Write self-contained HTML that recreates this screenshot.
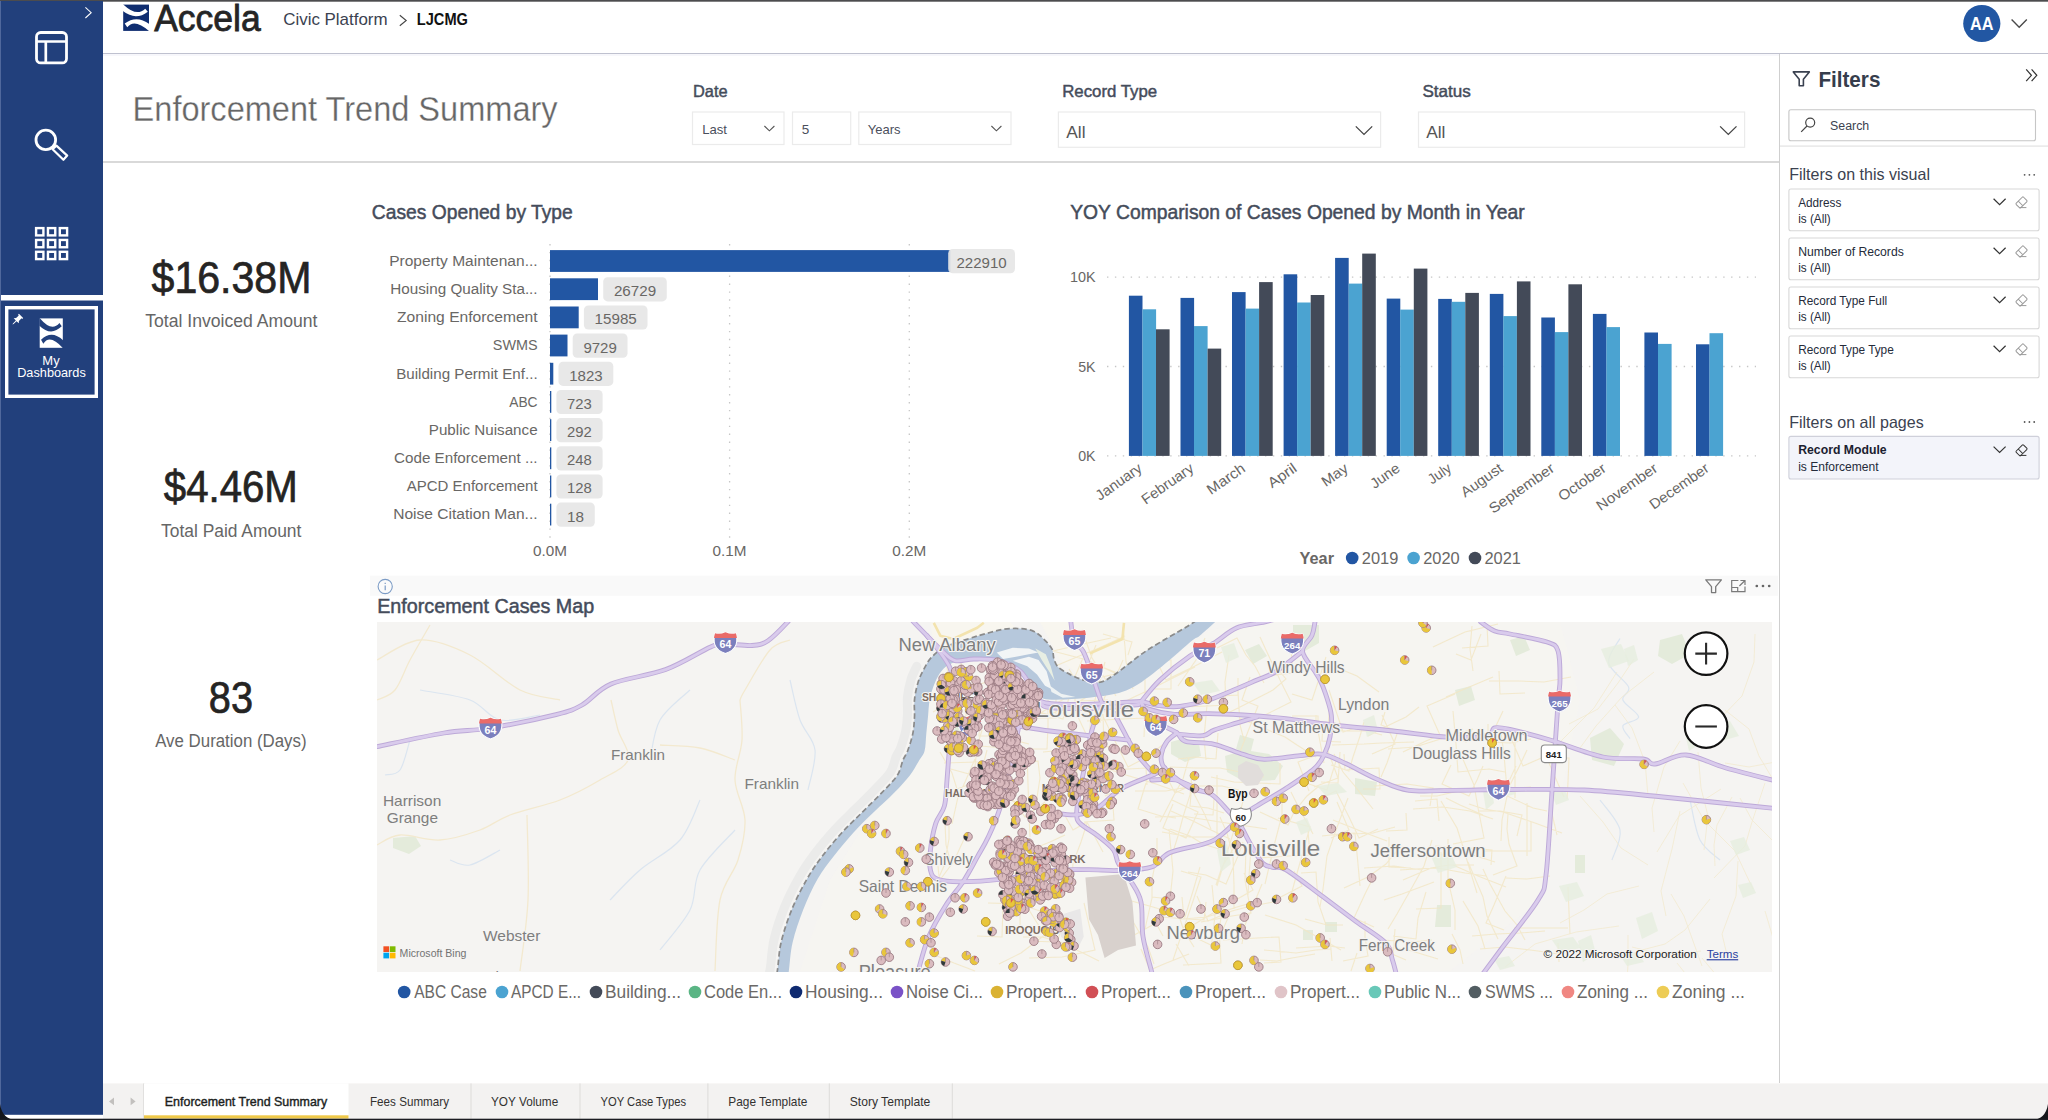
<!DOCTYPE html>
<html lang="en"><head><meta charset="utf-8"><title>Enforcement Trend Summary - Accela Civic Platform</title>
<style>
html,body{margin:0;padding:0;background:#fff;}
body{width:2048px;height:1120px;overflow:hidden;position:relative;font-family:'Liberation Sans', 'DejaVu Sans', sans-serif;}
.layer{position:absolute;left:0;top:0;width:2048px;height:1120px;margin:0;padding:0;pointer-events:none;}
svg{position:absolute;left:0;top:0;display:block;font-family:'Liberation Sans', 'DejaVu Sans', sans-serif;}
text{white-space:pre;}
</style></head>
<body>
<div class="layer page-frame">
<svg width="2048" height="1120" viewBox="0 0 2048 1120">
<g id="frame">
<rect x="0" y="0" width="2048" height="1120" fill="#fff"/>
<rect x="103" y="53" width="1945" height="1" fill="#bfc1cf"/>
<rect x="103" y="54" width="1945" height="2" fill="#f7f7fb"/>
<rect x="103" y="161" width="1676" height="2" fill="#d9d9d9"/>
<rect x="0" y="0" width="2048" height="1.7" fill="#4c4c4e"/>
</g>
</svg>
</div>
<nav class="layer app-sidebar">
<svg width="2048" height="1120" viewBox="0 0 2048 1120">
<g id="sidebar">
<rect x="0" y="1" width="103" height="1113.8" fill="#22407c"/>
<rect x="0" y="295" width="103" height="5.5" fill="#fff"/>
<path d="M85.4 7.4 L91.2 12.7 L85.4 18" fill="none" stroke="#fff" stroke-width="1.05"/>
<rect x="0" y="1" width="1" height="1110" fill="#50689c"/>
<rect x="36.5" y="32.5" width="30" height="30.4" rx="4.2" fill="none" stroke="#fff" stroke-width="2.8"/>
<path d="M36.5 41.5 H66.5 M45.8 41.5 V62.9" fill="none" stroke="#fff" stroke-width="2.7"/>
<circle cx="45.8" cy="139.9" r="9.8" fill="none" stroke="#fff" stroke-width="2.8"/>
<path d="M52.6 149.2 L56.4 145.6 L67.2 155.6 L63.4 159.8 Z" fill="none" stroke="#fff" stroke-width="2.2" stroke-linejoin="round"/>
<rect x="36.10" y="228.10" width="7.3" height="7.3" fill="none" stroke="#fff" stroke-width="2.4"/>
<rect x="47.95" y="228.10" width="7.3" height="7.3" fill="none" stroke="#fff" stroke-width="2.4"/>
<rect x="59.80" y="228.10" width="7.3" height="7.3" fill="none" stroke="#fff" stroke-width="2.4"/>
<rect x="36.10" y="239.95" width="7.3" height="7.3" fill="none" stroke="#fff" stroke-width="2.4"/>
<rect x="47.95" y="239.95" width="7.3" height="7.3" fill="none" stroke="#fff" stroke-width="2.4"/>
<rect x="59.80" y="239.95" width="7.3" height="7.3" fill="none" stroke="#fff" stroke-width="2.4"/>
<rect x="36.10" y="251.80" width="7.3" height="7.3" fill="none" stroke="#fff" stroke-width="2.4"/>
<rect x="47.95" y="251.80" width="7.3" height="7.3" fill="none" stroke="#fff" stroke-width="2.4"/>
<rect x="59.80" y="251.80" width="7.3" height="7.3" fill="none" stroke="#fff" stroke-width="2.4"/>
<rect x="6.7" y="307.7" width="89.6" height="88.6" fill="none" stroke="#fff" stroke-width="3.4"/>
<g transform="translate(17.5 319.5) rotate(45)"><path d="M-3 -5 H3 V-3.8 H2 V0 L3.6 1.8 H0.5 V6 L0 7 L-0.5 6 V1.8 H-3.6 L-2 0 V-3.8 H-3 Z" fill="#fff"/></g>
<g transform="translate(39.7 318.4) scale(0.8885 1.1308)">
<rect x="0" y="0" width="26" height="26" fill="#fff"/>
<path d="M-0.3 -0.3 L0.65 0.3 Q13.6 12.25 22.2 4 L24.8 7 Q12.6 16.3 -0.3 6.4 Z" fill="#22407c"/>
<path d="M1.5 18.8 Q13.5 9.75 26.3 19.3 L26.3 26.3 Q11.15 13.2 4.1 22.4 Z" fill="#22407c"/>
</g>
<text x="51.0" y="364.7" font-size="13" fill="#fff" text-anchor="middle">My</text>
<text x="51.5" y="376.7" font-size="13" fill="#fff" text-anchor="middle" textLength="68.6" lengthAdjust="spacingAndGlyphs">Dashboards</text>
</g>
</svg>
</nav>
<header class="layer app-header">
<svg width="2048" height="1120" viewBox="0 0 2048 1120">
<g id="header">
<g transform="translate(123.2 4.6) scale(0.9923 1.0115)">
<rect x="0" y="0" width="26" height="26" fill="#0f2d70"/>
<path d="M-0.3 -0.3 L0.65 0.3 Q13.6 12.25 22.2 4 L24.8 7 Q12.6 16.3 -0.3 6.4 Z" fill="#fff"/>
<path d="M1.5 18.8 Q13.5 9.75 26.3 19.3 L26.3 26.3 Q11.15 13.2 4.1 22.4 Z" fill="#fff"/>
</g>
<text x="154.2" y="30.6" font-size="36.5" fill="#252525" textLength="106.5" lengthAdjust="spacingAndGlyphs" stroke="#252525" stroke-width="0.8">Accela</text>
<text x="283.2" y="24.8" font-size="17" fill="#3b4250" textLength="104.4" lengthAdjust="spacingAndGlyphs">Civic Platform</text>
<path d="M399.8 15.3 L406.2 20.5 L399.8 25.7" fill="none" stroke="#444" stroke-width="1.1"/>
<text x="416.8" y="24.8" font-size="17" font-weight="700" fill="#111" textLength="51.2" lengthAdjust="spacingAndGlyphs">LJCMG</text>
<circle cx="1981.8" cy="23.5" r="18.6" fill="#2257a3"/>
<text x="1981.8" y="30.0" font-size="17.5" font-weight="700" fill="#fff" text-anchor="middle" textLength="23.5" lengthAdjust="spacingAndGlyphs">AA</text>
<path d="M2011.6 19.6 L2019.2 27.2 L2026.8 19.6" fill="none" stroke="#4a4a4a" stroke-width="1.4"/>
</g>
</svg>
</header>
<section class="layer report-titlebar">
<svg width="2048" height="1120" viewBox="0 0 2048 1120">
<g id="titlebar">
<text x="132.6" y="121.2" font-size="35.5" fill="#666" textLength="425.0" lengthAdjust="spacingAndGlyphs" stroke="#fff" stroke-width="0.3">Enforcement Trend Summary</text>
<text x="693.0" y="96.6" font-size="16.5" fill="#454c5b" textLength="34.6" lengthAdjust="spacingAndGlyphs" stroke="#454c5b" stroke-width="0.45">Date</text>
<text x="1062.2" y="96.6" font-size="16.5" fill="#454c5b" textLength="95.0" lengthAdjust="spacingAndGlyphs" stroke="#454c5b" stroke-width="0.45">Record Type</text>
<text x="1422.4" y="96.6" font-size="16.5" fill="#454c5b" textLength="48.4" lengthAdjust="spacingAndGlyphs" stroke="#454c5b" stroke-width="0.45">Status</text>
<rect x="692.5" y="112" width="91.5" height="32.5" fill="#fff" stroke="#ebebeb" stroke-width="1.2"/>
<rect x="792.5" y="112" width="58.200000000000045" height="32.5" fill="#fff" stroke="#ebebeb" stroke-width="1.2"/>
<rect x="858.8" y="112" width="152.20000000000005" height="32.5" fill="#fff" stroke="#ebebeb" stroke-width="1.2"/>
<text x="702.2" y="134.2" font-size="13.5" fill="#4a4f5c" textLength="24.8" lengthAdjust="spacingAndGlyphs">Last</text>
<text x="801.8" y="134.2" font-size="13.5" fill="#4a4f5c">5</text>
<text x="867.8" y="134.2" font-size="13.5" fill="#4a4f5c" textLength="32.8" lengthAdjust="spacingAndGlyphs">Years</text>
<path d="M764.4 126 L769.4 130.8 L774.4 126" fill="none" stroke="#555" stroke-width="1.1"/>
<path d="M991.4 126 L996.4 130.8 L1001.4 126" fill="none" stroke="#555" stroke-width="1.1"/>
<rect x="1058.4" y="112" width="322.1999999999998" height="35.30000000000001" fill="#fff" stroke="#ebebeb" stroke-width="1.2"/>
<rect x="1418.5" y="112" width="326.0999999999999" height="35.30000000000001" fill="#fff" stroke="#ebebeb" stroke-width="1.2"/>
<text x="1066.3" y="137.6" font-size="17" fill="#555" textLength="19.3" lengthAdjust="spacingAndGlyphs">All</text>
<text x="1426.2" y="137.6" font-size="17" fill="#555" textLength="19.3" lengthAdjust="spacingAndGlyphs">All</text>
<path d="M1355.8 126.4 L1364 134.4 L1372.2 126.4" fill="none" stroke="#444" stroke-width="1.3"/>
<path d="M1720.1 126.4 L1728.3 134.4 L1736.5 126.4" fill="none" stroke="#444" stroke-width="1.3"/>
</g>
</svg>
</section>
<section class="layer kpi-cards">
<svg width="2048" height="1120" viewBox="0 0 2048 1120">
<g id="kpis">
<text x="151.6" y="292.5" font-size="43.5" fill="#252423" textLength="159.8" lengthAdjust="spacingAndGlyphs" stroke="#252423" stroke-width="0.7">$16.38M</text>
<text x="145.2" y="326.6" font-size="17.5" fill="#666" textLength="172.2" lengthAdjust="spacingAndGlyphs">Total Invoiced Amount</text>
<text x="163.8" y="501.9" font-size="43.5" fill="#252423" textLength="134.0" lengthAdjust="spacingAndGlyphs" stroke="#252423" stroke-width="0.7">$4.46M</text>
<text x="161.0" y="536.5" font-size="17.5" fill="#666" textLength="140.4" lengthAdjust="spacingAndGlyphs">Total Paid Amount</text>
<text x="208.8" y="712.7" font-size="43.5" fill="#252423" textLength="44.2" lengthAdjust="spacingAndGlyphs" stroke="#252423" stroke-width="0.7">83</text>
<text x="155.2" y="746.7" font-size="17.5" fill="#666" textLength="151.4" lengthAdjust="spacingAndGlyphs">Ave Duration (Days)</text>
</g>
</svg>
</section>
<section class="layer cases-by-type">
<svg width="2048" height="1120" viewBox="0 0 2048 1120">
<g id="barchart">
<text x="371.8" y="218.6" font-size="20.5" fill="#454c5b" textLength="201.0" lengthAdjust="spacingAndGlyphs" stroke="#454c5b" stroke-width="0.5">Cases Opened by Type</text>
<line x1="550" y1="244" x2="550" y2="538" stroke="#c6c6c6" stroke-width="1.3" stroke-dasharray="1.4 6.5"/>
<line x1="729.6" y1="244" x2="729.6" y2="538" stroke="#c6c6c6" stroke-width="1.3" stroke-dasharray="1.4 6.5"/>
<line x1="909.3" y1="244" x2="909.3" y2="538" stroke="#c6c6c6" stroke-width="1.3" stroke-dasharray="1.4 6.5"/>
<rect x="550.0" y="250.1" width="400.5" height="21.8" fill="#2256a3"/>
<text x="537.6" y="265.8" font-size="15.5" fill="#696765" text-anchor="end" textLength="148.4" lengthAdjust="spacingAndGlyphs">Property Maintenan...</text>
<rect x="948.2" y="249.0" width="66.8" height="24.2" rx="4.5" fill="#e6e6e6" fill-opacity="0.93"/>
<text x="981.6" y="268.0" font-size="15.5" fill="#696765" text-anchor="middle" textLength="50.2" lengthAdjust="spacingAndGlyphs">222910</text>
<rect x="550.0" y="278.3" width="48.0" height="21.8" fill="#2256a3"/>
<text x="537.6" y="294.0" font-size="15.5" fill="#696765" text-anchor="end" textLength="147.3" lengthAdjust="spacingAndGlyphs">Housing Quality Sta...</text>
<rect x="603.2" y="277.2" width="63.6" height="24.2" rx="4.5" fill="#e6e6e6" fill-opacity="0.93"/>
<text x="635.0" y="296.2" font-size="15.5" fill="#696765" text-anchor="middle" textLength="42.2" lengthAdjust="spacingAndGlyphs">26729</text>
<rect x="550.0" y="306.5" width="28.7" height="21.8" fill="#2256a3"/>
<text x="537.6" y="322.2" font-size="15.5" fill="#696765" text-anchor="end" textLength="140.5" lengthAdjust="spacingAndGlyphs">Zoning Enforcement</text>
<rect x="583.9" y="305.4" width="63.6" height="24.2" rx="4.5" fill="#e6e6e6" fill-opacity="0.93"/>
<text x="615.7" y="324.4" font-size="15.5" fill="#696765" text-anchor="middle" textLength="42.2" lengthAdjust="spacingAndGlyphs">15985</text>
<rect x="550.0" y="334.6" width="17.5" height="21.8" fill="#2256a3"/>
<text x="537.6" y="350.3" font-size="15.5" fill="#696765" text-anchor="end" textLength="44.8" lengthAdjust="spacingAndGlyphs">SWMS</text>
<rect x="572.7" y="333.5" width="54.8" height="24.2" rx="4.5" fill="#e6e6e6" fill-opacity="0.93"/>
<text x="600.1" y="352.5" font-size="15.5" fill="#696765" text-anchor="middle" textLength="33.4" lengthAdjust="spacingAndGlyphs">9729</text>
<rect x="550.0" y="362.8" width="3.3" height="21.8" fill="#2256a3"/>
<text x="537.6" y="378.5" font-size="15.5" fill="#696765" text-anchor="end" textLength="141.4" lengthAdjust="spacingAndGlyphs">Building Permit Enf...</text>
<rect x="558.5" y="361.7" width="54.8" height="24.2" rx="4.5" fill="#e6e6e6" fill-opacity="0.93"/>
<text x="585.9" y="380.7" font-size="15.5" fill="#696765" text-anchor="middle" textLength="33.4" lengthAdjust="spacingAndGlyphs">1823</text>
<rect x="550.0" y="391.0" width="1.3" height="21.8" fill="#2256a3"/>
<text x="537.6" y="406.7" font-size="15.5" fill="#696765" text-anchor="end" textLength="28.4" lengthAdjust="spacingAndGlyphs">ABC</text>
<rect x="556.4" y="389.9" width="46.2" height="24.2" rx="4.5" fill="#e6e6e6" fill-opacity="0.93"/>
<text x="579.5" y="408.9" font-size="15.5" fill="#696765" text-anchor="middle" textLength="24.8" lengthAdjust="spacingAndGlyphs">723</text>
<rect x="550.0" y="419.2" width="1.3" height="21.8" fill="#2256a3"/>
<text x="537.6" y="434.9" font-size="15.5" fill="#696765" text-anchor="end" textLength="108.8" lengthAdjust="spacingAndGlyphs">Public Nuisance</text>
<rect x="556.4" y="418.1" width="46.2" height="24.2" rx="4.5" fill="#e6e6e6" fill-opacity="0.93"/>
<text x="579.5" y="437.1" font-size="15.5" fill="#696765" text-anchor="middle" textLength="24.8" lengthAdjust="spacingAndGlyphs">292</text>
<rect x="550.0" y="447.4" width="1.3" height="21.8" fill="#2256a3"/>
<text x="537.6" y="463.1" font-size="15.5" fill="#696765" text-anchor="end" textLength="143.6" lengthAdjust="spacingAndGlyphs">Code Enforcement ...</text>
<rect x="556.4" y="446.3" width="46.2" height="24.2" rx="4.5" fill="#e6e6e6" fill-opacity="0.93"/>
<text x="579.5" y="465.3" font-size="15.5" fill="#696765" text-anchor="middle" textLength="24.8" lengthAdjust="spacingAndGlyphs">248</text>
<rect x="550.0" y="475.5" width="1.3" height="21.8" fill="#2256a3"/>
<text x="537.6" y="491.2" font-size="15.5" fill="#696765" text-anchor="end" textLength="130.8" lengthAdjust="spacingAndGlyphs">APCD Enforcement</text>
<rect x="556.4" y="474.4" width="46.2" height="24.2" rx="4.5" fill="#e6e6e6" fill-opacity="0.93"/>
<text x="579.5" y="493.4" font-size="15.5" fill="#696765" text-anchor="middle" textLength="24.8" lengthAdjust="spacingAndGlyphs">128</text>
<rect x="550.0" y="503.7" width="1.3" height="21.8" fill="#2256a3"/>
<text x="537.6" y="519.4" font-size="15.5" fill="#696765" text-anchor="end" textLength="144.4" lengthAdjust="spacingAndGlyphs">Noise Citation Man...</text>
<rect x="556.4" y="502.6" width="38.4" height="24.2" rx="4.5" fill="#e6e6e6" fill-opacity="0.93"/>
<text x="575.6" y="521.6" font-size="15.5" fill="#696765" text-anchor="middle" textLength="17.0" lengthAdjust="spacingAndGlyphs">18</text>
<text x="550.0" y="555.8" font-size="14.5" fill="#696765" text-anchor="middle" textLength="34.0" lengthAdjust="spacingAndGlyphs">0.0M</text>
<text x="729.6" y="555.8" font-size="14.5" fill="#696765" text-anchor="middle" textLength="34.0" lengthAdjust="spacingAndGlyphs">0.1M</text>
<text x="909.3" y="555.8" font-size="14.5" fill="#696765" text-anchor="middle" textLength="34.0" lengthAdjust="spacingAndGlyphs">0.2M</text>
</g>
</svg>
</section>
<section class="layer yoy-comparison">
<svg width="2048" height="1120" viewBox="0 0 2048 1120">
<g id="colchart">
<text x="1070.2" y="218.6" font-size="20.5" fill="#454c5b" textLength="454.5" lengthAdjust="spacingAndGlyphs" stroke="#454c5b" stroke-width="0.5">YOY Comparison of Cases Opened by Month in Year</text>
<line x1="1107" y1="277.1" x2="1756" y2="277.1" stroke="#c6c6c6" stroke-width="1.3" stroke-dasharray="1.4 6.5"/>
<line x1="1107" y1="366.5" x2="1756" y2="366.5" stroke="#c6c6c6" stroke-width="1.3" stroke-dasharray="1.4 6.5"/>
<line x1="1107" y1="455.9" x2="1756" y2="455.9" stroke="#c6c6c6" stroke-width="1.3" stroke-dasharray="1.4 6.5"/>
<text x="1095.6" y="282.0" font-size="14.5" fill="#696765" text-anchor="end" textLength="25.6" lengthAdjust="spacingAndGlyphs">10K</text>
<text x="1095.6" y="371.6" font-size="14.5" fill="#696765" text-anchor="end" textLength="17.4" lengthAdjust="spacingAndGlyphs">5K</text>
<text x="1095.6" y="461.2" font-size="14.5" fill="#696765" text-anchor="end" textLength="17.4" lengthAdjust="spacingAndGlyphs">0K</text>
<rect x="1128.9" y="295.7" width="13.6" height="160.2" fill="#2256a3"/>
<rect x="1142.5" y="309.3" width="13.6" height="146.6" fill="#4ba3d1"/>
<rect x="1156.0" y="329.3" width="13.6" height="126.6" fill="#434a58"/>
<text transform="translate(1143.2 470.5) rotate(-35)" x="0" y="0" font-size="14.5" fill="#696765" text-anchor="end" textLength="53" lengthAdjust="spacingAndGlyphs">January</text>
<rect x="1180.5" y="297.9" width="13.6" height="158.0" fill="#2256a3"/>
<rect x="1194.0" y="326.1" width="13.6" height="129.8" fill="#4ba3d1"/>
<rect x="1207.6" y="348.6" width="13.6" height="107.3" fill="#434a58"/>
<text transform="translate(1194.8 470.5) rotate(-35)" x="0" y="0" font-size="14.5" fill="#696765" text-anchor="end" textLength="60" lengthAdjust="spacingAndGlyphs">February</text>
<rect x="1232.0" y="292.1" width="13.6" height="163.8" fill="#2256a3"/>
<rect x="1245.6" y="308.6" width="13.6" height="147.3" fill="#4ba3d1"/>
<rect x="1259.1" y="282.1" width="13.6" height="173.8" fill="#434a58"/>
<text transform="translate(1246.3 470.5) rotate(-35)" x="0" y="0" font-size="14.5" fill="#696765" text-anchor="end" textLength="43" lengthAdjust="spacingAndGlyphs">March</text>
<rect x="1283.6" y="274.3" width="13.6" height="181.6" fill="#2256a3"/>
<rect x="1297.1" y="302.5" width="13.6" height="153.4" fill="#4ba3d1"/>
<rect x="1310.7" y="295.0" width="13.6" height="160.9" fill="#434a58"/>
<text transform="translate(1297.9 470.5) rotate(-35)" x="0" y="0" font-size="14.5" fill="#696765" text-anchor="end" textLength="31.5" lengthAdjust="spacingAndGlyphs">April</text>
<rect x="1335.1" y="257.9" width="13.6" height="198.0" fill="#2256a3"/>
<rect x="1348.7" y="283.6" width="13.6" height="172.3" fill="#4ba3d1"/>
<rect x="1362.2" y="253.6" width="13.6" height="202.3" fill="#434a58"/>
<text transform="translate(1349.4 470.5) rotate(-35)" x="0" y="0" font-size="14.5" fill="#696765" text-anchor="end" textLength="29" lengthAdjust="spacingAndGlyphs">May</text>
<rect x="1386.7" y="298.6" width="13.6" height="157.3" fill="#2256a3"/>
<rect x="1400.2" y="309.6" width="13.6" height="146.3" fill="#4ba3d1"/>
<rect x="1413.8" y="268.6" width="13.6" height="187.3" fill="#434a58"/>
<text transform="translate(1401.0 470.5) rotate(-35)" x="0" y="0" font-size="14.5" fill="#696765" text-anchor="end" textLength="32.5" lengthAdjust="spacingAndGlyphs">June</text>
<rect x="1438.2" y="298.9" width="13.6" height="157.0" fill="#2256a3"/>
<rect x="1451.8" y="301.8" width="13.6" height="154.1" fill="#4ba3d1"/>
<rect x="1465.3" y="292.9" width="13.6" height="163.0" fill="#434a58"/>
<text transform="translate(1452.5 470.5) rotate(-35)" x="0" y="0" font-size="14.5" fill="#696765" text-anchor="end" textLength="25" lengthAdjust="spacingAndGlyphs">July</text>
<rect x="1489.8" y="293.9" width="13.6" height="162.0" fill="#2256a3"/>
<rect x="1503.3" y="316.1" width="13.6" height="139.8" fill="#4ba3d1"/>
<rect x="1516.9" y="281.4" width="13.6" height="174.5" fill="#434a58"/>
<text transform="translate(1504.0 470.5) rotate(-35)" x="0" y="0" font-size="14.5" fill="#696765" text-anchor="end" textLength="47.5" lengthAdjust="spacingAndGlyphs">August</text>
<rect x="1541.3" y="317.5" width="13.6" height="138.4" fill="#2256a3"/>
<rect x="1554.9" y="332.1" width="13.6" height="123.8" fill="#4ba3d1"/>
<rect x="1568.4" y="284.3" width="13.6" height="171.6" fill="#434a58"/>
<text transform="translate(1555.6 470.5) rotate(-35)" x="0" y="0" font-size="14.5" fill="#696765" text-anchor="end" textLength="76" lengthAdjust="spacingAndGlyphs">September</text>
<rect x="1592.9" y="313.9" width="13.6" height="142.0" fill="#2256a3"/>
<rect x="1606.4" y="327.1" width="13.6" height="128.8" fill="#4ba3d1"/>
<text transform="translate(1607.2 470.5) rotate(-35)" x="0" y="0" font-size="14.5" fill="#696765" text-anchor="end" textLength="54.5" lengthAdjust="spacingAndGlyphs">October</text>
<rect x="1644.4" y="332.5" width="13.6" height="123.4" fill="#2256a3"/>
<rect x="1658.0" y="343.9" width="13.6" height="112.0" fill="#4ba3d1"/>
<text transform="translate(1658.7 470.5) rotate(-35)" x="0" y="0" font-size="14.5" fill="#696765" text-anchor="end" textLength="71" lengthAdjust="spacingAndGlyphs">November</text>
<rect x="1696.0" y="344.3" width="13.6" height="111.6" fill="#2256a3"/>
<rect x="1709.5" y="333.2" width="13.6" height="122.7" fill="#4ba3d1"/>
<text transform="translate(1710.2 470.5) rotate(-35)" x="0" y="0" font-size="14.5" fill="#696765" text-anchor="end" textLength="69" lengthAdjust="spacingAndGlyphs">December</text>
<text x="1299.6" y="564.2" font-size="16.5" font-weight="700" fill="#696765" textLength="34.4" lengthAdjust="spacingAndGlyphs">Year</text>
<circle cx="1352.2" cy="558" r="6.3" fill="#2256a3"/>
<text x="1361.8" y="564.2" font-size="17" fill="#696765" textLength="36.5" lengthAdjust="spacingAndGlyphs">2019</text>
<circle cx="1413.6" cy="558" r="6.3" fill="#4ba3d1"/>
<text x="1423.2" y="564.2" font-size="17" fill="#696765" textLength="36.5" lengthAdjust="spacingAndGlyphs">2020</text>
<circle cx="1475" cy="558" r="6.3" fill="#434a58"/>
<text x="1484.4" y="564.2" font-size="17" fill="#696765" textLength="36.5" lengthAdjust="spacingAndGlyphs">2021</text>
</g>
</svg>
</section>
<section class="layer cases-map">
<svg width="2048" height="1120" viewBox="0 0 2048 1120">
<g id="mapvisual">
<rect x="370" y="575.6" width="1408" height="20.2" fill="#f9f9f9"/>
<circle cx="385.2" cy="586.5" r="7.1" fill="#fbfbfb" stroke="#7c9cc6" stroke-width="1.1"/>
<path d="M385.2 585.4 V590.2 M385.2 582.8 V584.1" stroke="#7c9cc6" stroke-width="1.2" fill="none"/>
<path d="M1705.8 579.8 H1721.4 L1715.7 586.6 V592.6 H1711.5 V586.6 Z" fill="none" stroke="#7a7a7a" stroke-width="1.3" stroke-linejoin="round"/>
<path d="M1738.4 580.5 H1731.7 V591.6 H1745 V586.4 M1731.7 587.5 H1737.7 V591.6 M1740.4 580.5 H1745 V585 M1745 580.5 L1739.4 586" fill="none" stroke="#7a7a7a" stroke-width="1.2"/>
<circle cx="1756.8" cy="586" r="1.35" fill="#666"/>
<circle cx="1763" cy="586" r="1.35" fill="#666"/>
<circle cx="1769.2" cy="586" r="1.35" fill="#666"/>
<text x="377.2" y="612.9" font-size="20.5" fill="#454c5b" textLength="217.0" lengthAdjust="spacingAndGlyphs" stroke="#454c5b" stroke-width="0.5">Enforcement Cases Map</text>
<clipPath id="mapclip"><rect x="377" y="622" width="1395" height="350"/></clipPath>
<g clip-path="url(#mapclip)">
<rect x="377" y="622" width="1395" height="350" fill="#f5f4f2"/>
<path d="M905 760 L925 690 L945 655 L1010 650 L1060 700 L1130 690 L1210 630 L1260 622 L1560 622 L1580 700 L1560 800 L1540 900 L1450 971 L800 971 L830 880 Z" fill="#f8f6f0" opacity="0.35"/>
<path d="M930 622 L1010 622 L1020 632 L960 645 L935 650 Z" fill="#f8f6ef"/>
<path d="M1040 622 L1195 622 L1150 650 L1110 675 L1085 680 L1060 660 Z" fill="#f8f6ef"/>
<path d="M1293 625 h26 v18 l-14 8 l-12 -10z" fill="#e4ebdb"/>
<path d="M1660 640 l22 -6 l8 20 l-18 10 l-14 -8z" fill="#e4ebdb"/>
<path d="M1590 738 l20 -10 l14 16 l-10 22 l-22 -6z" fill="#e4ebdb"/>
<path d="M1437 905 h14 v22 h-16z" fill="#e4ebdb"/>
<path d="M1455 690 l16 -4 l4 14 l-16 6z" fill="#e4ebdb"/>
<path d="M1240 735 l14 4 l-4 16 l-14 -6z" fill="#e4ebdb"/>
<path d="M1355 778 l22 4 l-2 14 l-20 -2z" fill="#e4ebdb"/>
<path d="M1325 922 h12 v10 h-12z" fill="#e4ebdb"/>
<path d="M1303 930 h10 v10 h-10z" fill="#e4ebdb"/>
<path d="M393 838 l22 -2 l6 10 l-12 8 l-16 -6z" fill="#e4ebdb"/>
<path d="M1245 650 l14 -6 l8 12 l-14 8z" fill="#e4ebdb"/>
<path d="M1010 898 l18 -4 l4 12 l-18 6z" fill="#e4ebdb"/>
<path d="M955 720 l10 2 l-2 26 l-10 -2z" fill="#e4ebdb"/>
<path d="M1575 855 l10 0 l0 18 l-10 0z" fill="#e4ebdb"/>
<path d="M1510 640 l14 -4 l6 14 l-14 6z" fill="#e4ebdb"/>
<path d="M1171 742 l14 -4 l14 6 l2 12 l-16 6 l-14 -8z" fill="#e4ebdb"/>
<path d="M1225 756 l20 -6 l24 4 l14 12 l-8 14 l-30 2 l-18 -10z" fill="#e4ebdb"/>
<path d="M377.0 660.0 C384.2 656.7 404.5 640.8 420.0 640.0 C435.5 639.2 453.3 646.7 470.0 655.0 C486.7 663.3 505.0 682.5 520.0 690.0 C535.0 697.5 553.3 698.3 560.0 700.0" fill="none" stroke="#f3e9cf" stroke-width="1.3"/>
<path d="M611.0 700.0 C612.2 705.0 615.2 720.0 618.0 730.0 C620.8 740.0 631.0 751.7 628.0 760.0 C625.0 768.3 611.3 773.3 600.0 780.0 C588.7 786.7 575.0 794.2 560.0 800.0 C545.0 805.8 523.3 810.0 510.0 815.0 C496.7 820.0 491.7 825.8 480.0 830.0 C468.3 834.2 453.3 839.2 440.0 840.0 C426.7 840.8 410.5 834.2 400.0 835.0 C389.5 835.8 380.8 843.3 377.0 845.0" fill="none" stroke="#f3e9cf" stroke-width="1.3"/>
<path d="M740.0 700.0 C740.3 706.7 742.8 726.7 742.0 740.0 C741.2 753.3 734.5 766.7 735.0 780.0 C735.5 793.3 744.5 806.7 745.0 820.0 C745.5 833.3 742.2 846.7 738.0 860.0 C733.8 873.3 723.8 881.5 720.0 900.0 C716.2 918.5 715.8 959.2 715.0 971.0" fill="none" stroke="#f3e9cf" stroke-width="1.3"/>
<path d="M527.0 815.0 C527.2 829.2 529.2 874.0 528.0 900.0 C526.8 926.0 521.3 959.2 520.0 971.0" fill="none" stroke="#f3e9cf" stroke-width="1.3"/>
<path d="M660.0 745.0 C666.7 745.5 687.5 745.5 700.0 748.0 C712.5 750.5 729.2 758.0 735.0 760.0" fill="none" stroke="#f3e9cf" stroke-width="1.3"/>
<path d="M790.0 640.0 C786.7 641.7 777.5 641.7 770.0 650.0 C762.5 658.3 750.0 681.7 745.0 690.0 C740.0 698.3 740.8 698.3 740.0 700.0" fill="none" stroke="#f3e9cf" stroke-width="1.3"/>
<path d="M377.0 700.0 C380.0 698.3 389.5 696.7 395.0 690.0 C400.5 683.3 404.2 670.8 410.0 660.0 C415.8 649.2 426.7 630.8 430.0 625.0" fill="none" stroke="#f3e9cf" stroke-width="1.3"/>
<path d="M420.0 690.0 C428.3 691.7 456.7 695.0 470.0 700.0 C483.3 705.0 488.3 717.5 500.0 720.0 C511.7 722.5 533.3 715.8 540.0 715.0" fill="none" stroke="#dbe5f0" stroke-width="1.2"/>
<path d="M690.0 690.0 C685.0 695.0 666.7 708.3 660.0 720.0 C653.3 731.7 651.7 753.3 650.0 760.0" fill="none" stroke="#dbe5f0" stroke-width="1.2"/>
<path d="M790.0 680.0 C791.7 686.7 795.8 708.3 800.0 720.0 C804.2 731.7 813.7 738.3 815.0 750.0 C816.3 761.7 809.2 783.3 808.0 790.0" fill="none" stroke="#dbe5f0" stroke-width="1.2"/>
<path d="M700.0 800.0 C696.7 806.7 690.0 828.3 680.0 840.0 C670.0 851.7 651.7 860.0 640.0 870.0 C628.3 880.0 615.0 895.0 610.0 900.0" fill="none" stroke="#dbe5f0" stroke-width="1.2"/>
<path d="M735.0 830.0 C729.2 836.7 707.5 856.7 700.0 870.0 C692.5 883.3 696.7 896.7 690.0 910.0 C683.3 923.3 665.0 943.3 660.0 950.0" fill="none" stroke="#dbe5f0" stroke-width="1.2"/>
<path d="M450.0 860.0 C453.3 860.8 461.7 866.7 470.0 865.0 C478.3 863.3 495.0 852.5 500.0 850.0" fill="none" stroke="#dbe5f0" stroke-width="1.2"/>
<path d="M385.0 775.0 C387.5 774.2 395.8 775.8 400.0 770.0 C404.2 764.2 408.3 745.0 410.0 740.0" fill="none" stroke="#dbe5f0" stroke-width="1.2"/>
<path d="M1620.0 638.6 C1618.1 642.6 1607.2 654.8 1608.6 662.9 C1610.0 671.0 1626.2 680.8 1628.6 687.0 C1631.0 693.2 1621.2 695.0 1622.9 700.0 C1624.6 705.0 1638.6 712.7 1638.6 717.0 C1638.6 721.3 1624.3 722.1 1622.9 725.7 C1621.5 729.3 1628.8 736.5 1630.0 738.6" fill="none" stroke="#dbe5f0" stroke-width="1.2"/>
<path d="M1600.0 800.0 C1603.3 805.0 1618.0 820.0 1620.0 830.0 C1622.0 840.0 1613.3 855.0 1612.0 860.0" fill="none" stroke="#dbe5f0" stroke-width="1.2"/>
<path d="M1690.0 800.0 C1691.7 806.7 1695.0 830.0 1700.0 840.0 C1705.0 850.0 1716.7 856.7 1720.0 860.0" fill="none" stroke="#dbe5f0" stroke-width="1.2"/>
<path d="M1220 817 L1227 833 L1233 856 L1234 886 L1234 909 M988 903 L1021 904 L1050 898 L1065 891 M1462 648 L1488 646 L1487 625 M1469 804 L1484 809 L1503 812 L1535 823 L1562 833 M1415 801 L1437 799 L1439 821 M1472 626 L1470 649 L1473 671 M1292 694 L1312 700 L1321 673 L1326 657 M995 646 L1003 662 L1008 679 L1023 705 L1046 692 M1183 965 L1203 964 L1221 963 L1219 929 L1224 902 M957 676 L967 694 L947 704 L933 712 M940 752 L952 773 L957 789 L973 783 L993 777 M1453 711 L1456 744 L1458 772 L1489 769 L1505 772 M996 639 L1017 646 M1312 726 L1328 728 L1330 703 M1323 722 L1322 741 L1341 742 M1043 752 L1075 749 L1077 776 M1264 950 L1296 953 L1316 950 L1331 949 M978 649 L993 654 L1011 664 M1506 878 L1527 879 L1550 876 M1197 896 L1208 921 L1232 911 L1247 907 L1273 902 M1493 875 L1517 866 L1509 844 L1507 829 L1508 814 M986 634 L986 661 L1005 661 L1027 661 L1054 661 M1262 884 L1253 906 L1245 925 L1242 944 M1206 902 L1204 920 L1186 919 L1162 917 M1385 951 L1406 960 M1462 757 L1474 785 L1478 808 L1484 838 L1453 844 M1364 722 L1360 736 L1353 757 L1349 771 L1331 765 M1340 752 L1338 783 L1321 782 M1413 809 L1443 807 L1470 811 L1493 819 M1182 897 L1184 919 L1207 917 L1237 907 L1258 901 M1348 798 L1336 830 L1327 856 L1323 889 L1320 907 M1153 654 L1166 680 L1195 666 L1222 652 M1205 638 L1196 660 L1178 686 M1468 862 L1474 876 L1483 897 L1487 916 L1498 939 M1265 915 L1296 925 L1312 934 L1341 950 M1105 796 L1118 790 L1111 777 L1101 755 L1079 765 M1008 658 L1031 656 L1029 636 L1006 639 M1452 934 L1460 950 L1463 964 M1013 893 L1031 891 L1050 885 M1157 838 L1157 854 L1152 880 L1152 898 L1145 929 M1170 767 L1195 768 L1220 768 L1245 773 L1264 777 M1332 745 L1364 744 L1382 743 L1414 742 M1499 671 L1500 694 L1525 693 M1011 764 L1038 761 L1040 778 L1036 804 L1012 801 M1463 901 L1478 926 L1485 949 M1238 691 L1240 725 L1244 740 M1016 859 L1015 881 L1039 882 L1040 864 M938 866 L940 887 M1055 682 L1085 681 L1115 674 M1531 821 L1531 851 L1512 851 L1483 851 M1451 765 L1442 784 L1469 796 L1477 780 L1483 766 M1123 660 L1117 674 L1087 660 L1068 655 L1041 648 M1046 652 L1053 667 L1084 654 L1099 648 L1125 636 M1214 799 L1213 815 L1194 814 M1282 800 L1282 815 L1275 842 L1270 863 L1265 884 M1478 811 L1500 811 L1522 815 L1517 836 M1239 718 L1258 726 L1285 737 L1297 745 L1316 757 M1180 933 L1208 916 L1234 901 L1253 890 L1244 873 M959 660 L972 682 L979 696 M1222 696 L1238 695 L1238 678 M1222 716 L1244 705 L1273 690 L1286 679 L1276 667 M1432 840 L1424 866 L1410 891 L1397 914 L1388 929 M1251 849 L1249 876 L1248 895 M947 639 L947 668 L950 685 M1334 754 L1343 772 L1354 785 L1373 809 M1448 839 L1448 858 L1448 880 L1455 910 L1455 930 M1416 909 L1441 908 L1441 877 L1441 852 M1291 792 L1298 806 L1313 834 M982 730 L977 747 L974 776 M1510 736 L1523 766 L1546 756 L1555 777 L1564 797 M1503 711 L1494 730 L1517 741 M1403 752 L1426 741 L1440 735 L1427 706 L1455 694 M1260 812 L1288 825 L1294 812 L1307 796 L1319 786 M1105 662 L1098 688 L1091 716 L1089 739 L1092 757 M1146 783 L1138 809 L1161 816 L1176 818 M1516 766 L1503 794 L1533 808 L1547 811 M1384 900 L1402 894 L1434 882 M1368 736 L1385 727 L1406 717 L1419 707 M1030 941 L1055 942 L1075 943 M1048 700 L1048 726 L1047 749 L1025 749 M1515 743 L1515 765 L1515 798 M1082 630 L1092 658 L1104 677 L1116 696 M1023 937 L1042 937 L1057 941 L1083 953 L1099 961 M1456 654 L1471 660 L1481 634 M1305 919 L1327 925 L1343 925 M1063 812 L1073 830 L1087 822 L1103 852 M1388 749 L1415 747 L1447 737 L1473 729 M1483 869 L1490 884 L1505 911 L1517 925 L1525 940 M1171 811 L1193 821 L1211 830 L1230 839 M1141 949 L1150 970 L1164 964 L1189 954 M1364 868 L1394 866 L1422 870 M1075 680 L1075 701 L1108 700 M1344 888 L1368 877 L1386 864 L1399 848 M1353 834 L1373 833 L1395 827 M1172 800 L1198 812 L1186 838 L1163 828 L1173 804 M1021 870 L1020 897 L1020 926 M1087 823 L1081 842 L1073 863 L1072 880 M1278 818 L1310 827 L1303 852 L1294 884 L1289 903 M1084 822 L1114 820 L1113 806 L1111 776 L1107 760 M1472 936 L1496 934 L1520 933 L1545 931 M1145 671 L1145 686 L1145 714 L1144 737 M1314 787 L1338 778 L1328 751 L1298 762 L1309 791 M1192 774 L1190 795 L1183 817 L1178 836 L1172 855 M1506 876 L1494 905 L1486 923 L1504 930 M1552 789 L1552 814 L1557 835 M1035 848 L1050 842 L1065 835 M1299 781 L1312 785 L1327 790 L1336 761 M1020 863 L1023 886 L1003 888 M1022 892 L1029 910 L1046 937 M1132 920 L1148 947 L1154 964 M1105 770 L1128 769 L1146 768 L1147 785 M1056 688 L1056 718 L1026 718 L995 711 M1260 960 L1277 961 L1292 958 L1315 954 M977 936 L1002 937 L1003 907 L1003 890 M1087 721 L1121 719 L1147 718 M1176 944 L1189 966 M1135 791 L1166 791 L1193 786 L1222 786 L1239 790 M1002 775 L1014 802 L1025 817 L1045 802 M1316 715 L1316 730 L1347 731 L1368 731 L1382 735 M1446 798 L1460 805 L1483 815 M1301 873 L1316 872 L1318 902 L1326 925 M1420 796 L1437 796 L1463 790 M1433 647 L1450 639 L1465 632 L1498 624 M1264 963 L1281 962 L1279 937 L1257 938 L1223 940 M1568 887 L1569 912 L1570 934 M1527 750 L1519 767 L1509 787 L1502 820 L1501 841 M1514 928 L1546 928 L1568 928 M1152 689 L1171 689 L1171 660 L1148 660 M1365 921 L1365 937 L1368 956 L1343 961 M1047 716 L1072 704 L1079 719 L1086 734 L1071 741 M1393 936 L1416 939 L1418 918 L1426 892 M1182 707 L1208 706 L1226 705 L1225 682 L1229 655 M1382 715 L1395 744 L1372 754 M1189 758 L1183 779 L1174 795 L1160 822 M1333 820 L1363 832 L1387 841 M1357 953 L1351 971 M1245 794 L1240 812 L1230 843 L1223 866 L1217 886 M1083 658 L1074 679 L1048 667 M1127 939 L1156 923 L1163 936 M1472 729 L1466 742 L1447 733 M1292 716 L1318 716 L1318 731 L1324 763 M1331 838 L1349 830 L1337 802 M1548 758 L1569 758 L1568 782 L1567 799 M1103 714 L1104 747 L1119 746 M1246 848 L1245 880 L1251 913 L1232 916 L1201 922 M1446 697 L1474 685 L1493 677 M1244 819 L1235 846 L1222 867 L1216 885 M1382 940 L1412 942 L1432 940 M1258 858 L1289 856 L1310 855 L1308 831 M1181 871 L1201 877 L1191 907 L1181 936 L1173 960 M1340 669 L1357 676 L1379 692 M1104 712 L1134 697 L1149 690 L1177 676 L1195 667 M1275 900 L1302 886 L1294 871 M1128 900 L1153 907 L1185 917 L1193 891 L1200 867 M1213 911 L1228 918 L1215 947 L1192 936 M1105 763 L1100 780 L1091 797 L1083 812 M1501 732 L1504 755 L1507 789 L1531 787 M1155 817 L1182 816 L1201 819 L1233 824 L1267 829 M1296 948 L1328 946 L1345 948 M1103 634 L1117 638 L1132 642 L1128 655 M1100 710 L1113 737 L1128 767 L1147 757 L1165 743 M945 823 L946 845 L951 864 M1218 733 L1216 759 L1195 757 L1178 759 M1406 813 L1407 830 L1386 831 M944 763 L977 762 L991 762 L1012 761 M999 964 L1021 953 L1046 934 M975 759 L965 782 L958 797 L952 824 M965 837 L954 861 L934 888 M1403 880 L1431 868 L1449 865 L1474 865 M1260 637 L1266 650 L1280 680 L1291 702 L1261 717 M1329 690 L1334 705 L1343 732 L1358 727 M1468 848 L1492 850 L1491 865 M1385 712 L1381 725 L1398 731 L1387 763 L1381 777 M1212 885 L1215 916 L1211 949 M1027 751 L1028 784 L1029 815 L1030 837 M1179 916 L1184 931 L1194 947 M1453 865 L1478 876 L1506 887 M1374 786 L1407 784 L1433 788 L1430 806 M1373 878 L1365 894 L1354 918 L1374 927 M1192 782 L1190 806 L1208 808 L1224 813 M1488 724 L1488 742 L1510 743 L1531 739 M1217 648 L1237 638 L1246 655 L1255 666 L1264 683 M1170 829 L1190 836 L1203 844 L1219 849 M987 750 L980 777 L947 768 M1030 651 L1053 651 L1079 645 L1111 638 M1207 705 L1204 738 L1206 760 M1527 803 L1527 827 L1527 856 M932 954 L954 963 L975 971 M1480 949 L1505 947 L1538 951 L1558 954 M1291 649 L1293 673 L1273 675 M1088 768 L1111 770 L1126 775 L1156 784 L1184 794 M1029 958 L1062 957 L1095 950 L1088 920 L1084 903 M1400 870 L1415 869 L1438 868 L1465 873 L1486 876 M980 715 L979 736 L998 736 L1029 744 M1558 943 L1559 962 M1165 773 L1175 793 L1190 786 L1204 813 L1211 829 M1280 763 L1280 784 L1258 783 L1234 782 L1211 777 M1169 829 L1171 850 L1173 871 L1170 899 L1152 897 M966 689 L966 704 L966 722 L962 741 M1344 754 L1345 770 L1379 768 L1380 789 L1363 789 M1435 846 L1449 847 L1464 852 L1495 862 M1389 837 L1389 867 L1411 868 M1330 938 L1332 961 M1217 775 L1217 804 L1217 837 L1190 837 L1162 832 M1006 732 L1004 748 L980 746 M1029 720 L1057 703 L1081 689 L1069 669 M1441 801 L1457 828 L1463 847 L1469 867 L1477 893 M1308 804 L1336 791 L1349 817 L1359 838 L1378 829 M1243 842 L1238 856 L1226 884 L1206 875 L1188 872 M972 687 L992 680 L1010 674 L1026 671 M1250 677 L1242 700 L1258 706 L1247 734 L1240 752 M1070 694 L1063 719 L1036 711 M1000 895 L1031 908 L1049 914 L1065 921 L1055 946 M1092 671 L1102 688 L1073 705 M1489 681 L1519 681 L1544 682 L1571 677 M1096 645 L1089 662 L1115 672 L1104 699 L1100 723 M1395 929 L1393 954 M1123 627 L1125 647 L1126 662 L1133 689 M949 821 L949 839 L944 866 L934 888 M995 674 L996 688 L994 704 L976 702 M1379 947 L1405 949 L1438 959 M1322 836 L1339 834 L1355 833 L1358 864 L1360 886" fill="none" stroke="#f2e6c6" stroke-width="1.1" opacity="0.85"/>
<path d="M1738 861 L1736 896 L1722 934 L1727 955 M1765 911 L1773 938 L1782 957 L1787 983 M1680 741 L1664 767 L1652 808 L1654 832 M1671 894 L1684 916 L1693 941 L1702 966 M1615 705 L1632 728 L1645 762 L1648 796 M1725 710 L1749 729 L1759 756 L1781 793 M1654 672 L1622 697 L1596 726 L1580 748 M1721 789 L1704 800 L1679 816 L1657 852 M1619 926 L1576 932 L1535 944 L1505 967 M1617 672 L1594 708 L1563 739 L1543 760 M1632 947 L1656 953 L1677 954 L1701 951 M1680 811 L1672 849 L1661 891 L1666 916 M1639 886 L1607 894 L1584 910 L1560 923 M1765 783 L1752 822 L1745 846 L1714 878 M1725 763 L1749 767 L1786 760 L1805 751 M1732 797 L1717 825 L1714 845 L1715 866 M1698 752 L1701 788 L1708 816 L1704 850 M1683 783 L1704 820 L1735 851 L1753 889 M1677 963 L1692 982 L1702 1005 L1710 1028 M1634 659 L1618 683 L1598 709 L1569 724 M1580 796 L1603 822 L1621 848 L1648 865 M1702 958 L1722 982 L1758 999 L1798 1006 M1628 935 L1628 965 L1625 1009 L1623 1041 M1740 798 L1752 820 L1781 849 L1801 888 M1710 899 L1685 930 L1665 944 L1638 951 M1755 634 L1754 662 L1742 696 L1712 727" fill="none" stroke="#f3ead0" stroke-width="1" opacity="0.8"/>
<path d="M1217 850 l10 -6 l4 20 l-10 8z" fill="#e6edde" opacity="0.8"/>
<path d="M1685 733 l11 -5 l4 16 l-11 7z" fill="#e6edde" opacity="0.8"/>
<path d="M1620 955 l17 -3 l7 10 l-17 4z" fill="#e6edde" opacity="0.8"/>
<path d="M1601 649 l20 -5 l8 17 l-20 7z" fill="#e6edde" opacity="0.8"/>
<path d="M1636 918 l16 -6 l6 19 l-16 8z" fill="#e6edde" opacity="0.8"/>
<path d="M1551 792 l13 -4 l5 12 l-13 5z" fill="#e6edde" opacity="0.8"/>
<path d="M1193 683 l19 -3 l8 11 l-19 4z" fill="#e6edde" opacity="0.8"/>
<path d="M1559 886 l18 -4 l7 14 l-18 6z" fill="#e6edde" opacity="0.8"/>
<path d="M1363 720 l11 -5 l4 16 l-11 6z" fill="#e6edde" opacity="0.8"/>
<path d="M1578 941 l13 -6 l5 19 l-13 8z" fill="#e6edde" opacity="0.8"/>
<path d="M1709 726 l21 -5 l9 15 l-21 6z" fill="#e6edde" opacity="0.8"/>
<path d="M1738 885 l13 -3 l5 11 l-13 5z" fill="#e6edde" opacity="0.8"/>
<path d="M1483 791 l8 -6 l3 18 l-8 7z" fill="#e6edde" opacity="0.8"/>
<path d="M1491 786 l18 -3 l7 11 l-18 4z" fill="#e6edde" opacity="0.8"/>
<path d="M1296 822 l11 -4 l5 12 l-11 5z" fill="#e6edde" opacity="0.8"/>
<path d="M1221 647 l13 -4 l5 14 l-13 6z" fill="#e6edde" opacity="0.8"/>
<path d="M1730 841 l14 -4 l6 13 l-14 5z" fill="#e6edde" opacity="0.8"/>
<path d="M1317 786 l21 -3 l9 9 l-21 4z" fill="#e6edde" opacity="0.8"/>
<path d="M1431 856 l19 -4 l7 15 l-19 6z" fill="#e6edde" opacity="0.8"/>
<path d="M1552 940 l21 -3 l8 11 l-21 4z" fill="#e6edde" opacity="0.8"/>
<path d="M1494 959 l15 -3 l6 10 l-15 4z" fill="#e6edde" opacity="0.8"/>
<path d="M1624 649 l10 -4 l4 15 l-10 6z" fill="#e6edde" opacity="0.8"/>
<path d="M1085.4 877.5 L1123.7 874 L1132.4 901.9 L1136 945.4 L1118 950 L1104.6 958 L1098 935 L1089 919.3Z" fill="#d8d1cd"/>
<path d="M1057.6 915.8 L1080.2 908.8 L1083.7 936.7 L1076.7 950.6 L1061 936.7Z" fill="#e9e8e8"/>
<path d="M1238 766 l8 -5 l12 4 l6 10 l-6 10 l-12 1 l-8 -8z" fill="#e1dddb"/>
<path d="M766.0 987.0 C766.7 983.9 768.9 976.1 770.3 968.2 C771.6 960.3 771.7 949.6 774.1 939.4 C776.5 929.2 780.4 917.4 784.7 906.8 C789.0 896.2 794.9 885.0 800.0 876.0 C805.1 867.0 809.6 860.7 815.4 853.0 C821.2 845.3 827.9 837.4 834.6 830.0 C841.3 822.6 849.0 815.5 855.7 808.8 C862.4 802.1 869.1 795.7 874.9 789.6 C880.7 783.5 886.8 777.8 890.3 772.4 C893.8 767.0 894.3 761.1 896.0 757.0 C897.7 752.9 899.1 752.1 900.7 747.7 C902.3 743.3 904.7 736.4 905.8 730.7 C906.9 725.1 907.2 719.4 907.5 713.8 C907.8 708.1 906.9 702.4 907.5 696.8 C908.1 691.1 909.4 685.0 910.9 679.9 C912.4 674.8 915.8 668.6 916.8 666.3" fill="none" stroke="#ebebea" stroke-width="9" stroke-linecap="round"/>
<path d="M773.0 990.0 C773.7 986.9 775.9 979.1 777.3 971.2 C778.6 963.3 778.7 952.6 781.1 942.4 C783.5 932.2 787.4 920.4 791.7 909.8 C796.0 899.2 801.9 888.0 807.0 879.0 C812.1 870.0 816.6 863.7 822.4 856.0 C828.2 848.3 834.9 840.4 841.6 833.0 C848.3 825.6 856.0 818.5 862.7 811.8 C869.4 805.1 876.1 798.7 881.9 792.6 C887.7 786.5 893.8 780.8 897.3 775.4 C900.8 770.0 901.3 764.1 903.0 760.0 C904.7 755.9 906.1 755.1 907.7 750.7 C909.3 746.3 911.7 739.4 912.8 733.7 C913.9 728.1 914.2 722.4 914.5 716.8 C914.8 711.1 913.9 705.4 914.5 699.8 C915.1 694.1 916.4 688.0 917.9 682.9 C919.4 677.8 921.5 673.5 923.8 669.3 C926.0 665.0 927.9 661.1 931.4 657.4 C934.9 653.7 938.8 650.3 945.0 647.2 C951.2 644.1 961.9 641.0 968.7 638.7 C975.5 636.5 980.0 635.2 985.7 633.7 C991.4 632.2 997.1 630.2 1002.7 629.4 C1008.4 628.5 1014.5 628.3 1019.6 628.6 C1024.7 628.9 1029.2 629.4 1033.2 631.1 C1037.2 632.8 1040.3 635.7 1043.4 638.7 C1046.5 641.7 1050.1 645.5 1051.9 648.9 C1053.7 652.3 1053.0 656.1 1054.0 659.1 C1055.0 662.1 1055.8 664.7 1058.0 667.0 C1060.2 669.3 1063.6 671.0 1067.5 673.1 C1071.4 675.2 1076.4 677.8 1081.6 679.4 C1086.8 681.0 1093.3 683.3 1098.8 682.5 C1104.3 681.7 1106.6 679.9 1114.4 674.7 C1122.2 669.5 1135.2 658.3 1145.6 651.3 C1156.0 644.3 1169.1 637.2 1176.9 632.5 C1184.7 627.8 1187.5 626.5 1192.5 623.1 C1197.5 619.7 1204.6 613.9 1207.0 612.0 L1226 612 " fill="none"/>
<path d="M773.0 990.0 C773.7 986.9 775.9 979.1 777.3 971.2 C778.6 963.3 778.7 952.6 781.1 942.4 C783.5 932.2 787.4 920.4 791.7 909.8 C796.0 899.2 801.9 888.0 807.0 879.0 C812.1 870.0 816.6 863.7 822.4 856.0 C828.2 848.3 834.9 840.4 841.6 833.0 C848.3 825.6 856.0 818.5 862.7 811.8 C869.4 805.1 876.1 798.7 881.9 792.6 C887.7 786.5 893.8 780.8 897.3 775.4 C900.8 770.0 901.3 764.1 903.0 760.0 C904.7 755.9 906.1 755.1 907.7 750.7 C909.3 746.3 911.7 739.4 912.8 733.7 C913.9 728.1 914.2 722.4 914.5 716.8 C914.8 711.1 913.9 705.4 914.5 699.8 C915.1 694.1 916.4 688.0 917.9 682.9 C919.4 677.8 921.5 673.5 923.8 669.3 C926.0 665.0 927.9 661.1 931.4 657.4 C934.9 653.7 938.8 650.3 945.0 647.2 C951.2 644.1 961.9 641.0 968.7 638.7 C975.5 636.5 980.0 635.2 985.7 633.7 C991.4 632.2 997.1 630.2 1002.7 629.4 C1008.4 628.5 1014.5 628.3 1019.6 628.6 C1024.7 628.9 1029.2 629.4 1033.2 631.1 C1037.2 632.8 1040.3 635.7 1043.4 638.7 C1046.5 641.7 1050.1 645.5 1051.9 648.9 C1053.7 652.3 1053.0 656.1 1054.0 659.1 C1055.0 662.1 1055.8 664.7 1058.0 667.0 C1060.2 669.3 1063.6 671.0 1067.5 673.1 C1071.4 675.2 1076.4 677.8 1081.6 679.4 C1086.8 681.0 1093.3 683.3 1098.8 682.5 C1104.3 681.7 1106.6 679.9 1114.4 674.7 C1122.2 669.5 1135.2 658.3 1145.6 651.3 C1156.0 644.3 1169.1 637.2 1176.9 632.5 C1184.7 627.8 1187.5 626.5 1192.5 623.1 C1197.5 619.7 1204.6 613.9 1207.0 612.0 L1226 612 L1226.0 612.0 C1221.7 615.9 1205.6 630.9 1200.0 635.6 C1194.4 640.3 1199.0 635.1 1192.5 640.3 C1186.0 645.5 1171.7 658.8 1161.3 666.9 C1150.9 675.0 1140.4 683.8 1130.0 688.8 C1119.6 693.8 1111.8 694.8 1098.8 696.6 C1085.8 698.4 1062.3 700.2 1051.9 699.7 C1041.5 699.2 1041.5 698.1 1036.3 693.4 C1031.1 688.7 1026.8 677.1 1020.6 671.6 C1014.4 666.1 1007.4 662.4 998.8 660.6 C990.1 658.8 976.5 660.3 968.7 660.8 C960.9 661.2 956.3 661.6 951.8 663.3 C947.3 665.0 944.4 667.7 941.6 671.0 C938.8 674.3 936.8 678.1 934.8 682.9 C932.8 687.7 930.8 694.1 929.7 699.8 C928.6 705.4 928.6 711.1 928.0 716.8 C927.4 722.4 926.9 728.1 926.3 733.7 C925.7 739.4 925.8 746.3 924.6 750.7 C923.5 755.1 921.9 755.9 919.4 760.0 C916.9 764.1 914.0 770.0 909.8 775.4 C905.6 780.8 900.3 786.5 894.4 792.6 C888.5 798.7 881.1 805.1 874.2 811.8 C867.3 818.5 859.8 825.6 853.1 833.0 C846.4 840.4 839.8 848.3 833.9 856.0 C828.0 863.7 822.7 870.0 817.6 879.0 C812.5 888.0 807.4 899.2 803.2 909.8 C799.0 920.4 795.0 932.2 792.6 942.4 C790.2 952.6 789.9 963.3 788.8 971.2 C787.7 979.1 786.5 986.9 786.0 990.0 Z" fill="#b6c8dc"/>
<path d="M996.7 652.6 L1012.8 647.8 L1028.9 648.6 L1038.6 652.6 L1028.9 654.3 L1016.0 656.7 L1003.1 659.1Z" fill="#f2f5f6"/>
<path d="M1012.8 660.7 L1028.9 656.7 L1038.6 659.9 L1046.6 671.2 L1051.5 688.9 L1045.0 685.7 L1037.0 674.4 L1027.3 666.3Z" fill="#f2f5f6"/>
<path d="M1035.4 648.6 L1045.8 654.3 L1050.7 666.3 L1054.7 680.8 L1049.0 671.2 L1041.8 659.9Z" fill="#e7eee3"/>
<path d="M1049.9 685.7 L1061.1 693.7 L1075.6 697.0 L1062.7 697.8 L1051.5 692.1Z" fill="#eef2f3"/>
<path d="M1124 622.8 L1122.4 639 L1090 653.4 M933.8 622.8 L940.3 635.7 L953.2 639 L977.3 627.7 L983.8 622.8" fill="none" stroke="#f3e3ae" stroke-width="2.6" stroke-linejoin="round"/>
<path d="M773.0 990.0 C773.7 986.9 775.9 979.1 777.3 971.2 C778.6 963.3 778.7 952.6 781.1 942.4 C783.5 932.2 787.4 920.4 791.7 909.8 C796.0 899.2 801.9 888.0 807.0 879.0 C812.1 870.0 816.6 863.7 822.4 856.0 C828.2 848.3 834.9 840.4 841.6 833.0 C848.3 825.6 856.0 818.5 862.7 811.8 C869.4 805.1 876.1 798.7 881.9 792.6 C887.7 786.5 893.8 780.8 897.3 775.4 C900.8 770.0 901.3 764.1 903.0 760.0 C904.7 755.9 906.1 755.1 907.7 750.7 C909.3 746.3 911.7 739.4 912.8 733.7 C913.9 728.1 914.2 722.4 914.5 716.8 C914.8 711.1 913.9 705.4 914.5 699.8 C915.1 694.1 916.4 688.0 917.9 682.9 C919.4 677.8 921.5 673.5 923.8 669.3 C926.0 665.0 927.9 661.1 931.4 657.4 C934.9 653.7 938.8 650.3 945.0 647.2 C951.2 644.1 961.9 641.0 968.7 638.7 C975.5 636.5 980.0 635.2 985.7 633.7 C991.4 632.2 997.1 630.2 1002.7 629.4 C1008.4 628.5 1014.5 628.3 1019.6 628.6 C1024.7 628.9 1029.2 629.4 1033.2 631.1 C1037.2 632.8 1040.3 635.7 1043.4 638.7 C1046.5 641.7 1050.1 645.5 1051.9 648.9 C1053.7 652.3 1053.0 656.1 1054.0 659.1 C1055.0 662.1 1055.8 664.7 1058.0 667.0 C1060.2 669.3 1063.6 671.0 1067.5 673.1 C1071.4 675.2 1076.4 677.8 1081.6 679.4 C1086.8 681.0 1093.3 683.3 1098.8 682.5 C1104.3 681.7 1106.6 679.9 1114.4 674.7 C1122.2 669.5 1135.2 658.3 1145.6 651.3 C1156.0 644.3 1169.1 637.2 1176.9 632.5 C1184.7 627.8 1187.5 626.5 1192.5 623.1 C1197.5 619.7 1204.6 613.9 1207.0 612.0" fill="none" stroke="#8a8a8a" stroke-width="1.7" stroke-dasharray="5.5 3"/>
<path d="M377.0 746.7 C388.2 744.4 425.1 736.1 444.0 733.0 C462.9 729.9 471.8 731.1 490.5 728.0 C509.2 724.9 540.8 718.4 556.0 714.6 C571.2 710.8 572.8 710.1 582.0 705.0 C591.2 699.9 597.1 689.9 611.0 684.0 C624.9 678.1 649.0 675.8 665.6 669.6 C682.2 663.4 700.7 651.3 710.6 647.0 C720.5 642.7 718.1 644.2 725.0 644.0 C731.9 643.8 744.8 646.0 752.0 645.5 C759.2 645.0 762.0 644.6 768.0 640.7 C774.0 636.8 783.2 626.8 787.7 622.0 C792.2 617.2 793.8 613.7 795.0 612.0" fill="none" stroke="#bda9d8" stroke-width="4.8" stroke-linejoin="round" stroke-linecap="round"/>
<path d="M905.0 612.0 C906.4 613.6 910.0 618.0 913.6 621.9 C917.2 625.8 922.1 630.7 926.9 635.6 C931.7 640.5 937.8 647.1 942.5 651.3 C947.2 655.5 949.8 659.3 955.0 660.6 C960.2 661.9 966.5 659.0 973.8 659.0 C981.1 659.0 991.0 658.5 998.8 660.6 C1006.6 662.7 1014.4 665.9 1020.6 671.6 C1026.8 677.3 1032.1 689.8 1036.3 695.0 C1040.5 700.2 1037.8 701.2 1045.6 702.8 C1053.4 704.4 1071.5 704.4 1083.0 704.4 C1094.5 704.4 1104.7 703.3 1114.4 702.8 C1124.1 702.3 1136.9 701.6 1141.4 701.4" fill="none" stroke="#bda9d8" stroke-width="4.8" stroke-linejoin="round" stroke-linecap="round"/>
<path d="M1030.0 690.0 C1031.7 692.2 1036.7 700.1 1040.0 703.0 C1043.3 705.9 1042.8 706.6 1050.0 707.5 C1057.2 708.4 1072.3 708.7 1083.0 708.6 C1093.7 708.5 1105.1 707.7 1114.4 707.0 C1123.7 706.3 1134.9 704.9 1139.0 704.5" fill="none" stroke="#bda9d8" stroke-width="4.8" stroke-linejoin="round" stroke-linecap="round"/>
<path d="M1141.4 701.4 C1142.3 704.0 1143.4 713.0 1147.0 717.0 C1150.6 721.0 1158.0 723.1 1163.0 725.7 C1168.0 728.4 1173.2 730.3 1177.0 732.9 C1180.8 735.5 1179.5 739.5 1185.7 741.4 C1191.9 743.3 1204.8 742.1 1214.3 744.3 C1223.8 746.4 1234.7 751.8 1243.0 754.3 C1251.3 756.8 1254.8 759.1 1264.3 759.3 C1273.8 759.5 1290.2 756.5 1300.0 755.7 C1309.8 754.9 1315.2 752.9 1322.9 754.3 C1330.6 755.6 1337.2 759.6 1346.3 763.8 C1355.4 768.0 1367.1 775.0 1377.5 779.4 C1387.9 783.8 1395.8 788.5 1408.8 790.3 C1421.8 792.1 1438.7 790.4 1455.6 790.3 C1472.5 790.2 1488.6 789.5 1510.0 789.5 C1531.4 789.5 1558.5 788.8 1584.0 790.0 C1609.5 791.2 1630.3 793.8 1663.0 797.0 C1695.7 800.2 1760.5 807.0 1780.0 809.0" fill="none" stroke="#bda9d8" stroke-width="4.8" stroke-linejoin="round" stroke-linecap="round"/>
<path d="M1069.8 612.0 C1070.5 616.7 1071.6 633.8 1073.8 640.3 C1076.0 646.8 1080.1 645.8 1083.0 651.0 C1085.9 656.2 1088.4 664.3 1091.0 671.6 C1093.6 678.9 1097.0 689.8 1098.8 695.0 C1100.6 700.2 1101.5 701.7 1102.0 703.0" fill="none" stroke="#bda9d8" stroke-width="4.8" stroke-linejoin="round" stroke-linecap="round"/>
<path d="M1102.0 703.0 C1100.3 707.5 1094.7 720.5 1092.0 730.0 C1089.3 739.5 1088.2 748.8 1086.0 760.0 C1083.8 771.2 1080.0 788.3 1078.5 797.4 C1077.0 806.5 1076.4 810.4 1076.7 814.8 C1077.0 819.1 1076.7 820.0 1080.2 823.5 C1083.7 827.0 1092.1 831.4 1097.6 835.7 C1103.1 840.1 1109.8 845.0 1113.3 849.6 C1116.8 854.2 1115.6 858.4 1118.5 863.6 C1121.4 868.8 1127.0 874.6 1130.7 881.0 C1134.5 887.4 1139.0 892.6 1141.0 901.9 C1143.0 911.2 1141.2 925.1 1143.0 936.7 C1144.8 948.3 1149.6 963.5 1151.6 971.5 C1153.6 979.5 1154.4 982.8 1155.0 985.0" fill="none" stroke="#bda9d8" stroke-width="4.8" stroke-linejoin="round" stroke-linecap="round"/>
<path d="M1141.4 701.4 C1144.5 697.8 1151.9 687.6 1160.0 680.0 C1168.1 672.4 1181.1 662.1 1190.0 656.0 C1198.9 649.9 1205.6 648.1 1213.4 643.4 C1221.2 638.7 1228.3 631.4 1236.9 627.8 C1245.5 624.2 1256.2 624.0 1265.0 621.9 C1273.8 619.8 1285.8 616.1 1290.0 615.0" fill="none" stroke="#bda9d8" stroke-width="4.8" stroke-linejoin="round" stroke-linecap="round"/>
<path d="M926.9 635.6 C930.8 641.0 945.6 657.3 950.0 668.0 C954.4 678.7 953.0 688.0 953.0 700.0 C953.0 712.0 951.0 726.7 950.0 740.0 C949.0 753.3 947.9 769.0 947.0 780.0 C946.1 791.0 946.3 798.8 944.4 806.0 C942.5 813.2 938.0 816.2 935.7 823.5 C933.4 830.8 931.4 841.8 930.5 849.6 C929.6 857.4 929.3 865.6 930.5 870.5 C931.7 875.4 932.6 877.3 937.5 879.2 C942.4 881.1 949.3 881.8 960.0 881.8 C970.7 881.8 986.2 881.1 1001.9 879.2 C1017.6 877.3 1039.5 872.1 1054.0 870.5 C1068.5 868.9 1078.2 869.7 1089.0 869.7 C1099.8 869.7 1108.1 871.0 1118.5 870.5 C1128.9 870.0 1143.2 869.9 1151.6 867.0 C1160.0 864.1 1160.9 856.7 1169.0 853.0 C1177.1 849.3 1192.5 847.2 1200.0 845.0 C1207.5 842.8 1209.5 842.7 1214.3 840.0 C1219.1 837.3 1224.3 832.4 1228.6 828.6 C1232.9 824.8 1235.3 820.8 1240.0 817.0 C1244.7 813.2 1249.4 810.4 1257.0 805.7 C1264.6 801.0 1276.2 794.8 1285.7 788.6 C1295.2 782.4 1307.9 774.3 1314.3 768.6 C1320.7 762.9 1321.7 759.6 1324.3 754.3 C1326.9 749.0 1328.8 743.4 1330.0 737.0 C1331.2 730.6 1332.1 722.8 1331.4 715.7 C1330.7 708.6 1327.6 700.2 1325.7 694.3 C1323.8 688.3 1321.8 683.8 1320.0 680.0 C1318.2 676.2 1317.9 676.4 1315.0 671.6 C1312.1 666.8 1303.0 657.3 1302.5 651.3 C1302.0 645.3 1309.8 640.5 1311.9 635.6 C1314.0 630.7 1314.2 625.8 1315.0 621.9 C1315.8 618.0 1316.7 613.6 1317.0 612.0" fill="none" stroke="#bda9d8" stroke-width="4.8" stroke-linejoin="round" stroke-linecap="round"/>
<path d="M1302.5 651.3 C1298.1 654.7 1283.5 666.8 1275.9 671.6 C1268.3 676.4 1263.5 677.2 1257.0 680.0 C1250.5 682.8 1245.1 685.3 1237.0 688.6 C1228.9 691.9 1218.1 697.0 1208.6 700.0 C1199.1 703.0 1188.1 705.4 1180.0 706.4 C1171.9 707.4 1166.4 706.5 1160.0 705.7 C1153.6 704.9 1144.5 702.1 1141.4 701.4" fill="none" stroke="#bda9d8" stroke-width="4.8" stroke-linejoin="round" stroke-linecap="round"/>
<path d="M1141.4 703.0 C1142.3 703.9 1141.5 706.7 1147.0 708.6 C1152.5 710.5 1164.0 713.5 1174.3 714.3 C1184.6 715.1 1197.1 713.5 1208.6 713.6 C1220.0 713.7 1230.2 714.2 1243.0 715.0 C1255.8 715.8 1271.1 717.0 1285.7 718.6 C1300.3 720.2 1312.7 722.6 1330.6 724.7 C1348.5 726.8 1373.5 728.9 1393.0 731.0 C1412.5 733.1 1432.1 736.4 1447.8 737.2 C1463.5 738.0 1479.1 737.2 1486.9 735.6 C1494.7 734.0 1490.9 728.8 1494.7 727.8 C1498.5 726.8 1500.8 727.4 1510.0 729.4 C1519.2 731.4 1534.5 735.4 1550.0 740.0 C1565.5 744.6 1587.5 753.8 1603.0 757.0 C1618.5 760.2 1634.3 757.8 1643.0 759.0 C1651.7 760.2 1647.8 764.7 1655.0 764.0 C1662.2 763.3 1674.2 754.3 1686.0 755.0 C1697.8 755.7 1710.3 763.5 1726.0 768.0 C1741.7 772.5 1771.0 779.7 1780.0 782.0" fill="none" stroke="#bda9d8" stroke-width="4.8" stroke-linejoin="round" stroke-linecap="round"/>
<path d="M1180.0 734.3 C1183.8 734.5 1197.2 736.4 1202.9 735.7 C1208.6 735.0 1208.6 732.1 1214.3 730.0 C1220.0 727.9 1229.9 725.1 1237.0 722.9 C1244.1 720.7 1253.7 718.0 1257.0 717.0" fill="none" stroke="#bda9d8" stroke-width="4.8" stroke-linejoin="round" stroke-linecap="round"/>
<path d="M1480.6 621.9 C1482.9 623.4 1489.8 629.0 1494.7 631.0 C1499.6 633.0 1501.3 632.2 1510.0 634.0 C1518.7 635.8 1539.0 639.2 1547.0 642.0 C1555.0 644.8 1555.8 644.7 1558.0 651.0 C1560.2 657.3 1560.0 671.3 1560.0 680.0 C1560.0 688.7 1559.3 684.5 1558.0 703.0 C1556.7 721.5 1554.0 762.3 1552.0 791.0 C1550.0 819.7 1548.3 856.8 1546.0 875.0 C1543.7 893.2 1545.3 887.8 1538.0 900.0 C1530.7 912.2 1511.3 935.5 1502.0 948.0 C1492.7 960.5 1485.3 970.5 1482.0 975.0" fill="none" stroke="#bda9d8" stroke-width="4.8" stroke-linejoin="round" stroke-linecap="round"/>
<path d="M1020.0 720.0 C1018.7 726.7 1015.3 745.3 1012.0 760.0 C1008.7 774.7 1004.0 795.1 1000.0 808.0 C996.0 820.9 991.8 829.4 988.0 837.5 C984.2 845.6 981.6 849.4 977.5 856.6 C973.4 863.9 968.9 872.9 963.6 881.0 C958.4 889.1 951.8 895.7 946.0 905.0 C940.2 914.3 933.4 925.6 928.7 936.7 C924.0 947.8 920.3 963.5 918.0 971.5 C915.7 979.5 915.5 982.8 915.0 985.0" fill="none" stroke="#bda9d8" stroke-width="4.8" stroke-linejoin="round" stroke-linecap="round"/>
<path d="M1054.0 813.0 C1057.8 813.3 1069.4 815.6 1076.7 814.8 C1084.0 813.9 1090.1 812.3 1097.6 807.9 C1105.0 803.5 1112.0 794.2 1121.4 788.6 C1130.9 783.0 1147.0 777.7 1154.3 774.3 C1161.6 770.9 1163.2 769.0 1165.0 768.0" fill="none" stroke="#bda9d8" stroke-width="4.8" stroke-linejoin="round" stroke-linecap="round"/>
<path d="M1177.0 732.9 C1175.3 734.3 1169.6 737.8 1167.0 741.4 C1164.4 745.0 1162.1 750.2 1161.4 754.3 C1160.7 758.3 1160.8 761.9 1162.9 765.7 C1165.1 769.5 1169.5 773.2 1174.3 777.0 C1179.0 780.8 1185.2 785.7 1191.4 788.6 C1197.6 791.5 1205.2 790.5 1211.4 794.3 C1217.6 798.1 1223.8 806.4 1228.6 811.4 C1233.4 816.4 1237.6 821.2 1240.0 824.3 C1242.4 827.4 1240.8 826.0 1243.0 830.0 C1245.2 834.0 1249.6 842.8 1252.9 848.3 C1256.2 853.8 1259.5 860.0 1262.8 863.2 C1266.1 866.4 1268.9 866.3 1272.8 867.4 C1276.7 868.5 1277.7 865.0 1286.0 869.8 C1294.3 874.6 1311.0 887.8 1322.6 896.4 C1334.2 905.0 1345.3 913.5 1355.8 921.3 C1366.3 929.0 1379.6 936.5 1385.7 942.9 C1391.8 949.3 1390.5 954.1 1392.3 959.5 C1394.1 964.9 1395.5 970.8 1396.5 975.0 C1397.5 979.2 1397.8 983.3 1398.0 985.0" fill="none" stroke="#bda9d8" stroke-width="4.8" stroke-linejoin="round" stroke-linecap="round"/>
<path d="M1017.5 726.0 C1022.9 726.8 1036.2 729.2 1050.0 731.0 C1063.8 732.8 1086.9 735.5 1100.0 737.0 C1113.1 738.5 1123.8 739.5 1128.6 740.0" fill="none" stroke="#bda9d8" stroke-width="4.8" stroke-linejoin="round" stroke-linecap="round"/>
<path d="M1114.0 713.0 C1115.3 715.5 1119.3 723.0 1122.0 728.0 C1124.7 733.0 1127.0 738.0 1130.0 743.0 C1133.0 748.0 1136.0 752.8 1140.0 758.0 C1144.0 763.2 1151.9 771.6 1154.3 774.3" fill="none" stroke="#bda9d8" stroke-width="4.8" stroke-linejoin="round" stroke-linecap="round"/>
<path d="M1151.6 780.0 C1155.7 780.0 1167.9 778.3 1176.0 780.0 C1184.1 781.7 1196.0 788.7 1200.0 790.4" fill="none" stroke="#bda9d8" stroke-width="4.8" stroke-linejoin="round" stroke-linecap="round"/>
<path d="M377.0 746.7 C388.2 744.4 425.1 736.1 444.0 733.0 C462.9 729.9 471.8 731.1 490.5 728.0 C509.2 724.9 540.8 718.4 556.0 714.6 C571.2 710.8 572.8 710.1 582.0 705.0 C591.2 699.9 597.1 689.9 611.0 684.0 C624.9 678.1 649.0 675.8 665.6 669.6 C682.2 663.4 700.7 651.3 710.6 647.0 C720.5 642.7 718.1 644.2 725.0 644.0 C731.9 643.8 744.8 646.0 752.0 645.5 C759.2 645.0 762.0 644.6 768.0 640.7 C774.0 636.8 783.2 626.8 787.7 622.0 C792.2 617.2 793.8 613.7 795.0 612.0" fill="none" stroke="#d9cbec" stroke-width="2.9" stroke-linejoin="round" stroke-linecap="round"/>
<path d="M905.0 612.0 C906.4 613.6 910.0 618.0 913.6 621.9 C917.2 625.8 922.1 630.7 926.9 635.6 C931.7 640.5 937.8 647.1 942.5 651.3 C947.2 655.5 949.8 659.3 955.0 660.6 C960.2 661.9 966.5 659.0 973.8 659.0 C981.1 659.0 991.0 658.5 998.8 660.6 C1006.6 662.7 1014.4 665.9 1020.6 671.6 C1026.8 677.3 1032.1 689.8 1036.3 695.0 C1040.5 700.2 1037.8 701.2 1045.6 702.8 C1053.4 704.4 1071.5 704.4 1083.0 704.4 C1094.5 704.4 1104.7 703.3 1114.4 702.8 C1124.1 702.3 1136.9 701.6 1141.4 701.4" fill="none" stroke="#d9cbec" stroke-width="2.9" stroke-linejoin="round" stroke-linecap="round"/>
<path d="M1030.0 690.0 C1031.7 692.2 1036.7 700.1 1040.0 703.0 C1043.3 705.9 1042.8 706.6 1050.0 707.5 C1057.2 708.4 1072.3 708.7 1083.0 708.6 C1093.7 708.5 1105.1 707.7 1114.4 707.0 C1123.7 706.3 1134.9 704.9 1139.0 704.5" fill="none" stroke="#d9cbec" stroke-width="2.9" stroke-linejoin="round" stroke-linecap="round"/>
<path d="M1141.4 701.4 C1142.3 704.0 1143.4 713.0 1147.0 717.0 C1150.6 721.0 1158.0 723.1 1163.0 725.7 C1168.0 728.4 1173.2 730.3 1177.0 732.9 C1180.8 735.5 1179.5 739.5 1185.7 741.4 C1191.9 743.3 1204.8 742.1 1214.3 744.3 C1223.8 746.4 1234.7 751.8 1243.0 754.3 C1251.3 756.8 1254.8 759.1 1264.3 759.3 C1273.8 759.5 1290.2 756.5 1300.0 755.7 C1309.8 754.9 1315.2 752.9 1322.9 754.3 C1330.6 755.6 1337.2 759.6 1346.3 763.8 C1355.4 768.0 1367.1 775.0 1377.5 779.4 C1387.9 783.8 1395.8 788.5 1408.8 790.3 C1421.8 792.1 1438.7 790.4 1455.6 790.3 C1472.5 790.2 1488.6 789.5 1510.0 789.5 C1531.4 789.5 1558.5 788.8 1584.0 790.0 C1609.5 791.2 1630.3 793.8 1663.0 797.0 C1695.7 800.2 1760.5 807.0 1780.0 809.0" fill="none" stroke="#d9cbec" stroke-width="2.9" stroke-linejoin="round" stroke-linecap="round"/>
<path d="M1069.8 612.0 C1070.5 616.7 1071.6 633.8 1073.8 640.3 C1076.0 646.8 1080.1 645.8 1083.0 651.0 C1085.9 656.2 1088.4 664.3 1091.0 671.6 C1093.6 678.9 1097.0 689.8 1098.8 695.0 C1100.6 700.2 1101.5 701.7 1102.0 703.0" fill="none" stroke="#d9cbec" stroke-width="2.9" stroke-linejoin="round" stroke-linecap="round"/>
<path d="M1102.0 703.0 C1100.3 707.5 1094.7 720.5 1092.0 730.0 C1089.3 739.5 1088.2 748.8 1086.0 760.0 C1083.8 771.2 1080.0 788.3 1078.5 797.4 C1077.0 806.5 1076.4 810.4 1076.7 814.8 C1077.0 819.1 1076.7 820.0 1080.2 823.5 C1083.7 827.0 1092.1 831.4 1097.6 835.7 C1103.1 840.1 1109.8 845.0 1113.3 849.6 C1116.8 854.2 1115.6 858.4 1118.5 863.6 C1121.4 868.8 1127.0 874.6 1130.7 881.0 C1134.5 887.4 1139.0 892.6 1141.0 901.9 C1143.0 911.2 1141.2 925.1 1143.0 936.7 C1144.8 948.3 1149.6 963.5 1151.6 971.5 C1153.6 979.5 1154.4 982.8 1155.0 985.0" fill="none" stroke="#d9cbec" stroke-width="2.9" stroke-linejoin="round" stroke-linecap="round"/>
<path d="M1141.4 701.4 C1144.5 697.8 1151.9 687.6 1160.0 680.0 C1168.1 672.4 1181.1 662.1 1190.0 656.0 C1198.9 649.9 1205.6 648.1 1213.4 643.4 C1221.2 638.7 1228.3 631.4 1236.9 627.8 C1245.5 624.2 1256.2 624.0 1265.0 621.9 C1273.8 619.8 1285.8 616.1 1290.0 615.0" fill="none" stroke="#d9cbec" stroke-width="2.9" stroke-linejoin="round" stroke-linecap="round"/>
<path d="M926.9 635.6 C930.8 641.0 945.6 657.3 950.0 668.0 C954.4 678.7 953.0 688.0 953.0 700.0 C953.0 712.0 951.0 726.7 950.0 740.0 C949.0 753.3 947.9 769.0 947.0 780.0 C946.1 791.0 946.3 798.8 944.4 806.0 C942.5 813.2 938.0 816.2 935.7 823.5 C933.4 830.8 931.4 841.8 930.5 849.6 C929.6 857.4 929.3 865.6 930.5 870.5 C931.7 875.4 932.6 877.3 937.5 879.2 C942.4 881.1 949.3 881.8 960.0 881.8 C970.7 881.8 986.2 881.1 1001.9 879.2 C1017.6 877.3 1039.5 872.1 1054.0 870.5 C1068.5 868.9 1078.2 869.7 1089.0 869.7 C1099.8 869.7 1108.1 871.0 1118.5 870.5 C1128.9 870.0 1143.2 869.9 1151.6 867.0 C1160.0 864.1 1160.9 856.7 1169.0 853.0 C1177.1 849.3 1192.5 847.2 1200.0 845.0 C1207.5 842.8 1209.5 842.7 1214.3 840.0 C1219.1 837.3 1224.3 832.4 1228.6 828.6 C1232.9 824.8 1235.3 820.8 1240.0 817.0 C1244.7 813.2 1249.4 810.4 1257.0 805.7 C1264.6 801.0 1276.2 794.8 1285.7 788.6 C1295.2 782.4 1307.9 774.3 1314.3 768.6 C1320.7 762.9 1321.7 759.6 1324.3 754.3 C1326.9 749.0 1328.8 743.4 1330.0 737.0 C1331.2 730.6 1332.1 722.8 1331.4 715.7 C1330.7 708.6 1327.6 700.2 1325.7 694.3 C1323.8 688.3 1321.8 683.8 1320.0 680.0 C1318.2 676.2 1317.9 676.4 1315.0 671.6 C1312.1 666.8 1303.0 657.3 1302.5 651.3 C1302.0 645.3 1309.8 640.5 1311.9 635.6 C1314.0 630.7 1314.2 625.8 1315.0 621.9 C1315.8 618.0 1316.7 613.6 1317.0 612.0" fill="none" stroke="#d9cbec" stroke-width="2.9" stroke-linejoin="round" stroke-linecap="round"/>
<path d="M1302.5 651.3 C1298.1 654.7 1283.5 666.8 1275.9 671.6 C1268.3 676.4 1263.5 677.2 1257.0 680.0 C1250.5 682.8 1245.1 685.3 1237.0 688.6 C1228.9 691.9 1218.1 697.0 1208.6 700.0 C1199.1 703.0 1188.1 705.4 1180.0 706.4 C1171.9 707.4 1166.4 706.5 1160.0 705.7 C1153.6 704.9 1144.5 702.1 1141.4 701.4" fill="none" stroke="#d9cbec" stroke-width="2.9" stroke-linejoin="round" stroke-linecap="round"/>
<path d="M1141.4 703.0 C1142.3 703.9 1141.5 706.7 1147.0 708.6 C1152.5 710.5 1164.0 713.5 1174.3 714.3 C1184.6 715.1 1197.1 713.5 1208.6 713.6 C1220.0 713.7 1230.2 714.2 1243.0 715.0 C1255.8 715.8 1271.1 717.0 1285.7 718.6 C1300.3 720.2 1312.7 722.6 1330.6 724.7 C1348.5 726.8 1373.5 728.9 1393.0 731.0 C1412.5 733.1 1432.1 736.4 1447.8 737.2 C1463.5 738.0 1479.1 737.2 1486.9 735.6 C1494.7 734.0 1490.9 728.8 1494.7 727.8 C1498.5 726.8 1500.8 727.4 1510.0 729.4 C1519.2 731.4 1534.5 735.4 1550.0 740.0 C1565.5 744.6 1587.5 753.8 1603.0 757.0 C1618.5 760.2 1634.3 757.8 1643.0 759.0 C1651.7 760.2 1647.8 764.7 1655.0 764.0 C1662.2 763.3 1674.2 754.3 1686.0 755.0 C1697.8 755.7 1710.3 763.5 1726.0 768.0 C1741.7 772.5 1771.0 779.7 1780.0 782.0" fill="none" stroke="#d9cbec" stroke-width="2.9" stroke-linejoin="round" stroke-linecap="round"/>
<path d="M1180.0 734.3 C1183.8 734.5 1197.2 736.4 1202.9 735.7 C1208.6 735.0 1208.6 732.1 1214.3 730.0 C1220.0 727.9 1229.9 725.1 1237.0 722.9 C1244.1 720.7 1253.7 718.0 1257.0 717.0" fill="none" stroke="#d9cbec" stroke-width="2.9" stroke-linejoin="round" stroke-linecap="round"/>
<path d="M1480.6 621.9 C1482.9 623.4 1489.8 629.0 1494.7 631.0 C1499.6 633.0 1501.3 632.2 1510.0 634.0 C1518.7 635.8 1539.0 639.2 1547.0 642.0 C1555.0 644.8 1555.8 644.7 1558.0 651.0 C1560.2 657.3 1560.0 671.3 1560.0 680.0 C1560.0 688.7 1559.3 684.5 1558.0 703.0 C1556.7 721.5 1554.0 762.3 1552.0 791.0 C1550.0 819.7 1548.3 856.8 1546.0 875.0 C1543.7 893.2 1545.3 887.8 1538.0 900.0 C1530.7 912.2 1511.3 935.5 1502.0 948.0 C1492.7 960.5 1485.3 970.5 1482.0 975.0" fill="none" stroke="#d9cbec" stroke-width="2.9" stroke-linejoin="round" stroke-linecap="round"/>
<path d="M1020.0 720.0 C1018.7 726.7 1015.3 745.3 1012.0 760.0 C1008.7 774.7 1004.0 795.1 1000.0 808.0 C996.0 820.9 991.8 829.4 988.0 837.5 C984.2 845.6 981.6 849.4 977.5 856.6 C973.4 863.9 968.9 872.9 963.6 881.0 C958.4 889.1 951.8 895.7 946.0 905.0 C940.2 914.3 933.4 925.6 928.7 936.7 C924.0 947.8 920.3 963.5 918.0 971.5 C915.7 979.5 915.5 982.8 915.0 985.0" fill="none" stroke="#d9cbec" stroke-width="2.9" stroke-linejoin="round" stroke-linecap="round"/>
<path d="M1054.0 813.0 C1057.8 813.3 1069.4 815.6 1076.7 814.8 C1084.0 813.9 1090.1 812.3 1097.6 807.9 C1105.0 803.5 1112.0 794.2 1121.4 788.6 C1130.9 783.0 1147.0 777.7 1154.3 774.3 C1161.6 770.9 1163.2 769.0 1165.0 768.0" fill="none" stroke="#d9cbec" stroke-width="2.9" stroke-linejoin="round" stroke-linecap="round"/>
<path d="M1177.0 732.9 C1175.3 734.3 1169.6 737.8 1167.0 741.4 C1164.4 745.0 1162.1 750.2 1161.4 754.3 C1160.7 758.3 1160.8 761.9 1162.9 765.7 C1165.1 769.5 1169.5 773.2 1174.3 777.0 C1179.0 780.8 1185.2 785.7 1191.4 788.6 C1197.6 791.5 1205.2 790.5 1211.4 794.3 C1217.6 798.1 1223.8 806.4 1228.6 811.4 C1233.4 816.4 1237.6 821.2 1240.0 824.3 C1242.4 827.4 1240.8 826.0 1243.0 830.0 C1245.2 834.0 1249.6 842.8 1252.9 848.3 C1256.2 853.8 1259.5 860.0 1262.8 863.2 C1266.1 866.4 1268.9 866.3 1272.8 867.4 C1276.7 868.5 1277.7 865.0 1286.0 869.8 C1294.3 874.6 1311.0 887.8 1322.6 896.4 C1334.2 905.0 1345.3 913.5 1355.8 921.3 C1366.3 929.0 1379.6 936.5 1385.7 942.9 C1391.8 949.3 1390.5 954.1 1392.3 959.5 C1394.1 964.9 1395.5 970.8 1396.5 975.0 C1397.5 979.2 1397.8 983.3 1398.0 985.0" fill="none" stroke="#d9cbec" stroke-width="2.9" stroke-linejoin="round" stroke-linecap="round"/>
<path d="M1017.5 726.0 C1022.9 726.8 1036.2 729.2 1050.0 731.0 C1063.8 732.8 1086.9 735.5 1100.0 737.0 C1113.1 738.5 1123.8 739.5 1128.6 740.0" fill="none" stroke="#d9cbec" stroke-width="2.9" stroke-linejoin="round" stroke-linecap="round"/>
<path d="M1114.0 713.0 C1115.3 715.5 1119.3 723.0 1122.0 728.0 C1124.7 733.0 1127.0 738.0 1130.0 743.0 C1133.0 748.0 1136.0 752.8 1140.0 758.0 C1144.0 763.2 1151.9 771.6 1154.3 774.3" fill="none" stroke="#d9cbec" stroke-width="2.9" stroke-linejoin="round" stroke-linecap="round"/>
<path d="M1151.6 780.0 C1155.7 780.0 1167.9 778.3 1176.0 780.0 C1184.1 781.7 1196.0 788.7 1200.0 790.4" fill="none" stroke="#d9cbec" stroke-width="2.9" stroke-linejoin="round" stroke-linecap="round"/>
<text x="898.4" y="650.5" font-size="17.5" fill="#7e7e7e" textLength="97.2" lengthAdjust="spacingAndGlyphs" stroke="#f5f4f2" stroke-width="2.2" paint-order="stroke" stroke-linejoin="round">New Albany</text>
<text x="1035.5" y="716.9" font-size="22.5" fill="#7e7e7e" textLength="98.5" lengthAdjust="spacingAndGlyphs" stroke="#f5f4f2" stroke-width="2.2" paint-order="stroke" stroke-linejoin="round">Louisville</text>
<text x="1220.7" y="856.0" font-size="22.5" fill="#7e7e7e" textLength="99.6" lengthAdjust="spacingAndGlyphs" stroke="#f5f4f2" stroke-width="2.2" paint-order="stroke" stroke-linejoin="round">Louisville</text>
<text x="611.0" y="760.2" font-size="14.5" fill="#7e7e7e" textLength="54.0" lengthAdjust="spacingAndGlyphs" stroke="#f5f4f2" stroke-width="2.2" paint-order="stroke" stroke-linejoin="round">Franklin</text>
<text x="744.4" y="789.2" font-size="14.5" fill="#7e7e7e" textLength="54.6" lengthAdjust="spacingAndGlyphs" stroke="#f5f4f2" stroke-width="2.2" paint-order="stroke" stroke-linejoin="round">Franklin</text>
<text x="382.9" y="806.2" font-size="14.5" fill="#7e7e7e" textLength="58.4" lengthAdjust="spacingAndGlyphs" stroke="#f5f4f2" stroke-width="2.2" paint-order="stroke" stroke-linejoin="round">Harrison</text>
<text x="386.7" y="822.9" font-size="14.5" fill="#7e7e7e" textLength="51.3" lengthAdjust="spacingAndGlyphs" stroke="#f5f4f2" stroke-width="2.2" paint-order="stroke" stroke-linejoin="round">Grange</text>
<text x="483.0" y="941.2" font-size="14.5" fill="#7e7e7e" textLength="57.3" lengthAdjust="spacingAndGlyphs" stroke="#f5f4f2" stroke-width="2.2" paint-order="stroke" stroke-linejoin="round">Webster</text>
<text x="472.5" y="981.6" font-size="14.5" fill="#7e7e7e" textLength="57.3" lengthAdjust="spacingAndGlyphs" stroke="#f5f4f2" stroke-width="2.2" paint-order="stroke" stroke-linejoin="round">Webster</text>
<text x="924.6" y="865.0" font-size="17" fill="#7e7e7e" textLength="48.2" lengthAdjust="spacingAndGlyphs" stroke="#f5f4f2" stroke-width="2.2" paint-order="stroke" stroke-linejoin="round">Shively</text>
<text x="858.7" y="892.0" font-size="16.5" fill="#7e7e7e" textLength="88.3" lengthAdjust="spacingAndGlyphs" stroke="#f5f4f2" stroke-width="2.2" paint-order="stroke" stroke-linejoin="round">Saint Dennis</text>
<text x="858.7" y="979.2" font-size="20" fill="#7e7e7e" textLength="72.0" lengthAdjust="spacingAndGlyphs" stroke="#f5f4f2" stroke-width="2.2" paint-order="stroke" stroke-linejoin="round">Pleasure</text>
<text x="1267.3" y="673.1" font-size="16.5" fill="#7e7e7e" textLength="77.4" lengthAdjust="spacingAndGlyphs" stroke="#f5f4f2" stroke-width="2.2" paint-order="stroke" stroke-linejoin="round">Windy Hills</text>
<text x="1338.0" y="709.8" font-size="16.5" fill="#7e7e7e" textLength="51.2" lengthAdjust="spacingAndGlyphs" stroke="#f5f4f2" stroke-width="2.2" paint-order="stroke" stroke-linejoin="round">Lyndon</text>
<text x="1252.5" y="732.8" font-size="16.5" fill="#7e7e7e" textLength="87.8" lengthAdjust="spacingAndGlyphs" stroke="#f5f4f2" stroke-width="2.2" paint-order="stroke" stroke-linejoin="round">St Matthews</text>
<text x="1445.5" y="740.6" font-size="16.5" fill="#7e7e7e" textLength="81.9" lengthAdjust="spacingAndGlyphs" stroke="#f5f4f2" stroke-width="2.2" paint-order="stroke" stroke-linejoin="round">Middletown</text>
<text x="1412.2" y="759.0" font-size="16.5" fill="#7e7e7e" textLength="98.5" lengthAdjust="spacingAndGlyphs" stroke="#f5f4f2" stroke-width="2.2" paint-order="stroke" stroke-linejoin="round">Douglass Hills</text>
<text x="1370.6" y="856.6" font-size="17.5" fill="#7e7e7e" textLength="115.1" lengthAdjust="spacingAndGlyphs" stroke="#f5f4f2" stroke-width="2.2" paint-order="stroke" stroke-linejoin="round">Jeffersontown</text>
<text x="1166.5" y="938.8" font-size="18" fill="#7e7e7e" textLength="73.5" lengthAdjust="spacingAndGlyphs" stroke="#f5f4f2" stroke-width="2.2" paint-order="stroke" stroke-linejoin="round">Newburg</text>
<text x="1358.7" y="950.8" font-size="16.5" fill="#7e7e7e" textLength="76.2" lengthAdjust="spacingAndGlyphs" stroke="#f5f4f2" stroke-width="2.2" paint-order="stroke" stroke-linejoin="round">Fern Creek</text>
<text x="922.0" y="700.5" font-size="10.5" font-weight="700" fill="#7c6c62" textLength="52.0" lengthAdjust="spacingAndGlyphs" stroke="#f5f4f2" stroke-width="2.2" paint-order="stroke" stroke-linejoin="round">SHAWNEE</text>
<text x="945.0" y="797.0" font-size="10.5" font-weight="700" fill="#7c6c62" textLength="58.0" lengthAdjust="spacingAndGlyphs" stroke="#f5f4f2" stroke-width="2.2" paint-order="stroke" stroke-linejoin="round">HALLMARK</text>
<text x="1041.9" y="792.4" font-size="10.5" font-weight="700" fill="#7c6c62" textLength="82.0" lengthAdjust="spacingAndGlyphs" stroke="#f5f4f2" stroke-width="2.2" paint-order="stroke" stroke-linejoin="round">MEDICAL CENTER</text>
<text x="1006.0" y="863.4" font-size="11.5" font-weight="700" fill="#7c6c62" textLength="79.6" lengthAdjust="spacingAndGlyphs" stroke="#f5f4f2" stroke-width="2.2" paint-order="stroke" stroke-linejoin="round">WILDER PARK</text>
<text x="1005.2" y="933.8" font-size="11.5" font-weight="700" fill="#7c6c62" textLength="54.0" lengthAdjust="spacingAndGlyphs" stroke="#f5f4f2" stroke-width="2.2" paint-order="stroke" stroke-linejoin="round">IROQUOIS</text>
<text x="1228.0" y="798.2" font-size="12.5" font-weight="700" fill="#111" textLength="19.5" lengthAdjust="spacingAndGlyphs" stroke="#f5f4f2" stroke-width="2.2" paint-order="stroke" stroke-linejoin="round">Byp</text>
<g transform="translate(713.8 631.5) scale(1.06)">
<path d="M1.2 1.6 Q5.5 3.2 11 0.8 Q16.5 3.2 20.8 1.6 Q22.6 7.5 21 12.4 Q19 18.2 11 20.8 Q3 18.2 1 12.4 Q-0.6 7.5 1.2 1.6Z" fill="#7b7fbd" stroke="#fff" stroke-width="1"/>
<path d="M1.2 1.6 Q5.5 3.2 11 0.8 Q16.5 3.2 20.8 1.6 Q21.6 4 21.8 6.2 H0.2 Q0.4 4 1.2 1.6Z" fill="#ea6b68"/>
<text x="11" y="15.6" font-size="10" font-weight="700" fill="#fff" text-anchor="middle">64</text>
</g>
<g transform="translate(478.8 717.0) scale(1.06)">
<path d="M1.2 1.6 Q5.5 3.2 11 0.8 Q16.5 3.2 20.8 1.6 Q22.6 7.5 21 12.4 Q19 18.2 11 20.8 Q3 18.2 1 12.4 Q-0.6 7.5 1.2 1.6Z" fill="#7b7fbd" stroke="#fff" stroke-width="1"/>
<path d="M1.2 1.6 Q5.5 3.2 11 0.8 Q16.5 3.2 20.8 1.6 Q21.6 4 21.8 6.2 H0.2 Q0.4 4 1.2 1.6Z" fill="#ea6b68"/>
<text x="11" y="15.6" font-size="10" font-weight="700" fill="#fff" text-anchor="middle">64</text>
</g>
<g transform="translate(1062.8 628.4) scale(1.06)">
<path d="M1.2 1.6 Q5.5 3.2 11 0.8 Q16.5 3.2 20.8 1.6 Q22.6 7.5 21 12.4 Q19 18.2 11 20.8 Q3 18.2 1 12.4 Q-0.6 7.5 1.2 1.6Z" fill="#7b7fbd" stroke="#fff" stroke-width="1"/>
<path d="M1.2 1.6 Q5.5 3.2 11 0.8 Q16.5 3.2 20.8 1.6 Q21.6 4 21.8 6.2 H0.2 Q0.4 4 1.2 1.6Z" fill="#ea6b68"/>
<text x="11" y="15.6" font-size="10" font-weight="700" fill="#fff" text-anchor="middle">65</text>
</g>
<g transform="translate(1080.0 662.0) scale(1.06)">
<path d="M1.2 1.6 Q5.5 3.2 11 0.8 Q16.5 3.2 20.8 1.6 Q22.6 7.5 21 12.4 Q19 18.2 11 20.8 Q3 18.2 1 12.4 Q-0.6 7.5 1.2 1.6Z" fill="#7b7fbd" stroke="#fff" stroke-width="1"/>
<path d="M1.2 1.6 Q5.5 3.2 11 0.8 Q16.5 3.2 20.8 1.6 Q21.6 4 21.8 6.2 H0.2 Q0.4 4 1.2 1.6Z" fill="#ea6b68"/>
<text x="11" y="15.6" font-size="10" font-weight="700" fill="#fff" text-anchor="middle">65</text>
</g>
<g transform="translate(1192.7 640.9) scale(1.06)">
<path d="M1.2 1.6 Q5.5 3.2 11 0.8 Q16.5 3.2 20.8 1.6 Q22.6 7.5 21 12.4 Q19 18.2 11 20.8 Q3 18.2 1 12.4 Q-0.6 7.5 1.2 1.6Z" fill="#7b7fbd" stroke="#fff" stroke-width="1"/>
<path d="M1.2 1.6 Q5.5 3.2 11 0.8 Q16.5 3.2 20.8 1.6 Q21.6 4 21.8 6.2 H0.2 Q0.4 4 1.2 1.6Z" fill="#ea6b68"/>
<text x="11" y="15.6" font-size="10" font-weight="700" fill="#fff" text-anchor="middle">71</text>
</g>
<g transform="translate(1280.6 632.0) scale(1.06)">
<path d="M1.2 1.6 Q5.5 3.2 11 0.8 Q16.5 3.2 20.8 1.6 Q22.6 7.5 21 12.4 Q19 18.2 11 20.8 Q3 18.2 1 12.4 Q-0.6 7.5 1.2 1.6Z" fill="#7b7fbd" stroke="#fff" stroke-width="1"/>
<path d="M1.2 1.6 Q5.5 3.2 11 0.8 Q16.5 3.2 20.8 1.6 Q21.6 4 21.8 6.2 H0.2 Q0.4 4 1.2 1.6Z" fill="#ea6b68"/>
<text x="11" y="15.6" font-size="9.2" font-weight="700" fill="#fff" text-anchor="middle">264</text>
</g>
<g transform="translate(958.1 715.2) scale(1.06)">
<path d="M1.2 1.6 Q5.5 3.2 11 0.8 Q16.5 3.2 20.8 1.6 Q22.6 7.5 21 12.4 Q19 18.2 11 20.8 Q3 18.2 1 12.4 Q-0.6 7.5 1.2 1.6Z" fill="#7b7fbd" stroke="#fff" stroke-width="1"/>
<path d="M1.2 1.6 Q5.5 3.2 11 0.8 Q16.5 3.2 20.8 1.6 Q21.6 4 21.8 6.2 H0.2 Q0.4 4 1.2 1.6Z" fill="#ea6b68"/>
<text x="11" y="15.6" font-size="9.2" font-weight="700" fill="#fff" text-anchor="middle">264</text>
</g>
<g transform="translate(1144.1 714.4) scale(1.06)">
<path d="M1.2 1.6 Q5.5 3.2 11 0.8 Q16.5 3.2 20.8 1.6 Q22.6 7.5 21 12.4 Q19 18.2 11 20.8 Q3 18.2 1 12.4 Q-0.6 7.5 1.2 1.6Z" fill="#7b7fbd" stroke="#fff" stroke-width="1"/>
<path d="M1.2 1.6 Q5.5 3.2 11 0.8 Q16.5 3.2 20.8 1.6 Q21.6 4 21.8 6.2 H0.2 Q0.4 4 1.2 1.6Z" fill="#ea6b68"/>
<text x="11" y="15.6" font-size="10" font-weight="700" fill="#fff" text-anchor="middle">64</text>
</g>
<g transform="translate(1547.9 690.0) scale(1.06)">
<path d="M1.2 1.6 Q5.5 3.2 11 0.8 Q16.5 3.2 20.8 1.6 Q22.6 7.5 21 12.4 Q19 18.2 11 20.8 Q3 18.2 1 12.4 Q-0.6 7.5 1.2 1.6Z" fill="#7b7fbd" stroke="#fff" stroke-width="1"/>
<path d="M1.2 1.6 Q5.5 3.2 11 0.8 Q16.5 3.2 20.8 1.6 Q21.6 4 21.8 6.2 H0.2 Q0.4 4 1.2 1.6Z" fill="#ea6b68"/>
<text x="11" y="15.6" font-size="9.2" font-weight="700" fill="#fff" text-anchor="middle">265</text>
</g>
<g transform="translate(1486.8 778.1) scale(1.06)">
<path d="M1.2 1.6 Q5.5 3.2 11 0.8 Q16.5 3.2 20.8 1.6 Q22.6 7.5 21 12.4 Q19 18.2 11 20.8 Q3 18.2 1 12.4 Q-0.6 7.5 1.2 1.6Z" fill="#7b7fbd" stroke="#fff" stroke-width="1"/>
<path d="M1.2 1.6 Q5.5 3.2 11 0.8 Q16.5 3.2 20.8 1.6 Q21.6 4 21.8 6.2 H0.2 Q0.4 4 1.2 1.6Z" fill="#ea6b68"/>
<text x="11" y="15.6" font-size="10" font-weight="700" fill="#fff" text-anchor="middle">64</text>
</g>
<g transform="translate(1118.1 860.3) scale(1.06)">
<path d="M1.2 1.6 Q5.5 3.2 11 0.8 Q16.5 3.2 20.8 1.6 Q22.6 7.5 21 12.4 Q19 18.2 11 20.8 Q3 18.2 1 12.4 Q-0.6 7.5 1.2 1.6Z" fill="#7b7fbd" stroke="#fff" stroke-width="1"/>
<path d="M1.2 1.6 Q5.5 3.2 11 0.8 Q16.5 3.2 20.8 1.6 Q21.6 4 21.8 6.2 H0.2 Q0.4 4 1.2 1.6Z" fill="#ea6b68"/>
<text x="11" y="15.6" font-size="9.2" font-weight="700" fill="#fff" text-anchor="middle">264</text>
</g>
<rect x="1541.3" y="745" width="25" height="17.6" rx="3.5" fill="#fff" stroke="#8a8a8a" stroke-width="1.1"/>
<text x="1553.8" y="757.8" font-size="9.6" font-weight="700" fill="#222" text-anchor="middle">841</text>
<path d="M1231.5 808.6 Q1236 810.4 1240.8 808 Q1245.6 810.4 1250.1 808.6 Q1252.4 814 1250.6 818.6 Q1248.6 823.6 1240.8 826.2 Q1233 823.6 1231 818.6 Q1229.2 814 1231.5 808.6Z" fill="#fff" stroke="#8a8a8a" stroke-width="1.1"/>
<text x="1240.8" y="821.2" font-size="9.6" font-weight="700" fill="#222" text-anchor="middle">60</text>
<circle cx="866.8" cy="828.7" r="4.3" fill="#dabbbf" stroke="#9b7c83" stroke-width="0.9"/>
<path d="M866.8 828.7 L870.3 831.2 A4.3 4.3 0 1 1 866.8 824.4Z" fill="#e9c63b"/>
<path d="M866.8 828.7 V824.4" stroke="#9b7c83" stroke-width="0.6"/>
<circle cx="874.8" cy="825.5" r="4.3" fill="#dabbbf" stroke="#9b7c83" stroke-width="0.9"/>
<path d="M874.8 825.5 L874.8 829.8 A4.3 4.3 0 0 1 874.8 821.2Z" fill="#e9c63b"/>
<path d="M874.8 825.5 V821.2" stroke="#9b7c83" stroke-width="0.6"/>
<circle cx="871.6" cy="833.5" r="4.3" fill="#dabbbf" stroke="#9b7c83" stroke-width="0.9"/>
<path d="M871.6 833.5 L875.7 832.2 A4.3 4.3 0 1 1 871.6 829.2Z" fill="#e9c63b"/>
<path d="M871.6 833.5 L871.6 829.2 A4.3 4.3 0 0 1 873.7 829.7Z" fill="#d8524f"/>
<path d="M871.6 833.5 V829.2" stroke="#9b7c83" stroke-width="0.6"/>
<circle cx="886.0" cy="833.5" r="4.3" fill="#dabbbf" stroke="#9b7c83" stroke-width="0.9"/>
<path d="M886.0 833.5 L886.0 837.8 A4.3 4.3 0 0 1 886.0 829.2Z" fill="#e9c63b"/>
<path d="M886.0 833.5 L886.0 829.2 A4.3 4.3 0 0 1 888.1 829.7Z" fill="#d8524f"/>
<path d="M886.0 833.5 V829.2" stroke="#9b7c83" stroke-width="0.6"/>
<circle cx="947.1" cy="820.7" r="4.3" fill="#dabbbf" stroke="#9b7c83" stroke-width="0.9"/>
<path d="M947.1 820.7 L943.0 819.4 A4.3 4.3 0 0 1 947.1 816.4Z" fill="#e9c63b"/>
<path d="M947.1 820.7 L945.8 824.8 A4.3 4.3 0 0 1 943.0 819.4Z" fill="#2f3a3b"/>
<path d="M947.1 820.7 V816.4" stroke="#9b7c83" stroke-width="0.6"/>
<circle cx="993.7" cy="820.7" r="4.3" fill="#dabbbf" stroke="#9b7c83" stroke-width="0.9"/>
<path d="M993.7 820.7 L993.7 825.0 A4.3 4.3 0 0 1 993.7 816.4Z" fill="#e9c63b"/>
<path d="M993.7 820.7 V816.4" stroke="#9b7c83" stroke-width="0.6"/>
<circle cx="968.0" cy="836.7" r="4.3" fill="#dabbbf" stroke="#9b7c83" stroke-width="0.9"/>
<path d="M968.0 836.7 L963.9 835.4 A4.3 4.3 0 0 1 968.0 832.4Z" fill="#e9c63b"/>
<path d="M968.0 836.7 L966.7 840.8 A4.3 4.3 0 0 1 963.9 835.4Z" fill="#2f3a3b"/>
<path d="M968.0 836.7 V832.4" stroke="#9b7c83" stroke-width="0.6"/>
<circle cx="934.2" cy="841.5" r="4.3" fill="#dabbbf" stroke="#9b7c83" stroke-width="0.9"/>
<path d="M934.2 841.5 L930.1 840.2 A4.3 4.3 0 0 1 934.2 837.2Z" fill="#e9c63b"/>
<path d="M934.2 841.5 L932.9 845.6 A4.3 4.3 0 0 1 930.1 840.2Z" fill="#2f3a3b"/>
<path d="M934.2 841.5 V837.2" stroke="#9b7c83" stroke-width="0.6"/>
<circle cx="919.8" cy="848.0" r="4.3" fill="#dabbbf" stroke="#9b7c83" stroke-width="0.9"/>
<path d="M919.8 848.0 L918.5 852.1 A4.3 4.3 0 0 1 919.8 843.7Z" fill="#e9c63b"/>
<path d="M919.8 848.0 L919.8 843.7 A4.3 4.3 0 0 1 921.9 844.2Z" fill="#d8524f"/>
<path d="M919.8 848.0 V843.7" stroke="#9b7c83" stroke-width="0.6"/>
<circle cx="900.5" cy="851.2" r="4.3" fill="#dabbbf" stroke="#9b7c83" stroke-width="0.9"/>
<path d="M900.5 851.2 L904.0 853.7 A4.3 4.3 0 1 1 900.5 846.9Z" fill="#e9c63b"/>
<path d="M900.5 851.2 L900.5 846.9 A4.3 4.3 0 0 1 902.6 847.4Z" fill="#d8524f"/>
<path d="M900.5 851.2 V846.9" stroke="#9b7c83" stroke-width="0.6"/>
<circle cx="903.7" cy="854.4" r="4.3" fill="#dabbbf" stroke="#9b7c83" stroke-width="0.9"/>
<path d="M903.7 854.4 L903.7 858.7 A4.3 4.3 0 0 1 903.7 850.1Z" fill="#e9c63b"/>
<path d="M903.7 854.4 V850.1" stroke="#9b7c83" stroke-width="0.6"/>
<circle cx="908.5" cy="862.4" r="4.3" fill="#dabbbf" stroke="#9b7c83" stroke-width="0.9"/>
<path d="M908.5 862.4 L904.4 861.1 A4.3 4.3 0 0 1 908.5 858.1Z" fill="#e9c63b"/>
<path d="M908.5 862.4 L907.2 866.5 A4.3 4.3 0 0 1 904.4 861.1Z" fill="#2f3a3b"/>
<path d="M908.5 862.4 V858.1" stroke="#9b7c83" stroke-width="0.6"/>
<circle cx="926.2" cy="859.2" r="4.3" fill="#dabbbf" stroke="#9b7c83" stroke-width="0.9"/>
<path d="M926.2 859.2 V854.9" stroke="#9b7c83" stroke-width="0.6"/>
<circle cx="849.1" cy="868.9" r="4.3" fill="#dabbbf" stroke="#9b7c83" stroke-width="0.9"/>
<path d="M849.1 868.9 L853.2 867.6 A4.3 4.3 0 1 1 849.1 864.6Z" fill="#e9c63b"/>
<path d="M849.1 868.9 V864.6" stroke="#9b7c83" stroke-width="0.6"/>
<circle cx="845.9" cy="872.1" r="4.3" fill="#dabbbf" stroke="#9b7c83" stroke-width="0.9"/>
<path d="M845.9 872.1 L845.9 876.4 A4.3 4.3 0 0 1 845.9 867.8Z" fill="#e9c63b"/>
<path d="M845.9 872.1 V867.8" stroke="#9b7c83" stroke-width="0.6"/>
<circle cx="889.3" cy="872.1" r="4.3" fill="#dabbbf" stroke="#9b7c83" stroke-width="0.9"/>
<path d="M889.3 872.1 L885.2 870.8 A4.3 4.3 0 0 1 889.3 867.8Z" fill="#e9c63b"/>
<path d="M889.3 872.1 L888.0 876.2 A4.3 4.3 0 0 1 885.2 870.8Z" fill="#2f3a3b"/>
<path d="M889.3 872.1 V867.8" stroke="#9b7c83" stroke-width="0.6"/>
<circle cx="905.3" cy="870.5" r="4.3" fill="#dabbbf" stroke="#9b7c83" stroke-width="0.9"/>
<path d="M905.3 870.5 L904.0 874.6 A4.3 4.3 0 0 1 905.3 866.2Z" fill="#e9c63b"/>
<path d="M905.3 870.5 V866.2" stroke="#9b7c83" stroke-width="0.6"/>
<circle cx="927.8" cy="881.7" r="4.3" fill="#dabbbf" stroke="#9b7c83" stroke-width="0.9"/>
<circle cx="927.8" cy="881.7" r="4.3" fill="#e9c63b" stroke="#c4a02a" stroke-width="0.9"/>
<circle cx="906.9" cy="886.5" r="4.3" fill="#dabbbf" stroke="#9b7c83" stroke-width="0.9"/>
<path d="M906.9 886.5 L910.4 889.0 A4.3 4.3 0 1 1 906.9 882.2Z" fill="#e9c63b"/>
<path d="M906.9 886.5 V882.2" stroke="#9b7c83" stroke-width="0.6"/>
<circle cx="921.4" cy="886.5" r="4.3" fill="#dabbbf" stroke="#9b7c83" stroke-width="0.9"/>
<path d="M921.4 886.5 L923.9 890.0 A4.3 4.3 0 1 1 921.4 882.2Z" fill="#e9c63b"/>
<path d="M921.4 886.5 V882.2" stroke="#9b7c83" stroke-width="0.6"/>
<circle cx="886.0" cy="893.0" r="4.3" fill="#dabbbf" stroke="#9b7c83" stroke-width="0.9"/>
<path d="M886.0 893.0 V888.7" stroke="#9b7c83" stroke-width="0.6"/>
<circle cx="955.1" cy="897.8" r="4.3" fill="#dabbbf" stroke="#9b7c83" stroke-width="0.9"/>
<path d="M955.1 897.8 V893.5" stroke="#9b7c83" stroke-width="0.6"/>
<circle cx="964.8" cy="897.8" r="4.3" fill="#dabbbf" stroke="#9b7c83" stroke-width="0.9"/>
<path d="M964.8 897.8 L964.8 902.1 A4.3 4.3 0 0 1 964.8 893.5Z" fill="#e9c63b"/>
<path d="M964.8 897.8 L964.8 893.5 A4.3 4.3 0 0 1 966.9 894.0Z" fill="#d8524f"/>
<path d="M964.8 897.8 V893.5" stroke="#9b7c83" stroke-width="0.6"/>
<circle cx="977.6" cy="893.0" r="4.3" fill="#dabbbf" stroke="#9b7c83" stroke-width="0.9"/>
<path d="M977.6 893.0 L981.7 894.3 A4.3 4.3 0 1 1 977.6 888.7Z" fill="#e9c63b"/>
<path d="M977.6 893.0 L977.6 888.7 A4.3 4.3 0 0 1 979.7 889.2Z" fill="#d8524f"/>
<path d="M977.6 893.0 V888.7" stroke="#9b7c83" stroke-width="0.6"/>
<circle cx="879.6" cy="909.0" r="4.3" fill="#dabbbf" stroke="#9b7c83" stroke-width="0.9"/>
<path d="M879.6 909.0 L876.1 911.5 A4.3 4.3 0 0 1 879.6 904.7Z" fill="#e9c63b"/>
<path d="M879.6 909.0 V904.7" stroke="#9b7c83" stroke-width="0.6"/>
<circle cx="882.8" cy="913.8" r="4.3" fill="#dabbbf" stroke="#9b7c83" stroke-width="0.9"/>
<path d="M882.8 913.8 L886.9 915.1 A4.3 4.3 0 1 1 882.8 909.5Z" fill="#e9c63b"/>
<path d="M882.8 913.8 V909.5" stroke="#9b7c83" stroke-width="0.6"/>
<circle cx="855.5" cy="915.4" r="4.3" fill="#dabbbf" stroke="#9b7c83" stroke-width="0.9"/>
<circle cx="855.5" cy="915.4" r="4.3" fill="#e9c63b" stroke="#c4a02a" stroke-width="0.9"/>
<circle cx="910.1" cy="905.8" r="4.3" fill="#dabbbf" stroke="#9b7c83" stroke-width="0.9"/>
<path d="M910.1 905.8 L910.1 910.1 A4.3 4.3 0 0 1 910.1 901.5Z" fill="#e9c63b"/>
<path d="M910.1 905.8 V901.5" stroke="#9b7c83" stroke-width="0.6"/>
<circle cx="921.4" cy="907.4" r="4.3" fill="#dabbbf" stroke="#9b7c83" stroke-width="0.9"/>
<path d="M921.4 907.4 L921.4 911.7 A4.3 4.3 0 0 1 921.4 903.1Z" fill="#e9c63b"/>
<path d="M921.4 907.4 L921.4 903.1 A4.3 4.3 0 0 1 923.5 903.6Z" fill="#d8524f"/>
<path d="M921.4 907.4 V903.1" stroke="#9b7c83" stroke-width="0.6"/>
<circle cx="950.3" cy="912.2" r="4.3" fill="#dabbbf" stroke="#9b7c83" stroke-width="0.9"/>
<path d="M950.3 912.2 V907.9" stroke="#9b7c83" stroke-width="0.6"/>
<circle cx="963.2" cy="909.0" r="4.3" fill="#dabbbf" stroke="#9b7c83" stroke-width="0.9"/>
<path d="M963.2 909.0 L959.1 907.7 A4.3 4.3 0 0 1 963.2 904.7Z" fill="#e9c63b"/>
<path d="M963.2 909.0 L961.9 913.1 A4.3 4.3 0 0 1 959.1 907.7Z" fill="#2f3a3b"/>
<path d="M963.2 909.0 V904.7" stroke="#9b7c83" stroke-width="0.6"/>
<circle cx="929.4" cy="917.1" r="4.3" fill="#dabbbf" stroke="#9b7c83" stroke-width="0.9"/>
<path d="M929.4 917.1 V912.8" stroke="#9b7c83" stroke-width="0.6"/>
<circle cx="905.3" cy="921.9" r="4.3" fill="#dabbbf" stroke="#9b7c83" stroke-width="0.9"/>
<path d="M905.3 921.9 V917.6" stroke="#9b7c83" stroke-width="0.6"/>
<circle cx="921.4" cy="921.9" r="4.3" fill="#dabbbf" stroke="#9b7c83" stroke-width="0.9"/>
<path d="M921.4 921.9 L920.1 926.0 A4.3 4.3 0 0 1 921.4 917.6Z" fill="#e9c63b"/>
<path d="M921.4 921.9 V917.6" stroke="#9b7c83" stroke-width="0.6"/>
<circle cx="985.7" cy="921.9" r="4.3" fill="#dabbbf" stroke="#9b7c83" stroke-width="0.9"/>
<circle cx="985.7" cy="921.9" r="4.3" fill="#e9c63b" stroke="#c4a02a" stroke-width="0.9"/>
<circle cx="992.1" cy="931.5" r="4.3" fill="#dabbbf" stroke="#9b7c83" stroke-width="0.9"/>
<path d="M992.1 931.5 L988.0 930.2 A4.3 4.3 0 0 1 992.1 927.2Z" fill="#e9c63b"/>
<path d="M992.1 931.5 L990.8 935.6 A4.3 4.3 0 0 1 988.0 930.2Z" fill="#2f3a3b"/>
<path d="M992.1 931.5 V927.2" stroke="#9b7c83" stroke-width="0.6"/>
<circle cx="934.2" cy="933.1" r="4.3" fill="#dabbbf" stroke="#9b7c83" stroke-width="0.9"/>
<path d="M934.2 933.1 L938.3 931.8 A4.3 4.3 0 1 1 934.2 928.8Z" fill="#e9c63b"/>
<path d="M934.2 933.1 V928.8" stroke="#9b7c83" stroke-width="0.6"/>
<circle cx="924.6" cy="939.6" r="4.3" fill="#dabbbf" stroke="#9b7c83" stroke-width="0.9"/>
<path d="M924.6 939.6 L928.7 938.3 A4.3 4.3 0 1 1 924.6 935.3Z" fill="#e9c63b"/>
<path d="M924.6 939.6 V935.3" stroke="#9b7c83" stroke-width="0.6"/>
<circle cx="931.0" cy="942.8" r="4.3" fill="#dabbbf" stroke="#9b7c83" stroke-width="0.9"/>
<path d="M931.0 942.8 V938.5" stroke="#9b7c83" stroke-width="0.6"/>
<circle cx="910.1" cy="942.8" r="4.3" fill="#dabbbf" stroke="#9b7c83" stroke-width="0.9"/>
<path d="M910.1 942.8 L913.6 945.3 A4.3 4.3 0 1 1 910.1 938.5Z" fill="#e9c63b"/>
<path d="M910.1 942.8 V938.5" stroke="#9b7c83" stroke-width="0.6"/>
<circle cx="886.0" cy="952.4" r="4.3" fill="#dabbbf" stroke="#9b7c83" stroke-width="0.9"/>
<path d="M886.0 952.4 L889.5 954.9 A4.3 4.3 0 1 1 886.0 948.1Z" fill="#e9c63b"/>
<path d="M886.0 952.4 V948.1" stroke="#9b7c83" stroke-width="0.6"/>
<circle cx="889.3" cy="957.2" r="4.3" fill="#dabbbf" stroke="#9b7c83" stroke-width="0.9"/>
<path d="M889.3 957.2 V952.9" stroke="#9b7c83" stroke-width="0.6"/>
<circle cx="853.9" cy="952.4" r="4.3" fill="#dabbbf" stroke="#9b7c83" stroke-width="0.9"/>
<path d="M853.9 952.4 L852.6 956.5 A4.3 4.3 0 0 1 853.9 948.1Z" fill="#e9c63b"/>
<path d="M853.9 952.4 V948.1" stroke="#9b7c83" stroke-width="0.6"/>
<circle cx="881.2" cy="960.4" r="4.3" fill="#dabbbf" stroke="#9b7c83" stroke-width="0.9"/>
<path d="M881.2 960.4 V956.1" stroke="#9b7c83" stroke-width="0.6"/>
<circle cx="934.2" cy="952.4" r="4.3" fill="#dabbbf" stroke="#9b7c83" stroke-width="0.9"/>
<path d="M934.2 952.4 L938.3 951.1 A4.3 4.3 0 1 1 934.2 948.1Z" fill="#e9c63b"/>
<path d="M934.2 952.4 L934.2 948.1 A4.3 4.3 0 0 1 936.3 948.6Z" fill="#d8524f"/>
<path d="M934.2 952.4 V948.1" stroke="#9b7c83" stroke-width="0.6"/>
<circle cx="966.4" cy="955.6" r="4.3" fill="#dabbbf" stroke="#9b7c83" stroke-width="0.9"/>
<path d="M966.4 955.6 L970.5 954.3 A4.3 4.3 0 1 1 966.4 951.3Z" fill="#e9c63b"/>
<path d="M966.4 955.6 V951.3" stroke="#9b7c83" stroke-width="0.6"/>
<circle cx="974.4" cy="960.4" r="4.3" fill="#dabbbf" stroke="#9b7c83" stroke-width="0.9"/>
<path d="M974.4 960.4 L977.9 962.9 A4.3 4.3 0 1 1 974.4 956.1Z" fill="#e9c63b"/>
<path d="M974.4 960.4 L974.4 956.1 A4.3 4.3 0 0 1 976.5 956.6Z" fill="#d8524f"/>
<path d="M974.4 960.4 V956.1" stroke="#9b7c83" stroke-width="0.6"/>
<circle cx="929.4" cy="963.7" r="4.3" fill="#dabbbf" stroke="#9b7c83" stroke-width="0.9"/>
<path d="M929.4 963.7 L928.1 967.8 A4.3 4.3 0 0 1 929.4 959.4Z" fill="#e9c63b"/>
<path d="M929.4 963.7 V959.4" stroke="#9b7c83" stroke-width="0.6"/>
<circle cx="945.5" cy="962.0" r="4.3" fill="#dabbbf" stroke="#9b7c83" stroke-width="0.9"/>
<path d="M945.5 962.0 L941.4 960.7 A4.3 4.3 0 0 1 945.5 957.7Z" fill="#e9c63b"/>
<path d="M945.5 962.0 L944.2 966.1 A4.3 4.3 0 0 1 941.4 960.7Z" fill="#2f3a3b"/>
<path d="M945.5 962.0 V957.7" stroke="#9b7c83" stroke-width="0.6"/>
<circle cx="841.1" cy="966.9" r="4.3" fill="#dabbbf" stroke="#9b7c83" stroke-width="0.9"/>
<path d="M841.1 966.9 L844.6 969.4 A4.3 4.3 0 1 1 841.1 962.6Z" fill="#e9c63b"/>
<path d="M841.1 966.9 V962.6" stroke="#9b7c83" stroke-width="0.6"/>
<circle cx="1013.0" cy="966.9" r="4.3" fill="#dabbbf" stroke="#9b7c83" stroke-width="0.9"/>
<path d="M1013.0 966.9 L1009.5 969.4 A4.3 4.3 0 0 1 1013.0 962.6Z" fill="#e9c63b"/>
<path d="M1013.0 966.9 V962.6" stroke="#9b7c83" stroke-width="0.6"/>
<circle cx="1033.9" cy="941.2" r="4.3" fill="#dabbbf" stroke="#9b7c83" stroke-width="0.9"/>
<path d="M1033.9 941.2 V936.9" stroke="#9b7c83" stroke-width="0.6"/>
<circle cx="1041.9" cy="954.0" r="4.3" fill="#dabbbf" stroke="#9b7c83" stroke-width="0.9"/>
<path d="M1041.9 954.0 V949.7" stroke="#9b7c83" stroke-width="0.6"/>
<circle cx="1056.3" cy="944.4" r="4.3" fill="#dabbbf" stroke="#9b7c83" stroke-width="0.9"/>
<path d="M1056.3 944.4 V940.1" stroke="#9b7c83" stroke-width="0.6"/>
<circle cx="1069.2" cy="933.1" r="4.3" fill="#dabbbf" stroke="#9b7c83" stroke-width="0.9"/>
<path d="M1069.2 933.1 L1065.1 931.8 A4.3 4.3 0 0 1 1069.2 928.8Z" fill="#e9c63b"/>
<path d="M1069.2 933.1 L1067.9 937.2 A4.3 4.3 0 0 1 1065.1 931.8Z" fill="#2f3a3b"/>
<path d="M1069.2 933.1 V928.8" stroke="#9b7c83" stroke-width="0.6"/>
<circle cx="1070.8" cy="939.6" r="4.3" fill="#dabbbf" stroke="#9b7c83" stroke-width="0.9"/>
<path d="M1070.8 939.6 L1069.5 943.7 A4.3 4.3 0 0 1 1070.8 935.3Z" fill="#e9c63b"/>
<path d="M1070.8 939.6 L1070.8 935.3 A4.3 4.3 0 0 1 1072.9 935.8Z" fill="#d8524f"/>
<path d="M1070.8 939.6 V935.3" stroke="#9b7c83" stroke-width="0.6"/>
<circle cx="1074.0" cy="946.0" r="4.3" fill="#dabbbf" stroke="#9b7c83" stroke-width="0.9"/>
<path d="M1074.0 946.0 L1069.9 944.7 A4.3 4.3 0 0 1 1074.0 941.7Z" fill="#e9c63b"/>
<path d="M1074.0 946.0 L1072.7 950.1 A4.3 4.3 0 0 1 1069.9 944.7Z" fill="#2f3a3b"/>
<path d="M1074.0 946.0 V941.7" stroke="#9b7c83" stroke-width="0.6"/>
<circle cx="1072.4" cy="957.2" r="4.3" fill="#dabbbf" stroke="#9b7c83" stroke-width="0.9"/>
<path d="M1072.4 957.2 L1072.4 961.5 A4.3 4.3 0 0 1 1072.4 952.9Z" fill="#e9c63b"/>
<path d="M1072.4 957.2 V952.9" stroke="#9b7c83" stroke-width="0.6"/>
<circle cx="1046.7" cy="931.5" r="4.3" fill="#dabbbf" stroke="#9b7c83" stroke-width="0.9"/>
<path d="M1046.7 931.5 L1046.7 935.8 A4.3 4.3 0 0 1 1046.7 927.2Z" fill="#e9c63b"/>
<path d="M1046.7 931.5 V927.2" stroke="#9b7c83" stroke-width="0.6"/>
<circle cx="1051.5" cy="918.7" r="4.3" fill="#dabbbf" stroke="#9b7c83" stroke-width="0.9"/>
<path d="M1051.5 918.7 L1048.0 921.2 A4.3 4.3 0 0 1 1051.5 914.4Z" fill="#e9c63b"/>
<path d="M1051.5 918.7 V914.4" stroke="#9b7c83" stroke-width="0.6"/>
<circle cx="1189.7" cy="681.8" r="4.3" fill="#dabbbf" stroke="#9b7c83" stroke-width="0.9"/>
<path d="M1189.7 681.8 L1193.8 683.1 A4.3 4.3 0 1 1 1189.7 677.5Z" fill="#e9c63b"/>
<path d="M1189.7 681.8 V677.5" stroke="#9b7c83" stroke-width="0.6"/>
<circle cx="1154.4" cy="701.1" r="4.3" fill="#dabbbf" stroke="#9b7c83" stroke-width="0.9"/>
<path d="M1154.4 701.1 L1158.5 699.8 A4.3 4.3 0 1 1 1154.4 696.8Z" fill="#e9c63b"/>
<path d="M1154.4 701.1 V696.8" stroke="#9b7c83" stroke-width="0.6"/>
<circle cx="1167.2" cy="702.4" r="4.3" fill="#dabbbf" stroke="#9b7c83" stroke-width="0.9"/>
<path d="M1167.2 702.4 L1169.7 705.9 A4.3 4.3 0 1 1 1167.2 698.1Z" fill="#e9c63b"/>
<path d="M1167.2 702.4 V698.1" stroke="#9b7c83" stroke-width="0.6"/>
<circle cx="1197.7" cy="699.2" r="4.3" fill="#dabbbf" stroke="#9b7c83" stroke-width="0.9"/>
<path d="M1197.7 699.2 L1193.6 697.9 A4.3 4.3 0 0 1 1197.7 694.9Z" fill="#e9c63b"/>
<path d="M1197.7 699.2 L1196.4 703.3 A4.3 4.3 0 0 1 1193.6 697.9Z" fill="#2f3a3b"/>
<path d="M1197.7 699.2 V694.9" stroke="#9b7c83" stroke-width="0.6"/>
<circle cx="1207.4" cy="699.2" r="4.3" fill="#dabbbf" stroke="#9b7c83" stroke-width="0.9"/>
<path d="M1207.4 699.2 L1207.4 703.5 A4.3 4.3 0 0 1 1207.4 694.9Z" fill="#e9c63b"/>
<path d="M1207.4 699.2 V694.9" stroke="#9b7c83" stroke-width="0.6"/>
<circle cx="1223.4" cy="702.4" r="4.3" fill="#dabbbf" stroke="#9b7c83" stroke-width="0.9"/>
<path d="M1223.4 702.4 V698.1" stroke="#9b7c83" stroke-width="0.6"/>
<circle cx="1223.4" cy="708.8" r="4.3" fill="#dabbbf" stroke="#9b7c83" stroke-width="0.9"/>
<circle cx="1223.4" cy="708.8" r="4.3" fill="#e9c63b" stroke="#c4a02a" stroke-width="0.9"/>
<circle cx="1143.1" cy="711.4" r="4.3" fill="#dabbbf" stroke="#9b7c83" stroke-width="0.9"/>
<path d="M1143.1 711.4 L1147.2 712.7 A4.3 4.3 0 1 1 1143.1 707.1Z" fill="#e9c63b"/>
<path d="M1143.1 711.4 V707.1" stroke="#9b7c83" stroke-width="0.6"/>
<circle cx="1149.5" cy="717.8" r="4.3" fill="#dabbbf" stroke="#9b7c83" stroke-width="0.9"/>
<path d="M1149.5 717.8 L1153.0 720.3 A4.3 4.3 0 1 1 1149.5 713.5Z" fill="#e9c63b"/>
<path d="M1149.5 717.8 V713.5" stroke="#9b7c83" stroke-width="0.6"/>
<circle cx="1156.0" cy="719.4" r="4.3" fill="#dabbbf" stroke="#9b7c83" stroke-width="0.9"/>
<path d="M1156.0 719.4 L1160.1 720.7 A4.3 4.3 0 1 1 1156.0 715.1Z" fill="#e9c63b"/>
<path d="M1156.0 719.4 L1156.0 715.1 A4.3 4.3 0 0 1 1158.1 715.6Z" fill="#d8524f"/>
<path d="M1156.0 719.4 V715.1" stroke="#9b7c83" stroke-width="0.6"/>
<circle cx="1173.6" cy="719.4" r="4.3" fill="#dabbbf" stroke="#9b7c83" stroke-width="0.9"/>
<path d="M1173.6 719.4 L1170.1 721.9 A4.3 4.3 0 0 1 1173.6 715.1Z" fill="#e9c63b"/>
<path d="M1173.6 719.4 V715.1" stroke="#9b7c83" stroke-width="0.6"/>
<circle cx="1183.3" cy="713.0" r="4.3" fill="#dabbbf" stroke="#9b7c83" stroke-width="0.9"/>
<path d="M1183.3 713.0 L1183.3 717.3 A4.3 4.3 0 0 1 1183.3 708.7Z" fill="#e9c63b"/>
<path d="M1183.3 713.0 V708.7" stroke="#9b7c83" stroke-width="0.6"/>
<circle cx="1197.7" cy="717.8" r="4.3" fill="#dabbbf" stroke="#9b7c83" stroke-width="0.9"/>
<path d="M1197.7 717.8 L1201.8 719.1 A4.3 4.3 0 1 1 1197.7 713.5Z" fill="#e9c63b"/>
<path d="M1197.7 717.8 V713.5" stroke="#9b7c83" stroke-width="0.6"/>
<circle cx="1094.9" cy="720.4" r="4.3" fill="#dabbbf" stroke="#9b7c83" stroke-width="0.9"/>
<path d="M1094.9 720.4 L1099.0 719.1 A4.3 4.3 0 1 1 1094.9 716.1Z" fill="#e9c63b"/>
<path d="M1094.9 720.4 V716.1" stroke="#9b7c83" stroke-width="0.6"/>
<circle cx="1072.4" cy="725.9" r="4.3" fill="#dabbbf" stroke="#9b7c83" stroke-width="0.9"/>
<path d="M1072.4 725.9 V721.6" stroke="#9b7c83" stroke-width="0.6"/>
<circle cx="1112.6" cy="732.3" r="4.3" fill="#dabbbf" stroke="#9b7c83" stroke-width="0.9"/>
<path d="M1112.6 732.3 L1116.7 731.0 A4.3 4.3 0 1 1 1112.6 728.0Z" fill="#e9c63b"/>
<path d="M1112.6 732.3 V728.0" stroke="#9b7c83" stroke-width="0.6"/>
<circle cx="1094.9" cy="737.1" r="4.3" fill="#dabbbf" stroke="#9b7c83" stroke-width="0.9"/>
<path d="M1094.9 737.1 V732.8" stroke="#9b7c83" stroke-width="0.6"/>
<circle cx="1125.4" cy="750.0" r="4.3" fill="#dabbbf" stroke="#9b7c83" stroke-width="0.9"/>
<path d="M1125.4 750.0 V745.7" stroke="#9b7c83" stroke-width="0.6"/>
<circle cx="1135.1" cy="748.4" r="4.3" fill="#dabbbf" stroke="#9b7c83" stroke-width="0.9"/>
<path d="M1135.1 748.4 L1139.2 747.1 A4.3 4.3 0 1 1 1135.1 744.1Z" fill="#e9c63b"/>
<path d="M1135.1 748.4 V744.1" stroke="#9b7c83" stroke-width="0.6"/>
<circle cx="1138.3" cy="753.2" r="4.3" fill="#dabbbf" stroke="#9b7c83" stroke-width="0.9"/>
<path d="M1138.3 753.2 V748.9" stroke="#9b7c83" stroke-width="0.6"/>
<circle cx="1146.3" cy="756.4" r="4.3" fill="#dabbbf" stroke="#9b7c83" stroke-width="0.9"/>
<circle cx="1146.3" cy="756.4" r="4.3" fill="#e9c63b" stroke="#c4a02a" stroke-width="0.9"/>
<circle cx="1156.0" cy="753.2" r="4.3" fill="#dabbbf" stroke="#9b7c83" stroke-width="0.9"/>
<path d="M1156.0 753.2 L1152.5 755.7 A4.3 4.3 0 0 1 1156.0 748.9Z" fill="#e9c63b"/>
<path d="M1156.0 753.2 V748.9" stroke="#9b7c83" stroke-width="0.6"/>
<circle cx="1154.4" cy="769.2" r="4.3" fill="#dabbbf" stroke="#9b7c83" stroke-width="0.9"/>
<path d="M1154.4 769.2 L1158.5 767.9 A4.3 4.3 0 1 1 1154.4 764.9Z" fill="#e9c63b"/>
<path d="M1154.4 769.2 V764.9" stroke="#9b7c83" stroke-width="0.6"/>
<circle cx="1162.4" cy="772.5" r="4.3" fill="#dabbbf" stroke="#9b7c83" stroke-width="0.9"/>
<path d="M1162.4 772.5 V768.2" stroke="#9b7c83" stroke-width="0.6"/>
<circle cx="1170.4" cy="772.5" r="4.3" fill="#dabbbf" stroke="#9b7c83" stroke-width="0.9"/>
<path d="M1170.4 772.5 L1174.5 773.8 A4.3 4.3 0 1 1 1170.4 768.2Z" fill="#e9c63b"/>
<path d="M1170.4 772.5 V768.2" stroke="#9b7c83" stroke-width="0.6"/>
<circle cx="1165.6" cy="778.9" r="4.3" fill="#dabbbf" stroke="#9b7c83" stroke-width="0.9"/>
<path d="M1165.6 778.9 L1169.7 777.6 A4.3 4.3 0 1 1 1165.6 774.6Z" fill="#e9c63b"/>
<path d="M1165.6 778.9 L1165.6 774.6 A4.3 4.3 0 0 1 1167.7 775.1Z" fill="#d8524f"/>
<path d="M1165.6 778.9 V774.6" stroke="#9b7c83" stroke-width="0.6"/>
<circle cx="1194.5" cy="775.7" r="4.3" fill="#dabbbf" stroke="#9b7c83" stroke-width="0.9"/>
<path d="M1194.5 775.7 L1198.6 777.0 A4.3 4.3 0 1 1 1194.5 771.4Z" fill="#e9c63b"/>
<path d="M1194.5 775.7 L1194.5 771.4 A4.3 4.3 0 0 1 1196.6 771.9Z" fill="#d8524f"/>
<path d="M1194.5 775.7 V771.4" stroke="#9b7c83" stroke-width="0.6"/>
<circle cx="1194.5" cy="788.5" r="4.3" fill="#dabbbf" stroke="#9b7c83" stroke-width="0.9"/>
<path d="M1194.5 788.5 L1190.4 787.2 A4.3 4.3 0 0 1 1194.5 784.2Z" fill="#e9c63b"/>
<path d="M1194.5 788.5 L1193.2 792.6 A4.3 4.3 0 0 1 1190.4 787.2Z" fill="#2f3a3b"/>
<path d="M1194.5 788.5 V784.2" stroke="#9b7c83" stroke-width="0.6"/>
<circle cx="1209.0" cy="790.1" r="4.3" fill="#dabbbf" stroke="#9b7c83" stroke-width="0.9"/>
<path d="M1209.0 790.1 V785.8" stroke="#9b7c83" stroke-width="0.6"/>
<circle cx="1254.0" cy="793.3" r="4.3" fill="#dabbbf" stroke="#9b7c83" stroke-width="0.9"/>
<path d="M1254.0 793.3 V789.0" stroke="#9b7c83" stroke-width="0.6"/>
<circle cx="1265.2" cy="791.7" r="4.3" fill="#dabbbf" stroke="#9b7c83" stroke-width="0.9"/>
<path d="M1265.2 791.7 L1269.3 793.0 A4.3 4.3 0 1 1 1265.2 787.4Z" fill="#e9c63b"/>
<path d="M1265.2 791.7 V787.4" stroke="#9b7c83" stroke-width="0.6"/>
<circle cx="1276.5" cy="801.4" r="4.3" fill="#dabbbf" stroke="#9b7c83" stroke-width="0.9"/>
<path d="M1276.5 801.4 L1276.5 805.7 A4.3 4.3 0 0 1 1276.5 797.1Z" fill="#e9c63b"/>
<path d="M1276.5 801.4 V797.1" stroke="#9b7c83" stroke-width="0.6"/>
<circle cx="1144.7" cy="823.9" r="4.3" fill="#dabbbf" stroke="#9b7c83" stroke-width="0.9"/>
<path d="M1144.7 823.9 V819.6" stroke="#9b7c83" stroke-width="0.6"/>
<circle cx="1109.4" cy="828.7" r="4.3" fill="#dabbbf" stroke="#9b7c83" stroke-width="0.9"/>
<path d="M1109.4 828.7 V824.4" stroke="#9b7c83" stroke-width="0.6"/>
<circle cx="1111.0" cy="836.7" r="4.3" fill="#dabbbf" stroke="#9b7c83" stroke-width="0.9"/>
<path d="M1111.0 836.7 L1114.5 839.2 A4.3 4.3 0 1 1 1111.0 832.4Z" fill="#e9c63b"/>
<path d="M1111.0 836.7 V832.4" stroke="#9b7c83" stroke-width="0.6"/>
<circle cx="1120.6" cy="849.6" r="4.3" fill="#dabbbf" stroke="#9b7c83" stroke-width="0.9"/>
<path d="M1120.6 849.6 L1116.5 848.3 A4.3 4.3 0 0 1 1120.6 845.3Z" fill="#e9c63b"/>
<path d="M1120.6 849.6 L1119.3 853.7 A4.3 4.3 0 0 1 1116.5 848.3Z" fill="#2f3a3b"/>
<path d="M1120.6 849.6 V845.3" stroke="#9b7c83" stroke-width="0.6"/>
<circle cx="1130.3" cy="854.4" r="4.3" fill="#dabbbf" stroke="#9b7c83" stroke-width="0.9"/>
<path d="M1130.3 854.4 L1129.0 858.5 A4.3 4.3 0 0 1 1130.3 850.1Z" fill="#e9c63b"/>
<path d="M1130.3 854.4 V850.1" stroke="#9b7c83" stroke-width="0.6"/>
<circle cx="1152.8" cy="852.8" r="4.3" fill="#dabbbf" stroke="#9b7c83" stroke-width="0.9"/>
<path d="M1152.8 852.8 V848.5" stroke="#9b7c83" stroke-width="0.6"/>
<circle cx="1157.6" cy="860.8" r="4.3" fill="#dabbbf" stroke="#9b7c83" stroke-width="0.9"/>
<path d="M1157.6 860.8 L1161.1 863.3 A4.3 4.3 0 1 1 1157.6 856.5Z" fill="#e9c63b"/>
<path d="M1157.6 860.8 L1157.6 856.5 A4.3 4.3 0 0 1 1159.7 857.0Z" fill="#d8524f"/>
<path d="M1157.6 860.8 V856.5" stroke="#9b7c83" stroke-width="0.6"/>
<circle cx="1149.5" cy="881.7" r="4.3" fill="#dabbbf" stroke="#9b7c83" stroke-width="0.9"/>
<path d="M1149.5 881.7 L1153.0 884.2 A4.3 4.3 0 1 1 1149.5 877.4Z" fill="#e9c63b"/>
<path d="M1149.5 881.7 V877.4" stroke="#9b7c83" stroke-width="0.6"/>
<circle cx="1220.2" cy="843.1" r="4.3" fill="#dabbbf" stroke="#9b7c83" stroke-width="0.9"/>
<path d="M1220.2 843.1 L1223.7 845.6 A4.3 4.3 0 1 1 1220.2 838.8Z" fill="#e9c63b"/>
<path d="M1220.2 843.1 V838.8" stroke="#9b7c83" stroke-width="0.6"/>
<circle cx="1236.3" cy="844.8" r="4.3" fill="#dabbbf" stroke="#9b7c83" stroke-width="0.9"/>
<path d="M1236.3 844.8 L1232.2 843.5 A4.3 4.3 0 0 1 1236.3 840.5Z" fill="#e9c63b"/>
<path d="M1236.3 844.8 L1235.0 848.9 A4.3 4.3 0 0 1 1232.2 843.5Z" fill="#2f3a3b"/>
<path d="M1236.3 844.8 V840.5" stroke="#9b7c83" stroke-width="0.6"/>
<circle cx="1234.7" cy="827.1" r="4.3" fill="#dabbbf" stroke="#9b7c83" stroke-width="0.9"/>
<path d="M1234.7 827.1 L1238.8 828.4 A4.3 4.3 0 1 1 1234.7 822.8Z" fill="#e9c63b"/>
<path d="M1234.7 827.1 L1234.7 822.8 A4.3 4.3 0 0 1 1236.8 823.3Z" fill="#d8524f"/>
<path d="M1234.7 827.1 V822.8" stroke="#9b7c83" stroke-width="0.6"/>
<circle cx="1239.5" cy="833.5" r="4.3" fill="#dabbbf" stroke="#9b7c83" stroke-width="0.9"/>
<path d="M1239.5 833.5 L1236.0 836.0 A4.3 4.3 0 0 1 1239.5 829.2Z" fill="#e9c63b"/>
<path d="M1239.5 833.5 L1239.5 829.2 A4.3 4.3 0 0 1 1241.6 829.7Z" fill="#d8524f"/>
<path d="M1239.5 833.5 V829.2" stroke="#9b7c83" stroke-width="0.6"/>
<circle cx="1258.8" cy="864.0" r="4.3" fill="#dabbbf" stroke="#9b7c83" stroke-width="0.9"/>
<path d="M1258.8 864.0 V859.7" stroke="#9b7c83" stroke-width="0.6"/>
<circle cx="1255.6" cy="873.7" r="4.3" fill="#dabbbf" stroke="#9b7c83" stroke-width="0.9"/>
<path d="M1255.6 873.7 L1251.5 872.4 A4.3 4.3 0 0 1 1255.6 869.4Z" fill="#e9c63b"/>
<path d="M1255.6 873.7 L1254.3 877.8 A4.3 4.3 0 0 1 1251.5 872.4Z" fill="#2f3a3b"/>
<path d="M1255.6 873.7 V869.4" stroke="#9b7c83" stroke-width="0.6"/>
<circle cx="1250.8" cy="880.1" r="4.3" fill="#dabbbf" stroke="#9b7c83" stroke-width="0.9"/>
<path d="M1250.8 880.1 L1254.3 882.6 A4.3 4.3 0 1 1 1250.8 875.8Z" fill="#e9c63b"/>
<path d="M1250.8 880.1 V875.8" stroke="#9b7c83" stroke-width="0.6"/>
<circle cx="1276.5" cy="864.0" r="4.3" fill="#dabbbf" stroke="#9b7c83" stroke-width="0.9"/>
<path d="M1276.5 864.0 V859.7" stroke="#9b7c83" stroke-width="0.6"/>
<circle cx="1170.4" cy="896.2" r="4.3" fill="#dabbbf" stroke="#9b7c83" stroke-width="0.9"/>
<path d="M1170.4 896.2 V891.9" stroke="#9b7c83" stroke-width="0.6"/>
<circle cx="1165.6" cy="901.0" r="4.3" fill="#dabbbf" stroke="#9b7c83" stroke-width="0.9"/>
<path d="M1165.6 901.0 L1168.1 904.5 A4.3 4.3 0 1 1 1165.6 896.7Z" fill="#e9c63b"/>
<path d="M1165.6 901.0 L1165.6 896.7 A4.3 4.3 0 0 1 1167.7 897.2Z" fill="#d8524f"/>
<path d="M1165.6 901.0 V896.7" stroke="#9b7c83" stroke-width="0.6"/>
<circle cx="1164.0" cy="910.6" r="4.3" fill="#dabbbf" stroke="#9b7c83" stroke-width="0.9"/>
<path d="M1164.0 910.6 L1168.1 911.9 A4.3 4.3 0 1 1 1164.0 906.3Z" fill="#e9c63b"/>
<path d="M1164.0 910.6 L1164.0 906.3 A4.3 4.3 0 0 1 1166.1 906.8Z" fill="#d8524f"/>
<path d="M1164.0 910.6 V906.3" stroke="#9b7c83" stroke-width="0.6"/>
<circle cx="1170.4" cy="912.2" r="4.3" fill="#dabbbf" stroke="#9b7c83" stroke-width="0.9"/>
<path d="M1170.4 912.2 L1173.9 914.7 A4.3 4.3 0 1 1 1170.4 907.9Z" fill="#e9c63b"/>
<path d="M1170.4 912.2 L1170.4 907.9 A4.3 4.3 0 0 1 1172.5 908.4Z" fill="#d8524f"/>
<path d="M1170.4 912.2 V907.9" stroke="#9b7c83" stroke-width="0.6"/>
<circle cx="1180.1" cy="913.8" r="4.3" fill="#dabbbf" stroke="#9b7c83" stroke-width="0.9"/>
<path d="M1180.1 913.8 V909.5" stroke="#9b7c83" stroke-width="0.6"/>
<circle cx="1159.2" cy="918.7" r="4.3" fill="#dabbbf" stroke="#9b7c83" stroke-width="0.9"/>
<path d="M1159.2 918.7 V914.4" stroke="#9b7c83" stroke-width="0.6"/>
<circle cx="1156.0" cy="921.9" r="4.3" fill="#dabbbf" stroke="#9b7c83" stroke-width="0.9"/>
<path d="M1156.0 921.9 L1151.9 920.6 A4.3 4.3 0 0 1 1156.0 917.6Z" fill="#e9c63b"/>
<path d="M1156.0 921.9 L1154.7 926.0 A4.3 4.3 0 0 1 1151.9 920.6Z" fill="#2f3a3b"/>
<path d="M1156.0 921.9 V917.6" stroke="#9b7c83" stroke-width="0.6"/>
<circle cx="1201.0" cy="909.0" r="4.3" fill="#dabbbf" stroke="#9b7c83" stroke-width="0.9"/>
<path d="M1201.0 909.0 V904.7" stroke="#9b7c83" stroke-width="0.6"/>
<circle cx="1217.0" cy="909.0" r="4.3" fill="#dabbbf" stroke="#9b7c83" stroke-width="0.9"/>
<path d="M1217.0 909.0 L1220.5 911.5 A4.3 4.3 0 1 1 1217.0 904.7Z" fill="#e9c63b"/>
<path d="M1217.0 909.0 V904.7" stroke="#9b7c83" stroke-width="0.6"/>
<circle cx="1223.4" cy="902.6" r="4.3" fill="#dabbbf" stroke="#9b7c83" stroke-width="0.9"/>
<path d="M1223.4 902.6 L1219.9 905.1 A4.3 4.3 0 0 1 1223.4 898.3Z" fill="#e9c63b"/>
<path d="M1223.4 902.6 V898.3" stroke="#9b7c83" stroke-width="0.6"/>
<circle cx="1233.1" cy="899.4" r="4.3" fill="#dabbbf" stroke="#9b7c83" stroke-width="0.9"/>
<path d="M1233.1 899.4 V895.1" stroke="#9b7c83" stroke-width="0.6"/>
<circle cx="1225.1" cy="913.8" r="4.3" fill="#dabbbf" stroke="#9b7c83" stroke-width="0.9"/>
<path d="M1225.1 913.8 L1221.0 912.5 A4.3 4.3 0 0 1 1225.1 909.5Z" fill="#e9c63b"/>
<path d="M1225.1 913.8 L1223.8 917.9 A4.3 4.3 0 0 1 1221.0 912.5Z" fill="#2f3a3b"/>
<path d="M1225.1 913.8 V909.5" stroke="#9b7c83" stroke-width="0.6"/>
<circle cx="1244.3" cy="917.1" r="4.3" fill="#dabbbf" stroke="#9b7c83" stroke-width="0.9"/>
<path d="M1244.3 917.1 V912.8" stroke="#9b7c83" stroke-width="0.6"/>
<circle cx="1250.8" cy="905.8" r="4.3" fill="#dabbbf" stroke="#9b7c83" stroke-width="0.9"/>
<path d="M1250.8 905.8 L1254.3 908.3 A4.3 4.3 0 1 1 1250.8 901.5Z" fill="#e9c63b"/>
<path d="M1250.8 905.8 V901.5" stroke="#9b7c83" stroke-width="0.6"/>
<circle cx="1257.2" cy="902.6" r="4.3" fill="#dabbbf" stroke="#9b7c83" stroke-width="0.9"/>
<path d="M1257.2 902.6 V898.3" stroke="#9b7c83" stroke-width="0.6"/>
<circle cx="1276.5" cy="899.4" r="4.3" fill="#dabbbf" stroke="#9b7c83" stroke-width="0.9"/>
<path d="M1276.5 899.4 L1272.4 898.1 A4.3 4.3 0 0 1 1276.5 895.1Z" fill="#e9c63b"/>
<path d="M1276.5 899.4 L1275.2 903.5 A4.3 4.3 0 0 1 1272.4 898.1Z" fill="#2f3a3b"/>
<path d="M1276.5 899.4 V895.1" stroke="#9b7c83" stroke-width="0.6"/>
<circle cx="1189.7" cy="926.7" r="4.3" fill="#dabbbf" stroke="#9b7c83" stroke-width="0.9"/>
<circle cx="1189.7" cy="926.7" r="4.3" fill="#e9c63b" stroke="#c4a02a" stroke-width="0.9"/>
<circle cx="1191.3" cy="934.7" r="4.3" fill="#dabbbf" stroke="#9b7c83" stroke-width="0.9"/>
<path d="M1191.3 934.7 L1187.8 937.2 A4.3 4.3 0 0 1 1191.3 930.4Z" fill="#e9c63b"/>
<path d="M1191.3 934.7 L1191.3 930.4 A4.3 4.3 0 0 1 1193.4 930.9Z" fill="#d8524f"/>
<path d="M1191.3 934.7 V930.4" stroke="#9b7c83" stroke-width="0.6"/>
<circle cx="1218.6" cy="928.3" r="4.3" fill="#dabbbf" stroke="#9b7c83" stroke-width="0.9"/>
<path d="M1218.6 928.3 L1218.6 932.6 A4.3 4.3 0 0 1 1218.6 924.0Z" fill="#e9c63b"/>
<path d="M1218.6 928.3 V924.0" stroke="#9b7c83" stroke-width="0.6"/>
<circle cx="1241.1" cy="928.3" r="4.3" fill="#dabbbf" stroke="#9b7c83" stroke-width="0.9"/>
<path d="M1241.1 928.3 L1237.0 927.0 A4.3 4.3 0 0 1 1241.1 924.0Z" fill="#e9c63b"/>
<path d="M1241.1 928.3 L1239.8 932.4 A4.3 4.3 0 0 1 1237.0 927.0Z" fill="#2f3a3b"/>
<path d="M1241.1 928.3 V924.0" stroke="#9b7c83" stroke-width="0.6"/>
<circle cx="1245.9" cy="934.7" r="4.3" fill="#dabbbf" stroke="#9b7c83" stroke-width="0.9"/>
<path d="M1245.9 934.7 V930.4" stroke="#9b7c83" stroke-width="0.6"/>
<circle cx="1157.6" cy="944.4" r="4.3" fill="#dabbbf" stroke="#9b7c83" stroke-width="0.9"/>
<path d="M1157.6 944.4 V940.1" stroke="#9b7c83" stroke-width="0.6"/>
<circle cx="1215.4" cy="946.0" r="4.3" fill="#dabbbf" stroke="#9b7c83" stroke-width="0.9"/>
<path d="M1215.4 946.0 L1219.5 944.7 A4.3 4.3 0 1 1 1215.4 941.7Z" fill="#e9c63b"/>
<path d="M1215.4 946.0 V941.7" stroke="#9b7c83" stroke-width="0.6"/>
<circle cx="1237.9" cy="965.3" r="4.3" fill="#dabbbf" stroke="#9b7c83" stroke-width="0.9"/>
<circle cx="1237.9" cy="965.3" r="4.3" fill="#e9c63b" stroke="#c4a02a" stroke-width="0.9"/>
<circle cx="1254.0" cy="960.4" r="4.3" fill="#dabbbf" stroke="#9b7c83" stroke-width="0.9"/>
<path d="M1254.0 960.4 L1256.5 963.9 A4.3 4.3 0 1 1 1254.0 956.1Z" fill="#e9c63b"/>
<path d="M1254.0 960.4 V956.1" stroke="#9b7c83" stroke-width="0.6"/>
<circle cx="1258.8" cy="966.9" r="4.3" fill="#dabbbf" stroke="#9b7c83" stroke-width="0.9"/>
<path d="M1258.8 966.9 V962.6" stroke="#9b7c83" stroke-width="0.6"/>
<circle cx="1426.2" cy="627.9" r="4.3" fill="#dabbbf" stroke="#9b7c83" stroke-width="0.9"/>
<path d="M1426.2 627.9 L1430.3 629.2 A4.3 4.3 0 1 1 1426.2 623.6Z" fill="#e9c63b"/>
<path d="M1426.2 627.9 L1426.2 623.6 A4.3 4.3 0 0 1 1428.7 624.4Z" fill="#d8524f"/>
<path d="M1426.2 627.9 V623.6" stroke="#9b7c83" stroke-width="0.6"/>
<circle cx="1334.6" cy="650.3" r="4.3" fill="#dabbbf" stroke="#9b7c83" stroke-width="0.9"/>
<path d="M1334.6 650.3 L1338.7 651.6 A4.3 4.3 0 1 1 1334.6 646.0Z" fill="#e9c63b"/>
<path d="M1334.6 650.3 L1334.6 646.0 A4.3 4.3 0 0 1 1337.1 646.8Z" fill="#d8524f"/>
<path d="M1334.6 650.3 V646.0" stroke="#9b7c83" stroke-width="0.6"/>
<circle cx="1404.7" cy="660.0" r="4.3" fill="#dabbbf" stroke="#9b7c83" stroke-width="0.9"/>
<path d="M1404.7 660.0 L1408.8 661.3 A4.3 4.3 0 1 1 1404.7 655.7Z" fill="#e9c63b"/>
<path d="M1404.7 660.0 L1404.7 655.7 A4.3 4.3 0 0 1 1407.2 656.5Z" fill="#d8524f"/>
<path d="M1404.7 660.0 V655.7" stroke="#9b7c83" stroke-width="0.6"/>
<circle cx="1431.7" cy="670.3" r="4.3" fill="#dabbbf" stroke="#9b7c83" stroke-width="0.9"/>
<path d="M1431.7 670.3 L1431.7 674.6 A4.3 4.3 0 0 1 1431.7 666.0Z" fill="#e9c63b"/>
<path d="M1431.7 670.3 V666.0" stroke="#9b7c83" stroke-width="0.6"/>
<circle cx="1325.0" cy="679.3" r="4.3" fill="#dabbbf" stroke="#9b7c83" stroke-width="0.9"/>
<circle cx="1325.0" cy="679.3" r="4.3" fill="#e9c63b" stroke="#c4a02a" stroke-width="0.9"/>
<circle cx="1309.9" cy="752.2" r="4.3" fill="#dabbbf" stroke="#9b7c83" stroke-width="0.9"/>
<path d="M1309.9 752.2 L1314.0 750.9 A4.3 4.3 0 1 1 1309.9 747.9Z" fill="#e9c63b"/>
<path d="M1309.9 752.2 V747.9" stroke="#9b7c83" stroke-width="0.6"/>
<circle cx="1319.2" cy="772.5" r="4.3" fill="#dabbbf" stroke="#9b7c83" stroke-width="0.9"/>
<path d="M1319.2 772.5 V768.2" stroke="#9b7c83" stroke-width="0.6"/>
<circle cx="1312.1" cy="777.3" r="4.3" fill="#dabbbf" stroke="#9b7c83" stroke-width="0.9"/>
<path d="M1312.1 777.3 L1312.1 781.6 A4.3 4.3 0 0 1 1312.1 773.0Z" fill="#e9c63b"/>
<path d="M1312.1 777.3 L1312.1 773.0 A4.3 4.3 0 0 1 1314.6 773.8Z" fill="#d8524f"/>
<path d="M1312.1 777.3 V773.0" stroke="#9b7c83" stroke-width="0.6"/>
<circle cx="1304.1" cy="782.1" r="4.3" fill="#dabbbf" stroke="#9b7c83" stroke-width="0.9"/>
<circle cx="1304.1" cy="782.1" r="4.3" fill="#e9c63b" stroke="#c4a02a" stroke-width="0.9"/>
<circle cx="1283.2" cy="798.2" r="4.3" fill="#dabbbf" stroke="#9b7c83" stroke-width="0.9"/>
<path d="M1283.2 798.2 L1287.3 799.5 A4.3 4.3 0 1 1 1283.2 793.9Z" fill="#e9c63b"/>
<path d="M1283.2 798.2 V793.9" stroke="#9b7c83" stroke-width="0.6"/>
<circle cx="1323.4" cy="799.8" r="4.3" fill="#dabbbf" stroke="#9b7c83" stroke-width="0.9"/>
<path d="M1323.4 799.8 L1327.5 801.1 A4.3 4.3 0 1 1 1323.4 795.5Z" fill="#e9c63b"/>
<path d="M1323.4 799.8 L1323.4 795.5 A4.3 4.3 0 0 1 1325.9 796.3Z" fill="#d8524f"/>
<path d="M1323.4 799.8 V795.5" stroke="#9b7c83" stroke-width="0.6"/>
<circle cx="1313.7" cy="803.0" r="4.3" fill="#dabbbf" stroke="#9b7c83" stroke-width="0.9"/>
<circle cx="1313.7" cy="803.0" r="4.3" fill="#e9c63b" stroke="#c4a02a" stroke-width="0.9"/>
<path d="M1313.7 803.0 L1313.7 798.7 A4.3 4.3 0 0 1 1316.2 799.5Z" fill="#d8524f"/>
<circle cx="1296.1" cy="809.4" r="4.3" fill="#dabbbf" stroke="#9b7c83" stroke-width="0.9"/>
<path d="M1296.1 809.4 L1300.2 810.7 A4.3 4.3 0 1 1 1296.1 805.1Z" fill="#e9c63b"/>
<path d="M1296.1 809.4 V805.1" stroke="#9b7c83" stroke-width="0.6"/>
<circle cx="1304.1" cy="811.0" r="4.3" fill="#dabbbf" stroke="#9b7c83" stroke-width="0.9"/>
<path d="M1304.1 811.0 L1308.2 809.7 A4.3 4.3 0 1 1 1304.1 806.7Z" fill="#e9c63b"/>
<path d="M1304.1 811.0 V806.7" stroke="#9b7c83" stroke-width="0.6"/>
<circle cx="1284.8" cy="819.0" r="4.3" fill="#dabbbf" stroke="#9b7c83" stroke-width="0.9"/>
<path d="M1284.8 819.0 L1284.8 823.3 A4.3 4.3 0 0 1 1284.8 814.7Z" fill="#e9c63b"/>
<path d="M1284.8 819.0 L1284.8 814.7 A4.3 4.3 0 0 1 1287.3 815.5Z" fill="#d8524f"/>
<path d="M1284.8 819.0 V814.7" stroke="#9b7c83" stroke-width="0.6"/>
<circle cx="1331.4" cy="828.7" r="4.3" fill="#dabbbf" stroke="#9b7c83" stroke-width="0.9"/>
<path d="M1331.4 828.7 V824.4" stroke="#9b7c83" stroke-width="0.6"/>
<circle cx="1342.7" cy="836.7" r="4.3" fill="#dabbbf" stroke="#9b7c83" stroke-width="0.9"/>
<path d="M1342.7 836.7 L1342.7 841.0 A4.3 4.3 0 0 1 1342.7 832.4Z" fill="#e9c63b"/>
<path d="M1342.7 836.7 L1342.7 832.4 A4.3 4.3 0 0 1 1345.2 833.2Z" fill="#d8524f"/>
<path d="M1342.7 836.7 V832.4" stroke="#9b7c83" stroke-width="0.6"/>
<circle cx="1347.5" cy="836.7" r="4.3" fill="#dabbbf" stroke="#9b7c83" stroke-width="0.9"/>
<path d="M1347.5 836.7 L1351.0 839.2 A4.3 4.3 0 1 1 1347.5 832.4Z" fill="#e9c63b"/>
<path d="M1347.5 836.7 L1347.5 832.4 A4.3 4.3 0 0 1 1350.0 833.2Z" fill="#d8524f"/>
<path d="M1347.5 836.7 V832.4" stroke="#9b7c83" stroke-width="0.6"/>
<circle cx="1353.9" cy="846.4" r="4.3" fill="#dabbbf" stroke="#9b7c83" stroke-width="0.9"/>
<path d="M1353.9 846.4 L1358.0 847.7 A4.3 4.3 0 1 1 1353.9 842.1Z" fill="#e9c63b"/>
<path d="M1353.9 846.4 V842.1" stroke="#9b7c83" stroke-width="0.6"/>
<circle cx="1305.7" cy="862.4" r="4.3" fill="#dabbbf" stroke="#9b7c83" stroke-width="0.9"/>
<path d="M1305.7 862.4 L1309.8 861.1 A4.3 4.3 0 1 1 1305.7 858.1Z" fill="#e9c63b"/>
<path d="M1305.7 862.4 V858.1" stroke="#9b7c83" stroke-width="0.6"/>
<circle cx="1283.2" cy="865.6" r="4.3" fill="#dabbbf" stroke="#9b7c83" stroke-width="0.9"/>
<path d="M1283.2 865.6 L1285.7 869.1 A4.3 4.3 0 1 1 1283.2 861.3Z" fill="#e9c63b"/>
<path d="M1283.2 865.6 V861.3" stroke="#9b7c83" stroke-width="0.6"/>
<circle cx="1371.6" cy="877.9" r="4.3" fill="#dabbbf" stroke="#9b7c83" stroke-width="0.9"/>
<path d="M1371.6 877.9 V873.6" stroke="#9b7c83" stroke-width="0.6"/>
<circle cx="1450.3" cy="883.3" r="4.3" fill="#dabbbf" stroke="#9b7c83" stroke-width="0.9"/>
<path d="M1450.3 883.3 L1450.3 887.6 A4.3 4.3 0 0 1 1450.3 879.0Z" fill="#e9c63b"/>
<path d="M1450.3 883.3 V879.0" stroke="#9b7c83" stroke-width="0.6"/>
<circle cx="1292.9" cy="897.8" r="4.3" fill="#dabbbf" stroke="#9b7c83" stroke-width="0.9"/>
<path d="M1292.9 897.8 L1292.9 902.1 A4.3 4.3 0 0 1 1292.9 893.5Z" fill="#e9c63b"/>
<path d="M1292.9 897.8 L1292.9 893.5 A4.3 4.3 0 0 1 1295.4 894.3Z" fill="#d8524f"/>
<path d="M1292.9 897.8 V893.5" stroke="#9b7c83" stroke-width="0.6"/>
<circle cx="1320.2" cy="937.9" r="4.3" fill="#dabbbf" stroke="#9b7c83" stroke-width="0.9"/>
<path d="M1320.2 937.9 L1320.2 942.2 A4.3 4.3 0 0 1 1320.2 933.6Z" fill="#e9c63b"/>
<path d="M1320.2 937.9 V933.6" stroke="#9b7c83" stroke-width="0.6"/>
<circle cx="1325.0" cy="944.4" r="4.3" fill="#dabbbf" stroke="#9b7c83" stroke-width="0.9"/>
<path d="M1325.0 944.4 L1328.5 946.9 A4.3 4.3 0 1 1 1325.0 940.1Z" fill="#e9c63b"/>
<path d="M1325.0 944.4 L1325.0 940.1 A4.3 4.3 0 0 1 1327.5 940.9Z" fill="#d8524f"/>
<path d="M1325.0 944.4 V940.1" stroke="#9b7c83" stroke-width="0.6"/>
<circle cx="1387.6" cy="951.8" r="4.3" fill="#dabbbf" stroke="#9b7c83" stroke-width="0.9"/>
<path d="M1387.6 951.8 V947.5" stroke="#9b7c83" stroke-width="0.6"/>
<circle cx="1451.9" cy="949.2" r="4.3" fill="#dabbbf" stroke="#9b7c83" stroke-width="0.9"/>
<path d="M1451.9 949.2 L1456.0 947.9 A4.3 4.3 0 1 1 1451.9 944.9Z" fill="#e9c63b"/>
<path d="M1451.9 949.2 V944.9" stroke="#9b7c83" stroke-width="0.6"/>
<circle cx="1370.0" cy="968.5" r="4.3" fill="#dabbbf" stroke="#9b7c83" stroke-width="0.9"/>
<path d="M1370.0 968.5 L1374.1 967.2 A4.3 4.3 0 1 1 1370.0 964.2Z" fill="#e9c63b"/>
<path d="M1370.0 968.5 V964.2" stroke="#9b7c83" stroke-width="0.6"/>
<circle cx="1492.1" cy="742.9" r="4.3" fill="#dabbbf" stroke="#9b7c83" stroke-width="0.9"/>
<circle cx="1492.1" cy="742.9" r="4.3" fill="#e9c63b" stroke="#c4a02a" stroke-width="0.9"/>
<path d="M1492.1 742.9 L1492.1 738.6 A4.3 4.3 0 0 1 1494.6 739.4Z" fill="#d8524f"/>
<circle cx="1644.1" cy="764.4" r="4.3" fill="#dabbbf" stroke="#9b7c83" stroke-width="0.9"/>
<path d="M1644.1 764.4 L1647.6 766.9 A4.3 4.3 0 1 1 1644.1 760.1Z" fill="#e9c63b"/>
<path d="M1644.1 764.4 L1644.1 760.1 A4.3 4.3 0 0 1 1646.6 760.9Z" fill="#d8524f"/>
<path d="M1644.1 764.4 V760.1" stroke="#9b7c83" stroke-width="0.6"/>
<circle cx="1706.4" cy="819.7" r="4.3" fill="#dabbbf" stroke="#9b7c83" stroke-width="0.9"/>
<path d="M1706.4 819.7 L1710.5 818.4 A4.3 4.3 0 1 1 1706.4 815.4Z" fill="#e9c63b"/>
<path d="M1706.4 819.7 V815.4" stroke="#9b7c83" stroke-width="0.6"/>
<circle cx="1423.0" cy="623.0" r="4.3" fill="#dabbbf" stroke="#9b7c83" stroke-width="0.9"/>
<path d="M1423.0 623.0 L1426.5 625.5 A4.3 4.3 0 1 1 1423.0 618.7Z" fill="#e9c63b"/>
<path d="M1423.0 623.0 L1423.0 618.7 A4.3 4.3 0 0 1 1425.5 619.5Z" fill="#d8524f"/>
<path d="M1423.0 623.0 V618.7" stroke="#9b7c83" stroke-width="0.6"/>
<circle cx="958.9" cy="682.4" r="4.3" fill="#dabbbf" stroke="#9b7c83" stroke-width="0.9"/>
<path d="M958.9 682.4 L954.8 681.1 A4.3 4.3 0 0 1 958.9 678.1Z" fill="#e9c63b"/>
<path d="M958.9 682.4 L955.4 684.9 A4.3 4.3 0 0 1 954.8 681.1Z" fill="#2f3a3b"/>
<path d="M958.9 682.4 V678.1" stroke="#9b7c83" stroke-width="0.6"/>
<circle cx="959.2" cy="752.5" r="4.3" fill="#dabbbf" stroke="#9b7c83" stroke-width="0.9"/>
<path d="M959.2 752.5 V748.2" stroke="#9b7c83" stroke-width="0.6"/>
<circle cx="946.6" cy="706.0" r="4.3" fill="#dabbbf" stroke="#9b7c83" stroke-width="0.9"/>
<path d="M946.6 706.0 V701.7" stroke="#9b7c83" stroke-width="0.6"/>
<circle cx="966.2" cy="724.3" r="4.3" fill="#dabbbf" stroke="#9b7c83" stroke-width="0.9"/>
<path d="M966.2 724.3 V720.0" stroke="#9b7c83" stroke-width="0.6"/>
<circle cx="977.7" cy="751.8" r="4.3" fill="#dabbbf" stroke="#9b7c83" stroke-width="0.9"/>
<path d="M977.7 751.8 L974.2 749.3 A4.3 4.3 0 0 1 977.7 747.5Z" fill="#2f3a3b"/>
<path d="M977.7 751.8 V747.5" stroke="#9b7c83" stroke-width="0.6"/>
<circle cx="951.3" cy="739.7" r="4.3" fill="#dabbbf" stroke="#9b7c83" stroke-width="0.9"/>
<path d="M951.3 739.7 V735.4" stroke="#9b7c83" stroke-width="0.6"/>
<circle cx="965.5" cy="702.3" r="4.3" fill="#dabbbf" stroke="#9b7c83" stroke-width="0.9"/>
<path d="M965.5 702.3 L962.0 699.8 A4.3 4.3 0 0 1 965.5 698.0Z" fill="#2f3a3b"/>
<path d="M965.5 702.3 V698.0" stroke="#9b7c83" stroke-width="0.6"/>
<circle cx="977.3" cy="704.6" r="4.3" fill="#dabbbf" stroke="#9b7c83" stroke-width="0.9"/>
<path d="M977.3 704.6 L978.6 708.7 A4.3 4.3 0 1 1 977.3 700.3Z" fill="#e9c63b"/>
<path d="M977.3 704.6 V700.3" stroke="#9b7c83" stroke-width="0.6"/>
<circle cx="976.9" cy="725.5" r="4.3" fill="#dabbbf" stroke="#9b7c83" stroke-width="0.9"/>
<path d="M976.9 725.5 L972.8 726.8 A4.3 4.3 0 0 1 976.9 721.2Z" fill="#e9c63b"/>
<path d="M976.9 725.5 L975.6 729.6 A4.3 4.3 0 0 1 972.8 726.8Z" fill="#2f3a3b"/>
<path d="M976.9 725.5 V721.2" stroke="#9b7c83" stroke-width="0.6"/>
<circle cx="948.9" cy="707.1" r="4.3" fill="#dabbbf" stroke="#9b7c83" stroke-width="0.9"/>
<path d="M948.9 707.1 L953.0 708.4 A4.3 4.3 0 1 1 948.9 702.8Z" fill="#e9c63b"/>
<path d="M948.9 707.1 L948.9 702.8 A4.3 4.3 0 0 1 951.4 703.6Z" fill="#d8524f"/>
<path d="M948.9 707.1 V702.8" stroke="#9b7c83" stroke-width="0.6"/>
<circle cx="952.3" cy="695.7" r="4.3" fill="#dabbbf" stroke="#9b7c83" stroke-width="0.9"/>
<path d="M952.3 695.7 V691.4" stroke="#9b7c83" stroke-width="0.6"/>
<circle cx="977.4" cy="685.9" r="4.3" fill="#dabbbf" stroke="#9b7c83" stroke-width="0.9"/>
<path d="M977.4 685.9 L979.9 689.4 A4.3 4.3 0 1 1 977.4 681.6Z" fill="#e9c63b"/>
<path d="M977.4 685.9 V681.6" stroke="#9b7c83" stroke-width="0.6"/>
<circle cx="957.7" cy="710.9" r="4.3" fill="#dabbbf" stroke="#9b7c83" stroke-width="0.9"/>
<path d="M957.7 710.9 L954.2 713.4 A4.3 4.3 0 0 1 957.7 706.6Z" fill="#2f3a3b"/>
<path d="M957.7 710.9 V706.6" stroke="#9b7c83" stroke-width="0.6"/>
<circle cx="941.7" cy="718.2" r="4.3" fill="#dabbbf" stroke="#9b7c83" stroke-width="0.9"/>
<path d="M941.7 718.2 L937.6 716.9 A4.3 4.3 0 0 1 941.7 713.9Z" fill="#e9c63b"/>
<path d="M941.7 718.2 L940.4 722.3 A4.3 4.3 0 0 1 937.6 716.9Z" fill="#2f3a3b"/>
<path d="M941.7 718.2 V713.9" stroke="#9b7c83" stroke-width="0.6"/>
<circle cx="965.2" cy="674.3" r="4.3" fill="#dabbbf" stroke="#9b7c83" stroke-width="0.9"/>
<path d="M965.2 674.3 V670.0" stroke="#9b7c83" stroke-width="0.6"/>
<circle cx="976.0" cy="680.5" r="4.3" fill="#dabbbf" stroke="#9b7c83" stroke-width="0.9"/>
<path d="M976.0 680.5 V676.2" stroke="#9b7c83" stroke-width="0.6"/>
<circle cx="972.7" cy="719.1" r="4.3" fill="#dabbbf" stroke="#9b7c83" stroke-width="0.9"/>
<path d="M972.7 719.1 V714.8" stroke="#9b7c83" stroke-width="0.6"/>
<circle cx="969.6" cy="710.1" r="4.3" fill="#dabbbf" stroke="#9b7c83" stroke-width="0.9"/>
<path d="M969.6 710.1 L965.5 711.4 A4.3 4.3 0 0 1 969.6 705.8Z" fill="#e9c63b"/>
<path d="M969.6 710.1 L973.1 712.6 A4.3 4.3 0 0 1 965.5 711.4Z" fill="#2f3a3b"/>
<path d="M969.6 710.1 V705.8" stroke="#9b7c83" stroke-width="0.6"/>
<circle cx="941.7" cy="739.0" r="4.3" fill="#dabbbf" stroke="#9b7c83" stroke-width="0.9"/>
<path d="M941.7 739.0 V734.7" stroke="#9b7c83" stroke-width="0.6"/>
<circle cx="959.5" cy="704.4" r="4.3" fill="#dabbbf" stroke="#9b7c83" stroke-width="0.9"/>
<path d="M959.5 704.4 V700.1" stroke="#9b7c83" stroke-width="0.6"/>
<circle cx="959.2" cy="746.5" r="4.3" fill="#dabbbf" stroke="#9b7c83" stroke-width="0.9"/>
<path d="M959.2 746.5 V742.2" stroke="#9b7c83" stroke-width="0.6"/>
<circle cx="962.2" cy="738.0" r="4.3" fill="#dabbbf" stroke="#9b7c83" stroke-width="0.9"/>
<path d="M962.2 738.0 L963.5 742.1 A4.3 4.3 0 1 1 962.2 733.7Z" fill="#e9c63b"/>
<path d="M962.2 738.0 V733.7" stroke="#9b7c83" stroke-width="0.6"/>
<circle cx="977.9" cy="726.6" r="4.3" fill="#dabbbf" stroke="#9b7c83" stroke-width="0.9"/>
<path d="M977.9 726.6 V722.3" stroke="#9b7c83" stroke-width="0.6"/>
<circle cx="941.1" cy="698.4" r="4.3" fill="#dabbbf" stroke="#9b7c83" stroke-width="0.9"/>
<circle cx="941.1" cy="698.4" r="4.3" fill="#e9c63b" stroke="#c4a02a" stroke-width="0.9"/>
<circle cx="960.4" cy="688.3" r="4.3" fill="#dabbbf" stroke="#9b7c83" stroke-width="0.9"/>
<path d="M960.4 688.3 L956.1 688.3 A4.3 4.3 0 0 1 960.4 684.0Z" fill="#2f3a3b"/>
<path d="M960.4 688.3 V684.0" stroke="#9b7c83" stroke-width="0.6"/>
<circle cx="970.9" cy="710.9" r="4.3" fill="#dabbbf" stroke="#9b7c83" stroke-width="0.9"/>
<path d="M970.9 710.9 V706.6" stroke="#9b7c83" stroke-width="0.6"/>
<circle cx="966.6" cy="672.7" r="4.3" fill="#dabbbf" stroke="#9b7c83" stroke-width="0.9"/>
<path d="M966.6 672.7 V668.4" stroke="#9b7c83" stroke-width="0.6"/>
<circle cx="947.6" cy="730.7" r="4.3" fill="#dabbbf" stroke="#9b7c83" stroke-width="0.9"/>
<path d="M947.6 730.7 L943.5 732.0 A4.3 4.3 0 0 1 947.6 726.4Z" fill="#e9c63b"/>
<path d="M947.6 730.7 L951.1 733.2 A4.3 4.3 0 0 1 943.5 732.0Z" fill="#2f3a3b"/>
<path d="M947.6 730.7 V726.4" stroke="#9b7c83" stroke-width="0.6"/>
<circle cx="953.2" cy="708.8" r="4.3" fill="#dabbbf" stroke="#9b7c83" stroke-width="0.9"/>
<path d="M953.2 708.8 V704.5" stroke="#9b7c83" stroke-width="0.6"/>
<circle cx="971.8" cy="720.9" r="4.3" fill="#dabbbf" stroke="#9b7c83" stroke-width="0.9"/>
<path d="M971.8 720.9 V716.6" stroke="#9b7c83" stroke-width="0.6"/>
<circle cx="947.0" cy="731.9" r="4.3" fill="#dabbbf" stroke="#9b7c83" stroke-width="0.9"/>
<path d="M947.0 731.9 L943.5 734.4 A4.3 4.3 0 0 1 947.0 727.6Z" fill="#2f3a3b"/>
<path d="M947.0 731.9 V727.6" stroke="#9b7c83" stroke-width="0.6"/>
<circle cx="947.7" cy="725.7" r="4.3" fill="#dabbbf" stroke="#9b7c83" stroke-width="0.9"/>
<path d="M947.7 725.7 V721.4" stroke="#9b7c83" stroke-width="0.6"/>
<circle cx="967.4" cy="692.3" r="4.3" fill="#dabbbf" stroke="#9b7c83" stroke-width="0.9"/>
<path d="M967.4 692.3 V688.0" stroke="#9b7c83" stroke-width="0.6"/>
<circle cx="957.2" cy="707.7" r="4.3" fill="#dabbbf" stroke="#9b7c83" stroke-width="0.9"/>
<path d="M957.2 707.7 L961.3 706.4 A4.3 4.3 0 1 1 957.2 703.4Z" fill="#e9c63b"/>
<path d="M957.2 707.7 L957.2 703.4 A4.3 4.3 0 0 1 959.7 704.2Z" fill="#d8524f"/>
<path d="M957.2 707.7 V703.4" stroke="#9b7c83" stroke-width="0.6"/>
<circle cx="974.4" cy="751.6" r="4.3" fill="#dabbbf" stroke="#9b7c83" stroke-width="0.9"/>
<path d="M974.4 751.6 V747.3" stroke="#9b7c83" stroke-width="0.6"/>
<circle cx="947.7" cy="685.2" r="4.3" fill="#dabbbf" stroke="#9b7c83" stroke-width="0.9"/>
<path d="M947.7 685.2 V680.9" stroke="#9b7c83" stroke-width="0.6"/>
<circle cx="944.9" cy="717.8" r="4.3" fill="#dabbbf" stroke="#9b7c83" stroke-width="0.9"/>
<path d="M944.9 717.8 L949.0 716.5 A4.3 4.3 0 1 1 944.9 713.5Z" fill="#e9c63b"/>
<path d="M944.9 717.8 L944.9 713.5 A4.3 4.3 0 0 1 947.4 714.3Z" fill="#d8524f"/>
<path d="M944.9 717.8 V713.5" stroke="#9b7c83" stroke-width="0.6"/>
<circle cx="952.1" cy="719.7" r="4.3" fill="#dabbbf" stroke="#9b7c83" stroke-width="0.9"/>
<path d="M952.1 719.7 V715.4" stroke="#9b7c83" stroke-width="0.6"/>
<circle cx="948.2" cy="676.7" r="4.3" fill="#dabbbf" stroke="#9b7c83" stroke-width="0.9"/>
<path d="M948.2 676.7 L944.1 675.4 A4.3 4.3 0 0 1 948.2 672.4Z" fill="#e9c63b"/>
<path d="M948.2 676.7 L946.9 680.8 A4.3 4.3 0 0 1 944.1 675.4Z" fill="#2f3a3b"/>
<path d="M948.2 676.7 V672.4" stroke="#9b7c83" stroke-width="0.6"/>
<circle cx="953.8" cy="680.8" r="4.3" fill="#dabbbf" stroke="#9b7c83" stroke-width="0.9"/>
<path d="M953.8 680.8 V676.5" stroke="#9b7c83" stroke-width="0.6"/>
<circle cx="967.7" cy="702.3" r="4.3" fill="#dabbbf" stroke="#9b7c83" stroke-width="0.9"/>
<path d="M967.7 702.3 V698.0" stroke="#9b7c83" stroke-width="0.6"/>
<circle cx="954.8" cy="699.8" r="4.3" fill="#dabbbf" stroke="#9b7c83" stroke-width="0.9"/>
<path d="M954.8 699.8 L957.3 703.3 A4.3 4.3 0 1 1 954.8 695.5Z" fill="#e9c63b"/>
<path d="M954.8 699.8 L954.8 695.5 A4.3 4.3 0 0 1 957.3 696.3Z" fill="#d8524f"/>
<path d="M954.8 699.8 V695.5" stroke="#9b7c83" stroke-width="0.6"/>
<circle cx="971.1" cy="740.3" r="4.3" fill="#dabbbf" stroke="#9b7c83" stroke-width="0.9"/>
<path d="M971.1 740.3 L969.8 744.4 A4.3 4.3 0 0 1 971.1 736.0Z" fill="#e9c63b"/>
<path d="M971.1 740.3 V736.0" stroke="#9b7c83" stroke-width="0.6"/>
<circle cx="978.4" cy="692.2" r="4.3" fill="#dabbbf" stroke="#9b7c83" stroke-width="0.9"/>
<path d="M978.4 692.2 L974.3 690.9 A4.3 4.3 0 0 1 978.4 687.9Z" fill="#e9c63b"/>
<path d="M978.4 692.2 L977.1 696.3 A4.3 4.3 0 0 1 974.3 690.9Z" fill="#2f3a3b"/>
<path d="M978.4 692.2 V687.9" stroke="#9b7c83" stroke-width="0.6"/>
<circle cx="952.2" cy="704.3" r="4.3" fill="#dabbbf" stroke="#9b7c83" stroke-width="0.9"/>
<path d="M952.2 704.3 L948.1 703.0 A4.3 4.3 0 0 1 952.2 700.0Z" fill="#e9c63b"/>
<path d="M952.2 704.3 L948.7 706.8 A4.3 4.3 0 0 1 948.1 703.0Z" fill="#2f3a3b"/>
<path d="M952.2 704.3 V700.0" stroke="#9b7c83" stroke-width="0.6"/>
<circle cx="948.5" cy="748.7" r="4.3" fill="#dabbbf" stroke="#9b7c83" stroke-width="0.9"/>
<path d="M948.5 748.7 L944.4 747.4 A4.3 4.3 0 0 1 948.5 744.4Z" fill="#e9c63b"/>
<path d="M948.5 748.7 L947.2 752.8 A4.3 4.3 0 0 1 944.4 747.4Z" fill="#2f3a3b"/>
<path d="M948.5 748.7 V744.4" stroke="#9b7c83" stroke-width="0.6"/>
<circle cx="959.4" cy="683.5" r="4.3" fill="#dabbbf" stroke="#9b7c83" stroke-width="0.9"/>
<path d="M959.4 683.5 L955.1 683.5 A4.3 4.3 0 0 1 959.4 679.2Z" fill="#2f3a3b"/>
<path d="M959.4 683.5 V679.2" stroke="#9b7c83" stroke-width="0.6"/>
<circle cx="974.0" cy="722.1" r="4.3" fill="#dabbbf" stroke="#9b7c83" stroke-width="0.9"/>
<path d="M974.0 722.1 V717.8" stroke="#9b7c83" stroke-width="0.6"/>
<circle cx="980.3" cy="714.9" r="4.3" fill="#dabbbf" stroke="#9b7c83" stroke-width="0.9"/>
<path d="M980.3 714.9 V710.6" stroke="#9b7c83" stroke-width="0.6"/>
<circle cx="937.1" cy="731.0" r="4.3" fill="#dabbbf" stroke="#9b7c83" stroke-width="0.9"/>
<path d="M937.1 731.0 V726.7" stroke="#9b7c83" stroke-width="0.6"/>
<circle cx="971.1" cy="723.3" r="4.3" fill="#dabbbf" stroke="#9b7c83" stroke-width="0.9"/>
<path d="M971.1 723.3 L967.0 724.6 A4.3 4.3 0 0 1 971.1 719.0Z" fill="#e9c63b"/>
<path d="M971.1 723.3 L969.8 727.4 A4.3 4.3 0 0 1 967.0 724.6Z" fill="#2f3a3b"/>
<path d="M971.1 723.3 V719.0" stroke="#9b7c83" stroke-width="0.6"/>
<circle cx="940.9" cy="708.2" r="4.3" fill="#dabbbf" stroke="#9b7c83" stroke-width="0.9"/>
<path d="M940.9 708.2 L936.8 706.9 A4.3 4.3 0 0 1 940.9 703.9Z" fill="#e9c63b"/>
<path d="M940.9 708.2 L939.6 712.3 A4.3 4.3 0 0 1 936.8 706.9Z" fill="#2f3a3b"/>
<path d="M940.9 708.2 V703.9" stroke="#9b7c83" stroke-width="0.6"/>
<circle cx="970.5" cy="752.3" r="4.3" fill="#dabbbf" stroke="#9b7c83" stroke-width="0.9"/>
<path d="M970.5 752.3 L967.0 754.8 A4.3 4.3 0 0 1 970.5 748.0Z" fill="#2f3a3b"/>
<path d="M970.5 752.3 V748.0" stroke="#9b7c83" stroke-width="0.6"/>
<circle cx="949.3" cy="715.6" r="4.3" fill="#dabbbf" stroke="#9b7c83" stroke-width="0.9"/>
<path d="M949.3 715.6 L945.2 716.9 A4.3 4.3 0 0 1 949.3 711.3Z" fill="#e9c63b"/>
<path d="M949.3 715.6 L948.0 719.7 A4.3 4.3 0 0 1 945.2 716.9Z" fill="#2f3a3b"/>
<path d="M949.3 715.6 V711.3" stroke="#9b7c83" stroke-width="0.6"/>
<circle cx="942.5" cy="685.1" r="4.3" fill="#dabbbf" stroke="#9b7c83" stroke-width="0.9"/>
<path d="M942.5 685.1 V680.8" stroke="#9b7c83" stroke-width="0.6"/>
<circle cx="958.8" cy="686.1" r="4.3" fill="#dabbbf" stroke="#9b7c83" stroke-width="0.9"/>
<path d="M958.8 686.1 V681.8" stroke="#9b7c83" stroke-width="0.6"/>
<circle cx="941.4" cy="683.7" r="4.3" fill="#dabbbf" stroke="#9b7c83" stroke-width="0.9"/>
<path d="M941.4 683.7 L943.9 687.2 A4.3 4.3 0 1 1 941.4 679.4Z" fill="#e9c63b"/>
<path d="M941.4 683.7 V679.4" stroke="#9b7c83" stroke-width="0.6"/>
<circle cx="950.2" cy="699.1" r="4.3" fill="#dabbbf" stroke="#9b7c83" stroke-width="0.9"/>
<path d="M950.2 699.1 V694.8" stroke="#9b7c83" stroke-width="0.6"/>
<circle cx="976.9" cy="700.4" r="4.3" fill="#dabbbf" stroke="#9b7c83" stroke-width="0.9"/>
<path d="M976.9 700.4 V696.1" stroke="#9b7c83" stroke-width="0.6"/>
<circle cx="944.9" cy="690.5" r="4.3" fill="#dabbbf" stroke="#9b7c83" stroke-width="0.9"/>
<path d="M944.9 690.5 V686.2" stroke="#9b7c83" stroke-width="0.6"/>
<circle cx="958.8" cy="717.1" r="4.3" fill="#dabbbf" stroke="#9b7c83" stroke-width="0.9"/>
<path d="M958.8 717.1 L954.7 718.4 A4.3 4.3 0 0 1 958.8 712.8Z" fill="#e9c63b"/>
<path d="M958.8 717.1 L962.3 719.6 A4.3 4.3 0 0 1 954.7 718.4Z" fill="#2f3a3b"/>
<path d="M958.8 717.1 V712.8" stroke="#9b7c83" stroke-width="0.6"/>
<circle cx="960.3" cy="736.0" r="4.3" fill="#dabbbf" stroke="#9b7c83" stroke-width="0.9"/>
<path d="M960.3 736.0 V731.7" stroke="#9b7c83" stroke-width="0.6"/>
<circle cx="953.3" cy="723.4" r="4.3" fill="#dabbbf" stroke="#9b7c83" stroke-width="0.9"/>
<path d="M953.3 723.4 V719.1" stroke="#9b7c83" stroke-width="0.6"/>
<circle cx="949.8" cy="738.1" r="4.3" fill="#dabbbf" stroke="#9b7c83" stroke-width="0.9"/>
<path d="M949.8 738.1 V733.8" stroke="#9b7c83" stroke-width="0.6"/>
<circle cx="940.9" cy="704.1" r="4.3" fill="#dabbbf" stroke="#9b7c83" stroke-width="0.9"/>
<path d="M940.9 704.1 V699.8" stroke="#9b7c83" stroke-width="0.6"/>
<circle cx="973.6" cy="751.6" r="4.3" fill="#dabbbf" stroke="#9b7c83" stroke-width="0.9"/>
<path d="M973.6 751.6 V747.3" stroke="#9b7c83" stroke-width="0.6"/>
<circle cx="979.6" cy="713.1" r="4.3" fill="#dabbbf" stroke="#9b7c83" stroke-width="0.9"/>
<path d="M979.6 713.1 V708.8" stroke="#9b7c83" stroke-width="0.6"/>
<circle cx="956.4" cy="735.4" r="4.3" fill="#dabbbf" stroke="#9b7c83" stroke-width="0.9"/>
<path d="M956.4 735.4 L952.3 736.7 A4.3 4.3 0 0 1 956.4 731.1Z" fill="#e9c63b"/>
<path d="M956.4 735.4 L955.1 739.5 A4.3 4.3 0 0 1 952.3 736.7Z" fill="#2f3a3b"/>
<path d="M956.4 735.4 V731.1" stroke="#9b7c83" stroke-width="0.6"/>
<circle cx="974.7" cy="728.2" r="4.3" fill="#dabbbf" stroke="#9b7c83" stroke-width="0.9"/>
<path d="M974.7 728.2 V723.9" stroke="#9b7c83" stroke-width="0.6"/>
<circle cx="940.8" cy="716.7" r="4.3" fill="#dabbbf" stroke="#9b7c83" stroke-width="0.9"/>
<path d="M940.8 716.7 L942.1 720.8 A4.3 4.3 0 1 1 940.8 712.4Z" fill="#e9c63b"/>
<path d="M940.8 716.7 V712.4" stroke="#9b7c83" stroke-width="0.6"/>
<circle cx="940.9" cy="688.9" r="4.3" fill="#dabbbf" stroke="#9b7c83" stroke-width="0.9"/>
<path d="M940.9 688.9 V684.6" stroke="#9b7c83" stroke-width="0.6"/>
<circle cx="968.5" cy="676.7" r="4.3" fill="#dabbbf" stroke="#9b7c83" stroke-width="0.9"/>
<path d="M968.5 676.7 L972.6 675.4 A4.3 4.3 0 1 1 968.5 672.4Z" fill="#e9c63b"/>
<path d="M968.5 676.7 V672.4" stroke="#9b7c83" stroke-width="0.6"/>
<circle cx="944.0" cy="689.7" r="4.3" fill="#dabbbf" stroke="#9b7c83" stroke-width="0.9"/>
<path d="M944.0 689.7 V685.4" stroke="#9b7c83" stroke-width="0.6"/>
<circle cx="950.0" cy="740.3" r="4.3" fill="#dabbbf" stroke="#9b7c83" stroke-width="0.9"/>
<path d="M950.0 740.3 L946.5 742.8 A4.3 4.3 0 0 1 950.0 736.0Z" fill="#2f3a3b"/>
<path d="M950.0 740.3 V736.0" stroke="#9b7c83" stroke-width="0.6"/>
<circle cx="961.2" cy="669.4" r="4.3" fill="#dabbbf" stroke="#9b7c83" stroke-width="0.9"/>
<path d="M961.2 669.4 V665.1" stroke="#9b7c83" stroke-width="0.6"/>
<circle cx="966.2" cy="671.7" r="4.3" fill="#dabbbf" stroke="#9b7c83" stroke-width="0.9"/>
<path d="M966.2 671.7 L967.5 675.8 A4.3 4.3 0 1 1 966.2 667.4Z" fill="#e9c63b"/>
<path d="M966.2 671.7 V667.4" stroke="#9b7c83" stroke-width="0.6"/>
<circle cx="955.2" cy="699.3" r="4.3" fill="#dabbbf" stroke="#9b7c83" stroke-width="0.9"/>
<path d="M955.2 699.3 V695.0" stroke="#9b7c83" stroke-width="0.6"/>
<circle cx="968.4" cy="729.7" r="4.3" fill="#dabbbf" stroke="#9b7c83" stroke-width="0.9"/>
<path d="M968.4 729.7 L964.1 729.7 A4.3 4.3 0 0 1 968.4 725.4Z" fill="#2f3a3b"/>
<path d="M968.4 729.7 V725.4" stroke="#9b7c83" stroke-width="0.6"/>
<circle cx="958.7" cy="684.4" r="4.3" fill="#dabbbf" stroke="#9b7c83" stroke-width="0.9"/>
<path d="M958.7 684.4 V680.1" stroke="#9b7c83" stroke-width="0.6"/>
<circle cx="944.1" cy="707.6" r="4.3" fill="#dabbbf" stroke="#9b7c83" stroke-width="0.9"/>
<path d="M944.1 707.6 L939.8 707.6 A4.3 4.3 0 0 1 944.1 703.3Z" fill="#2f3a3b"/>
<path d="M944.1 707.6 V703.3" stroke="#9b7c83" stroke-width="0.6"/>
<circle cx="980.8" cy="710.3" r="4.3" fill="#dabbbf" stroke="#9b7c83" stroke-width="0.9"/>
<path d="M980.8 710.3 L979.5 714.4 A4.3 4.3 0 0 1 980.8 706.0Z" fill="#e9c63b"/>
<path d="M980.8 710.3 V706.0" stroke="#9b7c83" stroke-width="0.6"/>
<circle cx="963.5" cy="747.5" r="4.3" fill="#dabbbf" stroke="#9b7c83" stroke-width="0.9"/>
<path d="M963.5 747.5 L959.4 748.8 A4.3 4.3 0 0 1 963.5 743.2Z" fill="#e9c63b"/>
<path d="M963.5 747.5 V743.2" stroke="#9b7c83" stroke-width="0.6"/>
<circle cx="978.2" cy="744.2" r="4.3" fill="#dabbbf" stroke="#9b7c83" stroke-width="0.9"/>
<path d="M978.2 744.2 V739.9" stroke="#9b7c83" stroke-width="0.6"/>
<circle cx="950.6" cy="683.1" r="4.3" fill="#dabbbf" stroke="#9b7c83" stroke-width="0.9"/>
<path d="M950.6 683.1 V678.8" stroke="#9b7c83" stroke-width="0.6"/>
<circle cx="970.8" cy="669.7" r="4.3" fill="#dabbbf" stroke="#9b7c83" stroke-width="0.9"/>
<path d="M970.8 669.7 V665.4" stroke="#9b7c83" stroke-width="0.6"/>
<circle cx="953.0" cy="699.6" r="4.3" fill="#dabbbf" stroke="#9b7c83" stroke-width="0.9"/>
<path d="M953.0 699.6 L949.5 697.1 A4.3 4.3 0 0 1 953.0 695.3Z" fill="#2f3a3b"/>
<path d="M953.0 699.6 V695.3" stroke="#9b7c83" stroke-width="0.6"/>
<circle cx="951.7" cy="750.5" r="4.3" fill="#dabbbf" stroke="#9b7c83" stroke-width="0.9"/>
<circle cx="951.7" cy="750.5" r="4.3" fill="#e9c63b" stroke="#c4a02a" stroke-width="0.9"/>
<path d="M951.7 750.5 L951.7 746.2 A4.3 4.3 0 0 1 954.2 747.0Z" fill="#d8524f"/>
<circle cx="952.0" cy="738.8" r="4.3" fill="#dabbbf" stroke="#9b7c83" stroke-width="0.9"/>
<path d="M952.0 738.8 V734.5" stroke="#9b7c83" stroke-width="0.6"/>
<circle cx="955.6" cy="671.2" r="4.3" fill="#dabbbf" stroke="#9b7c83" stroke-width="0.9"/>
<path d="M955.6 671.2 V666.9" stroke="#9b7c83" stroke-width="0.6"/>
<circle cx="952.7" cy="747.3" r="4.3" fill="#dabbbf" stroke="#9b7c83" stroke-width="0.9"/>
<path d="M952.7 747.3 L955.2 750.8 A4.3 4.3 0 1 1 952.7 743.0Z" fill="#e9c63b"/>
<path d="M952.7 747.3 V743.0" stroke="#9b7c83" stroke-width="0.6"/>
<circle cx="957.7" cy="722.1" r="4.3" fill="#dabbbf" stroke="#9b7c83" stroke-width="0.9"/>
<path d="M957.7 722.1 L953.6 720.8 A4.3 4.3 0 0 1 957.7 717.8Z" fill="#e9c63b"/>
<path d="M957.7 722.1 L959.0 726.2 A4.3 4.3 0 0 1 953.6 720.8Z" fill="#2f3a3b"/>
<path d="M957.7 722.1 V717.8" stroke="#9b7c83" stroke-width="0.6"/>
<circle cx="947.1" cy="732.3" r="4.3" fill="#dabbbf" stroke="#9b7c83" stroke-width="0.9"/>
<path d="M947.1 732.3 V728.0" stroke="#9b7c83" stroke-width="0.6"/>
<circle cx="951.1" cy="690.7" r="4.3" fill="#dabbbf" stroke="#9b7c83" stroke-width="0.9"/>
<path d="M951.1 690.7 V686.4" stroke="#9b7c83" stroke-width="0.6"/>
<circle cx="964.6" cy="689.8" r="4.3" fill="#dabbbf" stroke="#9b7c83" stroke-width="0.9"/>
<path d="M964.6 689.8 V685.5" stroke="#9b7c83" stroke-width="0.6"/>
<circle cx="950.0" cy="691.0" r="4.3" fill="#dabbbf" stroke="#9b7c83" stroke-width="0.9"/>
<circle cx="950.0" cy="691.0" r="4.3" fill="#e9c63b" stroke="#c4a02a" stroke-width="0.9"/>
<circle cx="973.7" cy="749.7" r="4.3" fill="#dabbbf" stroke="#9b7c83" stroke-width="0.9"/>
<circle cx="973.7" cy="749.7" r="4.3" fill="#e9c63b" stroke="#c4a02a" stroke-width="0.9"/>
<path d="M973.7 749.7 L973.7 745.4 A4.3 4.3 0 0 1 976.2 746.2Z" fill="#d8524f"/>
<circle cx="957.7" cy="750.6" r="4.3" fill="#dabbbf" stroke="#9b7c83" stroke-width="0.9"/>
<path d="M957.7 750.6 V746.3" stroke="#9b7c83" stroke-width="0.6"/>
<circle cx="953.4" cy="688.8" r="4.3" fill="#dabbbf" stroke="#9b7c83" stroke-width="0.9"/>
<path d="M953.4 688.8 V684.5" stroke="#9b7c83" stroke-width="0.6"/>
<circle cx="958.6" cy="748.1" r="4.3" fill="#dabbbf" stroke="#9b7c83" stroke-width="0.9"/>
<circle cx="958.6" cy="748.1" r="4.3" fill="#e9c63b" stroke="#c4a02a" stroke-width="0.9"/>
<circle cx="949.4" cy="727.4" r="4.3" fill="#dabbbf" stroke="#9b7c83" stroke-width="0.9"/>
<path d="M949.4 727.4 L948.1 731.5 A4.3 4.3 0 0 1 949.4 723.1Z" fill="#e9c63b"/>
<path d="M949.4 727.4 V723.1" stroke="#9b7c83" stroke-width="0.6"/>
<circle cx="950.2" cy="698.5" r="4.3" fill="#dabbbf" stroke="#9b7c83" stroke-width="0.9"/>
<path d="M950.2 698.5 V694.2" stroke="#9b7c83" stroke-width="0.6"/>
<circle cx="971.2" cy="688.5" r="4.3" fill="#dabbbf" stroke="#9b7c83" stroke-width="0.9"/>
<path d="M971.2 688.5 L967.1 689.8 A4.3 4.3 0 0 1 971.2 684.2Z" fill="#e9c63b"/>
<path d="M971.2 688.5 V684.2" stroke="#9b7c83" stroke-width="0.6"/>
<circle cx="961.1" cy="680.9" r="4.3" fill="#dabbbf" stroke="#9b7c83" stroke-width="0.9"/>
<path d="M961.1 680.9 V676.6" stroke="#9b7c83" stroke-width="0.6"/>
<circle cx="964.9" cy="685.1" r="4.3" fill="#dabbbf" stroke="#9b7c83" stroke-width="0.9"/>
<path d="M964.9 685.1 V680.8" stroke="#9b7c83" stroke-width="0.6"/>
<circle cx="943.1" cy="678.5" r="4.3" fill="#dabbbf" stroke="#9b7c83" stroke-width="0.9"/>
<path d="M943.1 678.5 V674.2" stroke="#9b7c83" stroke-width="0.6"/>
<circle cx="977.9" cy="687.4" r="4.3" fill="#dabbbf" stroke="#9b7c83" stroke-width="0.9"/>
<path d="M977.9 687.4 V683.1" stroke="#9b7c83" stroke-width="0.6"/>
<circle cx="972.2" cy="733.3" r="4.3" fill="#dabbbf" stroke="#9b7c83" stroke-width="0.9"/>
<path d="M972.2 733.3 V729.0" stroke="#9b7c83" stroke-width="0.6"/>
<circle cx="948.9" cy="691.3" r="4.3" fill="#dabbbf" stroke="#9b7c83" stroke-width="0.9"/>
<path d="M948.9 691.3 L944.8 692.6 A4.3 4.3 0 0 1 948.9 687.0Z" fill="#e9c63b"/>
<path d="M948.9 691.3 L950.2 695.4 A4.3 4.3 0 0 1 944.8 692.6Z" fill="#2f3a3b"/>
<path d="M948.9 691.3 V687.0" stroke="#9b7c83" stroke-width="0.6"/>
<circle cx="947.3" cy="705.3" r="4.3" fill="#dabbbf" stroke="#9b7c83" stroke-width="0.9"/>
<path d="M947.3 705.3 L946.0 709.4 A4.3 4.3 0 0 1 947.3 701.0Z" fill="#e9c63b"/>
<path d="M947.3 705.3 L947.3 701.0 A4.3 4.3 0 0 1 949.8 701.8Z" fill="#d8524f"/>
<path d="M947.3 705.3 V701.0" stroke="#9b7c83" stroke-width="0.6"/>
<circle cx="977.5" cy="717.5" r="4.3" fill="#dabbbf" stroke="#9b7c83" stroke-width="0.9"/>
<path d="M977.5 717.5 L973.4 716.2 A4.3 4.3 0 0 1 977.5 713.2Z" fill="#e9c63b"/>
<path d="M977.5 717.5 L976.2 721.6 A4.3 4.3 0 0 1 973.4 716.2Z" fill="#2f3a3b"/>
<path d="M977.5 717.5 V713.2" stroke="#9b7c83" stroke-width="0.6"/>
<circle cx="945.9" cy="737.6" r="4.3" fill="#dabbbf" stroke="#9b7c83" stroke-width="0.9"/>
<path d="M945.9 737.6 V733.3" stroke="#9b7c83" stroke-width="0.6"/>
<circle cx="957.7" cy="738.5" r="4.3" fill="#dabbbf" stroke="#9b7c83" stroke-width="0.9"/>
<path d="M957.7 738.5 V734.2" stroke="#9b7c83" stroke-width="0.6"/>
<circle cx="948.9" cy="677.3" r="4.3" fill="#dabbbf" stroke="#9b7c83" stroke-width="0.9"/>
<circle cx="948.9" cy="677.3" r="4.3" fill="#e9c63b" stroke="#c4a02a" stroke-width="0.9"/>
<circle cx="979.7" cy="699.4" r="4.3" fill="#dabbbf" stroke="#9b7c83" stroke-width="0.9"/>
<path d="M979.7 699.4 V695.1" stroke="#9b7c83" stroke-width="0.6"/>
<circle cx="956.4" cy="689.6" r="4.3" fill="#dabbbf" stroke="#9b7c83" stroke-width="0.9"/>
<path d="M956.4 689.6 V685.3" stroke="#9b7c83" stroke-width="0.6"/>
<circle cx="963.6" cy="721.1" r="4.3" fill="#dabbbf" stroke="#9b7c83" stroke-width="0.9"/>
<path d="M963.6 721.1 L959.5 719.8 A4.3 4.3 0 0 1 963.6 716.8Z" fill="#e9c63b"/>
<path d="M963.6 721.1 L962.3 725.2 A4.3 4.3 0 0 1 959.5 719.8Z" fill="#2f3a3b"/>
<path d="M963.6 721.1 V716.8" stroke="#9b7c83" stroke-width="0.6"/>
<circle cx="941.5" cy="684.7" r="4.3" fill="#dabbbf" stroke="#9b7c83" stroke-width="0.9"/>
<path d="M941.5 684.7 L937.4 686.0 A4.3 4.3 0 0 1 941.5 680.4Z" fill="#e9c63b"/>
<path d="M941.5 684.7 L945.0 687.2 A4.3 4.3 0 0 1 937.4 686.0Z" fill="#2f3a3b"/>
<path d="M941.5 684.7 V680.4" stroke="#9b7c83" stroke-width="0.6"/>
<circle cx="966.3" cy="684.7" r="4.3" fill="#dabbbf" stroke="#9b7c83" stroke-width="0.9"/>
<path d="M966.3 684.7 L968.8 688.2 A4.3 4.3 0 1 1 966.3 680.4Z" fill="#e9c63b"/>
<path d="M966.3 684.7 V680.4" stroke="#9b7c83" stroke-width="0.6"/>
<circle cx="952.7" cy="721.2" r="4.3" fill="#dabbbf" stroke="#9b7c83" stroke-width="0.9"/>
<path d="M952.7 721.2 L948.6 722.5 A4.3 4.3 0 0 1 952.7 716.9Z" fill="#e9c63b"/>
<path d="M952.7 721.2 V716.9" stroke="#9b7c83" stroke-width="0.6"/>
<circle cx="961.2" cy="672.4" r="4.3" fill="#dabbbf" stroke="#9b7c83" stroke-width="0.9"/>
<path d="M961.2 672.4 L965.3 673.7 A4.3 4.3 0 1 1 961.2 668.1Z" fill="#e9c63b"/>
<path d="M961.2 672.4 V668.1" stroke="#9b7c83" stroke-width="0.6"/>
<circle cx="942.2" cy="713.6" r="4.3" fill="#dabbbf" stroke="#9b7c83" stroke-width="0.9"/>
<path d="M942.2 713.6 V709.3" stroke="#9b7c83" stroke-width="0.6"/>
<circle cx="954.0" cy="690.6" r="4.3" fill="#dabbbf" stroke="#9b7c83" stroke-width="0.9"/>
<path d="M954.0 690.6 V686.3" stroke="#9b7c83" stroke-width="0.6"/>
<circle cx="967.0" cy="703.4" r="4.3" fill="#dabbbf" stroke="#9b7c83" stroke-width="0.9"/>
<path d="M967.0 703.4 L968.3 707.5 A4.3 4.3 0 1 1 967.0 699.1Z" fill="#e9c63b"/>
<path d="M967.0 703.4 V699.1" stroke="#9b7c83" stroke-width="0.6"/>
<circle cx="952.0" cy="703.3" r="4.3" fill="#dabbbf" stroke="#9b7c83" stroke-width="0.9"/>
<path d="M952.0 703.3 V699.0" stroke="#9b7c83" stroke-width="0.6"/>
<circle cx="944.2" cy="730.6" r="4.3" fill="#dabbbf" stroke="#9b7c83" stroke-width="0.9"/>
<path d="M944.2 730.6 L940.1 729.3 A4.3 4.3 0 0 1 944.2 726.3Z" fill="#e9c63b"/>
<path d="M944.2 730.6 L940.7 733.1 A4.3 4.3 0 0 1 940.1 729.3Z" fill="#2f3a3b"/>
<path d="M944.2 730.6 V726.3" stroke="#9b7c83" stroke-width="0.6"/>
<circle cx="1033.5" cy="689.8" r="4.3" fill="#dabbbf" stroke="#9b7c83" stroke-width="0.9"/>
<path d="M1033.5 689.8 V685.5" stroke="#9b7c83" stroke-width="0.6"/>
<circle cx="1004.1" cy="721.3" r="4.3" fill="#dabbbf" stroke="#9b7c83" stroke-width="0.9"/>
<path d="M1004.1 721.3 V717.0" stroke="#9b7c83" stroke-width="0.6"/>
<circle cx="1012.7" cy="704.7" r="4.3" fill="#dabbbf" stroke="#9b7c83" stroke-width="0.9"/>
<path d="M1012.7 704.7 V700.4" stroke="#9b7c83" stroke-width="0.6"/>
<circle cx="985.3" cy="703.4" r="4.3" fill="#dabbbf" stroke="#9b7c83" stroke-width="0.9"/>
<path d="M985.3 703.4 V699.1" stroke="#9b7c83" stroke-width="0.6"/>
<circle cx="1010.0" cy="670.7" r="4.3" fill="#dabbbf" stroke="#9b7c83" stroke-width="0.9"/>
<path d="M1010.0 670.7 V666.4" stroke="#9b7c83" stroke-width="0.6"/>
<circle cx="1010.9" cy="724.3" r="4.3" fill="#dabbbf" stroke="#9b7c83" stroke-width="0.9"/>
<path d="M1010.9 724.3 L1006.6 724.3 A4.3 4.3 0 0 1 1010.9 720.0Z" fill="#2f3a3b"/>
<path d="M1010.9 724.3 V720.0" stroke="#9b7c83" stroke-width="0.6"/>
<circle cx="997.9" cy="718.2" r="4.3" fill="#dabbbf" stroke="#9b7c83" stroke-width="0.9"/>
<path d="M997.9 718.2 L1002.0 719.5 A4.3 4.3 0 1 1 997.9 713.9Z" fill="#e9c63b"/>
<path d="M997.9 718.2 V713.9" stroke="#9b7c83" stroke-width="0.6"/>
<circle cx="1016.1" cy="704.4" r="4.3" fill="#dabbbf" stroke="#9b7c83" stroke-width="0.9"/>
<path d="M1016.1 704.4 L1012.0 705.7 A4.3 4.3 0 0 1 1016.1 700.1Z" fill="#e9c63b"/>
<path d="M1016.1 704.4 L1019.6 706.9 A4.3 4.3 0 0 1 1012.0 705.7Z" fill="#2f3a3b"/>
<path d="M1016.1 704.4 V700.1" stroke="#9b7c83" stroke-width="0.6"/>
<circle cx="1018.0" cy="719.5" r="4.3" fill="#dabbbf" stroke="#9b7c83" stroke-width="0.9"/>
<path d="M1018.0 719.5 V715.2" stroke="#9b7c83" stroke-width="0.6"/>
<circle cx="1016.5" cy="674.1" r="4.3" fill="#dabbbf" stroke="#9b7c83" stroke-width="0.9"/>
<path d="M1016.5 674.1 V669.8" stroke="#9b7c83" stroke-width="0.6"/>
<circle cx="1001.3" cy="670.9" r="4.3" fill="#dabbbf" stroke="#9b7c83" stroke-width="0.9"/>
<path d="M1001.3 670.9 V666.6" stroke="#9b7c83" stroke-width="0.6"/>
<circle cx="1032.5" cy="718.5" r="4.3" fill="#dabbbf" stroke="#9b7c83" stroke-width="0.9"/>
<path d="M1032.5 718.5 V714.2" stroke="#9b7c83" stroke-width="0.6"/>
<circle cx="1019.7" cy="682.9" r="4.3" fill="#dabbbf" stroke="#9b7c83" stroke-width="0.9"/>
<path d="M1019.7 682.9 V678.6" stroke="#9b7c83" stroke-width="0.6"/>
<circle cx="1007.1" cy="719.0" r="4.3" fill="#dabbbf" stroke="#9b7c83" stroke-width="0.9"/>
<path d="M1007.1 719.0 V714.7" stroke="#9b7c83" stroke-width="0.6"/>
<circle cx="1018.5" cy="681.8" r="4.3" fill="#dabbbf" stroke="#9b7c83" stroke-width="0.9"/>
<path d="M1018.5 681.8 V677.5" stroke="#9b7c83" stroke-width="0.6"/>
<circle cx="1003.1" cy="685.9" r="4.3" fill="#dabbbf" stroke="#9b7c83" stroke-width="0.9"/>
<path d="M1003.1 685.9 V681.6" stroke="#9b7c83" stroke-width="0.6"/>
<circle cx="1038.6" cy="692.6" r="4.3" fill="#dabbbf" stroke="#9b7c83" stroke-width="0.9"/>
<path d="M1038.6 692.6 V688.3" stroke="#9b7c83" stroke-width="0.6"/>
<circle cx="1016.7" cy="716.9" r="4.3" fill="#dabbbf" stroke="#9b7c83" stroke-width="0.9"/>
<path d="M1016.7 716.9 V712.6" stroke="#9b7c83" stroke-width="0.6"/>
<circle cx="1028.1" cy="688.1" r="4.3" fill="#dabbbf" stroke="#9b7c83" stroke-width="0.9"/>
<path d="M1028.1 688.1 L1030.6 691.6 A4.3 4.3 0 1 1 1028.1 683.8Z" fill="#e9c63b"/>
<path d="M1028.1 688.1 V683.8" stroke="#9b7c83" stroke-width="0.6"/>
<circle cx="1023.6" cy="714.1" r="4.3" fill="#dabbbf" stroke="#9b7c83" stroke-width="0.9"/>
<path d="M1023.6 714.1 V709.8" stroke="#9b7c83" stroke-width="0.6"/>
<circle cx="1002.4" cy="726.0" r="4.3" fill="#dabbbf" stroke="#9b7c83" stroke-width="0.9"/>
<path d="M1002.4 726.0 L998.3 727.3 A4.3 4.3 0 0 1 1002.4 721.7Z" fill="#e9c63b"/>
<path d="M1002.4 726.0 L1001.1 730.1 A4.3 4.3 0 0 1 998.3 727.3Z" fill="#2f3a3b"/>
<path d="M1002.4 726.0 V721.7" stroke="#9b7c83" stroke-width="0.6"/>
<circle cx="1023.5" cy="716.7" r="4.3" fill="#dabbbf" stroke="#9b7c83" stroke-width="0.9"/>
<path d="M1023.5 716.7 V712.4" stroke="#9b7c83" stroke-width="0.6"/>
<circle cx="1038.3" cy="694.4" r="4.3" fill="#dabbbf" stroke="#9b7c83" stroke-width="0.9"/>
<path d="M1038.3 694.4 V690.1" stroke="#9b7c83" stroke-width="0.6"/>
<circle cx="1026.8" cy="724.6" r="4.3" fill="#dabbbf" stroke="#9b7c83" stroke-width="0.9"/>
<path d="M1026.8 724.6 L1029.3 728.1 A4.3 4.3 0 1 1 1026.8 720.3Z" fill="#e9c63b"/>
<path d="M1026.8 724.6 V720.3" stroke="#9b7c83" stroke-width="0.6"/>
<circle cx="995.0" cy="682.9" r="4.3" fill="#dabbbf" stroke="#9b7c83" stroke-width="0.9"/>
<path d="M995.0 682.9 V678.6" stroke="#9b7c83" stroke-width="0.6"/>
<circle cx="1033.7" cy="692.0" r="4.3" fill="#dabbbf" stroke="#9b7c83" stroke-width="0.9"/>
<path d="M1033.7 692.0 V687.7" stroke="#9b7c83" stroke-width="0.6"/>
<circle cx="1037.3" cy="693.6" r="4.3" fill="#dabbbf" stroke="#9b7c83" stroke-width="0.9"/>
<path d="M1037.3 693.6 V689.3" stroke="#9b7c83" stroke-width="0.6"/>
<circle cx="1016.6" cy="676.9" r="4.3" fill="#dabbbf" stroke="#9b7c83" stroke-width="0.9"/>
<path d="M1016.6 676.9 V672.6" stroke="#9b7c83" stroke-width="0.6"/>
<circle cx="991.8" cy="688.4" r="4.3" fill="#dabbbf" stroke="#9b7c83" stroke-width="0.9"/>
<path d="M991.8 688.4 V684.1" stroke="#9b7c83" stroke-width="0.6"/>
<circle cx="996.5" cy="683.2" r="4.3" fill="#dabbbf" stroke="#9b7c83" stroke-width="0.9"/>
<path d="M996.5 683.2 V678.9" stroke="#9b7c83" stroke-width="0.6"/>
<circle cx="1006.9" cy="696.5" r="4.3" fill="#dabbbf" stroke="#9b7c83" stroke-width="0.9"/>
<path d="M1006.9 696.5 V692.2" stroke="#9b7c83" stroke-width="0.6"/>
<circle cx="1011.8" cy="719.5" r="4.3" fill="#dabbbf" stroke="#9b7c83" stroke-width="0.9"/>
<path d="M1011.8 719.5 V715.2" stroke="#9b7c83" stroke-width="0.6"/>
<circle cx="1002.1" cy="686.5" r="4.3" fill="#dabbbf" stroke="#9b7c83" stroke-width="0.9"/>
<path d="M1002.1 686.5 V682.2" stroke="#9b7c83" stroke-width="0.6"/>
<circle cx="997.6" cy="696.1" r="4.3" fill="#dabbbf" stroke="#9b7c83" stroke-width="0.9"/>
<path d="M997.6 696.1 V691.8" stroke="#9b7c83" stroke-width="0.6"/>
<circle cx="1023.5" cy="712.0" r="4.3" fill="#dabbbf" stroke="#9b7c83" stroke-width="0.9"/>
<path d="M1023.5 712.0 V707.7" stroke="#9b7c83" stroke-width="0.6"/>
<circle cx="997.3" cy="703.6" r="4.3" fill="#dabbbf" stroke="#9b7c83" stroke-width="0.9"/>
<path d="M997.3 703.6 V699.3" stroke="#9b7c83" stroke-width="0.6"/>
<circle cx="1001.6" cy="663.9" r="4.3" fill="#dabbbf" stroke="#9b7c83" stroke-width="0.9"/>
<path d="M1001.6 663.9 V659.6" stroke="#9b7c83" stroke-width="0.6"/>
<circle cx="998.0" cy="696.6" r="4.3" fill="#dabbbf" stroke="#9b7c83" stroke-width="0.9"/>
<path d="M998.0 696.6 V692.3" stroke="#9b7c83" stroke-width="0.6"/>
<circle cx="1004.5" cy="681.3" r="4.3" fill="#dabbbf" stroke="#9b7c83" stroke-width="0.9"/>
<path d="M1004.5 681.3 L1000.4 682.6 A4.3 4.3 0 0 1 1004.5 677.0Z" fill="#e9c63b"/>
<path d="M1004.5 681.3 L1005.8 685.4 A4.3 4.3 0 0 1 1000.4 682.6Z" fill="#2f3a3b"/>
<path d="M1004.5 681.3 V677.0" stroke="#9b7c83" stroke-width="0.6"/>
<circle cx="1022.0" cy="691.6" r="4.3" fill="#dabbbf" stroke="#9b7c83" stroke-width="0.9"/>
<path d="M1022.0 691.6 L1020.7 695.7 A4.3 4.3 0 0 1 1022.0 687.3Z" fill="#e9c63b"/>
<path d="M1022.0 691.6 V687.3" stroke="#9b7c83" stroke-width="0.6"/>
<circle cx="1026.4" cy="688.3" r="4.3" fill="#dabbbf" stroke="#9b7c83" stroke-width="0.9"/>
<path d="M1026.4 688.3 V684.0" stroke="#9b7c83" stroke-width="0.6"/>
<circle cx="1013.4" cy="684.7" r="4.3" fill="#dabbbf" stroke="#9b7c83" stroke-width="0.9"/>
<path d="M1013.4 684.7 V680.4" stroke="#9b7c83" stroke-width="0.6"/>
<circle cx="1006.3" cy="725.1" r="4.3" fill="#dabbbf" stroke="#9b7c83" stroke-width="0.9"/>
<path d="M1006.3 725.1 V720.8" stroke="#9b7c83" stroke-width="0.6"/>
<circle cx="994.8" cy="722.7" r="4.3" fill="#dabbbf" stroke="#9b7c83" stroke-width="0.9"/>
<path d="M994.8 722.7 L998.9 721.4 A4.3 4.3 0 1 1 994.8 718.4Z" fill="#e9c63b"/>
<path d="M994.8 722.7 L994.8 718.4 A4.3 4.3 0 0 1 997.3 719.2Z" fill="#d8524f"/>
<path d="M994.8 722.7 V718.4" stroke="#9b7c83" stroke-width="0.6"/>
<circle cx="991.0" cy="671.6" r="4.3" fill="#dabbbf" stroke="#9b7c83" stroke-width="0.9"/>
<path d="M991.0 671.6 V667.3" stroke="#9b7c83" stroke-width="0.6"/>
<circle cx="986.2" cy="702.7" r="4.3" fill="#dabbbf" stroke="#9b7c83" stroke-width="0.9"/>
<path d="M986.2 702.7 V698.4" stroke="#9b7c83" stroke-width="0.6"/>
<circle cx="991.7" cy="689.0" r="4.3" fill="#dabbbf" stroke="#9b7c83" stroke-width="0.9"/>
<path d="M991.7 689.0 V684.7" stroke="#9b7c83" stroke-width="0.6"/>
<circle cx="1018.2" cy="705.1" r="4.3" fill="#dabbbf" stroke="#9b7c83" stroke-width="0.9"/>
<path d="M1018.2 705.1 V700.8" stroke="#9b7c83" stroke-width="0.6"/>
<circle cx="1016.4" cy="695.6" r="4.3" fill="#dabbbf" stroke="#9b7c83" stroke-width="0.9"/>
<path d="M1016.4 695.6 L1017.7 699.7 A4.3 4.3 0 1 1 1016.4 691.3Z" fill="#e9c63b"/>
<path d="M1016.4 695.6 L1016.4 691.3 A4.3 4.3 0 0 1 1018.9 692.1Z" fill="#d8524f"/>
<path d="M1016.4 695.6 V691.3" stroke="#9b7c83" stroke-width="0.6"/>
<circle cx="1032.8" cy="714.5" r="4.3" fill="#dabbbf" stroke="#9b7c83" stroke-width="0.9"/>
<path d="M1032.8 714.5 V710.2" stroke="#9b7c83" stroke-width="0.6"/>
<circle cx="1024.2" cy="692.6" r="4.3" fill="#dabbbf" stroke="#9b7c83" stroke-width="0.9"/>
<path d="M1024.2 692.6 V688.3" stroke="#9b7c83" stroke-width="0.6"/>
<circle cx="1006.9" cy="676.2" r="4.3" fill="#dabbbf" stroke="#9b7c83" stroke-width="0.9"/>
<path d="M1006.9 676.2 L1002.8 677.5 A4.3 4.3 0 0 1 1006.9 671.9Z" fill="#e9c63b"/>
<path d="M1006.9 676.2 L1005.6 680.3 A4.3 4.3 0 0 1 1002.8 677.5Z" fill="#2f3a3b"/>
<path d="M1006.9 676.2 V671.9" stroke="#9b7c83" stroke-width="0.6"/>
<circle cx="1024.5" cy="708.4" r="4.3" fill="#dabbbf" stroke="#9b7c83" stroke-width="0.9"/>
<path d="M1024.5 708.4 V704.1" stroke="#9b7c83" stroke-width="0.6"/>
<circle cx="1012.9" cy="690.6" r="4.3" fill="#dabbbf" stroke="#9b7c83" stroke-width="0.9"/>
<path d="M1012.9 690.6 V686.3" stroke="#9b7c83" stroke-width="0.6"/>
<circle cx="1011.1" cy="678.9" r="4.3" fill="#dabbbf" stroke="#9b7c83" stroke-width="0.9"/>
<path d="M1011.1 678.9 V674.6" stroke="#9b7c83" stroke-width="0.6"/>
<circle cx="995.5" cy="676.9" r="4.3" fill="#dabbbf" stroke="#9b7c83" stroke-width="0.9"/>
<path d="M995.5 676.9 V672.6" stroke="#9b7c83" stroke-width="0.6"/>
<circle cx="1036.1" cy="711.9" r="4.3" fill="#dabbbf" stroke="#9b7c83" stroke-width="0.9"/>
<path d="M1036.1 711.9 V707.6" stroke="#9b7c83" stroke-width="0.6"/>
<circle cx="994.2" cy="723.0" r="4.3" fill="#dabbbf" stroke="#9b7c83" stroke-width="0.9"/>
<path d="M994.2 723.0 V718.7" stroke="#9b7c83" stroke-width="0.6"/>
<circle cx="1021.1" cy="706.4" r="4.3" fill="#dabbbf" stroke="#9b7c83" stroke-width="0.9"/>
<path d="M1021.1 706.4 V702.1" stroke="#9b7c83" stroke-width="0.6"/>
<circle cx="1007.9" cy="718.4" r="4.3" fill="#dabbbf" stroke="#9b7c83" stroke-width="0.9"/>
<path d="M1007.9 718.4 V714.1" stroke="#9b7c83" stroke-width="0.6"/>
<circle cx="1030.9" cy="690.7" r="4.3" fill="#dabbbf" stroke="#9b7c83" stroke-width="0.9"/>
<path d="M1030.9 690.7 V686.4" stroke="#9b7c83" stroke-width="0.6"/>
<circle cx="1013.9" cy="681.8" r="4.3" fill="#dabbbf" stroke="#9b7c83" stroke-width="0.9"/>
<path d="M1013.9 681.8 V677.5" stroke="#9b7c83" stroke-width="0.6"/>
<circle cx="981.6" cy="668.0" r="4.3" fill="#dabbbf" stroke="#9b7c83" stroke-width="0.9"/>
<path d="M981.6 668.0 V663.7" stroke="#9b7c83" stroke-width="0.6"/>
<circle cx="1000.5" cy="670.4" r="4.3" fill="#dabbbf" stroke="#9b7c83" stroke-width="0.9"/>
<path d="M1000.5 670.4 L996.4 671.7 A4.3 4.3 0 0 1 1000.5 666.1Z" fill="#e9c63b"/>
<path d="M1000.5 670.4 L1000.5 666.1 A4.3 4.3 0 0 1 1003.0 666.9Z" fill="#d8524f"/>
<path d="M1000.5 670.4 V666.1" stroke="#9b7c83" stroke-width="0.6"/>
<circle cx="1030.9" cy="713.0" r="4.3" fill="#dabbbf" stroke="#9b7c83" stroke-width="0.9"/>
<path d="M1030.9 713.0 V708.7" stroke="#9b7c83" stroke-width="0.6"/>
<circle cx="1036.7" cy="697.3" r="4.3" fill="#dabbbf" stroke="#9b7c83" stroke-width="0.9"/>
<path d="M1036.7 697.3 V693.0" stroke="#9b7c83" stroke-width="0.6"/>
<circle cx="1032.2" cy="712.6" r="4.3" fill="#dabbbf" stroke="#9b7c83" stroke-width="0.9"/>
<path d="M1032.2 712.6 V708.3" stroke="#9b7c83" stroke-width="0.6"/>
<circle cx="1002.8" cy="677.6" r="4.3" fill="#dabbbf" stroke="#9b7c83" stroke-width="0.9"/>
<path d="M1002.8 677.6 V673.3" stroke="#9b7c83" stroke-width="0.6"/>
<circle cx="1034.1" cy="712.4" r="4.3" fill="#dabbbf" stroke="#9b7c83" stroke-width="0.9"/>
<path d="M1034.1 712.4 L1030.0 713.7 A4.3 4.3 0 0 1 1034.1 708.1Z" fill="#e9c63b"/>
<path d="M1034.1 712.4 L1037.6 714.9 A4.3 4.3 0 0 1 1030.0 713.7Z" fill="#2f3a3b"/>
<path d="M1034.1 712.4 V708.1" stroke="#9b7c83" stroke-width="0.6"/>
<circle cx="997.1" cy="667.5" r="4.3" fill="#dabbbf" stroke="#9b7c83" stroke-width="0.9"/>
<path d="M997.1 667.5 L993.6 670.0 A4.3 4.3 0 0 1 997.1 663.2Z" fill="#2f3a3b"/>
<path d="M997.1 667.5 V663.2" stroke="#9b7c83" stroke-width="0.6"/>
<circle cx="997.5" cy="683.8" r="4.3" fill="#dabbbf" stroke="#9b7c83" stroke-width="0.9"/>
<path d="M997.5 683.8 V679.5" stroke="#9b7c83" stroke-width="0.6"/>
<circle cx="1000.8" cy="724.6" r="4.3" fill="#dabbbf" stroke="#9b7c83" stroke-width="0.9"/>
<circle cx="1000.8" cy="724.6" r="4.3" fill="#e9c63b" stroke="#c4a02a" stroke-width="0.9"/>
<circle cx="999.0" cy="726.9" r="4.3" fill="#dabbbf" stroke="#9b7c83" stroke-width="0.9"/>
<path d="M999.0 726.9 V722.6" stroke="#9b7c83" stroke-width="0.6"/>
<circle cx="1030.6" cy="703.1" r="4.3" fill="#dabbbf" stroke="#9b7c83" stroke-width="0.9"/>
<path d="M1030.6 703.1 L1034.7 704.4 A4.3 4.3 0 1 1 1030.6 698.8Z" fill="#e9c63b"/>
<path d="M1030.6 703.1 L1030.6 698.8 A4.3 4.3 0 0 1 1033.1 699.6Z" fill="#d8524f"/>
<path d="M1030.6 703.1 V698.8" stroke="#9b7c83" stroke-width="0.6"/>
<circle cx="1010.8" cy="667.4" r="4.3" fill="#dabbbf" stroke="#9b7c83" stroke-width="0.9"/>
<path d="M1010.8 667.4 V663.1" stroke="#9b7c83" stroke-width="0.6"/>
<circle cx="1022.4" cy="717.5" r="4.3" fill="#dabbbf" stroke="#9b7c83" stroke-width="0.9"/>
<path d="M1022.4 717.5 V713.2" stroke="#9b7c83" stroke-width="0.6"/>
<circle cx="997.0" cy="690.6" r="4.3" fill="#dabbbf" stroke="#9b7c83" stroke-width="0.9"/>
<path d="M997.0 690.6 V686.3" stroke="#9b7c83" stroke-width="0.6"/>
<circle cx="997.1" cy="712.2" r="4.3" fill="#dabbbf" stroke="#9b7c83" stroke-width="0.9"/>
<path d="M997.1 712.2 L999.6 715.7 A4.3 4.3 0 1 1 997.1 707.9Z" fill="#e9c63b"/>
<path d="M997.1 712.2 V707.9" stroke="#9b7c83" stroke-width="0.6"/>
<circle cx="1009.2" cy="715.4" r="4.3" fill="#dabbbf" stroke="#9b7c83" stroke-width="0.9"/>
<path d="M1009.2 715.4 V711.1" stroke="#9b7c83" stroke-width="0.6"/>
<circle cx="1009.4" cy="684.5" r="4.3" fill="#dabbbf" stroke="#9b7c83" stroke-width="0.9"/>
<path d="M1009.4 684.5 V680.2" stroke="#9b7c83" stroke-width="0.6"/>
<circle cx="995.5" cy="725.5" r="4.3" fill="#dabbbf" stroke="#9b7c83" stroke-width="0.9"/>
<path d="M995.5 725.5 V721.2" stroke="#9b7c83" stroke-width="0.6"/>
<circle cx="992.7" cy="708.7" r="4.3" fill="#dabbbf" stroke="#9b7c83" stroke-width="0.9"/>
<path d="M992.7 708.7 V704.4" stroke="#9b7c83" stroke-width="0.6"/>
<circle cx="986.5" cy="704.4" r="4.3" fill="#dabbbf" stroke="#9b7c83" stroke-width="0.9"/>
<path d="M986.5 704.4 L982.4 705.7 A4.3 4.3 0 0 1 986.5 700.1Z" fill="#e9c63b"/>
<path d="M986.5 704.4 L990.0 706.9 A4.3 4.3 0 0 1 982.4 705.7Z" fill="#2f3a3b"/>
<path d="M986.5 704.4 V700.1" stroke="#9b7c83" stroke-width="0.6"/>
<circle cx="1026.7" cy="703.8" r="4.3" fill="#dabbbf" stroke="#9b7c83" stroke-width="0.9"/>
<path d="M1026.7 703.8 V699.5" stroke="#9b7c83" stroke-width="0.6"/>
<circle cx="1003.8" cy="687.8" r="4.3" fill="#dabbbf" stroke="#9b7c83" stroke-width="0.9"/>
<path d="M1003.8 687.8 V683.5" stroke="#9b7c83" stroke-width="0.6"/>
<circle cx="995.6" cy="722.6" r="4.3" fill="#dabbbf" stroke="#9b7c83" stroke-width="0.9"/>
<path d="M995.6 722.6 V718.3" stroke="#9b7c83" stroke-width="0.6"/>
<circle cx="1002.5" cy="721.4" r="4.3" fill="#dabbbf" stroke="#9b7c83" stroke-width="0.9"/>
<path d="M1002.5 721.4 V717.1" stroke="#9b7c83" stroke-width="0.6"/>
<circle cx="1007.4" cy="697.2" r="4.3" fill="#dabbbf" stroke="#9b7c83" stroke-width="0.9"/>
<path d="M1007.4 697.2 V692.9" stroke="#9b7c83" stroke-width="0.6"/>
<circle cx="1024.7" cy="705.1" r="4.3" fill="#dabbbf" stroke="#9b7c83" stroke-width="0.9"/>
<path d="M1024.7 705.1 V700.8" stroke="#9b7c83" stroke-width="0.6"/>
<circle cx="999.4" cy="671.3" r="4.3" fill="#dabbbf" stroke="#9b7c83" stroke-width="0.9"/>
<path d="M999.4 671.3 V667.0" stroke="#9b7c83" stroke-width="0.6"/>
<circle cx="1019.3" cy="711.6" r="4.3" fill="#dabbbf" stroke="#9b7c83" stroke-width="0.9"/>
<path d="M1019.3 711.6 V707.3" stroke="#9b7c83" stroke-width="0.6"/>
<circle cx="1006.1" cy="713.8" r="4.3" fill="#dabbbf" stroke="#9b7c83" stroke-width="0.9"/>
<path d="M1006.1 713.8 V709.5" stroke="#9b7c83" stroke-width="0.6"/>
<circle cx="987.5" cy="692.4" r="4.3" fill="#dabbbf" stroke="#9b7c83" stroke-width="0.9"/>
<path d="M987.5 692.4 V688.1" stroke="#9b7c83" stroke-width="0.6"/>
<circle cx="994.1" cy="673.8" r="4.3" fill="#dabbbf" stroke="#9b7c83" stroke-width="0.9"/>
<path d="M994.1 673.8 V669.5" stroke="#9b7c83" stroke-width="0.6"/>
<circle cx="1021.8" cy="718.6" r="4.3" fill="#dabbbf" stroke="#9b7c83" stroke-width="0.9"/>
<path d="M1021.8 718.6 V714.3" stroke="#9b7c83" stroke-width="0.6"/>
<circle cx="989.3" cy="677.6" r="4.3" fill="#dabbbf" stroke="#9b7c83" stroke-width="0.9"/>
<path d="M989.3 677.6 V673.3" stroke="#9b7c83" stroke-width="0.6"/>
<circle cx="1011.0" cy="671.7" r="4.3" fill="#dabbbf" stroke="#9b7c83" stroke-width="0.9"/>
<path d="M1011.0 671.7 V667.4" stroke="#9b7c83" stroke-width="0.6"/>
<circle cx="991.2" cy="727.7" r="4.3" fill="#dabbbf" stroke="#9b7c83" stroke-width="0.9"/>
<path d="M991.2 727.7 V723.4" stroke="#9b7c83" stroke-width="0.6"/>
<circle cx="1023.5" cy="690.5" r="4.3" fill="#dabbbf" stroke="#9b7c83" stroke-width="0.9"/>
<path d="M1023.5 690.5 V686.2" stroke="#9b7c83" stroke-width="0.6"/>
<circle cx="992.3" cy="687.3" r="4.3" fill="#dabbbf" stroke="#9b7c83" stroke-width="0.9"/>
<path d="M992.3 687.3 L996.4 688.6 A4.3 4.3 0 1 1 992.3 683.0Z" fill="#e9c63b"/>
<path d="M992.3 687.3 V683.0" stroke="#9b7c83" stroke-width="0.6"/>
<circle cx="1005.9" cy="675.9" r="4.3" fill="#dabbbf" stroke="#9b7c83" stroke-width="0.9"/>
<path d="M1005.9 675.9 V671.6" stroke="#9b7c83" stroke-width="0.6"/>
<circle cx="997.6" cy="662.1" r="4.3" fill="#dabbbf" stroke="#9b7c83" stroke-width="0.9"/>
<path d="M997.6 662.1 V657.8" stroke="#9b7c83" stroke-width="0.6"/>
<circle cx="994.4" cy="719.3" r="4.3" fill="#dabbbf" stroke="#9b7c83" stroke-width="0.9"/>
<path d="M994.4 719.3 V715.0" stroke="#9b7c83" stroke-width="0.6"/>
<circle cx="1014.9" cy="705.1" r="4.3" fill="#dabbbf" stroke="#9b7c83" stroke-width="0.9"/>
<path d="M1014.9 705.1 V700.8" stroke="#9b7c83" stroke-width="0.6"/>
<circle cx="1019.7" cy="705.5" r="4.3" fill="#dabbbf" stroke="#9b7c83" stroke-width="0.9"/>
<path d="M1019.7 705.5 V701.2" stroke="#9b7c83" stroke-width="0.6"/>
<circle cx="1018.1" cy="700.8" r="4.3" fill="#dabbbf" stroke="#9b7c83" stroke-width="0.9"/>
<path d="M1018.1 700.8 V696.5" stroke="#9b7c83" stroke-width="0.6"/>
<circle cx="990.8" cy="669.2" r="4.3" fill="#dabbbf" stroke="#9b7c83" stroke-width="0.9"/>
<path d="M990.8 669.2 V664.9" stroke="#9b7c83" stroke-width="0.6"/>
<circle cx="995.4" cy="708.8" r="4.3" fill="#dabbbf" stroke="#9b7c83" stroke-width="0.9"/>
<path d="M995.4 708.8 V704.5" stroke="#9b7c83" stroke-width="0.6"/>
<circle cx="994.4" cy="688.1" r="4.3" fill="#dabbbf" stroke="#9b7c83" stroke-width="0.9"/>
<path d="M994.4 688.1 V683.8" stroke="#9b7c83" stroke-width="0.6"/>
<circle cx="989.3" cy="719.0" r="4.3" fill="#dabbbf" stroke="#9b7c83" stroke-width="0.9"/>
<path d="M989.3 719.0 V714.7" stroke="#9b7c83" stroke-width="0.6"/>
<circle cx="1010.8" cy="706.1" r="4.3" fill="#dabbbf" stroke="#9b7c83" stroke-width="0.9"/>
<path d="M1010.8 706.1 V701.8" stroke="#9b7c83" stroke-width="0.6"/>
<circle cx="994.9" cy="675.6" r="4.3" fill="#dabbbf" stroke="#9b7c83" stroke-width="0.9"/>
<path d="M994.9 675.6 V671.3" stroke="#9b7c83" stroke-width="0.6"/>
<circle cx="1000.7" cy="718.9" r="4.3" fill="#dabbbf" stroke="#9b7c83" stroke-width="0.9"/>
<path d="M1000.7 718.9 V714.6" stroke="#9b7c83" stroke-width="0.6"/>
<circle cx="992.2" cy="693.3" r="4.3" fill="#dabbbf" stroke="#9b7c83" stroke-width="0.9"/>
<circle cx="992.2" cy="693.3" r="4.3" fill="#e9c63b" stroke="#c4a02a" stroke-width="0.9"/>
<circle cx="1011.0" cy="688.8" r="4.3" fill="#dabbbf" stroke="#9b7c83" stroke-width="0.9"/>
<path d="M1011.0 688.8 V684.5" stroke="#9b7c83" stroke-width="0.6"/>
<circle cx="992.5" cy="707.7" r="4.3" fill="#dabbbf" stroke="#9b7c83" stroke-width="0.9"/>
<path d="M992.5 707.7 V703.4" stroke="#9b7c83" stroke-width="0.6"/>
<circle cx="1004.9" cy="689.5" r="4.3" fill="#dabbbf" stroke="#9b7c83" stroke-width="0.9"/>
<path d="M1004.9 689.5 V685.2" stroke="#9b7c83" stroke-width="0.6"/>
<circle cx="1000.9" cy="678.9" r="4.3" fill="#dabbbf" stroke="#9b7c83" stroke-width="0.9"/>
<path d="M1000.9 678.9 V674.6" stroke="#9b7c83" stroke-width="0.6"/>
<circle cx="1011.3" cy="675.7" r="4.3" fill="#dabbbf" stroke="#9b7c83" stroke-width="0.9"/>
<path d="M1011.3 675.7 V671.4" stroke="#9b7c83" stroke-width="0.6"/>
<circle cx="1003.3" cy="675.2" r="4.3" fill="#dabbbf" stroke="#9b7c83" stroke-width="0.9"/>
<path d="M1003.3 675.2 L999.2 676.5 A4.3 4.3 0 0 1 1003.3 670.9Z" fill="#e9c63b"/>
<path d="M1003.3 675.2 L1002.0 679.3 A4.3 4.3 0 0 1 999.2 676.5Z" fill="#2f3a3b"/>
<path d="M1003.3 675.2 V670.9" stroke="#9b7c83" stroke-width="0.6"/>
<circle cx="991.5" cy="704.8" r="4.3" fill="#dabbbf" stroke="#9b7c83" stroke-width="0.9"/>
<path d="M991.5 704.8 V700.5" stroke="#9b7c83" stroke-width="0.6"/>
<circle cx="1019.5" cy="717.7" r="4.3" fill="#dabbbf" stroke="#9b7c83" stroke-width="0.9"/>
<path d="M1019.5 717.7 V713.4" stroke="#9b7c83" stroke-width="0.6"/>
<circle cx="1004.5" cy="729.1" r="4.3" fill="#dabbbf" stroke="#9b7c83" stroke-width="0.9"/>
<path d="M1004.5 729.1 V724.8" stroke="#9b7c83" stroke-width="0.6"/>
<circle cx="1018.6" cy="714.2" r="4.3" fill="#dabbbf" stroke="#9b7c83" stroke-width="0.9"/>
<path d="M1018.6 714.2 V709.9" stroke="#9b7c83" stroke-width="0.6"/>
<circle cx="1021.8" cy="707.9" r="4.3" fill="#dabbbf" stroke="#9b7c83" stroke-width="0.9"/>
<path d="M1021.8 707.9 V703.6" stroke="#9b7c83" stroke-width="0.6"/>
<circle cx="1020.3" cy="693.7" r="4.3" fill="#dabbbf" stroke="#9b7c83" stroke-width="0.9"/>
<path d="M1020.3 693.7 V689.4" stroke="#9b7c83" stroke-width="0.6"/>
<circle cx="1027.4" cy="685.2" r="4.3" fill="#dabbbf" stroke="#9b7c83" stroke-width="0.9"/>
<path d="M1027.4 685.2 V680.9" stroke="#9b7c83" stroke-width="0.6"/>
<circle cx="999.0" cy="694.0" r="4.3" fill="#dabbbf" stroke="#9b7c83" stroke-width="0.9"/>
<path d="M999.0 694.0 V689.7" stroke="#9b7c83" stroke-width="0.6"/>
<circle cx="989.1" cy="681.5" r="4.3" fill="#dabbbf" stroke="#9b7c83" stroke-width="0.9"/>
<path d="M989.1 681.5 V677.2" stroke="#9b7c83" stroke-width="0.6"/>
<circle cx="999.3" cy="725.4" r="4.3" fill="#dabbbf" stroke="#9b7c83" stroke-width="0.9"/>
<path d="M999.3 725.4 V721.1" stroke="#9b7c83" stroke-width="0.6"/>
<circle cx="1000.5" cy="700.7" r="4.3" fill="#dabbbf" stroke="#9b7c83" stroke-width="0.9"/>
<path d="M1000.5 700.7 V696.4" stroke="#9b7c83" stroke-width="0.6"/>
<circle cx="992.5" cy="665.6" r="4.3" fill="#dabbbf" stroke="#9b7c83" stroke-width="0.9"/>
<path d="M992.5 665.6 V661.3" stroke="#9b7c83" stroke-width="0.6"/>
<circle cx="1016.1" cy="700.4" r="4.3" fill="#dabbbf" stroke="#9b7c83" stroke-width="0.9"/>
<path d="M1016.1 700.4 V696.1" stroke="#9b7c83" stroke-width="0.6"/>
<circle cx="991.0" cy="691.7" r="4.3" fill="#dabbbf" stroke="#9b7c83" stroke-width="0.9"/>
<path d="M991.0 691.7 V687.4" stroke="#9b7c83" stroke-width="0.6"/>
<circle cx="992.4" cy="688.3" r="4.3" fill="#dabbbf" stroke="#9b7c83" stroke-width="0.9"/>
<path d="M992.4 688.3 V684.0" stroke="#9b7c83" stroke-width="0.6"/>
<circle cx="1016.2" cy="707.9" r="4.3" fill="#dabbbf" stroke="#9b7c83" stroke-width="0.9"/>
<path d="M1016.2 707.9 V703.6" stroke="#9b7c83" stroke-width="0.6"/>
<circle cx="1012.6" cy="704.4" r="4.3" fill="#dabbbf" stroke="#9b7c83" stroke-width="0.9"/>
<path d="M1012.6 704.4 V700.1" stroke="#9b7c83" stroke-width="0.6"/>
<circle cx="1009.4" cy="675.3" r="4.3" fill="#dabbbf" stroke="#9b7c83" stroke-width="0.9"/>
<circle cx="1009.4" cy="675.3" r="4.3" fill="#e9c63b" stroke="#c4a02a" stroke-width="0.9"/>
<circle cx="1032.4" cy="698.8" r="4.3" fill="#dabbbf" stroke="#9b7c83" stroke-width="0.9"/>
<path d="M1032.4 698.8 V694.5" stroke="#9b7c83" stroke-width="0.6"/>
<circle cx="993.9" cy="670.2" r="4.3" fill="#dabbbf" stroke="#9b7c83" stroke-width="0.9"/>
<path d="M993.9 670.2 V665.9" stroke="#9b7c83" stroke-width="0.6"/>
<circle cx="988.6" cy="694.4" r="4.3" fill="#dabbbf" stroke="#9b7c83" stroke-width="0.9"/>
<path d="M988.6 694.4 V690.1" stroke="#9b7c83" stroke-width="0.6"/>
<circle cx="1012.0" cy="719.9" r="4.3" fill="#dabbbf" stroke="#9b7c83" stroke-width="0.9"/>
<circle cx="1012.0" cy="719.9" r="4.3" fill="#e9c63b" stroke="#c4a02a" stroke-width="0.9"/>
<circle cx="1021.3" cy="694.8" r="4.3" fill="#dabbbf" stroke="#9b7c83" stroke-width="0.9"/>
<path d="M1021.3 694.8 V690.5" stroke="#9b7c83" stroke-width="0.6"/>
<circle cx="1007.7" cy="689.9" r="4.3" fill="#dabbbf" stroke="#9b7c83" stroke-width="0.9"/>
<path d="M1007.7 689.9 V685.6" stroke="#9b7c83" stroke-width="0.6"/>
<circle cx="1001.4" cy="705.1" r="4.3" fill="#dabbbf" stroke="#9b7c83" stroke-width="0.9"/>
<path d="M1001.4 705.1 L997.3 706.4 A4.3 4.3 0 0 1 1001.4 700.8Z" fill="#e9c63b"/>
<path d="M1001.4 705.1 V700.8" stroke="#9b7c83" stroke-width="0.6"/>
<circle cx="1038.3" cy="695.7" r="4.3" fill="#dabbbf" stroke="#9b7c83" stroke-width="0.9"/>
<path d="M1038.3 695.7 V691.4" stroke="#9b7c83" stroke-width="0.6"/>
<circle cx="1022.6" cy="703.6" r="4.3" fill="#dabbbf" stroke="#9b7c83" stroke-width="0.9"/>
<path d="M1022.6 703.6 V699.3" stroke="#9b7c83" stroke-width="0.6"/>
<circle cx="1031.2" cy="685.8" r="4.3" fill="#dabbbf" stroke="#9b7c83" stroke-width="0.9"/>
<path d="M1031.2 685.8 V681.5" stroke="#9b7c83" stroke-width="0.6"/>
<circle cx="1011.2" cy="713.6" r="4.3" fill="#dabbbf" stroke="#9b7c83" stroke-width="0.9"/>
<path d="M1011.2 713.6 V709.3" stroke="#9b7c83" stroke-width="0.6"/>
<circle cx="1005.8" cy="689.7" r="4.3" fill="#dabbbf" stroke="#9b7c83" stroke-width="0.9"/>
<path d="M1005.8 689.7 V685.4" stroke="#9b7c83" stroke-width="0.6"/>
<circle cx="1029.1" cy="688.4" r="4.3" fill="#dabbbf" stroke="#9b7c83" stroke-width="0.9"/>
<path d="M1029.1 688.4 V684.1" stroke="#9b7c83" stroke-width="0.6"/>
<circle cx="996.1" cy="695.4" r="4.3" fill="#dabbbf" stroke="#9b7c83" stroke-width="0.9"/>
<path d="M996.1 695.4 V691.1" stroke="#9b7c83" stroke-width="0.6"/>
<circle cx="1018.9" cy="715.1" r="4.3" fill="#dabbbf" stroke="#9b7c83" stroke-width="0.9"/>
<path d="M1018.9 715.1 V710.8" stroke="#9b7c83" stroke-width="0.6"/>
<circle cx="998.8" cy="681.2" r="4.3" fill="#dabbbf" stroke="#9b7c83" stroke-width="0.9"/>
<path d="M998.8 681.2 V676.9" stroke="#9b7c83" stroke-width="0.6"/>
<circle cx="1017.7" cy="714.5" r="4.3" fill="#dabbbf" stroke="#9b7c83" stroke-width="0.9"/>
<path d="M1017.7 714.5 L1019.0 718.6 A4.3 4.3 0 1 1 1017.7 710.2Z" fill="#e9c63b"/>
<path d="M1017.7 714.5 V710.2" stroke="#9b7c83" stroke-width="0.6"/>
<circle cx="1004.1" cy="700.1" r="4.3" fill="#dabbbf" stroke="#9b7c83" stroke-width="0.9"/>
<path d="M1004.1 700.1 V695.8" stroke="#9b7c83" stroke-width="0.6"/>
<circle cx="1028.8" cy="693.3" r="4.3" fill="#dabbbf" stroke="#9b7c83" stroke-width="0.9"/>
<path d="M1028.8 693.3 V689.0" stroke="#9b7c83" stroke-width="0.6"/>
<circle cx="1012.3" cy="686.5" r="4.3" fill="#dabbbf" stroke="#9b7c83" stroke-width="0.9"/>
<path d="M1012.3 686.5 L1008.2 687.8 A4.3 4.3 0 0 1 1012.3 682.2Z" fill="#e9c63b"/>
<path d="M1012.3 686.5 L1015.8 689.0 A4.3 4.3 0 0 1 1008.2 687.8Z" fill="#2f3a3b"/>
<path d="M1012.3 686.5 V682.2" stroke="#9b7c83" stroke-width="0.6"/>
<circle cx="1017.6" cy="703.6" r="4.3" fill="#dabbbf" stroke="#9b7c83" stroke-width="0.9"/>
<path d="M1017.6 703.6 V699.3" stroke="#9b7c83" stroke-width="0.6"/>
<circle cx="1019.4" cy="720.4" r="4.3" fill="#dabbbf" stroke="#9b7c83" stroke-width="0.9"/>
<path d="M1019.4 720.4 V716.1" stroke="#9b7c83" stroke-width="0.6"/>
<circle cx="1022.2" cy="719.9" r="4.3" fill="#dabbbf" stroke="#9b7c83" stroke-width="0.9"/>
<path d="M1022.2 719.9 V715.6" stroke="#9b7c83" stroke-width="0.6"/>
<circle cx="1013.6" cy="700.4" r="4.3" fill="#dabbbf" stroke="#9b7c83" stroke-width="0.9"/>
<path d="M1013.6 700.4 V696.1" stroke="#9b7c83" stroke-width="0.6"/>
<circle cx="1009.6" cy="696.5" r="4.3" fill="#dabbbf" stroke="#9b7c83" stroke-width="0.9"/>
<path d="M1009.6 696.5 V692.2" stroke="#9b7c83" stroke-width="0.6"/>
<circle cx="1025.9" cy="689.6" r="4.3" fill="#dabbbf" stroke="#9b7c83" stroke-width="0.9"/>
<path d="M1025.9 689.6 V685.3" stroke="#9b7c83" stroke-width="0.6"/>
<circle cx="1004.0" cy="665.2" r="4.3" fill="#dabbbf" stroke="#9b7c83" stroke-width="0.9"/>
<path d="M1004.0 665.2 V660.9" stroke="#9b7c83" stroke-width="0.6"/>
<circle cx="1025.7" cy="698.4" r="4.3" fill="#dabbbf" stroke="#9b7c83" stroke-width="0.9"/>
<path d="M1025.7 698.4 L1021.4 698.4 A4.3 4.3 0 0 1 1025.7 694.1Z" fill="#2f3a3b"/>
<path d="M1025.7 698.4 V694.1" stroke="#9b7c83" stroke-width="0.6"/>
<circle cx="1033.2" cy="703.7" r="4.3" fill="#dabbbf" stroke="#9b7c83" stroke-width="0.9"/>
<path d="M1033.2 703.7 V699.4" stroke="#9b7c83" stroke-width="0.6"/>
<circle cx="993.0" cy="669.0" r="4.3" fill="#dabbbf" stroke="#9b7c83" stroke-width="0.9"/>
<path d="M993.0 669.0 V664.7" stroke="#9b7c83" stroke-width="0.6"/>
<circle cx="996.4" cy="699.7" r="4.3" fill="#dabbbf" stroke="#9b7c83" stroke-width="0.9"/>
<path d="M996.4 699.7 V695.4" stroke="#9b7c83" stroke-width="0.6"/>
<circle cx="1001.7" cy="712.0" r="4.3" fill="#dabbbf" stroke="#9b7c83" stroke-width="0.9"/>
<path d="M1001.7 712.0 V707.7" stroke="#9b7c83" stroke-width="0.6"/>
<circle cx="988.6" cy="712.8" r="4.3" fill="#dabbbf" stroke="#9b7c83" stroke-width="0.9"/>
<path d="M988.6 712.8 V708.5" stroke="#9b7c83" stroke-width="0.6"/>
<circle cx="1013.1" cy="694.9" r="4.3" fill="#dabbbf" stroke="#9b7c83" stroke-width="0.9"/>
<path d="M1013.1 694.9 V690.6" stroke="#9b7c83" stroke-width="0.6"/>
<circle cx="1020.8" cy="703.1" r="4.3" fill="#dabbbf" stroke="#9b7c83" stroke-width="0.9"/>
<path d="M1020.8 703.1 V698.8" stroke="#9b7c83" stroke-width="0.6"/>
<circle cx="998.6" cy="701.9" r="4.3" fill="#dabbbf" stroke="#9b7c83" stroke-width="0.9"/>
<path d="M998.6 701.9 V697.6" stroke="#9b7c83" stroke-width="0.6"/>
<circle cx="1029.6" cy="702.5" r="4.3" fill="#dabbbf" stroke="#9b7c83" stroke-width="0.9"/>
<path d="M1029.6 702.5 V698.2" stroke="#9b7c83" stroke-width="0.6"/>
<circle cx="1036.3" cy="710.7" r="4.3" fill="#dabbbf" stroke="#9b7c83" stroke-width="0.9"/>
<path d="M1036.3 710.7 V706.4" stroke="#9b7c83" stroke-width="0.6"/>
<circle cx="989.9" cy="727.1" r="4.3" fill="#dabbbf" stroke="#9b7c83" stroke-width="0.9"/>
<path d="M989.9 727.1 L986.4 729.6 A4.3 4.3 0 0 1 989.9 722.8Z" fill="#2f3a3b"/>
<path d="M989.9 727.1 V722.8" stroke="#9b7c83" stroke-width="0.6"/>
<circle cx="1017.4" cy="689.4" r="4.3" fill="#dabbbf" stroke="#9b7c83" stroke-width="0.9"/>
<path d="M1017.4 689.4 V685.1" stroke="#9b7c83" stroke-width="0.6"/>
<circle cx="1026.7" cy="725.6" r="4.3" fill="#dabbbf" stroke="#9b7c83" stroke-width="0.9"/>
<path d="M1026.7 725.6 V721.3" stroke="#9b7c83" stroke-width="0.6"/>
<circle cx="1013.7" cy="680.7" r="4.3" fill="#dabbbf" stroke="#9b7c83" stroke-width="0.9"/>
<path d="M1013.7 680.7 L1015.0 684.8 A4.3 4.3 0 1 1 1013.7 676.4Z" fill="#e9c63b"/>
<path d="M1013.7 680.7 V676.4" stroke="#9b7c83" stroke-width="0.6"/>
<circle cx="1029.1" cy="683.5" r="4.3" fill="#dabbbf" stroke="#9b7c83" stroke-width="0.9"/>
<path d="M1029.1 683.5 V679.2" stroke="#9b7c83" stroke-width="0.6"/>
<circle cx="1015.7" cy="681.8" r="4.3" fill="#dabbbf" stroke="#9b7c83" stroke-width="0.9"/>
<path d="M1015.7 681.8 V677.5" stroke="#9b7c83" stroke-width="0.6"/>
<circle cx="1032.7" cy="686.5" r="4.3" fill="#dabbbf" stroke="#9b7c83" stroke-width="0.9"/>
<path d="M1032.7 686.5 V682.2" stroke="#9b7c83" stroke-width="0.6"/>
<circle cx="1015.7" cy="722.2" r="4.3" fill="#dabbbf" stroke="#9b7c83" stroke-width="0.9"/>
<path d="M1015.7 722.2 V717.9" stroke="#9b7c83" stroke-width="0.6"/>
<circle cx="995.6" cy="689.7" r="4.3" fill="#dabbbf" stroke="#9b7c83" stroke-width="0.9"/>
<path d="M995.6 689.7 V685.4" stroke="#9b7c83" stroke-width="0.6"/>
<circle cx="1028.4" cy="721.6" r="4.3" fill="#dabbbf" stroke="#9b7c83" stroke-width="0.9"/>
<circle cx="1028.4" cy="721.6" r="4.3" fill="#e9c63b" stroke="#c4a02a" stroke-width="0.9"/>
<path d="M1028.4 721.6 L1028.4 717.3 A4.3 4.3 0 0 1 1030.9 718.1Z" fill="#d8524f"/>
<circle cx="988.7" cy="727.7" r="4.3" fill="#dabbbf" stroke="#9b7c83" stroke-width="0.9"/>
<path d="M988.7 727.7 V723.4" stroke="#9b7c83" stroke-width="0.6"/>
<circle cx="1012.5" cy="714.0" r="4.3" fill="#dabbbf" stroke="#9b7c83" stroke-width="0.9"/>
<path d="M1012.5 714.0 V709.7" stroke="#9b7c83" stroke-width="0.6"/>
<circle cx="1011.7" cy="697.7" r="4.3" fill="#dabbbf" stroke="#9b7c83" stroke-width="0.9"/>
<path d="M1011.7 697.7 V693.4" stroke="#9b7c83" stroke-width="0.6"/>
<circle cx="1002.7" cy="714.8" r="4.3" fill="#dabbbf" stroke="#9b7c83" stroke-width="0.9"/>
<path d="M1002.7 714.8 V710.5" stroke="#9b7c83" stroke-width="0.6"/>
<circle cx="1002.9" cy="697.8" r="4.3" fill="#dabbbf" stroke="#9b7c83" stroke-width="0.9"/>
<path d="M1002.9 697.8 V693.5" stroke="#9b7c83" stroke-width="0.6"/>
<circle cx="1001.1" cy="664.9" r="4.3" fill="#dabbbf" stroke="#9b7c83" stroke-width="0.9"/>
<path d="M1001.1 664.9 V660.6" stroke="#9b7c83" stroke-width="0.6"/>
<circle cx="1010.9" cy="678.5" r="4.3" fill="#dabbbf" stroke="#9b7c83" stroke-width="0.9"/>
<path d="M1010.9 678.5 V674.2" stroke="#9b7c83" stroke-width="0.6"/>
<circle cx="999.1" cy="695.4" r="4.3" fill="#dabbbf" stroke="#9b7c83" stroke-width="0.9"/>
<path d="M999.1 695.4 V691.1" stroke="#9b7c83" stroke-width="0.6"/>
<circle cx="992.6" cy="667.0" r="4.3" fill="#dabbbf" stroke="#9b7c83" stroke-width="0.9"/>
<path d="M992.6 667.0 V662.7" stroke="#9b7c83" stroke-width="0.6"/>
<circle cx="986.1" cy="775.0" r="4.3" fill="#dabbbf" stroke="#9b7c83" stroke-width="0.9"/>
<path d="M986.1 775.0 V770.7" stroke="#9b7c83" stroke-width="0.6"/>
<circle cx="983.3" cy="802.2" r="4.3" fill="#dabbbf" stroke="#9b7c83" stroke-width="0.9"/>
<path d="M983.3 802.2 V797.9" stroke="#9b7c83" stroke-width="0.6"/>
<circle cx="1023.0" cy="758.7" r="4.3" fill="#dabbbf" stroke="#9b7c83" stroke-width="0.9"/>
<path d="M1023.0 758.7 V754.4" stroke="#9b7c83" stroke-width="0.6"/>
<circle cx="1006.4" cy="736.8" r="4.3" fill="#dabbbf" stroke="#9b7c83" stroke-width="0.9"/>
<path d="M1006.4 736.8 V732.5" stroke="#9b7c83" stroke-width="0.6"/>
<circle cx="1005.1" cy="746.2" r="4.3" fill="#dabbbf" stroke="#9b7c83" stroke-width="0.9"/>
<path d="M1005.1 746.2 V741.9" stroke="#9b7c83" stroke-width="0.6"/>
<circle cx="996.1" cy="776.2" r="4.3" fill="#dabbbf" stroke="#9b7c83" stroke-width="0.9"/>
<path d="M996.1 776.2 V771.9" stroke="#9b7c83" stroke-width="0.6"/>
<circle cx="975.9" cy="796.0" r="4.3" fill="#dabbbf" stroke="#9b7c83" stroke-width="0.9"/>
<path d="M975.9 796.0 V791.7" stroke="#9b7c83" stroke-width="0.6"/>
<circle cx="1031.2" cy="759.2" r="4.3" fill="#dabbbf" stroke="#9b7c83" stroke-width="0.9"/>
<path d="M1031.2 759.2 L1027.1 760.5 A4.3 4.3 0 0 1 1031.2 754.9Z" fill="#e9c63b"/>
<path d="M1031.2 759.2 V754.9" stroke="#9b7c83" stroke-width="0.6"/>
<circle cx="1023.3" cy="765.5" r="4.3" fill="#dabbbf" stroke="#9b7c83" stroke-width="0.9"/>
<path d="M1023.3 765.5 V761.2" stroke="#9b7c83" stroke-width="0.6"/>
<circle cx="1005.8" cy="760.7" r="4.3" fill="#dabbbf" stroke="#9b7c83" stroke-width="0.9"/>
<path d="M1005.8 760.7 L1001.7 759.4 A4.3 4.3 0 0 1 1005.8 756.4Z" fill="#e9c63b"/>
<path d="M1005.8 760.7 L1002.3 763.2 A4.3 4.3 0 0 1 1001.7 759.4Z" fill="#2f3a3b"/>
<path d="M1005.8 760.7 V756.4" stroke="#9b7c83" stroke-width="0.6"/>
<circle cx="999.9" cy="743.8" r="4.3" fill="#dabbbf" stroke="#9b7c83" stroke-width="0.9"/>
<path d="M999.9 743.8 V739.5" stroke="#9b7c83" stroke-width="0.6"/>
<circle cx="1013.7" cy="743.0" r="4.3" fill="#dabbbf" stroke="#9b7c83" stroke-width="0.9"/>
<path d="M1013.7 743.0 V738.7" stroke="#9b7c83" stroke-width="0.6"/>
<circle cx="1002.9" cy="731.6" r="4.3" fill="#dabbbf" stroke="#9b7c83" stroke-width="0.9"/>
<path d="M1002.9 731.6 V727.3" stroke="#9b7c83" stroke-width="0.6"/>
<circle cx="984.0" cy="769.9" r="4.3" fill="#dabbbf" stroke="#9b7c83" stroke-width="0.9"/>
<path d="M984.0 769.9 V765.6" stroke="#9b7c83" stroke-width="0.6"/>
<circle cx="1016.3" cy="767.5" r="4.3" fill="#dabbbf" stroke="#9b7c83" stroke-width="0.9"/>
<path d="M1016.3 767.5 L1012.0 767.5 A4.3 4.3 0 0 1 1016.3 763.2Z" fill="#2f3a3b"/>
<path d="M1016.3 767.5 V763.2" stroke="#9b7c83" stroke-width="0.6"/>
<circle cx="986.6" cy="776.0" r="4.3" fill="#dabbbf" stroke="#9b7c83" stroke-width="0.9"/>
<path d="M986.6 776.0 V771.7" stroke="#9b7c83" stroke-width="0.6"/>
<circle cx="998.3" cy="742.7" r="4.3" fill="#dabbbf" stroke="#9b7c83" stroke-width="0.9"/>
<path d="M998.3 742.7 V738.4" stroke="#9b7c83" stroke-width="0.6"/>
<circle cx="976.7" cy="782.8" r="4.3" fill="#dabbbf" stroke="#9b7c83" stroke-width="0.9"/>
<path d="M976.7 782.8 L978.0 786.9 A4.3 4.3 0 1 1 976.7 778.5Z" fill="#e9c63b"/>
<path d="M976.7 782.8 V778.5" stroke="#9b7c83" stroke-width="0.6"/>
<circle cx="1007.1" cy="758.8" r="4.3" fill="#dabbbf" stroke="#9b7c83" stroke-width="0.9"/>
<path d="M1007.1 758.8 V754.5" stroke="#9b7c83" stroke-width="0.6"/>
<circle cx="1026.8" cy="759.8" r="4.3" fill="#dabbbf" stroke="#9b7c83" stroke-width="0.9"/>
<path d="M1026.8 759.8 L1022.7 761.1 A4.3 4.3 0 0 1 1026.8 755.5Z" fill="#e9c63b"/>
<path d="M1026.8 759.8 V755.5" stroke="#9b7c83" stroke-width="0.6"/>
<circle cx="989.3" cy="794.3" r="4.3" fill="#dabbbf" stroke="#9b7c83" stroke-width="0.9"/>
<path d="M989.3 794.3 V790.0" stroke="#9b7c83" stroke-width="0.6"/>
<circle cx="1007.7" cy="740.6" r="4.3" fill="#dabbbf" stroke="#9b7c83" stroke-width="0.9"/>
<path d="M1007.7 740.6 V736.3" stroke="#9b7c83" stroke-width="0.6"/>
<circle cx="971.1" cy="785.7" r="4.3" fill="#dabbbf" stroke="#9b7c83" stroke-width="0.9"/>
<path d="M971.1 785.7 V781.4" stroke="#9b7c83" stroke-width="0.6"/>
<circle cx="976.8" cy="798.1" r="4.3" fill="#dabbbf" stroke="#9b7c83" stroke-width="0.9"/>
<path d="M976.8 798.1 V793.8" stroke="#9b7c83" stroke-width="0.6"/>
<circle cx="993.9" cy="741.7" r="4.3" fill="#dabbbf" stroke="#9b7c83" stroke-width="0.9"/>
<path d="M993.9 741.7 V737.4" stroke="#9b7c83" stroke-width="0.6"/>
<circle cx="1021.3" cy="755.8" r="4.3" fill="#dabbbf" stroke="#9b7c83" stroke-width="0.9"/>
<path d="M1021.3 755.8 V751.5" stroke="#9b7c83" stroke-width="0.6"/>
<circle cx="999.0" cy="754.5" r="4.3" fill="#dabbbf" stroke="#9b7c83" stroke-width="0.9"/>
<path d="M999.0 754.5 V750.2" stroke="#9b7c83" stroke-width="0.6"/>
<circle cx="1010.3" cy="746.0" r="4.3" fill="#dabbbf" stroke="#9b7c83" stroke-width="0.9"/>
<path d="M1010.3 746.0 V741.7" stroke="#9b7c83" stroke-width="0.6"/>
<circle cx="986.0" cy="800.1" r="4.3" fill="#dabbbf" stroke="#9b7c83" stroke-width="0.9"/>
<path d="M986.0 800.1 L987.3 804.2 A4.3 4.3 0 1 1 986.0 795.8Z" fill="#e9c63b"/>
<path d="M986.0 800.1 V795.8" stroke="#9b7c83" stroke-width="0.6"/>
<circle cx="976.7" cy="779.9" r="4.3" fill="#dabbbf" stroke="#9b7c83" stroke-width="0.9"/>
<path d="M976.7 779.9 V775.6" stroke="#9b7c83" stroke-width="0.6"/>
<circle cx="1000.0" cy="769.7" r="4.3" fill="#dabbbf" stroke="#9b7c83" stroke-width="0.9"/>
<path d="M1000.0 769.7 V765.4" stroke="#9b7c83" stroke-width="0.6"/>
<circle cx="1006.0" cy="794.8" r="4.3" fill="#dabbbf" stroke="#9b7c83" stroke-width="0.9"/>
<path d="M1006.0 794.8 V790.5" stroke="#9b7c83" stroke-width="0.6"/>
<circle cx="1014.3" cy="789.4" r="4.3" fill="#dabbbf" stroke="#9b7c83" stroke-width="0.9"/>
<path d="M1014.3 789.4 V785.1" stroke="#9b7c83" stroke-width="0.6"/>
<circle cx="976.3" cy="782.2" r="4.3" fill="#dabbbf" stroke="#9b7c83" stroke-width="0.9"/>
<path d="M976.3 782.2 V777.9" stroke="#9b7c83" stroke-width="0.6"/>
<circle cx="1000.8" cy="795.7" r="4.3" fill="#dabbbf" stroke="#9b7c83" stroke-width="0.9"/>
<path d="M1000.8 795.7 V791.4" stroke="#9b7c83" stroke-width="0.6"/>
<circle cx="1000.7" cy="756.8" r="4.3" fill="#dabbbf" stroke="#9b7c83" stroke-width="0.9"/>
<path d="M1000.7 756.8 V752.5" stroke="#9b7c83" stroke-width="0.6"/>
<circle cx="1016.4" cy="739.9" r="4.3" fill="#dabbbf" stroke="#9b7c83" stroke-width="0.9"/>
<path d="M1016.4 739.9 V735.6" stroke="#9b7c83" stroke-width="0.6"/>
<circle cx="983.4" cy="773.8" r="4.3" fill="#dabbbf" stroke="#9b7c83" stroke-width="0.9"/>
<path d="M983.4 773.8 V769.5" stroke="#9b7c83" stroke-width="0.6"/>
<circle cx="1004.3" cy="797.1" r="4.3" fill="#dabbbf" stroke="#9b7c83" stroke-width="0.9"/>
<path d="M1004.3 797.1 V792.8" stroke="#9b7c83" stroke-width="0.6"/>
<circle cx="983.2" cy="794.9" r="4.3" fill="#dabbbf" stroke="#9b7c83" stroke-width="0.9"/>
<path d="M983.2 794.9 V790.6" stroke="#9b7c83" stroke-width="0.6"/>
<circle cx="1004.4" cy="800.2" r="4.3" fill="#dabbbf" stroke="#9b7c83" stroke-width="0.9"/>
<path d="M1004.4 800.2 V795.9" stroke="#9b7c83" stroke-width="0.6"/>
<circle cx="974.4" cy="787.1" r="4.3" fill="#dabbbf" stroke="#9b7c83" stroke-width="0.9"/>
<path d="M974.4 787.1 V782.8" stroke="#9b7c83" stroke-width="0.6"/>
<circle cx="969.1" cy="792.9" r="4.3" fill="#dabbbf" stroke="#9b7c83" stroke-width="0.9"/>
<path d="M969.1 792.9 L965.6 790.4 A4.3 4.3 0 0 1 969.1 788.6Z" fill="#2f3a3b"/>
<path d="M969.1 792.9 V788.6" stroke="#9b7c83" stroke-width="0.6"/>
<circle cx="973.7" cy="784.5" r="4.3" fill="#dabbbf" stroke="#9b7c83" stroke-width="0.9"/>
<path d="M973.7 784.5 V780.2" stroke="#9b7c83" stroke-width="0.6"/>
<circle cx="1004.4" cy="770.6" r="4.3" fill="#dabbbf" stroke="#9b7c83" stroke-width="0.9"/>
<path d="M1004.4 770.6 V766.3" stroke="#9b7c83" stroke-width="0.6"/>
<circle cx="974.1" cy="798.0" r="4.3" fill="#dabbbf" stroke="#9b7c83" stroke-width="0.9"/>
<path d="M974.1 798.0 V793.7" stroke="#9b7c83" stroke-width="0.6"/>
<circle cx="999.1" cy="768.9" r="4.3" fill="#dabbbf" stroke="#9b7c83" stroke-width="0.9"/>
<path d="M999.1 768.9 V764.6" stroke="#9b7c83" stroke-width="0.6"/>
<circle cx="976.3" cy="776.1" r="4.3" fill="#dabbbf" stroke="#9b7c83" stroke-width="0.9"/>
<path d="M976.3 776.1 V771.8" stroke="#9b7c83" stroke-width="0.6"/>
<circle cx="976.9" cy="774.6" r="4.3" fill="#dabbbf" stroke="#9b7c83" stroke-width="0.9"/>
<path d="M976.9 774.6 V770.3" stroke="#9b7c83" stroke-width="0.6"/>
<circle cx="978.0" cy="794.6" r="4.3" fill="#dabbbf" stroke="#9b7c83" stroke-width="0.9"/>
<path d="M978.0 794.6 V790.3" stroke="#9b7c83" stroke-width="0.6"/>
<circle cx="992.4" cy="762.6" r="4.3" fill="#dabbbf" stroke="#9b7c83" stroke-width="0.9"/>
<path d="M992.4 762.6 V758.3" stroke="#9b7c83" stroke-width="0.6"/>
<circle cx="1001.2" cy="760.6" r="4.3" fill="#dabbbf" stroke="#9b7c83" stroke-width="0.9"/>
<path d="M1001.2 760.6 V756.3" stroke="#9b7c83" stroke-width="0.6"/>
<circle cx="1017.3" cy="756.1" r="4.3" fill="#dabbbf" stroke="#9b7c83" stroke-width="0.9"/>
<path d="M1017.3 756.1 V751.8" stroke="#9b7c83" stroke-width="0.6"/>
<circle cx="989.0" cy="763.7" r="4.3" fill="#dabbbf" stroke="#9b7c83" stroke-width="0.9"/>
<path d="M989.0 763.7 V759.4" stroke="#9b7c83" stroke-width="0.6"/>
<circle cx="1008.0" cy="758.1" r="4.3" fill="#dabbbf" stroke="#9b7c83" stroke-width="0.9"/>
<path d="M1008.0 758.1 V753.8" stroke="#9b7c83" stroke-width="0.6"/>
<circle cx="999.8" cy="731.0" r="4.3" fill="#dabbbf" stroke="#9b7c83" stroke-width="0.9"/>
<path d="M999.8 731.0 L995.7 729.7 A4.3 4.3 0 0 1 999.8 726.7Z" fill="#e9c63b"/>
<path d="M999.8 731.0 L998.5 735.1 A4.3 4.3 0 0 1 995.7 729.7Z" fill="#2f3a3b"/>
<path d="M999.8 731.0 V726.7" stroke="#9b7c83" stroke-width="0.6"/>
<circle cx="1008.1" cy="793.2" r="4.3" fill="#dabbbf" stroke="#9b7c83" stroke-width="0.9"/>
<path d="M1008.1 793.2 V788.9" stroke="#9b7c83" stroke-width="0.6"/>
<circle cx="1008.6" cy="750.3" r="4.3" fill="#dabbbf" stroke="#9b7c83" stroke-width="0.9"/>
<path d="M1008.6 750.3 V746.0" stroke="#9b7c83" stroke-width="0.6"/>
<circle cx="985.0" cy="772.2" r="4.3" fill="#dabbbf" stroke="#9b7c83" stroke-width="0.9"/>
<path d="M985.0 772.2 V767.9" stroke="#9b7c83" stroke-width="0.6"/>
<circle cx="1007.3" cy="749.1" r="4.3" fill="#dabbbf" stroke="#9b7c83" stroke-width="0.9"/>
<path d="M1007.3 749.1 V744.8" stroke="#9b7c83" stroke-width="0.6"/>
<circle cx="995.3" cy="804.4" r="4.3" fill="#dabbbf" stroke="#9b7c83" stroke-width="0.9"/>
<path d="M995.3 804.4 V800.1" stroke="#9b7c83" stroke-width="0.6"/>
<circle cx="987.1" cy="780.5" r="4.3" fill="#dabbbf" stroke="#9b7c83" stroke-width="0.9"/>
<path d="M987.1 780.5 L983.0 781.8 A4.3 4.3 0 0 1 987.1 776.2Z" fill="#e9c63b"/>
<path d="M987.1 780.5 L990.6 783.0 A4.3 4.3 0 0 1 983.0 781.8Z" fill="#2f3a3b"/>
<path d="M987.1 780.5 V776.2" stroke="#9b7c83" stroke-width="0.6"/>
<circle cx="1005.3" cy="802.9" r="4.3" fill="#dabbbf" stroke="#9b7c83" stroke-width="0.9"/>
<path d="M1005.3 802.9 V798.6" stroke="#9b7c83" stroke-width="0.6"/>
<circle cx="1000.3" cy="799.2" r="4.3" fill="#dabbbf" stroke="#9b7c83" stroke-width="0.9"/>
<path d="M1000.3 799.2 V794.9" stroke="#9b7c83" stroke-width="0.6"/>
<circle cx="1004.5" cy="751.0" r="4.3" fill="#dabbbf" stroke="#9b7c83" stroke-width="0.9"/>
<path d="M1004.5 751.0 V746.7" stroke="#9b7c83" stroke-width="0.6"/>
<circle cx="1014.9" cy="752.0" r="4.3" fill="#dabbbf" stroke="#9b7c83" stroke-width="0.9"/>
<path d="M1014.9 752.0 V747.7" stroke="#9b7c83" stroke-width="0.6"/>
<circle cx="1012.0" cy="746.9" r="4.3" fill="#dabbbf" stroke="#9b7c83" stroke-width="0.9"/>
<path d="M1012.0 746.9 V742.6" stroke="#9b7c83" stroke-width="0.6"/>
<circle cx="1002.6" cy="758.3" r="4.3" fill="#dabbbf" stroke="#9b7c83" stroke-width="0.9"/>
<path d="M1002.6 758.3 V754.0" stroke="#9b7c83" stroke-width="0.6"/>
<circle cx="987.0" cy="767.1" r="4.3" fill="#dabbbf" stroke="#9b7c83" stroke-width="0.9"/>
<path d="M987.0 767.1 V762.8" stroke="#9b7c83" stroke-width="0.6"/>
<circle cx="979.6" cy="772.5" r="4.3" fill="#dabbbf" stroke="#9b7c83" stroke-width="0.9"/>
<path d="M979.6 772.5 V768.2" stroke="#9b7c83" stroke-width="0.6"/>
<circle cx="992.9" cy="802.3" r="4.3" fill="#dabbbf" stroke="#9b7c83" stroke-width="0.9"/>
<path d="M992.9 802.3 V798.0" stroke="#9b7c83" stroke-width="0.6"/>
<circle cx="1028.5" cy="754.9" r="4.3" fill="#dabbbf" stroke="#9b7c83" stroke-width="0.9"/>
<path d="M1028.5 754.9 V750.6" stroke="#9b7c83" stroke-width="0.6"/>
<circle cx="984.8" cy="798.7" r="4.3" fill="#dabbbf" stroke="#9b7c83" stroke-width="0.9"/>
<path d="M984.8 798.7 V794.4" stroke="#9b7c83" stroke-width="0.6"/>
<circle cx="1002.8" cy="777.2" r="4.3" fill="#dabbbf" stroke="#9b7c83" stroke-width="0.9"/>
<path d="M1002.8 777.2 V772.9" stroke="#9b7c83" stroke-width="0.6"/>
<circle cx="1009.6" cy="770.2" r="4.3" fill="#dabbbf" stroke="#9b7c83" stroke-width="0.9"/>
<path d="M1009.6 770.2 V765.9" stroke="#9b7c83" stroke-width="0.6"/>
<circle cx="990.2" cy="789.6" r="4.3" fill="#dabbbf" stroke="#9b7c83" stroke-width="0.9"/>
<path d="M990.2 789.6 V785.3" stroke="#9b7c83" stroke-width="0.6"/>
<circle cx="1027.3" cy="762.3" r="4.3" fill="#dabbbf" stroke="#9b7c83" stroke-width="0.9"/>
<path d="M1027.3 762.3 V758.0" stroke="#9b7c83" stroke-width="0.6"/>
<circle cx="1006.6" cy="751.2" r="4.3" fill="#dabbbf" stroke="#9b7c83" stroke-width="0.9"/>
<path d="M1006.6 751.2 V746.9" stroke="#9b7c83" stroke-width="0.6"/>
<circle cx="973.6" cy="796.9" r="4.3" fill="#dabbbf" stroke="#9b7c83" stroke-width="0.9"/>
<path d="M973.6 796.9 V792.6" stroke="#9b7c83" stroke-width="0.6"/>
<circle cx="1007.9" cy="779.3" r="4.3" fill="#dabbbf" stroke="#9b7c83" stroke-width="0.9"/>
<path d="M1007.9 779.3 V775.0" stroke="#9b7c83" stroke-width="0.6"/>
<circle cx="994.0" cy="737.5" r="4.3" fill="#dabbbf" stroke="#9b7c83" stroke-width="0.9"/>
<path d="M994.0 737.5 V733.2" stroke="#9b7c83" stroke-width="0.6"/>
<circle cx="1002.7" cy="738.6" r="4.3" fill="#dabbbf" stroke="#9b7c83" stroke-width="0.9"/>
<path d="M1002.7 738.6 V734.3" stroke="#9b7c83" stroke-width="0.6"/>
<circle cx="1021.9" cy="751.4" r="4.3" fill="#dabbbf" stroke="#9b7c83" stroke-width="0.9"/>
<path d="M1021.9 751.4 V747.1" stroke="#9b7c83" stroke-width="0.6"/>
<circle cx="974.6" cy="796.6" r="4.3" fill="#dabbbf" stroke="#9b7c83" stroke-width="0.9"/>
<path d="M974.6 796.6 V792.3" stroke="#9b7c83" stroke-width="0.6"/>
<circle cx="990.1" cy="770.9" r="4.3" fill="#dabbbf" stroke="#9b7c83" stroke-width="0.9"/>
<path d="M990.1 770.9 V766.6" stroke="#9b7c83" stroke-width="0.6"/>
<circle cx="1009.0" cy="729.9" r="4.3" fill="#dabbbf" stroke="#9b7c83" stroke-width="0.9"/>
<path d="M1009.0 729.9 V725.6" stroke="#9b7c83" stroke-width="0.6"/>
<circle cx="1030.9" cy="759.4" r="4.3" fill="#dabbbf" stroke="#9b7c83" stroke-width="0.9"/>
<path d="M1030.9 759.4 V755.1" stroke="#9b7c83" stroke-width="0.6"/>
<circle cx="1001.9" cy="792.7" r="4.3" fill="#dabbbf" stroke="#9b7c83" stroke-width="0.9"/>
<path d="M1001.9 792.7 V788.4" stroke="#9b7c83" stroke-width="0.6"/>
<circle cx="1020.1" cy="755.4" r="4.3" fill="#dabbbf" stroke="#9b7c83" stroke-width="0.9"/>
<path d="M1020.1 755.4 V751.1" stroke="#9b7c83" stroke-width="0.6"/>
<circle cx="1006.5" cy="748.5" r="4.3" fill="#dabbbf" stroke="#9b7c83" stroke-width="0.9"/>
<path d="M1006.5 748.5 V744.2" stroke="#9b7c83" stroke-width="0.6"/>
<circle cx="983.9" cy="800.1" r="4.3" fill="#dabbbf" stroke="#9b7c83" stroke-width="0.9"/>
<path d="M983.9 800.1 V795.8" stroke="#9b7c83" stroke-width="0.6"/>
<circle cx="1001.9" cy="754.0" r="4.3" fill="#dabbbf" stroke="#9b7c83" stroke-width="0.9"/>
<path d="M1001.9 754.0 V749.7" stroke="#9b7c83" stroke-width="0.6"/>
<circle cx="995.5" cy="794.5" r="4.3" fill="#dabbbf" stroke="#9b7c83" stroke-width="0.9"/>
<path d="M995.5 794.5 V790.2" stroke="#9b7c83" stroke-width="0.6"/>
<circle cx="995.1" cy="766.0" r="4.3" fill="#dabbbf" stroke="#9b7c83" stroke-width="0.9"/>
<path d="M995.1 766.0 L996.4 770.1 A4.3 4.3 0 1 1 995.1 761.7Z" fill="#e9c63b"/>
<path d="M995.1 766.0 V761.7" stroke="#9b7c83" stroke-width="0.6"/>
<circle cx="1001.1" cy="737.2" r="4.3" fill="#dabbbf" stroke="#9b7c83" stroke-width="0.9"/>
<path d="M1001.1 737.2 V732.9" stroke="#9b7c83" stroke-width="0.6"/>
<circle cx="993.2" cy="773.7" r="4.3" fill="#dabbbf" stroke="#9b7c83" stroke-width="0.9"/>
<path d="M993.2 773.7 V769.4" stroke="#9b7c83" stroke-width="0.6"/>
<circle cx="998.7" cy="764.1" r="4.3" fill="#dabbbf" stroke="#9b7c83" stroke-width="0.9"/>
<path d="M998.7 764.1 V759.8" stroke="#9b7c83" stroke-width="0.6"/>
<circle cx="1001.5" cy="793.8" r="4.3" fill="#dabbbf" stroke="#9b7c83" stroke-width="0.9"/>
<path d="M1001.5 793.8 V789.5" stroke="#9b7c83" stroke-width="0.6"/>
<circle cx="987.9" cy="806.6" r="4.3" fill="#dabbbf" stroke="#9b7c83" stroke-width="0.9"/>
<path d="M987.9 806.6 V802.3" stroke="#9b7c83" stroke-width="0.6"/>
<circle cx="1000.3" cy="738.1" r="4.3" fill="#dabbbf" stroke="#9b7c83" stroke-width="0.9"/>
<path d="M1000.3 738.1 V733.8" stroke="#9b7c83" stroke-width="0.6"/>
<circle cx="1011.7" cy="794.1" r="4.3" fill="#dabbbf" stroke="#9b7c83" stroke-width="0.9"/>
<path d="M1011.7 794.1 V789.8" stroke="#9b7c83" stroke-width="0.6"/>
<circle cx="1024.4" cy="762.6" r="4.3" fill="#dabbbf" stroke="#9b7c83" stroke-width="0.9"/>
<path d="M1024.4 762.6 L1020.3 763.9 A4.3 4.3 0 0 1 1024.4 758.3Z" fill="#e9c63b"/>
<path d="M1024.4 762.6 L1025.7 766.7 A4.3 4.3 0 0 1 1020.3 763.9Z" fill="#2f3a3b"/>
<path d="M1024.4 762.6 V758.3" stroke="#9b7c83" stroke-width="0.6"/>
<circle cx="980.8" cy="799.8" r="4.3" fill="#dabbbf" stroke="#9b7c83" stroke-width="0.9"/>
<path d="M980.8 799.8 V795.5" stroke="#9b7c83" stroke-width="0.6"/>
<circle cx="974.3" cy="774.3" r="4.3" fill="#dabbbf" stroke="#9b7c83" stroke-width="0.9"/>
<path d="M974.3 774.3 V770.0" stroke="#9b7c83" stroke-width="0.6"/>
<circle cx="1013.8" cy="784.0" r="4.3" fill="#dabbbf" stroke="#9b7c83" stroke-width="0.9"/>
<path d="M1013.8 784.0 L1009.7 785.3 A4.3 4.3 0 0 1 1013.8 779.7Z" fill="#e9c63b"/>
<path d="M1013.8 784.0 V779.7" stroke="#9b7c83" stroke-width="0.6"/>
<circle cx="1011.7" cy="729.7" r="4.3" fill="#dabbbf" stroke="#9b7c83" stroke-width="0.9"/>
<path d="M1011.7 729.7 V725.4" stroke="#9b7c83" stroke-width="0.6"/>
<circle cx="1010.3" cy="744.9" r="4.3" fill="#dabbbf" stroke="#9b7c83" stroke-width="0.9"/>
<path d="M1010.3 744.9 V740.6" stroke="#9b7c83" stroke-width="0.6"/>
<circle cx="1002.9" cy="750.4" r="4.3" fill="#dabbbf" stroke="#9b7c83" stroke-width="0.9"/>
<path d="M1002.9 750.4 V746.1" stroke="#9b7c83" stroke-width="0.6"/>
<circle cx="1004.3" cy="761.8" r="4.3" fill="#dabbbf" stroke="#9b7c83" stroke-width="0.9"/>
<path d="M1004.3 761.8 L1000.2 763.1 A4.3 4.3 0 0 1 1004.3 757.5Z" fill="#e9c63b"/>
<path d="M1004.3 761.8 L1003.0 765.9 A4.3 4.3 0 0 1 1000.2 763.1Z" fill="#2f3a3b"/>
<path d="M1004.3 761.8 V757.5" stroke="#9b7c83" stroke-width="0.6"/>
<circle cx="1016.2" cy="737.8" r="4.3" fill="#dabbbf" stroke="#9b7c83" stroke-width="0.9"/>
<path d="M1016.2 737.8 L1012.1 739.1 A4.3 4.3 0 0 1 1016.2 733.5Z" fill="#e9c63b"/>
<path d="M1016.2 737.8 L1014.9 741.9 A4.3 4.3 0 0 1 1012.1 739.1Z" fill="#2f3a3b"/>
<path d="M1016.2 737.8 V733.5" stroke="#9b7c83" stroke-width="0.6"/>
<circle cx="998.9" cy="766.3" r="4.3" fill="#dabbbf" stroke="#9b7c83" stroke-width="0.9"/>
<path d="M998.9 766.3 V762.0" stroke="#9b7c83" stroke-width="0.6"/>
<circle cx="1018.8" cy="780.7" r="4.3" fill="#dabbbf" stroke="#9b7c83" stroke-width="0.9"/>
<path d="M1018.8 780.7 V776.4" stroke="#9b7c83" stroke-width="0.6"/>
<circle cx="1004.6" cy="740.7" r="4.3" fill="#dabbbf" stroke="#9b7c83" stroke-width="0.9"/>
<path d="M1004.6 740.7 V736.4" stroke="#9b7c83" stroke-width="0.6"/>
<circle cx="1007.8" cy="797.2" r="4.3" fill="#dabbbf" stroke="#9b7c83" stroke-width="0.9"/>
<path d="M1007.8 797.2 V792.9" stroke="#9b7c83" stroke-width="0.6"/>
<circle cx="1007.5" cy="730.9" r="4.3" fill="#dabbbf" stroke="#9b7c83" stroke-width="0.9"/>
<path d="M1007.5 730.9 V726.6" stroke="#9b7c83" stroke-width="0.6"/>
<circle cx="992.9" cy="789.7" r="4.3" fill="#dabbbf" stroke="#9b7c83" stroke-width="0.9"/>
<path d="M992.9 789.7 L988.8 791.0 A4.3 4.3 0 0 1 992.9 785.4Z" fill="#e9c63b"/>
<path d="M992.9 789.7 V785.4" stroke="#9b7c83" stroke-width="0.6"/>
<circle cx="987.7" cy="800.3" r="4.3" fill="#dabbbf" stroke="#9b7c83" stroke-width="0.9"/>
<path d="M987.7 800.3 V796.0" stroke="#9b7c83" stroke-width="0.6"/>
<circle cx="987.0" cy="776.9" r="4.3" fill="#dabbbf" stroke="#9b7c83" stroke-width="0.9"/>
<path d="M987.0 776.9 V772.6" stroke="#9b7c83" stroke-width="0.6"/>
<circle cx="999.2" cy="804.3" r="4.3" fill="#dabbbf" stroke="#9b7c83" stroke-width="0.9"/>
<path d="M999.2 804.3 V800.0" stroke="#9b7c83" stroke-width="0.6"/>
<circle cx="992.5" cy="786.1" r="4.3" fill="#dabbbf" stroke="#9b7c83" stroke-width="0.9"/>
<path d="M992.5 786.1 V781.8" stroke="#9b7c83" stroke-width="0.6"/>
<circle cx="987.3" cy="798.4" r="4.3" fill="#dabbbf" stroke="#9b7c83" stroke-width="0.9"/>
<path d="M987.3 798.4 V794.1" stroke="#9b7c83" stroke-width="0.6"/>
<circle cx="1018.3" cy="748.6" r="4.3" fill="#dabbbf" stroke="#9b7c83" stroke-width="0.9"/>
<path d="M1018.3 748.6 V744.3" stroke="#9b7c83" stroke-width="0.6"/>
<circle cx="1029.7" cy="752.3" r="4.3" fill="#dabbbf" stroke="#9b7c83" stroke-width="0.9"/>
<path d="M1029.7 752.3 V748.0" stroke="#9b7c83" stroke-width="0.6"/>
<circle cx="974.9" cy="771.5" r="4.3" fill="#dabbbf" stroke="#9b7c83" stroke-width="0.9"/>
<path d="M974.9 771.5 V767.2" stroke="#9b7c83" stroke-width="0.6"/>
<circle cx="993.3" cy="734.5" r="4.3" fill="#dabbbf" stroke="#9b7c83" stroke-width="0.9"/>
<path d="M993.3 734.5 L989.2 735.8 A4.3 4.3 0 0 1 993.3 730.2Z" fill="#e9c63b"/>
<path d="M993.3 734.5 L994.6 738.6 A4.3 4.3 0 0 1 989.2 735.8Z" fill="#2f3a3b"/>
<path d="M993.3 734.5 V730.2" stroke="#9b7c83" stroke-width="0.6"/>
<circle cx="1012.7" cy="736.7" r="4.3" fill="#dabbbf" stroke="#9b7c83" stroke-width="0.9"/>
<path d="M1012.7 736.7 V732.4" stroke="#9b7c83" stroke-width="0.6"/>
<circle cx="995.9" cy="795.4" r="4.3" fill="#dabbbf" stroke="#9b7c83" stroke-width="0.9"/>
<path d="M995.9 795.4 V791.1" stroke="#9b7c83" stroke-width="0.6"/>
<circle cx="1013.8" cy="759.1" r="4.3" fill="#dabbbf" stroke="#9b7c83" stroke-width="0.9"/>
<path d="M1013.8 759.1 V754.8" stroke="#9b7c83" stroke-width="0.6"/>
<circle cx="980.8" cy="804.4" r="4.3" fill="#dabbbf" stroke="#9b7c83" stroke-width="0.9"/>
<path d="M980.8 804.4 V800.1" stroke="#9b7c83" stroke-width="0.6"/>
<circle cx="982.1" cy="765.1" r="4.3" fill="#dabbbf" stroke="#9b7c83" stroke-width="0.9"/>
<path d="M982.1 765.1 L978.0 763.8 A4.3 4.3 0 0 1 982.1 760.8Z" fill="#e9c63b"/>
<path d="M982.1 765.1 L983.4 769.2 A4.3 4.3 0 0 1 978.0 763.8Z" fill="#2f3a3b"/>
<path d="M982.1 765.1 V760.8" stroke="#9b7c83" stroke-width="0.6"/>
<circle cx="1005.7" cy="764.1" r="4.3" fill="#dabbbf" stroke="#9b7c83" stroke-width="0.9"/>
<path d="M1005.7 764.1 V759.8" stroke="#9b7c83" stroke-width="0.6"/>
<circle cx="1001.8" cy="761.3" r="4.3" fill="#dabbbf" stroke="#9b7c83" stroke-width="0.9"/>
<path d="M1001.8 761.3 V757.0" stroke="#9b7c83" stroke-width="0.6"/>
<circle cx="975.5" cy="788.6" r="4.3" fill="#dabbbf" stroke="#9b7c83" stroke-width="0.9"/>
<path d="M975.5 788.6 V784.3" stroke="#9b7c83" stroke-width="0.6"/>
<circle cx="973.4" cy="796.6" r="4.3" fill="#dabbbf" stroke="#9b7c83" stroke-width="0.9"/>
<path d="M973.4 796.6 V792.3" stroke="#9b7c83" stroke-width="0.6"/>
<circle cx="1013.5" cy="740.8" r="4.3" fill="#dabbbf" stroke="#9b7c83" stroke-width="0.9"/>
<path d="M1013.5 740.8 L1014.8 744.9 A4.3 4.3 0 1 1 1013.5 736.5Z" fill="#e9c63b"/>
<path d="M1013.5 740.8 L1013.5 736.5 A4.3 4.3 0 0 1 1016.0 737.3Z" fill="#d8524f"/>
<path d="M1013.5 740.8 V736.5" stroke="#9b7c83" stroke-width="0.6"/>
<circle cx="978.8" cy="796.5" r="4.3" fill="#dabbbf" stroke="#9b7c83" stroke-width="0.9"/>
<path d="M978.8 796.5 V792.2" stroke="#9b7c83" stroke-width="0.6"/>
<circle cx="1010.0" cy="738.0" r="4.3" fill="#dabbbf" stroke="#9b7c83" stroke-width="0.9"/>
<path d="M1010.0 738.0 V733.7" stroke="#9b7c83" stroke-width="0.6"/>
<circle cx="990.7" cy="768.9" r="4.3" fill="#dabbbf" stroke="#9b7c83" stroke-width="0.9"/>
<path d="M990.7 768.9 V764.6" stroke="#9b7c83" stroke-width="0.6"/>
<circle cx="1013.4" cy="751.7" r="4.3" fill="#dabbbf" stroke="#9b7c83" stroke-width="0.9"/>
<path d="M1013.4 751.7 V747.4" stroke="#9b7c83" stroke-width="0.6"/>
<circle cx="1010.0" cy="757.1" r="4.3" fill="#dabbbf" stroke="#9b7c83" stroke-width="0.9"/>
<path d="M1010.0 757.1 V752.8" stroke="#9b7c83" stroke-width="0.6"/>
<circle cx="1009.7" cy="784.6" r="4.3" fill="#dabbbf" stroke="#9b7c83" stroke-width="0.9"/>
<path d="M1009.7 784.6 V780.3" stroke="#9b7c83" stroke-width="0.6"/>
<circle cx="1021.7" cy="757.2" r="4.3" fill="#dabbbf" stroke="#9b7c83" stroke-width="0.9"/>
<path d="M1021.7 757.2 V752.9" stroke="#9b7c83" stroke-width="0.6"/>
<circle cx="1013.2" cy="732.6" r="4.3" fill="#dabbbf" stroke="#9b7c83" stroke-width="0.9"/>
<path d="M1013.2 732.6 L1011.9 736.7 A4.3 4.3 0 0 1 1013.2 728.3Z" fill="#e9c63b"/>
<path d="M1013.2 732.6 V728.3" stroke="#9b7c83" stroke-width="0.6"/>
<circle cx="1016.0" cy="741.7" r="4.3" fill="#dabbbf" stroke="#9b7c83" stroke-width="0.9"/>
<path d="M1016.0 741.7 V737.4" stroke="#9b7c83" stroke-width="0.6"/>
<circle cx="1002.9" cy="779.0" r="4.3" fill="#dabbbf" stroke="#9b7c83" stroke-width="0.9"/>
<path d="M1002.9 779.0 V774.7" stroke="#9b7c83" stroke-width="0.6"/>
<circle cx="1003.7" cy="747.3" r="4.3" fill="#dabbbf" stroke="#9b7c83" stroke-width="0.9"/>
<path d="M1003.7 747.3 V743.0" stroke="#9b7c83" stroke-width="0.6"/>
<circle cx="1000.9" cy="802.4" r="4.3" fill="#dabbbf" stroke="#9b7c83" stroke-width="0.9"/>
<path d="M1000.9 802.4 V798.1" stroke="#9b7c83" stroke-width="0.6"/>
<circle cx="1004.4" cy="803.2" r="4.3" fill="#dabbbf" stroke="#9b7c83" stroke-width="0.9"/>
<path d="M1004.4 803.2 L1000.3 801.9 A4.3 4.3 0 0 1 1004.4 798.9Z" fill="#e9c63b"/>
<path d="M1004.4 803.2 L1005.7 807.3 A4.3 4.3 0 0 1 1000.3 801.9Z" fill="#2f3a3b"/>
<path d="M1004.4 803.2 V798.9" stroke="#9b7c83" stroke-width="0.6"/>
<circle cx="1005.0" cy="784.3" r="4.3" fill="#dabbbf" stroke="#9b7c83" stroke-width="0.9"/>
<path d="M1005.0 784.3 V780.0" stroke="#9b7c83" stroke-width="0.6"/>
<circle cx="1011.1" cy="732.3" r="4.3" fill="#dabbbf" stroke="#9b7c83" stroke-width="0.9"/>
<path d="M1011.1 732.3 V728.0" stroke="#9b7c83" stroke-width="0.6"/>
<circle cx="1017.3" cy="756.6" r="4.3" fill="#dabbbf" stroke="#9b7c83" stroke-width="0.9"/>
<path d="M1017.3 756.6 V752.3" stroke="#9b7c83" stroke-width="0.6"/>
<circle cx="994.2" cy="788.1" r="4.3" fill="#dabbbf" stroke="#9b7c83" stroke-width="0.9"/>
<path d="M994.2 788.1 V783.8" stroke="#9b7c83" stroke-width="0.6"/>
<circle cx="1006.9" cy="746.8" r="4.3" fill="#dabbbf" stroke="#9b7c83" stroke-width="0.9"/>
<path d="M1006.9 746.8 V742.5" stroke="#9b7c83" stroke-width="0.6"/>
<circle cx="989.9" cy="804.3" r="4.3" fill="#dabbbf" stroke="#9b7c83" stroke-width="0.9"/>
<path d="M989.9 804.3 V800.0" stroke="#9b7c83" stroke-width="0.6"/>
<circle cx="989.3" cy="769.1" r="4.3" fill="#dabbbf" stroke="#9b7c83" stroke-width="0.9"/>
<path d="M989.3 769.1 V764.8" stroke="#9b7c83" stroke-width="0.6"/>
<circle cx="1000.1" cy="782.8" r="4.3" fill="#dabbbf" stroke="#9b7c83" stroke-width="0.9"/>
<path d="M1000.1 782.8 V778.5" stroke="#9b7c83" stroke-width="0.6"/>
<circle cx="1010.6" cy="796.2" r="4.3" fill="#dabbbf" stroke="#9b7c83" stroke-width="0.9"/>
<path d="M1010.6 796.2 V791.9" stroke="#9b7c83" stroke-width="0.6"/>
<circle cx="998.9" cy="744.3" r="4.3" fill="#dabbbf" stroke="#9b7c83" stroke-width="0.9"/>
<path d="M998.9 744.3 V740.0" stroke="#9b7c83" stroke-width="0.6"/>
<circle cx="1020.4" cy="773.5" r="4.3" fill="#dabbbf" stroke="#9b7c83" stroke-width="0.9"/>
<path d="M1020.4 773.5 V769.2" stroke="#9b7c83" stroke-width="0.6"/>
<circle cx="978.0" cy="791.0" r="4.3" fill="#dabbbf" stroke="#9b7c83" stroke-width="0.9"/>
<path d="M978.0 791.0 V786.7" stroke="#9b7c83" stroke-width="0.6"/>
<circle cx="984.2" cy="805.4" r="4.3" fill="#dabbbf" stroke="#9b7c83" stroke-width="0.9"/>
<path d="M984.2 805.4 V801.1" stroke="#9b7c83" stroke-width="0.6"/>
<circle cx="1008.3" cy="740.2" r="4.3" fill="#dabbbf" stroke="#9b7c83" stroke-width="0.9"/>
<path d="M1008.3 740.2 V735.9" stroke="#9b7c83" stroke-width="0.6"/>
<circle cx="998.7" cy="767.5" r="4.3" fill="#dabbbf" stroke="#9b7c83" stroke-width="0.9"/>
<path d="M998.7 767.5 V763.2" stroke="#9b7c83" stroke-width="0.6"/>
<circle cx="976.0" cy="779.9" r="4.3" fill="#dabbbf" stroke="#9b7c83" stroke-width="0.9"/>
<path d="M976.0 779.9 V775.6" stroke="#9b7c83" stroke-width="0.6"/>
<circle cx="976.0" cy="785.2" r="4.3" fill="#dabbbf" stroke="#9b7c83" stroke-width="0.9"/>
<path d="M976.0 785.2 V780.9" stroke="#9b7c83" stroke-width="0.6"/>
<circle cx="982.9" cy="779.0" r="4.3" fill="#dabbbf" stroke="#9b7c83" stroke-width="0.9"/>
<path d="M982.9 779.0 L978.6 779.0 A4.3 4.3 0 0 1 982.9 774.7Z" fill="#2f3a3b"/>
<path d="M982.9 779.0 V774.7" stroke="#9b7c83" stroke-width="0.6"/>
<circle cx="1010.9" cy="741.6" r="4.3" fill="#dabbbf" stroke="#9b7c83" stroke-width="0.9"/>
<path d="M1010.9 741.6 V737.3" stroke="#9b7c83" stroke-width="0.6"/>
<circle cx="1021.3" cy="761.4" r="4.3" fill="#dabbbf" stroke="#9b7c83" stroke-width="0.9"/>
<path d="M1021.3 761.4 V757.1" stroke="#9b7c83" stroke-width="0.6"/>
<circle cx="1011.7" cy="730.4" r="4.3" fill="#dabbbf" stroke="#9b7c83" stroke-width="0.9"/>
<path d="M1011.7 730.4 V726.1" stroke="#9b7c83" stroke-width="0.6"/>
<circle cx="987.3" cy="805.4" r="4.3" fill="#dabbbf" stroke="#9b7c83" stroke-width="0.9"/>
<path d="M987.3 805.4 V801.1" stroke="#9b7c83" stroke-width="0.6"/>
<circle cx="996.0" cy="774.3" r="4.3" fill="#dabbbf" stroke="#9b7c83" stroke-width="0.9"/>
<path d="M996.0 774.3 V770.0" stroke="#9b7c83" stroke-width="0.6"/>
<circle cx="1003.2" cy="733.0" r="4.3" fill="#dabbbf" stroke="#9b7c83" stroke-width="0.9"/>
<path d="M1003.2 733.0 V728.7" stroke="#9b7c83" stroke-width="0.6"/>
<circle cx="1015.4" cy="755.6" r="4.3" fill="#dabbbf" stroke="#9b7c83" stroke-width="0.9"/>
<path d="M1015.4 755.6 V751.3" stroke="#9b7c83" stroke-width="0.6"/>
<circle cx="984.4" cy="780.3" r="4.3" fill="#dabbbf" stroke="#9b7c83" stroke-width="0.9"/>
<path d="M984.4 780.3 V776.0" stroke="#9b7c83" stroke-width="0.6"/>
<circle cx="998.8" cy="791.2" r="4.3" fill="#dabbbf" stroke="#9b7c83" stroke-width="0.9"/>
<path d="M998.8 791.2 V786.9" stroke="#9b7c83" stroke-width="0.6"/>
<circle cx="1072.7" cy="743.3" r="4.3" fill="#dabbbf" stroke="#9b7c83" stroke-width="0.9"/>
<path d="M1072.7 743.3 L1076.8 742.0 A4.3 4.3 0 1 1 1072.7 739.0Z" fill="#e9c63b"/>
<path d="M1072.7 743.3 V739.0" stroke="#9b7c83" stroke-width="0.6"/>
<circle cx="1096.1" cy="756.8" r="4.3" fill="#dabbbf" stroke="#9b7c83" stroke-width="0.9"/>
<path d="M1096.1 756.8 L1094.8 760.9 A4.3 4.3 0 0 1 1096.1 752.5Z" fill="#e9c63b"/>
<path d="M1096.1 756.8 V752.5" stroke="#9b7c83" stroke-width="0.6"/>
<circle cx="1055.6" cy="766.7" r="4.3" fill="#dabbbf" stroke="#9b7c83" stroke-width="0.9"/>
<path d="M1055.6 766.7 V762.4" stroke="#9b7c83" stroke-width="0.6"/>
<circle cx="1085.9" cy="811.2" r="4.3" fill="#dabbbf" stroke="#9b7c83" stroke-width="0.9"/>
<path d="M1085.9 811.2 V806.9" stroke="#9b7c83" stroke-width="0.6"/>
<circle cx="1052.2" cy="796.3" r="4.3" fill="#dabbbf" stroke="#9b7c83" stroke-width="0.9"/>
<path d="M1052.2 796.3 L1056.3 795.0 A4.3 4.3 0 1 1 1052.2 792.0Z" fill="#e9c63b"/>
<path d="M1052.2 796.3 V792.0" stroke="#9b7c83" stroke-width="0.6"/>
<circle cx="1069.6" cy="766.7" r="4.3" fill="#dabbbf" stroke="#9b7c83" stroke-width="0.9"/>
<path d="M1069.6 766.7 L1065.5 765.4 A4.3 4.3 0 0 1 1069.6 762.4Z" fill="#e9c63b"/>
<path d="M1069.6 766.7 L1068.3 770.8 A4.3 4.3 0 0 1 1065.5 765.4Z" fill="#2f3a3b"/>
<path d="M1069.6 766.7 V762.4" stroke="#9b7c83" stroke-width="0.6"/>
<circle cx="1063.1" cy="739.1" r="4.3" fill="#dabbbf" stroke="#9b7c83" stroke-width="0.9"/>
<path d="M1063.1 739.1 L1059.0 740.4 A4.3 4.3 0 0 1 1063.1 734.8Z" fill="#e9c63b"/>
<path d="M1063.1 739.1 L1066.6 741.6 A4.3 4.3 0 0 1 1059.0 740.4Z" fill="#2f3a3b"/>
<path d="M1063.1 739.1 V734.8" stroke="#9b7c83" stroke-width="0.6"/>
<circle cx="1076.2" cy="739.9" r="4.3" fill="#dabbbf" stroke="#9b7c83" stroke-width="0.9"/>
<path d="M1076.2 739.9 L1080.3 741.2 A4.3 4.3 0 1 1 1076.2 735.6Z" fill="#e9c63b"/>
<path d="M1076.2 739.9 V735.6" stroke="#9b7c83" stroke-width="0.6"/>
<circle cx="1056.6" cy="760.9" r="4.3" fill="#dabbbf" stroke="#9b7c83" stroke-width="0.9"/>
<path d="M1056.6 760.9 L1053.1 758.4 A4.3 4.3 0 0 1 1056.6 756.6Z" fill="#2f3a3b"/>
<path d="M1056.6 760.9 V756.6" stroke="#9b7c83" stroke-width="0.6"/>
<circle cx="1098.9" cy="749.4" r="4.3" fill="#dabbbf" stroke="#9b7c83" stroke-width="0.9"/>
<path d="M1098.9 749.4 L1094.6 749.4 A4.3 4.3 0 0 1 1098.9 745.1Z" fill="#2f3a3b"/>
<path d="M1098.9 749.4 V745.1" stroke="#9b7c83" stroke-width="0.6"/>
<circle cx="1082.3" cy="754.0" r="4.3" fill="#dabbbf" stroke="#9b7c83" stroke-width="0.9"/>
<path d="M1082.3 754.0 L1078.2 755.3 A4.3 4.3 0 0 1 1082.3 749.7Z" fill="#e9c63b"/>
<path d="M1082.3 754.0 L1081.0 758.1 A4.3 4.3 0 0 1 1078.2 755.3Z" fill="#2f3a3b"/>
<path d="M1082.3 754.0 V749.7" stroke="#9b7c83" stroke-width="0.6"/>
<circle cx="1112.2" cy="802.0" r="4.3" fill="#dabbbf" stroke="#9b7c83" stroke-width="0.9"/>
<path d="M1112.2 802.0 L1107.9 802.0 A4.3 4.3 0 0 1 1112.2 797.7Z" fill="#2f3a3b"/>
<path d="M1112.2 802.0 V797.7" stroke="#9b7c83" stroke-width="0.6"/>
<circle cx="1096.8" cy="779.0" r="4.3" fill="#dabbbf" stroke="#9b7c83" stroke-width="0.9"/>
<path d="M1096.8 779.0 L1092.5 779.0 A4.3 4.3 0 0 1 1096.8 774.7Z" fill="#2f3a3b"/>
<path d="M1096.8 779.0 V774.7" stroke="#9b7c83" stroke-width="0.6"/>
<circle cx="1079.0" cy="791.8" r="4.3" fill="#dabbbf" stroke="#9b7c83" stroke-width="0.9"/>
<path d="M1079.0 791.8 V787.5" stroke="#9b7c83" stroke-width="0.6"/>
<circle cx="1067.6" cy="773.0" r="4.3" fill="#dabbbf" stroke="#9b7c83" stroke-width="0.9"/>
<path d="M1067.6 773.0 L1063.5 774.3 A4.3 4.3 0 0 1 1067.6 768.7Z" fill="#e9c63b"/>
<path d="M1067.6 773.0 L1068.9 777.1 A4.3 4.3 0 0 1 1063.5 774.3Z" fill="#2f3a3b"/>
<path d="M1067.6 773.0 V768.7" stroke="#9b7c83" stroke-width="0.6"/>
<circle cx="1059.6" cy="742.8" r="4.3" fill="#dabbbf" stroke="#9b7c83" stroke-width="0.9"/>
<path d="M1059.6 742.8 L1063.7 744.1 A4.3 4.3 0 1 1 1059.6 738.5Z" fill="#e9c63b"/>
<path d="M1059.6 742.8 V738.5" stroke="#9b7c83" stroke-width="0.6"/>
<circle cx="1086.7" cy="788.4" r="4.3" fill="#dabbbf" stroke="#9b7c83" stroke-width="0.9"/>
<path d="M1086.7 788.4 L1090.8 789.7 A4.3 4.3 0 1 1 1086.7 784.1Z" fill="#e9c63b"/>
<path d="M1086.7 788.4 V784.1" stroke="#9b7c83" stroke-width="0.6"/>
<circle cx="1093.5" cy="804.1" r="4.3" fill="#dabbbf" stroke="#9b7c83" stroke-width="0.9"/>
<path d="M1093.5 804.1 L1094.8 808.2 A4.3 4.3 0 1 1 1093.5 799.8Z" fill="#e9c63b"/>
<path d="M1093.5 804.1 V799.8" stroke="#9b7c83" stroke-width="0.6"/>
<circle cx="1096.5" cy="783.3" r="4.3" fill="#dabbbf" stroke="#9b7c83" stroke-width="0.9"/>
<path d="M1096.5 783.3 L1092.4 782.0 A4.3 4.3 0 0 1 1096.5 779.0Z" fill="#e9c63b"/>
<path d="M1096.5 783.3 L1095.2 787.4 A4.3 4.3 0 0 1 1092.4 782.0Z" fill="#2f3a3b"/>
<path d="M1096.5 783.3 V779.0" stroke="#9b7c83" stroke-width="0.6"/>
<circle cx="1096.4" cy="747.2" r="4.3" fill="#dabbbf" stroke="#9b7c83" stroke-width="0.9"/>
<path d="M1096.4 747.2 V742.9" stroke="#9b7c83" stroke-width="0.6"/>
<circle cx="1086.3" cy="789.1" r="4.3" fill="#dabbbf" stroke="#9b7c83" stroke-width="0.9"/>
<path d="M1086.3 789.1 V784.8" stroke="#9b7c83" stroke-width="0.6"/>
<circle cx="1061.8" cy="798.0" r="4.3" fill="#dabbbf" stroke="#9b7c83" stroke-width="0.9"/>
<path d="M1061.8 798.0 V793.7" stroke="#9b7c83" stroke-width="0.6"/>
<circle cx="1055.8" cy="784.5" r="4.3" fill="#dabbbf" stroke="#9b7c83" stroke-width="0.9"/>
<path d="M1055.8 784.5 L1051.7 783.2 A4.3 4.3 0 0 1 1055.8 780.2Z" fill="#e9c63b"/>
<path d="M1055.8 784.5 L1054.5 788.6 A4.3 4.3 0 0 1 1051.7 783.2Z" fill="#2f3a3b"/>
<path d="M1055.8 784.5 V780.2" stroke="#9b7c83" stroke-width="0.6"/>
<circle cx="1086.3" cy="783.3" r="4.3" fill="#dabbbf" stroke="#9b7c83" stroke-width="0.9"/>
<path d="M1086.3 783.3 L1082.8 780.8 A4.3 4.3 0 0 1 1086.3 779.0Z" fill="#2f3a3b"/>
<path d="M1086.3 783.3 V779.0" stroke="#9b7c83" stroke-width="0.6"/>
<circle cx="1087.7" cy="745.1" r="4.3" fill="#dabbbf" stroke="#9b7c83" stroke-width="0.9"/>
<path d="M1087.7 745.1 V740.8" stroke="#9b7c83" stroke-width="0.6"/>
<circle cx="1064.3" cy="743.6" r="4.3" fill="#dabbbf" stroke="#9b7c83" stroke-width="0.9"/>
<path d="M1064.3 743.6 L1060.2 744.9 A4.3 4.3 0 0 1 1064.3 739.3Z" fill="#e9c63b"/>
<path d="M1064.3 743.6 L1065.6 747.7 A4.3 4.3 0 0 1 1060.2 744.9Z" fill="#2f3a3b"/>
<path d="M1064.3 743.6 V739.3" stroke="#9b7c83" stroke-width="0.6"/>
<circle cx="1083.1" cy="782.4" r="4.3" fill="#dabbbf" stroke="#9b7c83" stroke-width="0.9"/>
<path d="M1083.1 782.4 L1087.2 781.1 A4.3 4.3 0 1 1 1083.1 778.1Z" fill="#e9c63b"/>
<path d="M1083.1 782.4 V778.1" stroke="#9b7c83" stroke-width="0.6"/>
<circle cx="1102.7" cy="812.3" r="4.3" fill="#dabbbf" stroke="#9b7c83" stroke-width="0.9"/>
<path d="M1102.7 812.3 L1098.6 813.6 A4.3 4.3 0 0 1 1102.7 808.0Z" fill="#e9c63b"/>
<path d="M1102.7 812.3 L1104.0 816.4 A4.3 4.3 0 0 1 1098.6 813.6Z" fill="#2f3a3b"/>
<path d="M1102.7 812.3 V808.0" stroke="#9b7c83" stroke-width="0.6"/>
<circle cx="1049.9" cy="772.7" r="4.3" fill="#dabbbf" stroke="#9b7c83" stroke-width="0.9"/>
<path d="M1049.9 772.7 V768.4" stroke="#9b7c83" stroke-width="0.6"/>
<circle cx="1087.9" cy="795.9" r="4.3" fill="#dabbbf" stroke="#9b7c83" stroke-width="0.9"/>
<path d="M1087.9 795.9 V791.6" stroke="#9b7c83" stroke-width="0.6"/>
<circle cx="1101.6" cy="744.2" r="4.3" fill="#dabbbf" stroke="#9b7c83" stroke-width="0.9"/>
<path d="M1101.6 744.2 V739.9" stroke="#9b7c83" stroke-width="0.6"/>
<circle cx="1075.3" cy="750.1" r="4.3" fill="#dabbbf" stroke="#9b7c83" stroke-width="0.9"/>
<path d="M1075.3 750.1 V745.8" stroke="#9b7c83" stroke-width="0.6"/>
<circle cx="1088.9" cy="801.0" r="4.3" fill="#dabbbf" stroke="#9b7c83" stroke-width="0.9"/>
<circle cx="1088.9" cy="801.0" r="4.3" fill="#e9c63b" stroke="#c4a02a" stroke-width="0.9"/>
<circle cx="1076.3" cy="739.6" r="4.3" fill="#dabbbf" stroke="#9b7c83" stroke-width="0.9"/>
<path d="M1076.3 739.6 L1077.6 743.7 A4.3 4.3 0 1 1 1076.3 735.3Z" fill="#e9c63b"/>
<path d="M1076.3 739.6 V735.3" stroke="#9b7c83" stroke-width="0.6"/>
<circle cx="1061.0" cy="760.9" r="4.3" fill="#dabbbf" stroke="#9b7c83" stroke-width="0.9"/>
<path d="M1061.0 760.9 V756.6" stroke="#9b7c83" stroke-width="0.6"/>
<circle cx="1093.6" cy="809.2" r="4.3" fill="#dabbbf" stroke="#9b7c83" stroke-width="0.9"/>
<path d="M1093.6 809.2 L1089.5 807.9 A4.3 4.3 0 0 1 1093.6 804.9Z" fill="#e9c63b"/>
<path d="M1093.6 809.2 L1094.9 813.3 A4.3 4.3 0 0 1 1089.5 807.9Z" fill="#2f3a3b"/>
<path d="M1093.6 809.2 V804.9" stroke="#9b7c83" stroke-width="0.6"/>
<circle cx="1057.5" cy="798.5" r="4.3" fill="#dabbbf" stroke="#9b7c83" stroke-width="0.9"/>
<path d="M1057.5 798.5 L1053.4 799.8 A4.3 4.3 0 0 1 1057.5 794.2Z" fill="#e9c63b"/>
<path d="M1057.5 798.5 L1061.0 801.0 A4.3 4.3 0 0 1 1053.4 799.8Z" fill="#2f3a3b"/>
<path d="M1057.5 798.5 V794.2" stroke="#9b7c83" stroke-width="0.6"/>
<circle cx="1063.1" cy="778.9" r="4.3" fill="#dabbbf" stroke="#9b7c83" stroke-width="0.9"/>
<path d="M1063.1 778.9 L1059.0 780.2 A4.3 4.3 0 0 1 1063.1 774.6Z" fill="#e9c63b"/>
<path d="M1063.1 778.9 L1064.4 783.0 A4.3 4.3 0 0 1 1059.0 780.2Z" fill="#2f3a3b"/>
<path d="M1063.1 778.9 V774.6" stroke="#9b7c83" stroke-width="0.6"/>
<circle cx="1083.0" cy="804.5" r="4.3" fill="#dabbbf" stroke="#9b7c83" stroke-width="0.9"/>
<path d="M1083.0 804.5 L1078.9 805.8 A4.3 4.3 0 0 1 1083.0 800.2Z" fill="#e9c63b"/>
<path d="M1083.0 804.5 L1084.3 808.6 A4.3 4.3 0 0 1 1078.9 805.8Z" fill="#2f3a3b"/>
<path d="M1083.0 804.5 V800.2" stroke="#9b7c83" stroke-width="0.6"/>
<circle cx="1070.1" cy="786.5" r="4.3" fill="#dabbbf" stroke="#9b7c83" stroke-width="0.9"/>
<path d="M1070.1 786.5 L1071.4 790.6 A4.3 4.3 0 1 1 1070.1 782.2Z" fill="#e9c63b"/>
<path d="M1070.1 786.5 L1070.1 782.2 A4.3 4.3 0 0 1 1072.6 783.0Z" fill="#d8524f"/>
<path d="M1070.1 786.5 V782.2" stroke="#9b7c83" stroke-width="0.6"/>
<circle cx="1072.3" cy="794.2" r="4.3" fill="#dabbbf" stroke="#9b7c83" stroke-width="0.9"/>
<path d="M1072.3 794.2 L1076.4 792.9 A4.3 4.3 0 1 1 1072.3 789.9Z" fill="#e9c63b"/>
<path d="M1072.3 794.2 V789.9" stroke="#9b7c83" stroke-width="0.6"/>
<circle cx="1107.1" cy="776.8" r="4.3" fill="#dabbbf" stroke="#9b7c83" stroke-width="0.9"/>
<path d="M1107.1 776.8 L1109.6 780.3 A4.3 4.3 0 1 1 1107.1 772.5Z" fill="#e9c63b"/>
<path d="M1107.1 776.8 L1107.1 772.5 A4.3 4.3 0 0 1 1109.6 773.3Z" fill="#d8524f"/>
<path d="M1107.1 776.8 V772.5" stroke="#9b7c83" stroke-width="0.6"/>
<circle cx="1088.2" cy="760.1" r="4.3" fill="#dabbbf" stroke="#9b7c83" stroke-width="0.9"/>
<path d="M1088.2 760.1 V755.8" stroke="#9b7c83" stroke-width="0.6"/>
<circle cx="1074.4" cy="747.8" r="4.3" fill="#dabbbf" stroke="#9b7c83" stroke-width="0.9"/>
<path d="M1074.4 747.8 V743.5" stroke="#9b7c83" stroke-width="0.6"/>
<circle cx="1087.0" cy="793.8" r="4.3" fill="#dabbbf" stroke="#9b7c83" stroke-width="0.9"/>
<path d="M1087.0 793.8 V789.5" stroke="#9b7c83" stroke-width="0.6"/>
<circle cx="1071.3" cy="748.4" r="4.3" fill="#dabbbf" stroke="#9b7c83" stroke-width="0.9"/>
<path d="M1071.3 748.4 L1067.8 745.9 A4.3 4.3 0 0 1 1071.3 744.1Z" fill="#2f3a3b"/>
<path d="M1071.3 748.4 V744.1" stroke="#9b7c83" stroke-width="0.6"/>
<circle cx="1050.0" cy="788.0" r="4.3" fill="#dabbbf" stroke="#9b7c83" stroke-width="0.9"/>
<path d="M1050.0 788.0 V783.7" stroke="#9b7c83" stroke-width="0.6"/>
<circle cx="1091.9" cy="806.7" r="4.3" fill="#dabbbf" stroke="#9b7c83" stroke-width="0.9"/>
<path d="M1091.9 806.7 V802.4" stroke="#9b7c83" stroke-width="0.6"/>
<circle cx="1099.3" cy="773.5" r="4.3" fill="#dabbbf" stroke="#9b7c83" stroke-width="0.9"/>
<path d="M1099.3 773.5 L1103.4 772.2 A4.3 4.3 0 1 1 1099.3 769.2Z" fill="#e9c63b"/>
<path d="M1099.3 773.5 V769.2" stroke="#9b7c83" stroke-width="0.6"/>
<circle cx="1072.8" cy="780.2" r="4.3" fill="#dabbbf" stroke="#9b7c83" stroke-width="0.9"/>
<path d="M1072.8 780.2 L1071.5 784.3 A4.3 4.3 0 0 1 1072.8 775.9Z" fill="#e9c63b"/>
<path d="M1072.8 780.2 V775.9" stroke="#9b7c83" stroke-width="0.6"/>
<circle cx="1072.8" cy="775.1" r="4.3" fill="#dabbbf" stroke="#9b7c83" stroke-width="0.9"/>
<path d="M1072.8 775.1 L1068.7 773.8 A4.3 4.3 0 0 1 1072.8 770.8Z" fill="#e9c63b"/>
<path d="M1072.8 775.1 L1071.5 779.2 A4.3 4.3 0 0 1 1068.7 773.8Z" fill="#2f3a3b"/>
<path d="M1072.8 775.1 V770.8" stroke="#9b7c83" stroke-width="0.6"/>
<circle cx="1069.1" cy="763.9" r="4.3" fill="#dabbbf" stroke="#9b7c83" stroke-width="0.9"/>
<path d="M1069.1 763.9 L1065.6 761.4 A4.3 4.3 0 0 1 1069.1 759.6Z" fill="#2f3a3b"/>
<path d="M1069.1 763.9 V759.6" stroke="#9b7c83" stroke-width="0.6"/>
<circle cx="1092.6" cy="788.9" r="4.3" fill="#dabbbf" stroke="#9b7c83" stroke-width="0.9"/>
<path d="M1092.6 788.9 V784.6" stroke="#9b7c83" stroke-width="0.6"/>
<circle cx="1055.5" cy="768.1" r="4.3" fill="#dabbbf" stroke="#9b7c83" stroke-width="0.9"/>
<path d="M1055.5 768.1 L1058.0 771.6 A4.3 4.3 0 1 1 1055.5 763.8Z" fill="#e9c63b"/>
<path d="M1055.5 768.1 V763.8" stroke="#9b7c83" stroke-width="0.6"/>
<circle cx="1089.8" cy="784.9" r="4.3" fill="#dabbbf" stroke="#9b7c83" stroke-width="0.9"/>
<path d="M1089.8 784.9 L1091.1 789.0 A4.3 4.3 0 1 1 1089.8 780.6Z" fill="#e9c63b"/>
<path d="M1089.8 784.9 L1089.8 780.6 A4.3 4.3 0 0 1 1092.3 781.4Z" fill="#d8524f"/>
<path d="M1089.8 784.9 V780.6" stroke="#9b7c83" stroke-width="0.6"/>
<circle cx="1088.7" cy="800.7" r="4.3" fill="#dabbbf" stroke="#9b7c83" stroke-width="0.9"/>
<path d="M1088.7 800.7 V796.4" stroke="#9b7c83" stroke-width="0.6"/>
<circle cx="1105.8" cy="789.0" r="4.3" fill="#dabbbf" stroke="#9b7c83" stroke-width="0.9"/>
<path d="M1105.8 789.0 V784.7" stroke="#9b7c83" stroke-width="0.6"/>
<circle cx="1073.0" cy="759.4" r="4.3" fill="#dabbbf" stroke="#9b7c83" stroke-width="0.9"/>
<path d="M1073.0 759.4 V755.1" stroke="#9b7c83" stroke-width="0.6"/>
<circle cx="1098.4" cy="761.3" r="4.3" fill="#dabbbf" stroke="#9b7c83" stroke-width="0.9"/>
<path d="M1098.4 761.3 V757.0" stroke="#9b7c83" stroke-width="0.6"/>
<circle cx="1103.0" cy="778.6" r="4.3" fill="#dabbbf" stroke="#9b7c83" stroke-width="0.9"/>
<path d="M1103.0 778.6 V774.3" stroke="#9b7c83" stroke-width="0.6"/>
<circle cx="1072.0" cy="782.1" r="4.3" fill="#dabbbf" stroke="#9b7c83" stroke-width="0.9"/>
<path d="M1072.0 782.1 L1067.9 783.4 A4.3 4.3 0 0 1 1072.0 777.8Z" fill="#e9c63b"/>
<path d="M1072.0 782.1 L1070.7 786.2 A4.3 4.3 0 0 1 1067.9 783.4Z" fill="#2f3a3b"/>
<path d="M1072.0 782.1 V777.8" stroke="#9b7c83" stroke-width="0.6"/>
<circle cx="1070.9" cy="762.9" r="4.3" fill="#dabbbf" stroke="#9b7c83" stroke-width="0.9"/>
<path d="M1070.9 762.9 V758.6" stroke="#9b7c83" stroke-width="0.6"/>
<circle cx="1082.4" cy="766.6" r="4.3" fill="#dabbbf" stroke="#9b7c83" stroke-width="0.9"/>
<path d="M1082.4 766.6 L1081.1 770.7 A4.3 4.3 0 0 1 1082.4 762.3Z" fill="#e9c63b"/>
<path d="M1082.4 766.6 V762.3" stroke="#9b7c83" stroke-width="0.6"/>
<circle cx="1056.1" cy="753.0" r="4.3" fill="#dabbbf" stroke="#9b7c83" stroke-width="0.9"/>
<path d="M1056.1 753.0 V748.7" stroke="#9b7c83" stroke-width="0.6"/>
<circle cx="1097.6" cy="769.8" r="4.3" fill="#dabbbf" stroke="#9b7c83" stroke-width="0.9"/>
<path d="M1097.6 769.8 L1093.3 769.8 A4.3 4.3 0 0 1 1097.6 765.5Z" fill="#2f3a3b"/>
<path d="M1097.6 769.8 V765.5" stroke="#9b7c83" stroke-width="0.6"/>
<circle cx="1090.8" cy="747.8" r="4.3" fill="#dabbbf" stroke="#9b7c83" stroke-width="0.9"/>
<path d="M1090.8 747.8 V743.5" stroke="#9b7c83" stroke-width="0.6"/>
<circle cx="1064.2" cy="783.9" r="4.3" fill="#dabbbf" stroke="#9b7c83" stroke-width="0.9"/>
<path d="M1064.2 783.9 V779.6" stroke="#9b7c83" stroke-width="0.6"/>
<circle cx="1090.7" cy="761.3" r="4.3" fill="#dabbbf" stroke="#9b7c83" stroke-width="0.9"/>
<path d="M1090.7 761.3 L1086.6 760.0 A4.3 4.3 0 0 1 1090.7 757.0Z" fill="#e9c63b"/>
<path d="M1090.7 761.3 L1089.4 765.4 A4.3 4.3 0 0 1 1086.6 760.0Z" fill="#2f3a3b"/>
<path d="M1090.7 761.3 V757.0" stroke="#9b7c83" stroke-width="0.6"/>
<circle cx="1101.5" cy="813.4" r="4.3" fill="#dabbbf" stroke="#9b7c83" stroke-width="0.9"/>
<path d="M1101.5 813.4 V809.1" stroke="#9b7c83" stroke-width="0.6"/>
<circle cx="1069.5" cy="750.4" r="4.3" fill="#dabbbf" stroke="#9b7c83" stroke-width="0.9"/>
<path d="M1069.5 750.4 V746.1" stroke="#9b7c83" stroke-width="0.6"/>
<circle cx="1087.6" cy="799.6" r="4.3" fill="#dabbbf" stroke="#9b7c83" stroke-width="0.9"/>
<path d="M1087.6 799.6 V795.3" stroke="#9b7c83" stroke-width="0.6"/>
<circle cx="1062.9" cy="737.3" r="4.3" fill="#dabbbf" stroke="#9b7c83" stroke-width="0.9"/>
<path d="M1062.9 737.3 L1067.0 738.6 A4.3 4.3 0 1 1 1062.9 733.0Z" fill="#e9c63b"/>
<path d="M1062.9 737.3 L1062.9 733.0 A4.3 4.3 0 0 1 1065.4 733.8Z" fill="#d8524f"/>
<path d="M1062.9 737.3 V733.0" stroke="#9b7c83" stroke-width="0.6"/>
<circle cx="1092.1" cy="808.5" r="4.3" fill="#dabbbf" stroke="#9b7c83" stroke-width="0.9"/>
<path d="M1092.1 808.5 V804.2" stroke="#9b7c83" stroke-width="0.6"/>
<circle cx="1059.7" cy="797.5" r="4.3" fill="#dabbbf" stroke="#9b7c83" stroke-width="0.9"/>
<path d="M1059.7 797.5 V793.2" stroke="#9b7c83" stroke-width="0.6"/>
<circle cx="1092.0" cy="742.3" r="4.3" fill="#dabbbf" stroke="#9b7c83" stroke-width="0.9"/>
<path d="M1092.0 742.3 V738.0" stroke="#9b7c83" stroke-width="0.6"/>
<circle cx="1113.8" cy="764.4" r="4.3" fill="#dabbbf" stroke="#9b7c83" stroke-width="0.9"/>
<path d="M1113.8 764.4 L1112.5 768.5 A4.3 4.3 0 0 1 1113.8 760.1Z" fill="#e9c63b"/>
<path d="M1113.8 764.4 L1113.8 760.1 A4.3 4.3 0 0 1 1116.3 760.9Z" fill="#d8524f"/>
<path d="M1113.8 764.4 V760.1" stroke="#9b7c83" stroke-width="0.6"/>
<circle cx="1069.8" cy="738.0" r="4.3" fill="#dabbbf" stroke="#9b7c83" stroke-width="0.9"/>
<circle cx="1069.8" cy="738.0" r="4.3" fill="#e9c63b" stroke="#c4a02a" stroke-width="0.9"/>
<circle cx="1095.8" cy="769.8" r="4.3" fill="#dabbbf" stroke="#9b7c83" stroke-width="0.9"/>
<path d="M1095.8 769.8 V765.5" stroke="#9b7c83" stroke-width="0.6"/>
<circle cx="1071.0" cy="740.5" r="4.3" fill="#dabbbf" stroke="#9b7c83" stroke-width="0.9"/>
<path d="M1071.0 740.5 L1067.5 738.0 A4.3 4.3 0 0 1 1071.0 736.2Z" fill="#2f3a3b"/>
<path d="M1071.0 740.5 V736.2" stroke="#9b7c83" stroke-width="0.6"/>
<circle cx="1094.0" cy="763.9" r="4.3" fill="#dabbbf" stroke="#9b7c83" stroke-width="0.9"/>
<path d="M1094.0 763.9 L1089.9 762.6 A4.3 4.3 0 0 1 1094.0 759.6Z" fill="#e9c63b"/>
<path d="M1094.0 763.9 L1095.3 768.0 A4.3 4.3 0 0 1 1089.9 762.6Z" fill="#2f3a3b"/>
<path d="M1094.0 763.9 V759.6" stroke="#9b7c83" stroke-width="0.6"/>
<circle cx="1064.5" cy="774.7" r="4.3" fill="#dabbbf" stroke="#9b7c83" stroke-width="0.9"/>
<path d="M1064.5 774.7 L1067.0 778.2 A4.3 4.3 0 1 1 1064.5 770.4Z" fill="#e9c63b"/>
<path d="M1064.5 774.7 V770.4" stroke="#9b7c83" stroke-width="0.6"/>
<circle cx="1093.0" cy="796.7" r="4.3" fill="#dabbbf" stroke="#9b7c83" stroke-width="0.9"/>
<path d="M1093.0 796.7 L1088.9 798.0 A4.3 4.3 0 0 1 1093.0 792.4Z" fill="#e9c63b"/>
<path d="M1093.0 796.7 L1093.0 792.4 A4.3 4.3 0 0 1 1095.5 793.2Z" fill="#d8524f"/>
<path d="M1093.0 796.7 V792.4" stroke="#9b7c83" stroke-width="0.6"/>
<circle cx="1060.8" cy="780.3" r="4.3" fill="#dabbbf" stroke="#9b7c83" stroke-width="0.9"/>
<path d="M1060.8 780.3 V776.0" stroke="#9b7c83" stroke-width="0.6"/>
<circle cx="1072.6" cy="766.1" r="4.3" fill="#dabbbf" stroke="#9b7c83" stroke-width="0.9"/>
<path d="M1072.6 766.1 L1068.5 767.4 A4.3 4.3 0 0 1 1072.6 761.8Z" fill="#e9c63b"/>
<path d="M1072.6 766.1 L1076.1 768.6 A4.3 4.3 0 0 1 1068.5 767.4Z" fill="#2f3a3b"/>
<path d="M1072.6 766.1 V761.8" stroke="#9b7c83" stroke-width="0.6"/>
<circle cx="1113.1" cy="748.6" r="4.3" fill="#dabbbf" stroke="#9b7c83" stroke-width="0.9"/>
<path d="M1113.1 748.6 V744.3" stroke="#9b7c83" stroke-width="0.6"/>
<circle cx="1089.9" cy="755.0" r="4.3" fill="#dabbbf" stroke="#9b7c83" stroke-width="0.9"/>
<path d="M1089.9 755.0 V750.7" stroke="#9b7c83" stroke-width="0.6"/>
<circle cx="1108.9" cy="775.9" r="4.3" fill="#dabbbf" stroke="#9b7c83" stroke-width="0.9"/>
<path d="M1108.9 775.9 L1110.2 780.0 A4.3 4.3 0 1 1 1108.9 771.6Z" fill="#e9c63b"/>
<path d="M1108.9 775.9 V771.6" stroke="#9b7c83" stroke-width="0.6"/>
<circle cx="1080.2" cy="759.1" r="4.3" fill="#dabbbf" stroke="#9b7c83" stroke-width="0.9"/>
<path d="M1080.2 759.1 L1075.9 759.1 A4.3 4.3 0 0 1 1080.2 754.8Z" fill="#2f3a3b"/>
<path d="M1080.2 759.1 V754.8" stroke="#9b7c83" stroke-width="0.6"/>
<circle cx="1064.2" cy="782.7" r="4.3" fill="#dabbbf" stroke="#9b7c83" stroke-width="0.9"/>
<circle cx="1064.2" cy="782.7" r="4.3" fill="#e9c63b" stroke="#c4a02a" stroke-width="0.9"/>
<circle cx="1062.2" cy="799.5" r="4.3" fill="#dabbbf" stroke="#9b7c83" stroke-width="0.9"/>
<path d="M1062.2 799.5 L1058.1 800.8 A4.3 4.3 0 0 1 1062.2 795.2Z" fill="#e9c63b"/>
<path d="M1062.2 799.5 V795.2" stroke="#9b7c83" stroke-width="0.6"/>
<circle cx="1053.8" cy="781.5" r="4.3" fill="#dabbbf" stroke="#9b7c83" stroke-width="0.9"/>
<circle cx="1053.8" cy="781.5" r="4.3" fill="#e9c63b" stroke="#c4a02a" stroke-width="0.9"/>
<path d="M1053.8 781.5 L1053.8 777.2 A4.3 4.3 0 0 1 1056.3 778.0Z" fill="#d8524f"/>
<circle cx="1118.9" cy="766.5" r="4.3" fill="#dabbbf" stroke="#9b7c83" stroke-width="0.9"/>
<path d="M1118.9 766.5 L1117.6 770.6 A4.3 4.3 0 0 1 1118.9 762.2Z" fill="#e9c63b"/>
<path d="M1118.9 766.5 V762.2" stroke="#9b7c83" stroke-width="0.6"/>
<circle cx="1112.2" cy="801.4" r="4.3" fill="#dabbbf" stroke="#9b7c83" stroke-width="0.9"/>
<path d="M1112.2 801.4 L1108.1 802.7 A4.3 4.3 0 0 1 1112.2 797.1Z" fill="#e9c63b"/>
<path d="M1112.2 801.4 L1113.5 805.5 A4.3 4.3 0 0 1 1108.1 802.7Z" fill="#2f3a3b"/>
<path d="M1112.2 801.4 V797.1" stroke="#9b7c83" stroke-width="0.6"/>
<circle cx="1083.8" cy="789.3" r="4.3" fill="#dabbbf" stroke="#9b7c83" stroke-width="0.9"/>
<path d="M1083.8 789.3 L1079.7 788.0 A4.3 4.3 0 0 1 1083.8 785.0Z" fill="#e9c63b"/>
<path d="M1083.8 789.3 L1082.5 793.4 A4.3 4.3 0 0 1 1079.7 788.0Z" fill="#2f3a3b"/>
<path d="M1083.8 789.3 V785.0" stroke="#9b7c83" stroke-width="0.6"/>
<circle cx="1061.0" cy="802.3" r="4.3" fill="#dabbbf" stroke="#9b7c83" stroke-width="0.9"/>
<path d="M1061.0 802.3 L1062.3 806.4 A4.3 4.3 0 1 1 1061.0 798.0Z" fill="#e9c63b"/>
<path d="M1061.0 802.3 V798.0" stroke="#9b7c83" stroke-width="0.6"/>
<circle cx="1049.3" cy="790.1" r="4.3" fill="#dabbbf" stroke="#9b7c83" stroke-width="0.9"/>
<path d="M1049.3 790.1 L1045.0 790.1 A4.3 4.3 0 0 1 1049.3 785.8Z" fill="#2f3a3b"/>
<path d="M1049.3 790.1 V785.8" stroke="#9b7c83" stroke-width="0.6"/>
<circle cx="1062.2" cy="767.3" r="4.3" fill="#dabbbf" stroke="#9b7c83" stroke-width="0.9"/>
<path d="M1062.2 767.3 V763.0" stroke="#9b7c83" stroke-width="0.6"/>
<circle cx="1074.0" cy="791.1" r="4.3" fill="#dabbbf" stroke="#9b7c83" stroke-width="0.9"/>
<path d="M1074.0 791.1 V786.8" stroke="#9b7c83" stroke-width="0.6"/>
<circle cx="1100.6" cy="756.0" r="4.3" fill="#dabbbf" stroke="#9b7c83" stroke-width="0.9"/>
<path d="M1100.6 756.0 L1096.5 754.7 A4.3 4.3 0 0 1 1100.6 751.7Z" fill="#e9c63b"/>
<path d="M1100.6 756.0 L1099.3 760.1 A4.3 4.3 0 0 1 1096.5 754.7Z" fill="#2f3a3b"/>
<path d="M1100.6 756.0 V751.7" stroke="#9b7c83" stroke-width="0.6"/>
<circle cx="1095.3" cy="760.8" r="4.3" fill="#dabbbf" stroke="#9b7c83" stroke-width="0.9"/>
<path d="M1095.3 760.8 V756.5" stroke="#9b7c83" stroke-width="0.6"/>
<circle cx="1061.3" cy="783.7" r="4.3" fill="#dabbbf" stroke="#9b7c83" stroke-width="0.9"/>
<circle cx="1061.3" cy="783.7" r="4.3" fill="#e9c63b" stroke="#c4a02a" stroke-width="0.9"/>
<circle cx="1054.9" cy="760.9" r="4.3" fill="#dabbbf" stroke="#9b7c83" stroke-width="0.9"/>
<path d="M1054.9 760.9 L1050.8 762.2 A4.3 4.3 0 0 1 1054.9 756.6Z" fill="#e9c63b"/>
<path d="M1054.9 760.9 V756.6" stroke="#9b7c83" stroke-width="0.6"/>
<circle cx="1115.1" cy="749.3" r="4.3" fill="#dabbbf" stroke="#9b7c83" stroke-width="0.9"/>
<path d="M1115.1 749.3 V745.0" stroke="#9b7c83" stroke-width="0.6"/>
<circle cx="1091.7" cy="773.9" r="4.3" fill="#dabbbf" stroke="#9b7c83" stroke-width="0.9"/>
<path d="M1091.7 773.9 L1087.6 775.2 A4.3 4.3 0 0 1 1091.7 769.6Z" fill="#e9c63b"/>
<path d="M1091.7 773.9 L1090.4 778.0 A4.3 4.3 0 0 1 1087.6 775.2Z" fill="#2f3a3b"/>
<path d="M1091.7 773.9 V769.6" stroke="#9b7c83" stroke-width="0.6"/>
<circle cx="1072.8" cy="801.4" r="4.3" fill="#dabbbf" stroke="#9b7c83" stroke-width="0.9"/>
<path d="M1072.8 801.4 V797.1" stroke="#9b7c83" stroke-width="0.6"/>
<circle cx="1102.7" cy="743.9" r="4.3" fill="#dabbbf" stroke="#9b7c83" stroke-width="0.9"/>
<path d="M1102.7 743.9 L1104.0 748.0 A4.3 4.3 0 1 1 1102.7 739.6Z" fill="#e9c63b"/>
<path d="M1102.7 743.9 V739.6" stroke="#9b7c83" stroke-width="0.6"/>
<circle cx="1077.1" cy="789.8" r="4.3" fill="#dabbbf" stroke="#9b7c83" stroke-width="0.9"/>
<path d="M1077.1 789.8 V785.5" stroke="#9b7c83" stroke-width="0.6"/>
<circle cx="1075.7" cy="763.9" r="4.3" fill="#dabbbf" stroke="#9b7c83" stroke-width="0.9"/>
<path d="M1075.7 763.9 V759.6" stroke="#9b7c83" stroke-width="0.6"/>
<circle cx="1090.7" cy="752.6" r="4.3" fill="#dabbbf" stroke="#9b7c83" stroke-width="0.9"/>
<path d="M1090.7 752.6 V748.3" stroke="#9b7c83" stroke-width="0.6"/>
<circle cx="1091.5" cy="784.1" r="4.3" fill="#dabbbf" stroke="#9b7c83" stroke-width="0.9"/>
<path d="M1091.5 784.1 V779.8" stroke="#9b7c83" stroke-width="0.6"/>
<circle cx="1102.1" cy="739.7" r="4.3" fill="#dabbbf" stroke="#9b7c83" stroke-width="0.9"/>
<path d="M1102.1 739.7 V735.4" stroke="#9b7c83" stroke-width="0.6"/>
<circle cx="1061.9" cy="781.2" r="4.3" fill="#dabbbf" stroke="#9b7c83" stroke-width="0.9"/>
<path d="M1061.9 781.2 V776.9" stroke="#9b7c83" stroke-width="0.6"/>
<circle cx="1086.3" cy="806.5" r="4.3" fill="#dabbbf" stroke="#9b7c83" stroke-width="0.9"/>
<path d="M1086.3 806.5 V802.2" stroke="#9b7c83" stroke-width="0.6"/>
<circle cx="1061.9" cy="741.7" r="4.3" fill="#dabbbf" stroke="#9b7c83" stroke-width="0.9"/>
<path d="M1061.9 741.7 V737.4" stroke="#9b7c83" stroke-width="0.6"/>
<circle cx="1070.0" cy="739.1" r="4.3" fill="#dabbbf" stroke="#9b7c83" stroke-width="0.9"/>
<path d="M1070.0 739.1 L1065.9 740.4 A4.3 4.3 0 0 1 1070.0 734.8Z" fill="#e9c63b"/>
<path d="M1070.0 739.1 L1071.3 743.2 A4.3 4.3 0 0 1 1065.9 740.4Z" fill="#2f3a3b"/>
<path d="M1070.0 739.1 V734.8" stroke="#9b7c83" stroke-width="0.6"/>
<circle cx="1070.4" cy="770.3" r="4.3" fill="#dabbbf" stroke="#9b7c83" stroke-width="0.9"/>
<path d="M1070.4 770.3 V766.0" stroke="#9b7c83" stroke-width="0.6"/>
<circle cx="1103.5" cy="758.3" r="4.3" fill="#dabbbf" stroke="#9b7c83" stroke-width="0.9"/>
<path d="M1103.5 758.3 L1099.4 757.0 A4.3 4.3 0 0 1 1103.5 754.0Z" fill="#e9c63b"/>
<path d="M1103.5 758.3 L1104.8 762.4 A4.3 4.3 0 0 1 1099.4 757.0Z" fill="#2f3a3b"/>
<path d="M1103.5 758.3 V754.0" stroke="#9b7c83" stroke-width="0.6"/>
<circle cx="1074.6" cy="748.4" r="4.3" fill="#dabbbf" stroke="#9b7c83" stroke-width="0.9"/>
<path d="M1074.6 748.4 V744.1" stroke="#9b7c83" stroke-width="0.6"/>
<circle cx="1115.6" cy="789.2" r="4.3" fill="#dabbbf" stroke="#9b7c83" stroke-width="0.9"/>
<path d="M1115.6 789.2 L1119.7 787.9 A4.3 4.3 0 1 1 1115.6 784.9Z" fill="#e9c63b"/>
<path d="M1115.6 789.2 V784.9" stroke="#9b7c83" stroke-width="0.6"/>
<circle cx="1064.4" cy="787.2" r="4.3" fill="#dabbbf" stroke="#9b7c83" stroke-width="0.9"/>
<path d="M1064.4 787.2 L1060.9 784.7 A4.3 4.3 0 0 1 1064.4 782.9Z" fill="#2f3a3b"/>
<path d="M1064.4 787.2 V782.9" stroke="#9b7c83" stroke-width="0.6"/>
<circle cx="1096.9" cy="742.9" r="4.3" fill="#dabbbf" stroke="#9b7c83" stroke-width="0.9"/>
<path d="M1096.9 742.9 V738.6" stroke="#9b7c83" stroke-width="0.6"/>
<circle cx="1046.7" cy="796.1" r="4.3" fill="#dabbbf" stroke="#9b7c83" stroke-width="0.9"/>
<path d="M1046.7 796.1 L1042.6 794.8 A4.3 4.3 0 0 1 1046.7 791.8Z" fill="#e9c63b"/>
<path d="M1046.7 796.1 L1048.0 800.2 A4.3 4.3 0 0 1 1042.6 794.8Z" fill="#2f3a3b"/>
<path d="M1046.7 796.1 V791.8" stroke="#9b7c83" stroke-width="0.6"/>
<circle cx="1098.6" cy="773.0" r="4.3" fill="#dabbbf" stroke="#9b7c83" stroke-width="0.9"/>
<path d="M1098.6 773.0 V768.7" stroke="#9b7c83" stroke-width="0.6"/>
<circle cx="1080.4" cy="784.4" r="4.3" fill="#dabbbf" stroke="#9b7c83" stroke-width="0.9"/>
<path d="M1080.4 784.4 L1076.3 783.1 A4.3 4.3 0 0 1 1080.4 780.1Z" fill="#e9c63b"/>
<path d="M1080.4 784.4 L1081.7 788.5 A4.3 4.3 0 0 1 1076.3 783.1Z" fill="#2f3a3b"/>
<path d="M1080.4 784.4 V780.1" stroke="#9b7c83" stroke-width="0.6"/>
<circle cx="1084.7" cy="785.6" r="4.3" fill="#dabbbf" stroke="#9b7c83" stroke-width="0.9"/>
<path d="M1084.7 785.6 V781.3" stroke="#9b7c83" stroke-width="0.6"/>
<circle cx="1062.7" cy="788.7" r="4.3" fill="#dabbbf" stroke="#9b7c83" stroke-width="0.9"/>
<path d="M1062.7 788.7 V784.4" stroke="#9b7c83" stroke-width="0.6"/>
<circle cx="1074.3" cy="795.7" r="4.3" fill="#dabbbf" stroke="#9b7c83" stroke-width="0.9"/>
<path d="M1074.3 795.7 L1070.2 794.4 A4.3 4.3 0 0 1 1074.3 791.4Z" fill="#e9c63b"/>
<path d="M1074.3 795.7 L1075.6 799.8 A4.3 4.3 0 0 1 1070.2 794.4Z" fill="#2f3a3b"/>
<path d="M1074.3 795.7 V791.4" stroke="#9b7c83" stroke-width="0.6"/>
<circle cx="1092.9" cy="792.8" r="4.3" fill="#dabbbf" stroke="#9b7c83" stroke-width="0.9"/>
<path d="M1092.9 792.8 L1094.2 796.9 A4.3 4.3 0 1 1 1092.9 788.5Z" fill="#e9c63b"/>
<path d="M1092.9 792.8 V788.5" stroke="#9b7c83" stroke-width="0.6"/>
<circle cx="1097.0" cy="813.6" r="4.3" fill="#dabbbf" stroke="#9b7c83" stroke-width="0.9"/>
<path d="M1097.0 813.6 V809.3" stroke="#9b7c83" stroke-width="0.6"/>
<circle cx="1112.4" cy="765.0" r="4.3" fill="#dabbbf" stroke="#9b7c83" stroke-width="0.9"/>
<path d="M1112.4 765.0 L1108.9 767.5 A4.3 4.3 0 0 1 1112.4 760.7Z" fill="#2f3a3b"/>
<path d="M1112.4 765.0 V760.7" stroke="#9b7c83" stroke-width="0.6"/>
<circle cx="1104.4" cy="766.3" r="4.3" fill="#dabbbf" stroke="#9b7c83" stroke-width="0.9"/>
<path d="M1104.4 766.3 L1103.1 770.4 A4.3 4.3 0 0 1 1104.4 762.0Z" fill="#e9c63b"/>
<path d="M1104.4 766.3 V762.0" stroke="#9b7c83" stroke-width="0.6"/>
<circle cx="1063.1" cy="750.2" r="4.3" fill="#dabbbf" stroke="#9b7c83" stroke-width="0.9"/>
<path d="M1063.1 750.2 V745.9" stroke="#9b7c83" stroke-width="0.6"/>
<circle cx="1080.7" cy="789.7" r="4.3" fill="#dabbbf" stroke="#9b7c83" stroke-width="0.9"/>
<path d="M1080.7 789.7 V785.4" stroke="#9b7c83" stroke-width="0.6"/>
<circle cx="1110.4" cy="804.6" r="4.3" fill="#dabbbf" stroke="#9b7c83" stroke-width="0.9"/>
<path d="M1110.4 804.6 L1109.1 808.7 A4.3 4.3 0 0 1 1110.4 800.3Z" fill="#e9c63b"/>
<path d="M1110.4 804.6 V800.3" stroke="#9b7c83" stroke-width="0.6"/>
<circle cx="1074.0" cy="766.4" r="4.3" fill="#dabbbf" stroke="#9b7c83" stroke-width="0.9"/>
<path d="M1074.0 766.4 V762.1" stroke="#9b7c83" stroke-width="0.6"/>
<circle cx="1085.7" cy="761.1" r="4.3" fill="#dabbbf" stroke="#9b7c83" stroke-width="0.9"/>
<path d="M1085.7 761.1 V756.8" stroke="#9b7c83" stroke-width="0.6"/>
<circle cx="1066.0" cy="760.1" r="4.3" fill="#dabbbf" stroke="#9b7c83" stroke-width="0.9"/>
<path d="M1066.0 760.1 L1061.9 758.8 A4.3 4.3 0 0 1 1066.0 755.8Z" fill="#e9c63b"/>
<path d="M1066.0 760.1 L1062.5 762.6 A4.3 4.3 0 0 1 1061.9 758.8Z" fill="#2f3a3b"/>
<path d="M1066.0 760.1 V755.8" stroke="#9b7c83" stroke-width="0.6"/>
<circle cx="1094.6" cy="797.3" r="4.3" fill="#dabbbf" stroke="#9b7c83" stroke-width="0.9"/>
<path d="M1094.6 797.3 L1098.7 796.0 A4.3 4.3 0 1 1 1094.6 793.0Z" fill="#e9c63b"/>
<path d="M1094.6 797.3 L1094.6 793.0 A4.3 4.3 0 0 1 1097.1 793.8Z" fill="#d8524f"/>
<path d="M1094.6 797.3 V793.0" stroke="#9b7c83" stroke-width="0.6"/>
<circle cx="1098.3" cy="766.6" r="4.3" fill="#dabbbf" stroke="#9b7c83" stroke-width="0.9"/>
<path d="M1098.3 766.6 L1094.2 767.9 A4.3 4.3 0 0 1 1098.3 762.3Z" fill="#e9c63b"/>
<path d="M1098.3 766.6 L1097.0 770.7 A4.3 4.3 0 0 1 1094.2 767.9Z" fill="#2f3a3b"/>
<path d="M1098.3 766.6 V762.3" stroke="#9b7c83" stroke-width="0.6"/>
<circle cx="1073.6" cy="764.3" r="4.3" fill="#dabbbf" stroke="#9b7c83" stroke-width="0.9"/>
<path d="M1073.6 764.3 L1069.5 765.6 A4.3 4.3 0 0 1 1073.6 760.0Z" fill="#e9c63b"/>
<path d="M1073.6 764.3 L1072.3 768.4 A4.3 4.3 0 0 1 1069.5 765.6Z" fill="#2f3a3b"/>
<path d="M1073.6 764.3 V760.0" stroke="#9b7c83" stroke-width="0.6"/>
<circle cx="1060.1" cy="783.8" r="4.3" fill="#dabbbf" stroke="#9b7c83" stroke-width="0.9"/>
<path d="M1060.1 783.8 L1058.8 787.9 A4.3 4.3 0 0 1 1060.1 779.5Z" fill="#e9c63b"/>
<path d="M1060.1 783.8 V779.5" stroke="#9b7c83" stroke-width="0.6"/>
<circle cx="1087.5" cy="813.0" r="4.3" fill="#dabbbf" stroke="#9b7c83" stroke-width="0.9"/>
<path d="M1087.5 813.0 L1090.0 816.5 A4.3 4.3 0 1 1 1087.5 808.7Z" fill="#e9c63b"/>
<path d="M1087.5 813.0 V808.7" stroke="#9b7c83" stroke-width="0.6"/>
<circle cx="1051.3" cy="789.3" r="4.3" fill="#dabbbf" stroke="#9b7c83" stroke-width="0.9"/>
<path d="M1051.3 789.3 V785.0" stroke="#9b7c83" stroke-width="0.6"/>
<circle cx="1060.1" cy="771.3" r="4.3" fill="#dabbbf" stroke="#9b7c83" stroke-width="0.9"/>
<path d="M1060.1 771.3 V767.0" stroke="#9b7c83" stroke-width="0.6"/>
<circle cx="1093.3" cy="767.0" r="4.3" fill="#dabbbf" stroke="#9b7c83" stroke-width="0.9"/>
<path d="M1093.3 767.0 L1097.4 768.3 A4.3 4.3 0 1 1 1093.3 762.7Z" fill="#e9c63b"/>
<path d="M1093.3 767.0 V762.7" stroke="#9b7c83" stroke-width="0.6"/>
<circle cx="1121.3" cy="772.0" r="4.3" fill="#dabbbf" stroke="#9b7c83" stroke-width="0.9"/>
<path d="M1121.3 772.0 V767.7" stroke="#9b7c83" stroke-width="0.6"/>
<circle cx="1064.5" cy="755.8" r="4.3" fill="#dabbbf" stroke="#9b7c83" stroke-width="0.9"/>
<path d="M1064.5 755.8 V751.5" stroke="#9b7c83" stroke-width="0.6"/>
<circle cx="1054.4" cy="787.8" r="4.3" fill="#dabbbf" stroke="#9b7c83" stroke-width="0.9"/>
<path d="M1054.4 787.8 V783.5" stroke="#9b7c83" stroke-width="0.6"/>
<circle cx="1111.9" cy="784.6" r="4.3" fill="#dabbbf" stroke="#9b7c83" stroke-width="0.9"/>
<path d="M1111.9 784.6 L1110.6 788.7 A4.3 4.3 0 0 1 1111.9 780.3Z" fill="#e9c63b"/>
<path d="M1111.9 784.6 V780.3" stroke="#9b7c83" stroke-width="0.6"/>
<circle cx="1074.3" cy="780.0" r="4.3" fill="#dabbbf" stroke="#9b7c83" stroke-width="0.9"/>
<path d="M1074.3 780.0 L1070.8 782.5 A4.3 4.3 0 0 1 1074.3 775.7Z" fill="#2f3a3b"/>
<path d="M1074.3 780.0 V775.7" stroke="#9b7c83" stroke-width="0.6"/>
<circle cx="1052.7" cy="783.2" r="4.3" fill="#dabbbf" stroke="#9b7c83" stroke-width="0.9"/>
<path d="M1052.7 783.2 V778.9" stroke="#9b7c83" stroke-width="0.6"/>
<circle cx="1099.9" cy="772.4" r="4.3" fill="#dabbbf" stroke="#9b7c83" stroke-width="0.9"/>
<path d="M1099.9 772.4 V768.1" stroke="#9b7c83" stroke-width="0.6"/>
<circle cx="1058.1" cy="741.1" r="4.3" fill="#dabbbf" stroke="#9b7c83" stroke-width="0.9"/>
<path d="M1058.1 741.1 L1054.0 742.4 A4.3 4.3 0 0 1 1058.1 736.8Z" fill="#e9c63b"/>
<path d="M1058.1 741.1 L1056.8 745.2 A4.3 4.3 0 0 1 1054.0 742.4Z" fill="#2f3a3b"/>
<path d="M1058.1 741.1 V736.8" stroke="#9b7c83" stroke-width="0.6"/>
<circle cx="1104.1" cy="736.4" r="4.3" fill="#dabbbf" stroke="#9b7c83" stroke-width="0.9"/>
<path d="M1104.1 736.4 L1102.8 740.5 A4.3 4.3 0 0 1 1104.1 732.1Z" fill="#e9c63b"/>
<path d="M1104.1 736.4 V732.1" stroke="#9b7c83" stroke-width="0.6"/>
<circle cx="1047.3" cy="793.0" r="4.3" fill="#dabbbf" stroke="#9b7c83" stroke-width="0.9"/>
<path d="M1047.3 793.0 L1043.2 791.7 A4.3 4.3 0 0 1 1047.3 788.7Z" fill="#e9c63b"/>
<path d="M1047.3 793.0 L1046.0 797.1 A4.3 4.3 0 0 1 1043.2 791.7Z" fill="#2f3a3b"/>
<path d="M1047.3 793.0 V788.7" stroke="#9b7c83" stroke-width="0.6"/>
<circle cx="1018.1" cy="805.9" r="4.3" fill="#dabbbf" stroke="#9b7c83" stroke-width="0.9"/>
<circle cx="1018.1" cy="805.9" r="4.3" fill="#e9c63b" stroke="#c4a02a" stroke-width="0.9"/>
<path d="M1018.1 805.9 L1018.1 801.6 A4.3 4.3 0 0 1 1020.6 802.4Z" fill="#d8524f"/>
<circle cx="1036.5" cy="829.9" r="4.3" fill="#dabbbf" stroke="#9b7c83" stroke-width="0.9"/>
<path d="M1036.5 829.9 L1040.6 831.2 A4.3 4.3 0 1 1 1036.5 825.6Z" fill="#e9c63b"/>
<path d="M1036.5 829.9 L1036.5 825.6 A4.3 4.3 0 0 1 1039.0 826.4Z" fill="#d8524f"/>
<path d="M1036.5 829.9 V825.6" stroke="#9b7c83" stroke-width="0.6"/>
<circle cx="1045.5" cy="824.6" r="4.3" fill="#dabbbf" stroke="#9b7c83" stroke-width="0.9"/>
<path d="M1045.5 824.6 V820.3" stroke="#9b7c83" stroke-width="0.6"/>
<circle cx="1015.0" cy="823.9" r="4.3" fill="#dabbbf" stroke="#9b7c83" stroke-width="0.9"/>
<path d="M1015.0 823.9 L1011.5 826.4 A4.3 4.3 0 0 1 1015.0 819.6Z" fill="#2f3a3b"/>
<path d="M1015.0 823.9 V819.6" stroke="#9b7c83" stroke-width="0.6"/>
<circle cx="1061.0" cy="828.7" r="4.3" fill="#dabbbf" stroke="#9b7c83" stroke-width="0.9"/>
<path d="M1061.0 828.7 V824.4" stroke="#9b7c83" stroke-width="0.6"/>
<circle cx="1019.4" cy="810.2" r="4.3" fill="#dabbbf" stroke="#9b7c83" stroke-width="0.9"/>
<path d="M1019.4 810.2 V805.9" stroke="#9b7c83" stroke-width="0.6"/>
<circle cx="1025.7" cy="807.5" r="4.3" fill="#dabbbf" stroke="#9b7c83" stroke-width="0.9"/>
<path d="M1025.7 807.5 L1021.6 808.8 A4.3 4.3 0 0 1 1025.7 803.2Z" fill="#e9c63b"/>
<path d="M1025.7 807.5 L1027.0 811.6 A4.3 4.3 0 0 1 1021.6 808.8Z" fill="#2f3a3b"/>
<path d="M1025.7 807.5 V803.2" stroke="#9b7c83" stroke-width="0.6"/>
<circle cx="1054.2" cy="818.7" r="4.3" fill="#dabbbf" stroke="#9b7c83" stroke-width="0.9"/>
<path d="M1054.2 818.7 V814.4" stroke="#9b7c83" stroke-width="0.6"/>
<circle cx="1032.8" cy="799.4" r="4.3" fill="#dabbbf" stroke="#9b7c83" stroke-width="0.9"/>
<path d="M1032.8 799.4 L1028.7 798.1 A4.3 4.3 0 0 1 1032.8 795.1Z" fill="#e9c63b"/>
<path d="M1032.8 799.4 L1031.5 803.5 A4.3 4.3 0 0 1 1028.7 798.1Z" fill="#2f3a3b"/>
<path d="M1032.8 799.4 V795.1" stroke="#9b7c83" stroke-width="0.6"/>
<circle cx="1022.2" cy="799.4" r="4.3" fill="#dabbbf" stroke="#9b7c83" stroke-width="0.9"/>
<path d="M1022.2 799.4 V795.1" stroke="#9b7c83" stroke-width="0.6"/>
<circle cx="1030.5" cy="815.2" r="4.3" fill="#dabbbf" stroke="#9b7c83" stroke-width="0.9"/>
<path d="M1030.5 815.2 V810.9" stroke="#9b7c83" stroke-width="0.6"/>
<circle cx="1040.8" cy="811.4" r="4.3" fill="#dabbbf" stroke="#9b7c83" stroke-width="0.9"/>
<path d="M1040.8 811.4 V807.1" stroke="#9b7c83" stroke-width="0.6"/>
<circle cx="1022.1" cy="832.6" r="4.3" fill="#dabbbf" stroke="#9b7c83" stroke-width="0.9"/>
<path d="M1022.1 832.6 V828.3" stroke="#9b7c83" stroke-width="0.6"/>
<circle cx="1014.8" cy="809.4" r="4.3" fill="#dabbbf" stroke="#9b7c83" stroke-width="0.9"/>
<path d="M1014.8 809.4 V805.1" stroke="#9b7c83" stroke-width="0.6"/>
<circle cx="1032.2" cy="819.0" r="4.3" fill="#dabbbf" stroke="#9b7c83" stroke-width="0.9"/>
<path d="M1032.2 819.0 L1027.9 819.0 A4.3 4.3 0 0 1 1032.2 814.7Z" fill="#2f3a3b"/>
<path d="M1032.2 819.0 V814.7" stroke="#9b7c83" stroke-width="0.6"/>
<circle cx="1051.1" cy="808.6" r="4.3" fill="#dabbbf" stroke="#9b7c83" stroke-width="0.9"/>
<path d="M1051.1 808.6 V804.3" stroke="#9b7c83" stroke-width="0.6"/>
<circle cx="1051.4" cy="820.1" r="4.3" fill="#dabbbf" stroke="#9b7c83" stroke-width="0.9"/>
<path d="M1051.4 820.1 V815.8" stroke="#9b7c83" stroke-width="0.6"/>
<circle cx="1057.9" cy="814.4" r="4.3" fill="#dabbbf" stroke="#9b7c83" stroke-width="0.9"/>
<path d="M1057.9 814.4 V810.1" stroke="#9b7c83" stroke-width="0.6"/>
<circle cx="1015.1" cy="814.0" r="4.3" fill="#dabbbf" stroke="#9b7c83" stroke-width="0.9"/>
<path d="M1015.1 814.0 V809.7" stroke="#9b7c83" stroke-width="0.6"/>
<circle cx="1015.8" cy="820.2" r="4.3" fill="#dabbbf" stroke="#9b7c83" stroke-width="0.9"/>
<path d="M1015.8 820.2 L1017.1 824.3 A4.3 4.3 0 1 1 1015.8 815.9Z" fill="#e9c63b"/>
<path d="M1015.8 820.2 V815.9" stroke="#9b7c83" stroke-width="0.6"/>
<circle cx="1051.3" cy="816.5" r="4.3" fill="#dabbbf" stroke="#9b7c83" stroke-width="0.9"/>
<path d="M1051.3 816.5 V812.2" stroke="#9b7c83" stroke-width="0.6"/>
<circle cx="1045.2" cy="808.7" r="4.3" fill="#dabbbf" stroke="#9b7c83" stroke-width="0.9"/>
<circle cx="1045.2" cy="808.7" r="4.3" fill="#e9c63b" stroke="#c4a02a" stroke-width="0.9"/>
<path d="M1045.2 808.7 L1045.2 804.4 A4.3 4.3 0 0 1 1047.7 805.2Z" fill="#d8524f"/>
<circle cx="1050.2" cy="824.8" r="4.3" fill="#dabbbf" stroke="#9b7c83" stroke-width="0.9"/>
<path d="M1050.2 824.8 V820.5" stroke="#9b7c83" stroke-width="0.6"/>
<circle cx="1035.0" cy="805.1" r="4.3" fill="#dabbbf" stroke="#9b7c83" stroke-width="0.9"/>
<path d="M1035.0 805.1 L1030.9 806.4 A4.3 4.3 0 0 1 1035.0 800.8Z" fill="#e9c63b"/>
<path d="M1035.0 805.1 V800.8" stroke="#9b7c83" stroke-width="0.6"/>
<circle cx="1045.7" cy="855.8" r="4.3" fill="#dabbbf" stroke="#9b7c83" stroke-width="0.9"/>
<path d="M1045.7 855.8 V851.5" stroke="#9b7c83" stroke-width="0.6"/>
<circle cx="1015.4" cy="853.8" r="4.3" fill="#dabbbf" stroke="#9b7c83" stroke-width="0.9"/>
<path d="M1015.4 853.8 V849.5" stroke="#9b7c83" stroke-width="0.6"/>
<circle cx="1017.4" cy="880.5" r="4.3" fill="#dabbbf" stroke="#9b7c83" stroke-width="0.9"/>
<path d="M1017.4 880.5 L1019.9 884.0 A4.3 4.3 0 1 1 1017.4 876.2Z" fill="#e9c63b"/>
<path d="M1017.4 880.5 V876.2" stroke="#9b7c83" stroke-width="0.6"/>
<circle cx="1060.8" cy="847.2" r="4.3" fill="#dabbbf" stroke="#9b7c83" stroke-width="0.9"/>
<path d="M1060.8 847.2 V842.9" stroke="#9b7c83" stroke-width="0.6"/>
<circle cx="1044.2" cy="853.0" r="4.3" fill="#dabbbf" stroke="#9b7c83" stroke-width="0.9"/>
<path d="M1044.2 853.0 V848.7" stroke="#9b7c83" stroke-width="0.6"/>
<circle cx="998.8" cy="872.6" r="4.3" fill="#dabbbf" stroke="#9b7c83" stroke-width="0.9"/>
<path d="M998.8 872.6 V868.3" stroke="#9b7c83" stroke-width="0.6"/>
<circle cx="1026.7" cy="890.1" r="4.3" fill="#dabbbf" stroke="#9b7c83" stroke-width="0.9"/>
<circle cx="1026.7" cy="890.1" r="4.3" fill="#e9c63b" stroke="#c4a02a" stroke-width="0.9"/>
<circle cx="1045.6" cy="852.0" r="4.3" fill="#dabbbf" stroke="#9b7c83" stroke-width="0.9"/>
<path d="M1045.6 852.0 V847.7" stroke="#9b7c83" stroke-width="0.6"/>
<circle cx="1014.2" cy="859.5" r="4.3" fill="#dabbbf" stroke="#9b7c83" stroke-width="0.9"/>
<path d="M1014.2 859.5 V855.2" stroke="#9b7c83" stroke-width="0.6"/>
<circle cx="1053.8" cy="851.2" r="4.3" fill="#dabbbf" stroke="#9b7c83" stroke-width="0.9"/>
<path d="M1053.8 851.2 V846.9" stroke="#9b7c83" stroke-width="0.6"/>
<circle cx="1066.0" cy="881.9" r="4.3" fill="#dabbbf" stroke="#9b7c83" stroke-width="0.9"/>
<path d="M1066.0 881.9 L1061.9 883.2 A4.3 4.3 0 0 1 1066.0 877.6Z" fill="#e9c63b"/>
<path d="M1066.0 881.9 L1069.5 884.4 A4.3 4.3 0 0 1 1061.9 883.2Z" fill="#2f3a3b"/>
<path d="M1066.0 881.9 V877.6" stroke="#9b7c83" stroke-width="0.6"/>
<circle cx="1007.1" cy="847.2" r="4.3" fill="#dabbbf" stroke="#9b7c83" stroke-width="0.9"/>
<path d="M1007.1 847.2 L1003.0 845.9 A4.3 4.3 0 0 1 1007.1 842.9Z" fill="#e9c63b"/>
<path d="M1007.1 847.2 L1003.6 849.7 A4.3 4.3 0 0 1 1003.0 845.9Z" fill="#2f3a3b"/>
<path d="M1007.1 847.2 V842.9" stroke="#9b7c83" stroke-width="0.6"/>
<circle cx="1020.1" cy="874.0" r="4.3" fill="#dabbbf" stroke="#9b7c83" stroke-width="0.9"/>
<path d="M1020.1 874.0 L1015.8 874.0 A4.3 4.3 0 0 1 1020.1 869.7Z" fill="#2f3a3b"/>
<path d="M1020.1 874.0 V869.7" stroke="#9b7c83" stroke-width="0.6"/>
<circle cx="1058.1" cy="893.7" r="4.3" fill="#dabbbf" stroke="#9b7c83" stroke-width="0.9"/>
<path d="M1058.1 893.7 V889.4" stroke="#9b7c83" stroke-width="0.6"/>
<circle cx="1004.4" cy="866.8" r="4.3" fill="#dabbbf" stroke="#9b7c83" stroke-width="0.9"/>
<path d="M1004.4 866.8 L1000.3 868.1 A4.3 4.3 0 0 1 1004.4 862.5Z" fill="#e9c63b"/>
<path d="M1004.4 866.8 V862.5" stroke="#9b7c83" stroke-width="0.6"/>
<circle cx="1020.3" cy="865.3" r="4.3" fill="#dabbbf" stroke="#9b7c83" stroke-width="0.9"/>
<path d="M1020.3 865.3 V861.0" stroke="#9b7c83" stroke-width="0.6"/>
<circle cx="1004.6" cy="848.7" r="4.3" fill="#dabbbf" stroke="#9b7c83" stroke-width="0.9"/>
<path d="M1004.6 848.7 V844.4" stroke="#9b7c83" stroke-width="0.6"/>
<circle cx="1018.5" cy="903.4" r="4.3" fill="#dabbbf" stroke="#9b7c83" stroke-width="0.9"/>
<path d="M1018.5 903.4 V899.1" stroke="#9b7c83" stroke-width="0.6"/>
<circle cx="1030.8" cy="847.0" r="4.3" fill="#dabbbf" stroke="#9b7c83" stroke-width="0.9"/>
<path d="M1030.8 847.0 L1029.5 851.1 A4.3 4.3 0 0 1 1030.8 842.7Z" fill="#e9c63b"/>
<path d="M1030.8 847.0 L1030.8 842.7 A4.3 4.3 0 0 1 1033.3 843.5Z" fill="#d8524f"/>
<path d="M1030.8 847.0 V842.7" stroke="#9b7c83" stroke-width="0.6"/>
<circle cx="1032.2" cy="878.5" r="4.3" fill="#dabbbf" stroke="#9b7c83" stroke-width="0.9"/>
<path d="M1032.2 878.5 L1036.3 879.8 A4.3 4.3 0 1 1 1032.2 874.2Z" fill="#e9c63b"/>
<path d="M1032.2 878.5 L1032.2 874.2 A4.3 4.3 0 0 1 1034.7 875.0Z" fill="#d8524f"/>
<path d="M1032.2 878.5 V874.2" stroke="#9b7c83" stroke-width="0.6"/>
<circle cx="1012.2" cy="912.1" r="4.3" fill="#dabbbf" stroke="#9b7c83" stroke-width="0.9"/>
<path d="M1012.2 912.1 L1008.7 914.6 A4.3 4.3 0 0 1 1012.2 907.8Z" fill="#2f3a3b"/>
<path d="M1012.2 912.1 V907.8" stroke="#9b7c83" stroke-width="0.6"/>
<circle cx="1051.3" cy="878.4" r="4.3" fill="#dabbbf" stroke="#9b7c83" stroke-width="0.9"/>
<path d="M1051.3 878.4 L1047.2 879.7 A4.3 4.3 0 0 1 1051.3 874.1Z" fill="#e9c63b"/>
<path d="M1051.3 878.4 L1051.3 874.1 A4.3 4.3 0 0 1 1053.8 874.9Z" fill="#d8524f"/>
<path d="M1051.3 878.4 V874.1" stroke="#9b7c83" stroke-width="0.6"/>
<circle cx="1069.3" cy="874.6" r="4.3" fill="#dabbbf" stroke="#9b7c83" stroke-width="0.9"/>
<path d="M1069.3 874.6 V870.3" stroke="#9b7c83" stroke-width="0.6"/>
<circle cx="1038.3" cy="890.9" r="4.3" fill="#dabbbf" stroke="#9b7c83" stroke-width="0.9"/>
<circle cx="1038.3" cy="890.9" r="4.3" fill="#e9c63b" stroke="#c4a02a" stroke-width="0.9"/>
<path d="M1038.3 890.9 L1038.3 886.6 A4.3 4.3 0 0 1 1040.8 887.4Z" fill="#d8524f"/>
<circle cx="1026.2" cy="885.6" r="4.3" fill="#dabbbf" stroke="#9b7c83" stroke-width="0.9"/>
<path d="M1026.2 885.6 L1030.3 884.3 A4.3 4.3 0 1 1 1026.2 881.3Z" fill="#e9c63b"/>
<path d="M1026.2 885.6 V881.3" stroke="#9b7c83" stroke-width="0.6"/>
<circle cx="1010.4" cy="883.3" r="4.3" fill="#dabbbf" stroke="#9b7c83" stroke-width="0.9"/>
<path d="M1010.4 883.3 V879.0" stroke="#9b7c83" stroke-width="0.6"/>
<circle cx="1011.4" cy="883.6" r="4.3" fill="#dabbbf" stroke="#9b7c83" stroke-width="0.9"/>
<path d="M1011.4 883.6 V879.3" stroke="#9b7c83" stroke-width="0.6"/>
<circle cx="1019.4" cy="900.8" r="4.3" fill="#dabbbf" stroke="#9b7c83" stroke-width="0.9"/>
<path d="M1019.4 900.8 V896.5" stroke="#9b7c83" stroke-width="0.6"/>
<circle cx="1024.8" cy="842.0" r="4.3" fill="#dabbbf" stroke="#9b7c83" stroke-width="0.9"/>
<path d="M1024.8 842.0 L1026.1 846.1 A4.3 4.3 0 1 1 1024.8 837.7Z" fill="#e9c63b"/>
<path d="M1024.8 842.0 V837.7" stroke="#9b7c83" stroke-width="0.6"/>
<circle cx="1004.9" cy="899.7" r="4.3" fill="#dabbbf" stroke="#9b7c83" stroke-width="0.9"/>
<path d="M1004.9 899.7 V895.4" stroke="#9b7c83" stroke-width="0.6"/>
<circle cx="1007.9" cy="910.1" r="4.3" fill="#dabbbf" stroke="#9b7c83" stroke-width="0.9"/>
<path d="M1007.9 910.1 V905.8" stroke="#9b7c83" stroke-width="0.6"/>
<circle cx="1018.4" cy="840.5" r="4.3" fill="#dabbbf" stroke="#9b7c83" stroke-width="0.9"/>
<path d="M1018.4 840.5 V836.2" stroke="#9b7c83" stroke-width="0.6"/>
<circle cx="995.2" cy="864.6" r="4.3" fill="#dabbbf" stroke="#9b7c83" stroke-width="0.9"/>
<path d="M995.2 864.6 L991.1 865.9 A4.3 4.3 0 0 1 995.2 860.3Z" fill="#e9c63b"/>
<path d="M995.2 864.6 L998.7 867.1 A4.3 4.3 0 0 1 991.1 865.9Z" fill="#2f3a3b"/>
<path d="M995.2 864.6 V860.3" stroke="#9b7c83" stroke-width="0.6"/>
<circle cx="1071.6" cy="882.3" r="4.3" fill="#dabbbf" stroke="#9b7c83" stroke-width="0.9"/>
<path d="M1071.6 882.3 V878.0" stroke="#9b7c83" stroke-width="0.6"/>
<circle cx="1031.9" cy="897.7" r="4.3" fill="#dabbbf" stroke="#9b7c83" stroke-width="0.9"/>
<path d="M1031.9 897.7 V893.4" stroke="#9b7c83" stroke-width="0.6"/>
<circle cx="1012.5" cy="891.3" r="4.3" fill="#dabbbf" stroke="#9b7c83" stroke-width="0.9"/>
<path d="M1012.5 891.3 L1008.4 892.6 A4.3 4.3 0 0 1 1012.5 887.0Z" fill="#e9c63b"/>
<path d="M1012.5 891.3 L1011.2 895.4 A4.3 4.3 0 0 1 1008.4 892.6Z" fill="#2f3a3b"/>
<path d="M1012.5 891.3 V887.0" stroke="#9b7c83" stroke-width="0.6"/>
<circle cx="1029.7" cy="899.0" r="4.3" fill="#dabbbf" stroke="#9b7c83" stroke-width="0.9"/>
<path d="M1029.7 899.0 V894.7" stroke="#9b7c83" stroke-width="0.6"/>
<circle cx="1004.7" cy="866.2" r="4.3" fill="#dabbbf" stroke="#9b7c83" stroke-width="0.9"/>
<path d="M1004.7 866.2 V861.9" stroke="#9b7c83" stroke-width="0.6"/>
<circle cx="1068.8" cy="876.6" r="4.3" fill="#dabbbf" stroke="#9b7c83" stroke-width="0.9"/>
<path d="M1068.8 876.6 V872.3" stroke="#9b7c83" stroke-width="0.6"/>
<circle cx="1040.3" cy="888.2" r="4.3" fill="#dabbbf" stroke="#9b7c83" stroke-width="0.9"/>
<path d="M1040.3 888.2 V883.9" stroke="#9b7c83" stroke-width="0.6"/>
<circle cx="1061.3" cy="854.4" r="4.3" fill="#dabbbf" stroke="#9b7c83" stroke-width="0.9"/>
<path d="M1061.3 854.4 V850.1" stroke="#9b7c83" stroke-width="0.6"/>
<circle cx="1046.1" cy="867.0" r="4.3" fill="#dabbbf" stroke="#9b7c83" stroke-width="0.9"/>
<path d="M1046.1 867.0 V862.7" stroke="#9b7c83" stroke-width="0.6"/>
<circle cx="1055.2" cy="862.7" r="4.3" fill="#dabbbf" stroke="#9b7c83" stroke-width="0.9"/>
<path d="M1055.2 862.7 L1051.7 860.2 A4.3 4.3 0 0 1 1055.2 858.4Z" fill="#2f3a3b"/>
<path d="M1055.2 862.7 V858.4" stroke="#9b7c83" stroke-width="0.6"/>
<circle cx="1019.2" cy="883.2" r="4.3" fill="#dabbbf" stroke="#9b7c83" stroke-width="0.9"/>
<path d="M1019.2 883.2 V878.9" stroke="#9b7c83" stroke-width="0.6"/>
<circle cx="1025.7" cy="884.1" r="4.3" fill="#dabbbf" stroke="#9b7c83" stroke-width="0.9"/>
<path d="M1025.7 884.1 V879.8" stroke="#9b7c83" stroke-width="0.6"/>
<circle cx="1018.8" cy="852.2" r="4.3" fill="#dabbbf" stroke="#9b7c83" stroke-width="0.9"/>
<path d="M1018.8 852.2 L1014.7 853.5 A4.3 4.3 0 0 1 1018.8 847.9Z" fill="#e9c63b"/>
<path d="M1018.8 852.2 L1020.1 856.3 A4.3 4.3 0 0 1 1014.7 853.5Z" fill="#2f3a3b"/>
<path d="M1018.8 852.2 V847.9" stroke="#9b7c83" stroke-width="0.6"/>
<circle cx="993.7" cy="862.2" r="4.3" fill="#dabbbf" stroke="#9b7c83" stroke-width="0.9"/>
<path d="M993.7 862.2 V857.9" stroke="#9b7c83" stroke-width="0.6"/>
<circle cx="1006.5" cy="907.2" r="4.3" fill="#dabbbf" stroke="#9b7c83" stroke-width="0.9"/>
<path d="M1006.5 907.2 L1003.0 909.7 A4.3 4.3 0 0 1 1006.5 902.9Z" fill="#2f3a3b"/>
<path d="M1006.5 907.2 V902.9" stroke="#9b7c83" stroke-width="0.6"/>
<circle cx="1006.3" cy="856.9" r="4.3" fill="#dabbbf" stroke="#9b7c83" stroke-width="0.9"/>
<path d="M1006.3 856.9 V852.6" stroke="#9b7c83" stroke-width="0.6"/>
<circle cx="1021.1" cy="853.1" r="4.3" fill="#dabbbf" stroke="#9b7c83" stroke-width="0.9"/>
<path d="M1021.1 853.1 V848.8" stroke="#9b7c83" stroke-width="0.6"/>
<circle cx="1023.7" cy="875.5" r="4.3" fill="#dabbbf" stroke="#9b7c83" stroke-width="0.9"/>
<path d="M1023.7 875.5 V871.2" stroke="#9b7c83" stroke-width="0.6"/>
<circle cx="1006.7" cy="902.4" r="4.3" fill="#dabbbf" stroke="#9b7c83" stroke-width="0.9"/>
<path d="M1006.7 902.4 L1010.8 901.1 A4.3 4.3 0 1 1 1006.7 898.1Z" fill="#e9c63b"/>
<path d="M1006.7 902.4 L1006.7 898.1 A4.3 4.3 0 0 1 1009.2 898.9Z" fill="#d8524f"/>
<path d="M1006.7 902.4 V898.1" stroke="#9b7c83" stroke-width="0.6"/>
<circle cx="1011.4" cy="880.8" r="4.3" fill="#dabbbf" stroke="#9b7c83" stroke-width="0.9"/>
<path d="M1011.4 880.8 V876.5" stroke="#9b7c83" stroke-width="0.6"/>
<circle cx="1052.1" cy="889.9" r="4.3" fill="#dabbbf" stroke="#9b7c83" stroke-width="0.9"/>
<path d="M1052.1 889.9 V885.6" stroke="#9b7c83" stroke-width="0.6"/>
<circle cx="1053.5" cy="855.5" r="4.3" fill="#dabbbf" stroke="#9b7c83" stroke-width="0.9"/>
<path d="M1053.5 855.5 L1049.4 856.8 A4.3 4.3 0 0 1 1053.5 851.2Z" fill="#e9c63b"/>
<path d="M1053.5 855.5 L1057.0 858.0 A4.3 4.3 0 0 1 1049.4 856.8Z" fill="#2f3a3b"/>
<path d="M1053.5 855.5 V851.2" stroke="#9b7c83" stroke-width="0.6"/>
<circle cx="1018.5" cy="856.5" r="4.3" fill="#dabbbf" stroke="#9b7c83" stroke-width="0.9"/>
<path d="M1018.5 856.5 L1014.4 857.8 A4.3 4.3 0 0 1 1018.5 852.2Z" fill="#e9c63b"/>
<path d="M1018.5 856.5 L1019.8 860.6 A4.3 4.3 0 0 1 1014.4 857.8Z" fill="#2f3a3b"/>
<path d="M1018.5 856.5 V852.2" stroke="#9b7c83" stroke-width="0.6"/>
<circle cx="1049.9" cy="890.7" r="4.3" fill="#dabbbf" stroke="#9b7c83" stroke-width="0.9"/>
<path d="M1049.9 890.7 V886.4" stroke="#9b7c83" stroke-width="0.6"/>
<circle cx="1045.3" cy="875.0" r="4.3" fill="#dabbbf" stroke="#9b7c83" stroke-width="0.9"/>
<path d="M1045.3 875.0 V870.7" stroke="#9b7c83" stroke-width="0.6"/>
<circle cx="1022.3" cy="860.2" r="4.3" fill="#dabbbf" stroke="#9b7c83" stroke-width="0.9"/>
<path d="M1022.3 860.2 V855.9" stroke="#9b7c83" stroke-width="0.6"/>
<circle cx="1003.6" cy="884.2" r="4.3" fill="#dabbbf" stroke="#9b7c83" stroke-width="0.9"/>
<path d="M1003.6 884.2 V879.9" stroke="#9b7c83" stroke-width="0.6"/>
<circle cx="1069.7" cy="874.1" r="4.3" fill="#dabbbf" stroke="#9b7c83" stroke-width="0.9"/>
<path d="M1069.7 874.1 L1072.2 877.6 A4.3 4.3 0 1 1 1069.7 869.8Z" fill="#e9c63b"/>
<path d="M1069.7 874.1 L1069.7 869.8 A4.3 4.3 0 0 1 1072.2 870.6Z" fill="#d8524f"/>
<path d="M1069.7 874.1 V869.8" stroke="#9b7c83" stroke-width="0.6"/>
<circle cx="1039.8" cy="881.8" r="4.3" fill="#dabbbf" stroke="#9b7c83" stroke-width="0.9"/>
<path d="M1039.8 881.8 L1043.9 883.1 A4.3 4.3 0 1 1 1039.8 877.5Z" fill="#e9c63b"/>
<path d="M1039.8 881.8 L1039.8 877.5 A4.3 4.3 0 0 1 1042.3 878.3Z" fill="#d8524f"/>
<path d="M1039.8 881.8 V877.5" stroke="#9b7c83" stroke-width="0.6"/>
<circle cx="1043.0" cy="854.5" r="4.3" fill="#dabbbf" stroke="#9b7c83" stroke-width="0.9"/>
<path d="M1043.0 854.5 V850.2" stroke="#9b7c83" stroke-width="0.6"/>
<circle cx="1024.8" cy="841.7" r="4.3" fill="#dabbbf" stroke="#9b7c83" stroke-width="0.9"/>
<path d="M1024.8 841.7 V837.4" stroke="#9b7c83" stroke-width="0.6"/>
<circle cx="1044.1" cy="875.0" r="4.3" fill="#dabbbf" stroke="#9b7c83" stroke-width="0.9"/>
<path d="M1044.1 875.0 V870.7" stroke="#9b7c83" stroke-width="0.6"/>
<circle cx="1020.9" cy="908.3" r="4.3" fill="#dabbbf" stroke="#9b7c83" stroke-width="0.9"/>
<path d="M1020.9 908.3 L1016.8 907.0 A4.3 4.3 0 0 1 1020.9 904.0Z" fill="#e9c63b"/>
<path d="M1020.9 908.3 L1022.2 912.4 A4.3 4.3 0 0 1 1016.8 907.0Z" fill="#2f3a3b"/>
<path d="M1020.9 908.3 V904.0" stroke="#9b7c83" stroke-width="0.6"/>
<circle cx="1019.8" cy="846.2" r="4.3" fill="#dabbbf" stroke="#9b7c83" stroke-width="0.9"/>
<path d="M1019.8 846.2 V841.9" stroke="#9b7c83" stroke-width="0.6"/>
<circle cx="1052.3" cy="848.7" r="4.3" fill="#dabbbf" stroke="#9b7c83" stroke-width="0.9"/>
<path d="M1052.3 848.7 L1048.2 850.0 A4.3 4.3 0 0 1 1052.3 844.4Z" fill="#e9c63b"/>
<path d="M1052.3 848.7 L1051.0 852.8 A4.3 4.3 0 0 1 1048.2 850.0Z" fill="#2f3a3b"/>
<path d="M1052.3 848.7 V844.4" stroke="#9b7c83" stroke-width="0.6"/>
<circle cx="1015.7" cy="866.0" r="4.3" fill="#dabbbf" stroke="#9b7c83" stroke-width="0.9"/>
<path d="M1015.7 866.0 V861.7" stroke="#9b7c83" stroke-width="0.6"/>
<circle cx="1016.7" cy="911.6" r="4.3" fill="#dabbbf" stroke="#9b7c83" stroke-width="0.9"/>
<path d="M1016.7 911.6 L1019.2 915.1 A4.3 4.3 0 1 1 1016.7 907.3Z" fill="#e9c63b"/>
<path d="M1016.7 911.6 V907.3" stroke="#9b7c83" stroke-width="0.6"/>
<circle cx="1024.4" cy="890.3" r="4.3" fill="#dabbbf" stroke="#9b7c83" stroke-width="0.9"/>
<path d="M1024.4 890.3 L1020.3 889.0 A4.3 4.3 0 0 1 1024.4 886.0Z" fill="#e9c63b"/>
<path d="M1024.4 890.3 L1023.1 894.4 A4.3 4.3 0 0 1 1020.3 889.0Z" fill="#2f3a3b"/>
<path d="M1024.4 890.3 V886.0" stroke="#9b7c83" stroke-width="0.6"/>
<circle cx="1056.8" cy="873.3" r="4.3" fill="#dabbbf" stroke="#9b7c83" stroke-width="0.9"/>
<path d="M1056.8 873.3 L1060.9 872.0 A4.3 4.3 0 1 1 1056.8 869.0Z" fill="#e9c63b"/>
<path d="M1056.8 873.3 V869.0" stroke="#9b7c83" stroke-width="0.6"/>
<circle cx="1060.5" cy="886.7" r="4.3" fill="#dabbbf" stroke="#9b7c83" stroke-width="0.9"/>
<path d="M1060.5 886.7 V882.4" stroke="#9b7c83" stroke-width="0.6"/>
<circle cx="1017.1" cy="847.2" r="4.3" fill="#dabbbf" stroke="#9b7c83" stroke-width="0.9"/>
<path d="M1017.1 847.2 V842.9" stroke="#9b7c83" stroke-width="0.6"/>
<circle cx="1030.0" cy="880.3" r="4.3" fill="#dabbbf" stroke="#9b7c83" stroke-width="0.9"/>
<path d="M1030.0 880.3 V876.0" stroke="#9b7c83" stroke-width="0.6"/>
<circle cx="1053.5" cy="857.3" r="4.3" fill="#dabbbf" stroke="#9b7c83" stroke-width="0.9"/>
<path d="M1053.5 857.3 L1049.4 858.6 A4.3 4.3 0 0 1 1053.5 853.0Z" fill="#e9c63b"/>
<path d="M1053.5 857.3 L1054.8 861.4 A4.3 4.3 0 0 1 1049.4 858.6Z" fill="#2f3a3b"/>
<path d="M1053.5 857.3 V853.0" stroke="#9b7c83" stroke-width="0.6"/>
<circle cx="1001.0" cy="871.4" r="4.3" fill="#dabbbf" stroke="#9b7c83" stroke-width="0.9"/>
<path d="M1001.0 871.4 L1005.1 870.1 A4.3 4.3 0 1 1 1001.0 867.1Z" fill="#e9c63b"/>
<path d="M1001.0 871.4 V867.1" stroke="#9b7c83" stroke-width="0.6"/>
<circle cx="1038.0" cy="863.6" r="4.3" fill="#dabbbf" stroke="#9b7c83" stroke-width="0.9"/>
<path d="M1038.0 863.6 V859.3" stroke="#9b7c83" stroke-width="0.6"/>
<circle cx="1013.0" cy="854.7" r="4.3" fill="#dabbbf" stroke="#9b7c83" stroke-width="0.9"/>
<path d="M1013.0 854.7 L1017.1 853.4 A4.3 4.3 0 1 1 1013.0 850.4Z" fill="#e9c63b"/>
<path d="M1013.0 854.7 L1013.0 850.4 A4.3 4.3 0 0 1 1015.5 851.2Z" fill="#d8524f"/>
<path d="M1013.0 854.7 V850.4" stroke="#9b7c83" stroke-width="0.6"/>
<circle cx="1060.2" cy="892.8" r="4.3" fill="#dabbbf" stroke="#9b7c83" stroke-width="0.9"/>
<path d="M1060.2 892.8 V888.5" stroke="#9b7c83" stroke-width="0.6"/>
<circle cx="1004.8" cy="849.2" r="4.3" fill="#dabbbf" stroke="#9b7c83" stroke-width="0.9"/>
<path d="M1004.8 849.2 V844.9" stroke="#9b7c83" stroke-width="0.6"/>
<circle cx="1024.5" cy="903.3" r="4.3" fill="#dabbbf" stroke="#9b7c83" stroke-width="0.9"/>
<path d="M1024.5 903.3 V899.0" stroke="#9b7c83" stroke-width="0.6"/>
<circle cx="1060.6" cy="867.4" r="4.3" fill="#dabbbf" stroke="#9b7c83" stroke-width="0.9"/>
<path d="M1060.6 867.4 V863.1" stroke="#9b7c83" stroke-width="0.6"/>
<circle cx="1018.9" cy="905.2" r="4.3" fill="#dabbbf" stroke="#9b7c83" stroke-width="0.9"/>
<path d="M1018.9 905.2 V900.9" stroke="#9b7c83" stroke-width="0.6"/>
<circle cx="1002.9" cy="894.7" r="4.3" fill="#dabbbf" stroke="#9b7c83" stroke-width="0.9"/>
<path d="M1002.9 894.7 L998.6 894.7 A4.3 4.3 0 0 1 1002.9 890.4Z" fill="#2f3a3b"/>
<path d="M1002.9 894.7 V890.4" stroke="#9b7c83" stroke-width="0.6"/>
<circle cx="1008.7" cy="890.3" r="4.3" fill="#dabbbf" stroke="#9b7c83" stroke-width="0.9"/>
<path d="M1008.7 890.3 V886.0" stroke="#9b7c83" stroke-width="0.6"/>
<circle cx="1038.6" cy="854.0" r="4.3" fill="#dabbbf" stroke="#9b7c83" stroke-width="0.9"/>
<path d="M1038.6 854.0 L1034.5 855.3 A4.3 4.3 0 0 1 1038.6 849.7Z" fill="#e9c63b"/>
<path d="M1038.6 854.0 L1037.3 858.1 A4.3 4.3 0 0 1 1034.5 855.3Z" fill="#2f3a3b"/>
<path d="M1038.6 854.0 V849.7" stroke="#9b7c83" stroke-width="0.6"/>
<circle cx="1002.0" cy="852.9" r="4.3" fill="#dabbbf" stroke="#9b7c83" stroke-width="0.9"/>
<path d="M1002.0 852.9 V848.6" stroke="#9b7c83" stroke-width="0.6"/>
<circle cx="1010.8" cy="845.0" r="4.3" fill="#dabbbf" stroke="#9b7c83" stroke-width="0.9"/>
<path d="M1010.8 845.0 L1006.7 846.3 A4.3 4.3 0 0 1 1010.8 840.7Z" fill="#e9c63b"/>
<path d="M1010.8 845.0 L1009.5 849.1 A4.3 4.3 0 0 1 1006.7 846.3Z" fill="#2f3a3b"/>
<path d="M1010.8 845.0 V840.7" stroke="#9b7c83" stroke-width="0.6"/>
<circle cx="1022.6" cy="858.2" r="4.3" fill="#dabbbf" stroke="#9b7c83" stroke-width="0.9"/>
<path d="M1022.6 858.2 V853.9" stroke="#9b7c83" stroke-width="0.6"/>
<circle cx="1063.7" cy="866.1" r="4.3" fill="#dabbbf" stroke="#9b7c83" stroke-width="0.9"/>
<path d="M1063.7 866.1 V861.8" stroke="#9b7c83" stroke-width="0.6"/>
<circle cx="1041.2" cy="876.3" r="4.3" fill="#dabbbf" stroke="#9b7c83" stroke-width="0.9"/>
<path d="M1041.2 876.3 V872.0" stroke="#9b7c83" stroke-width="0.6"/>
<circle cx="1066.0" cy="860.0" r="4.3" fill="#dabbbf" stroke="#9b7c83" stroke-width="0.9"/>
<path d="M1066.0 860.0 L1062.5 862.5 A4.3 4.3 0 0 1 1066.0 855.7Z" fill="#2f3a3b"/>
<path d="M1066.0 860.0 V855.7" stroke="#9b7c83" stroke-width="0.6"/>
<circle cx="1020.8" cy="891.8" r="4.3" fill="#dabbbf" stroke="#9b7c83" stroke-width="0.9"/>
<circle cx="1020.8" cy="891.8" r="4.3" fill="#e9c63b" stroke="#c4a02a" stroke-width="0.9"/>
<circle cx="1009.1" cy="872.1" r="4.3" fill="#dabbbf" stroke="#9b7c83" stroke-width="0.9"/>
<path d="M1009.1 872.1 V867.8" stroke="#9b7c83" stroke-width="0.6"/>
<circle cx="1028.1" cy="875.8" r="4.3" fill="#dabbbf" stroke="#9b7c83" stroke-width="0.9"/>
<path d="M1028.1 875.8 V871.5" stroke="#9b7c83" stroke-width="0.6"/>
<circle cx="1040.0" cy="883.3" r="4.3" fill="#dabbbf" stroke="#9b7c83" stroke-width="0.9"/>
<path d="M1040.0 883.3 L1044.1 882.0 A4.3 4.3 0 1 1 1040.0 879.0Z" fill="#e9c63b"/>
<path d="M1040.0 883.3 V879.0" stroke="#9b7c83" stroke-width="0.6"/>
<circle cx="1000.2" cy="853.1" r="4.3" fill="#dabbbf" stroke="#9b7c83" stroke-width="0.9"/>
<path d="M1000.2 853.1 V848.8" stroke="#9b7c83" stroke-width="0.6"/>
<circle cx="1019.2" cy="861.8" r="4.3" fill="#dabbbf" stroke="#9b7c83" stroke-width="0.9"/>
<path d="M1019.2 861.8 V857.5" stroke="#9b7c83" stroke-width="0.6"/>
<circle cx="1009.1" cy="899.4" r="4.3" fill="#dabbbf" stroke="#9b7c83" stroke-width="0.9"/>
<circle cx="1009.1" cy="899.4" r="4.3" fill="#e9c63b" stroke="#c4a02a" stroke-width="0.9"/>
<circle cx="1038.9" cy="892.9" r="4.3" fill="#dabbbf" stroke="#9b7c83" stroke-width="0.9"/>
<path d="M1038.9 892.9 L1037.6 897.0 A4.3 4.3 0 0 1 1038.9 888.6Z" fill="#e9c63b"/>
<path d="M1038.9 892.9 L1038.9 888.6 A4.3 4.3 0 0 1 1041.4 889.4Z" fill="#d8524f"/>
<path d="M1038.9 892.9 V888.6" stroke="#9b7c83" stroke-width="0.6"/>
<circle cx="1032.9" cy="869.3" r="4.3" fill="#dabbbf" stroke="#9b7c83" stroke-width="0.9"/>
<path d="M1032.9 869.3 L1034.2 873.4 A4.3 4.3 0 1 1 1032.9 865.0Z" fill="#e9c63b"/>
<path d="M1032.9 869.3 L1032.9 865.0 A4.3 4.3 0 0 1 1035.4 865.8Z" fill="#d8524f"/>
<path d="M1032.9 869.3 V865.0" stroke="#9b7c83" stroke-width="0.6"/>
<circle cx="1024.9" cy="889.1" r="4.3" fill="#dabbbf" stroke="#9b7c83" stroke-width="0.9"/>
<path d="M1024.9 889.1 V884.8" stroke="#9b7c83" stroke-width="0.6"/>
<circle cx="995.5" cy="865.1" r="4.3" fill="#dabbbf" stroke="#9b7c83" stroke-width="0.9"/>
<path d="M995.5 865.1 V860.8" stroke="#9b7c83" stroke-width="0.6"/>
<circle cx="1045.6" cy="855.3" r="4.3" fill="#dabbbf" stroke="#9b7c83" stroke-width="0.9"/>
<path d="M1045.6 855.3 V851.0" stroke="#9b7c83" stroke-width="0.6"/>
<circle cx="1038.8" cy="869.9" r="4.3" fill="#dabbbf" stroke="#9b7c83" stroke-width="0.9"/>
<path d="M1038.8 869.9 V865.6" stroke="#9b7c83" stroke-width="0.6"/>
<circle cx="1064.1" cy="885.1" r="4.3" fill="#dabbbf" stroke="#9b7c83" stroke-width="0.9"/>
<path d="M1064.1 885.1 L1068.2 883.8 A4.3 4.3 0 1 1 1064.1 880.8Z" fill="#e9c63b"/>
<path d="M1064.1 885.1 L1064.1 880.8 A4.3 4.3 0 0 1 1066.6 881.6Z" fill="#d8524f"/>
<path d="M1064.1 885.1 V880.8" stroke="#9b7c83" stroke-width="0.6"/>
<circle cx="1024.4" cy="857.8" r="4.3" fill="#dabbbf" stroke="#9b7c83" stroke-width="0.9"/>
<path d="M1024.4 857.8 L1025.7 861.9 A4.3 4.3 0 1 1 1024.4 853.5Z" fill="#e9c63b"/>
<path d="M1024.4 857.8 V853.5" stroke="#9b7c83" stroke-width="0.6"/>
<circle cx="1055.2" cy="851.2" r="4.3" fill="#dabbbf" stroke="#9b7c83" stroke-width="0.9"/>
<path d="M1055.2 851.2 V846.9" stroke="#9b7c83" stroke-width="0.6"/>
<circle cx="1060.5" cy="859.0" r="4.3" fill="#dabbbf" stroke="#9b7c83" stroke-width="0.9"/>
<path d="M1060.5 859.0 V854.7" stroke="#9b7c83" stroke-width="0.6"/>
<circle cx="1020.4" cy="868.9" r="4.3" fill="#dabbbf" stroke="#9b7c83" stroke-width="0.9"/>
<path d="M1020.4 868.9 V864.6" stroke="#9b7c83" stroke-width="0.6"/>
<circle cx="1044.2" cy="895.7" r="4.3" fill="#dabbbf" stroke="#9b7c83" stroke-width="0.9"/>
<path d="M1044.2 895.7 V891.4" stroke="#9b7c83" stroke-width="0.6"/>
<circle cx="1037.3" cy="885.9" r="4.3" fill="#dabbbf" stroke="#9b7c83" stroke-width="0.9"/>
<path d="M1037.3 885.9 V881.6" stroke="#9b7c83" stroke-width="0.6"/>
<circle cx="1017.2" cy="863.7" r="4.3" fill="#dabbbf" stroke="#9b7c83" stroke-width="0.9"/>
<path d="M1017.2 863.7 L1018.5 867.8 A4.3 4.3 0 1 1 1017.2 859.4Z" fill="#e9c63b"/>
<path d="M1017.2 863.7 L1017.2 859.4 A4.3 4.3 0 0 1 1019.7 860.2Z" fill="#d8524f"/>
<path d="M1017.2 863.7 V859.4" stroke="#9b7c83" stroke-width="0.6"/>
<circle cx="1020.5" cy="908.0" r="4.3" fill="#dabbbf" stroke="#9b7c83" stroke-width="0.9"/>
<path d="M1020.5 908.0 V903.7" stroke="#9b7c83" stroke-width="0.6"/>
<circle cx="1028.8" cy="843.2" r="4.3" fill="#dabbbf" stroke="#9b7c83" stroke-width="0.9"/>
<path d="M1028.8 843.2 L1027.5 847.3 A4.3 4.3 0 0 1 1028.8 838.9Z" fill="#e9c63b"/>
<path d="M1028.8 843.2 V838.9" stroke="#9b7c83" stroke-width="0.6"/>
<circle cx="1064.4" cy="874.4" r="4.3" fill="#dabbbf" stroke="#9b7c83" stroke-width="0.9"/>
<path d="M1064.4 874.4 L1066.9 877.9 A4.3 4.3 0 1 1 1064.4 870.1Z" fill="#e9c63b"/>
<path d="M1064.4 874.4 V870.1" stroke="#9b7c83" stroke-width="0.6"/>
<circle cx="1030.5" cy="901.7" r="4.3" fill="#dabbbf" stroke="#9b7c83" stroke-width="0.9"/>
<path d="M1030.5 901.7 L1026.4 903.0 A4.3 4.3 0 0 1 1030.5 897.4Z" fill="#e9c63b"/>
<path d="M1030.5 901.7 V897.4" stroke="#9b7c83" stroke-width="0.6"/>
<circle cx="1011.8" cy="866.5" r="4.3" fill="#dabbbf" stroke="#9b7c83" stroke-width="0.9"/>
<path d="M1011.8 866.5 L1008.3 869.0 A4.3 4.3 0 0 1 1011.8 862.2Z" fill="#2f3a3b"/>
<path d="M1011.8 866.5 V862.2" stroke="#9b7c83" stroke-width="0.6"/>
<circle cx="1014.1" cy="901.2" r="4.3" fill="#dabbbf" stroke="#9b7c83" stroke-width="0.9"/>
<path d="M1014.1 901.2 V896.9" stroke="#9b7c83" stroke-width="0.6"/>
<circle cx="1055.3" cy="893.9" r="4.3" fill="#dabbbf" stroke="#9b7c83" stroke-width="0.9"/>
<circle cx="1055.3" cy="893.9" r="4.3" fill="#e9c63b" stroke="#c4a02a" stroke-width="0.9"/>
<circle cx="1002.5" cy="843.9" r="4.3" fill="#dabbbf" stroke="#9b7c83" stroke-width="0.9"/>
<path d="M1002.5 843.9 V839.6" stroke="#9b7c83" stroke-width="0.6"/>
<circle cx="1007.9" cy="881.5" r="4.3" fill="#dabbbf" stroke="#9b7c83" stroke-width="0.9"/>
<path d="M1007.9 881.5 V877.2" stroke="#9b7c83" stroke-width="0.6"/>
<circle cx="1062.2" cy="862.4" r="4.3" fill="#dabbbf" stroke="#9b7c83" stroke-width="0.9"/>
<path d="M1062.2 862.4 V858.1" stroke="#9b7c83" stroke-width="0.6"/>
<circle cx="1029.3" cy="897.4" r="4.3" fill="#dabbbf" stroke="#9b7c83" stroke-width="0.9"/>
<path d="M1029.3 897.4 V893.1" stroke="#9b7c83" stroke-width="0.6"/>
<circle cx="1020.4" cy="906.5" r="4.3" fill="#dabbbf" stroke="#9b7c83" stroke-width="0.9"/>
<path d="M1020.4 906.5 L1019.1 910.6 A4.3 4.3 0 0 1 1020.4 902.2Z" fill="#e9c63b"/>
<path d="M1020.4 906.5 V902.2" stroke="#9b7c83" stroke-width="0.6"/>
<circle cx="1027.5" cy="881.4" r="4.3" fill="#dabbbf" stroke="#9b7c83" stroke-width="0.9"/>
<path d="M1027.5 881.4 V877.1" stroke="#9b7c83" stroke-width="0.6"/>
<circle cx="1054.2" cy="881.2" r="4.3" fill="#dabbbf" stroke="#9b7c83" stroke-width="0.9"/>
<path d="M1054.2 881.2 V876.9" stroke="#9b7c83" stroke-width="0.6"/>
<circle cx="1062.5" cy="848.6" r="4.3" fill="#dabbbf" stroke="#9b7c83" stroke-width="0.9"/>
<path d="M1062.5 848.6 V844.3" stroke="#9b7c83" stroke-width="0.6"/>
<circle cx="1050.5" cy="873.1" r="4.3" fill="#dabbbf" stroke="#9b7c83" stroke-width="0.9"/>
<path d="M1050.5 873.1 V868.8" stroke="#9b7c83" stroke-width="0.6"/>
<circle cx="1032.3" cy="865.9" r="4.3" fill="#dabbbf" stroke="#9b7c83" stroke-width="0.9"/>
<path d="M1032.3 865.9 V861.6" stroke="#9b7c83" stroke-width="0.6"/>
<circle cx="1052.8" cy="853.1" r="4.3" fill="#dabbbf" stroke="#9b7c83" stroke-width="0.9"/>
<path d="M1052.8 853.1 V848.8" stroke="#9b7c83" stroke-width="0.6"/>
<circle cx="1044.7" cy="854.6" r="4.3" fill="#dabbbf" stroke="#9b7c83" stroke-width="0.9"/>
<path d="M1044.7 854.6 V850.3" stroke="#9b7c83" stroke-width="0.6"/>
<circle cx="1029.7" cy="867.6" r="4.3" fill="#dabbbf" stroke="#9b7c83" stroke-width="0.9"/>
<path d="M1029.7 867.6 V863.3" stroke="#9b7c83" stroke-width="0.6"/>
<circle cx="1039.0" cy="868.5" r="4.3" fill="#dabbbf" stroke="#9b7c83" stroke-width="0.9"/>
<path d="M1039.0 868.5 L1043.1 869.8 A4.3 4.3 0 1 1 1039.0 864.2Z" fill="#e9c63b"/>
<path d="M1039.0 868.5 L1039.0 864.2 A4.3 4.3 0 0 1 1041.5 865.0Z" fill="#d8524f"/>
<path d="M1039.0 868.5 V864.2" stroke="#9b7c83" stroke-width="0.6"/>
<circle cx="1006.5" cy="900.5" r="4.3" fill="#dabbbf" stroke="#9b7c83" stroke-width="0.9"/>
<path d="M1006.5 900.5 L1010.6 899.2 A4.3 4.3 0 1 1 1006.5 896.2Z" fill="#e9c63b"/>
<path d="M1006.5 900.5 V896.2" stroke="#9b7c83" stroke-width="0.6"/>
<circle cx="1022.7" cy="906.4" r="4.3" fill="#dabbbf" stroke="#9b7c83" stroke-width="0.9"/>
<path d="M1022.7 906.4 L1018.6 907.7 A4.3 4.3 0 0 1 1022.7 902.1Z" fill="#e9c63b"/>
<path d="M1022.7 906.4 V902.1" stroke="#9b7c83" stroke-width="0.6"/>
<circle cx="1059.2" cy="875.7" r="4.3" fill="#dabbbf" stroke="#9b7c83" stroke-width="0.9"/>
<path d="M1059.2 875.7 V871.4" stroke="#9b7c83" stroke-width="0.6"/>
<circle cx="1040.3" cy="899.9" r="4.3" fill="#dabbbf" stroke="#9b7c83" stroke-width="0.9"/>
<path d="M1040.3 899.9 L1036.2 901.2 A4.3 4.3 0 0 1 1040.3 895.6Z" fill="#e9c63b"/>
<path d="M1040.3 899.9 V895.6" stroke="#9b7c83" stroke-width="0.6"/>
<circle cx="1042.0" cy="872.0" r="4.3" fill="#dabbbf" stroke="#9b7c83" stroke-width="0.9"/>
<path d="M1042.0 872.0 V867.7" stroke="#9b7c83" stroke-width="0.6"/>
<circle cx="1037.5" cy="851.8" r="4.3" fill="#dabbbf" stroke="#9b7c83" stroke-width="0.9"/>
<path d="M1037.5 851.8 L1041.6 850.5 A4.3 4.3 0 1 1 1037.5 847.5Z" fill="#e9c63b"/>
<path d="M1037.5 851.8 V847.5" stroke="#9b7c83" stroke-width="0.6"/>
<circle cx="1029.0" cy="844.8" r="4.3" fill="#dabbbf" stroke="#9b7c83" stroke-width="0.9"/>
<path d="M1029.0 844.8 V840.5" stroke="#9b7c83" stroke-width="0.6"/>
<circle cx="1008.2" cy="869.8" r="4.3" fill="#dabbbf" stroke="#9b7c83" stroke-width="0.9"/>
<path d="M1008.2 869.8 L1004.1 871.1 A4.3 4.3 0 0 1 1008.2 865.5Z" fill="#e9c63b"/>
<path d="M1008.2 869.8 V865.5" stroke="#9b7c83" stroke-width="0.6"/>
<circle cx="1020.2" cy="842.5" r="4.3" fill="#dabbbf" stroke="#9b7c83" stroke-width="0.9"/>
<path d="M1020.2 842.5 V838.2" stroke="#9b7c83" stroke-width="0.6"/>
<circle cx="999.4" cy="864.8" r="4.3" fill="#dabbbf" stroke="#9b7c83" stroke-width="0.9"/>
<path d="M999.4 864.8 L995.1 864.8 A4.3 4.3 0 0 1 999.4 860.5Z" fill="#2f3a3b"/>
<path d="M999.4 864.8 V860.5" stroke="#9b7c83" stroke-width="0.6"/>
<circle cx="1032.0" cy="881.7" r="4.3" fill="#dabbbf" stroke="#9b7c83" stroke-width="0.9"/>
<path d="M1032.0 881.7 L1028.5 879.2 A4.3 4.3 0 0 1 1032.0 877.4Z" fill="#2f3a3b"/>
<path d="M1032.0 881.7 V877.4" stroke="#9b7c83" stroke-width="0.6"/>
<circle cx="1008.7" cy="866.2" r="4.3" fill="#dabbbf" stroke="#9b7c83" stroke-width="0.9"/>
<path d="M1008.7 866.2 V861.9" stroke="#9b7c83" stroke-width="0.6"/>
<circle cx="1067.7" cy="881.6" r="4.3" fill="#dabbbf" stroke="#9b7c83" stroke-width="0.9"/>
<circle cx="1067.7" cy="881.6" r="4.3" fill="#e9c63b" stroke="#c4a02a" stroke-width="0.9"/>
<circle cx="1060.5" cy="893.2" r="4.3" fill="#dabbbf" stroke="#9b7c83" stroke-width="0.9"/>
<path d="M1060.5 893.2 L1061.8 897.3 A4.3 4.3 0 1 1 1060.5 888.9Z" fill="#e9c63b"/>
<path d="M1060.5 893.2 L1060.5 888.9 A4.3 4.3 0 0 1 1063.0 889.7Z" fill="#d8524f"/>
<path d="M1060.5 893.2 V888.9" stroke="#9b7c83" stroke-width="0.6"/>
<circle cx="1015.3" cy="855.6" r="4.3" fill="#dabbbf" stroke="#9b7c83" stroke-width="0.9"/>
<circle cx="1015.3" cy="855.6" r="4.3" fill="#e9c63b" stroke="#c4a02a" stroke-width="0.9"/>
<circle cx="1019.9" cy="861.2" r="4.3" fill="#dabbbf" stroke="#9b7c83" stroke-width="0.9"/>
<path d="M1019.9 861.2 L1024.0 862.5 A4.3 4.3 0 1 1 1019.9 856.9Z" fill="#e9c63b"/>
<path d="M1019.9 861.2 L1019.9 856.9 A4.3 4.3 0 0 1 1022.4 857.7Z" fill="#d8524f"/>
<path d="M1019.9 861.2 V856.9" stroke="#9b7c83" stroke-width="0.6"/>
<circle cx="1069.6" cy="888.2" r="4.3" fill="#dabbbf" stroke="#9b7c83" stroke-width="0.9"/>
<path d="M1069.6 888.2 V883.9" stroke="#9b7c83" stroke-width="0.6"/>
<circle cx="1042.7" cy="896.1" r="4.3" fill="#dabbbf" stroke="#9b7c83" stroke-width="0.9"/>
<path d="M1042.7 896.1 V891.8" stroke="#9b7c83" stroke-width="0.6"/>
<circle cx="1018.0" cy="900.2" r="4.3" fill="#dabbbf" stroke="#9b7c83" stroke-width="0.9"/>
<path d="M1018.0 900.2 L1022.1 898.9 A4.3 4.3 0 1 1 1018.0 895.9Z" fill="#e9c63b"/>
<path d="M1018.0 900.2 L1018.0 895.9 A4.3 4.3 0 0 1 1020.5 896.7Z" fill="#d8524f"/>
<path d="M1018.0 900.2 V895.9" stroke="#9b7c83" stroke-width="0.6"/>
<circle cx="1010.1" cy="907.0" r="4.3" fill="#dabbbf" stroke="#9b7c83" stroke-width="0.9"/>
<path d="M1010.1 907.0 V902.7" stroke="#9b7c83" stroke-width="0.6"/>
<circle cx="1018.3" cy="897.5" r="4.3" fill="#dabbbf" stroke="#9b7c83" stroke-width="0.9"/>
<path d="M1018.3 897.5 V893.2" stroke="#9b7c83" stroke-width="0.6"/>
<circle cx="1059.5" cy="860.4" r="4.3" fill="#dabbbf" stroke="#9b7c83" stroke-width="0.9"/>
<path d="M1059.5 860.4 V856.1" stroke="#9b7c83" stroke-width="0.6"/>
<circle cx="1021.5" cy="878.6" r="4.3" fill="#dabbbf" stroke="#9b7c83" stroke-width="0.9"/>
<path d="M1021.5 878.6 V874.3" stroke="#9b7c83" stroke-width="0.6"/>
<circle cx="1004.4" cy="878.0" r="4.3" fill="#dabbbf" stroke="#9b7c83" stroke-width="0.9"/>
<path d="M1004.4 878.0 V873.7" stroke="#9b7c83" stroke-width="0.6"/>
<circle cx="1024.8" cy="909.2" r="4.3" fill="#dabbbf" stroke="#9b7c83" stroke-width="0.9"/>
<path d="M1024.8 909.2 V904.9" stroke="#9b7c83" stroke-width="0.6"/>
<circle cx="1008.6" cy="858.2" r="4.3" fill="#dabbbf" stroke="#9b7c83" stroke-width="0.9"/>
<path d="M1008.6 858.2 V853.9" stroke="#9b7c83" stroke-width="0.6"/>
<circle cx="1005.6" cy="870.5" r="4.3" fill="#dabbbf" stroke="#9b7c83" stroke-width="0.9"/>
<path d="M1005.6 870.5 V866.2" stroke="#9b7c83" stroke-width="0.6"/>
<circle cx="1048.3" cy="895.5" r="4.3" fill="#dabbbf" stroke="#9b7c83" stroke-width="0.9"/>
<path d="M1048.3 895.5 V891.2" stroke="#9b7c83" stroke-width="0.6"/>
<circle cx="1011.6" cy="855.8" r="4.3" fill="#dabbbf" stroke="#9b7c83" stroke-width="0.9"/>
<path d="M1011.6 855.8 L1012.9 859.9 A4.3 4.3 0 1 1 1011.6 851.5Z" fill="#e9c63b"/>
<path d="M1011.6 855.8 V851.5" stroke="#9b7c83" stroke-width="0.6"/>
<circle cx="1044.2" cy="885.2" r="4.3" fill="#dabbbf" stroke="#9b7c83" stroke-width="0.9"/>
<path d="M1044.2 885.2 V880.9" stroke="#9b7c83" stroke-width="0.6"/>
<circle cx="1023.4" cy="841.2" r="4.3" fill="#dabbbf" stroke="#9b7c83" stroke-width="0.9"/>
<path d="M1023.4 841.2 V836.9" stroke="#9b7c83" stroke-width="0.6"/>
<circle cx="1050.9" cy="887.6" r="4.3" fill="#dabbbf" stroke="#9b7c83" stroke-width="0.9"/>
<path d="M1050.9 887.6 V883.3" stroke="#9b7c83" stroke-width="0.6"/>
<circle cx="1012.1" cy="867.0" r="4.3" fill="#dabbbf" stroke="#9b7c83" stroke-width="0.9"/>
<path d="M1012.1 867.0 V862.7" stroke="#9b7c83" stroke-width="0.6"/>
<circle cx="1029.2" cy="861.1" r="4.3" fill="#dabbbf" stroke="#9b7c83" stroke-width="0.9"/>
<path d="M1029.2 861.1 L1033.3 862.4 A4.3 4.3 0 1 1 1029.2 856.8Z" fill="#e9c63b"/>
<path d="M1029.2 861.1 V856.8" stroke="#9b7c83" stroke-width="0.6"/>
<circle cx="1009.8" cy="904.4" r="4.3" fill="#dabbbf" stroke="#9b7c83" stroke-width="0.9"/>
<path d="M1009.8 904.4 V900.1" stroke="#9b7c83" stroke-width="0.6"/>
<circle cx="1046.7" cy="857.4" r="4.3" fill="#dabbbf" stroke="#9b7c83" stroke-width="0.9"/>
<path d="M1046.7 857.4 L1045.4 861.5 A4.3 4.3 0 0 1 1046.7 853.1Z" fill="#e9c63b"/>
<path d="M1046.7 857.4 L1046.7 853.1 A4.3 4.3 0 0 1 1049.2 853.9Z" fill="#d8524f"/>
<path d="M1046.7 857.4 V853.1" stroke="#9b7c83" stroke-width="0.6"/>
<circle cx="1045.9" cy="860.2" r="4.3" fill="#dabbbf" stroke="#9b7c83" stroke-width="0.9"/>
<path d="M1045.9 860.2 L1042.4 857.7 A4.3 4.3 0 0 1 1045.9 855.9Z" fill="#2f3a3b"/>
<path d="M1045.9 860.2 V855.9" stroke="#9b7c83" stroke-width="0.6"/>
<circle cx="1030.9" cy="902.9" r="4.3" fill="#dabbbf" stroke="#9b7c83" stroke-width="0.9"/>
<path d="M1030.9 902.9 L1033.4 906.4 A4.3 4.3 0 1 1 1030.9 898.6Z" fill="#e9c63b"/>
<path d="M1030.9 902.9 V898.6" stroke="#9b7c83" stroke-width="0.6"/>
<circle cx="1038.3" cy="853.0" r="4.3" fill="#dabbbf" stroke="#9b7c83" stroke-width="0.9"/>
<path d="M1038.3 853.0 L1034.2 854.3 A4.3 4.3 0 0 1 1038.3 848.7Z" fill="#e9c63b"/>
<path d="M1038.3 853.0 L1038.3 848.7 A4.3 4.3 0 0 1 1040.8 849.5Z" fill="#d8524f"/>
<path d="M1038.3 853.0 V848.7" stroke="#9b7c83" stroke-width="0.6"/>
<circle cx="1020.5" cy="879.0" r="4.3" fill="#dabbbf" stroke="#9b7c83" stroke-width="0.9"/>
<path d="M1020.5 879.0 L1023.0 882.5 A4.3 4.3 0 1 1 1020.5 874.7Z" fill="#e9c63b"/>
<path d="M1020.5 879.0 V874.7" stroke="#9b7c83" stroke-width="0.6"/>
<circle cx="1011.9" cy="864.7" r="4.3" fill="#dabbbf" stroke="#9b7c83" stroke-width="0.9"/>
<path d="M1011.9 864.7 V860.4" stroke="#9b7c83" stroke-width="0.6"/>
<circle cx="1000.2" cy="855.1" r="4.3" fill="#dabbbf" stroke="#9b7c83" stroke-width="0.9"/>
<path d="M1000.2 855.1 V850.8" stroke="#9b7c83" stroke-width="0.6"/>
<circle cx="1014.7" cy="865.8" r="4.3" fill="#dabbbf" stroke="#9b7c83" stroke-width="0.9"/>
<path d="M1014.7 865.8 V861.5" stroke="#9b7c83" stroke-width="0.6"/>
<circle cx="1009.6" cy="850.6" r="4.3" fill="#dabbbf" stroke="#9b7c83" stroke-width="0.9"/>
<path d="M1009.6 850.6 L1013.7 851.9 A4.3 4.3 0 1 1 1009.6 846.3Z" fill="#e9c63b"/>
<path d="M1009.6 850.6 V846.3" stroke="#9b7c83" stroke-width="0.6"/>
<circle cx="1011.0" cy="907.5" r="4.3" fill="#dabbbf" stroke="#9b7c83" stroke-width="0.9"/>
<path d="M1011.0 907.5 L1007.5 905.0 A4.3 4.3 0 0 1 1011.0 903.2Z" fill="#2f3a3b"/>
<path d="M1011.0 907.5 V903.2" stroke="#9b7c83" stroke-width="0.6"/>
<circle cx="999.3" cy="865.6" r="4.3" fill="#dabbbf" stroke="#9b7c83" stroke-width="0.9"/>
<path d="M999.3 865.6 L995.0 865.6 A4.3 4.3 0 0 1 999.3 861.3Z" fill="#2f3a3b"/>
<path d="M999.3 865.6 V861.3" stroke="#9b7c83" stroke-width="0.6"/>
<circle cx="1030.2" cy="874.5" r="4.3" fill="#dabbbf" stroke="#9b7c83" stroke-width="0.9"/>
<path d="M1030.2 874.5 L1034.3 873.2 A4.3 4.3 0 1 1 1030.2 870.2Z" fill="#e9c63b"/>
<path d="M1030.2 874.5 V870.2" stroke="#9b7c83" stroke-width="0.6"/>
<circle cx="998.8" cy="844.4" r="4.3" fill="#dabbbf" stroke="#9b7c83" stroke-width="0.9"/>
<path d="M998.8 844.4 V840.1" stroke="#9b7c83" stroke-width="0.6"/>
<circle cx="1005.4" cy="853.6" r="4.3" fill="#dabbbf" stroke="#9b7c83" stroke-width="0.9"/>
<path d="M1005.4 853.6 L1001.9 851.1 A4.3 4.3 0 0 1 1005.4 849.3Z" fill="#2f3a3b"/>
<path d="M1005.4 853.6 V849.3" stroke="#9b7c83" stroke-width="0.6"/>
<circle cx="996.6" cy="864.2" r="4.3" fill="#dabbbf" stroke="#9b7c83" stroke-width="0.9"/>
<path d="M996.6 864.2 V859.9" stroke="#9b7c83" stroke-width="0.6"/>
<circle cx="1068.7" cy="880.0" r="4.3" fill="#dabbbf" stroke="#9b7c83" stroke-width="0.9"/>
<path d="M1068.7 880.0 L1067.4 884.1 A4.3 4.3 0 0 1 1068.7 875.7Z" fill="#e9c63b"/>
<path d="M1068.7 880.0 V875.7" stroke="#9b7c83" stroke-width="0.6"/>
<circle cx="1008.9" cy="884.6" r="4.3" fill="#dabbbf" stroke="#9b7c83" stroke-width="0.9"/>
<path d="M1008.9 884.6 V880.3" stroke="#9b7c83" stroke-width="0.6"/>
<circle cx="1033.4" cy="860.6" r="4.3" fill="#dabbbf" stroke="#9b7c83" stroke-width="0.9"/>
<path d="M1033.4 860.6 L1037.5 861.9 A4.3 4.3 0 1 1 1033.4 856.3Z" fill="#e9c63b"/>
<path d="M1033.4 860.6 L1033.4 856.3 A4.3 4.3 0 0 1 1035.9 857.1Z" fill="#d8524f"/>
<path d="M1033.4 860.6 V856.3" stroke="#9b7c83" stroke-width="0.6"/>
<circle cx="1067.7" cy="872.4" r="4.3" fill="#dabbbf" stroke="#9b7c83" stroke-width="0.9"/>
<path d="M1067.7 872.4 V868.1" stroke="#9b7c83" stroke-width="0.6"/>
<circle cx="1017.4" cy="851.6" r="4.3" fill="#dabbbf" stroke="#9b7c83" stroke-width="0.9"/>
<path d="M1017.4 851.6 V847.3" stroke="#9b7c83" stroke-width="0.6"/>
<circle cx="1021.0" cy="844.6" r="4.3" fill="#dabbbf" stroke="#9b7c83" stroke-width="0.9"/>
<path d="M1021.0 844.6 V840.3" stroke="#9b7c83" stroke-width="0.6"/>
<circle cx="1031.0" cy="849.5" r="4.3" fill="#dabbbf" stroke="#9b7c83" stroke-width="0.9"/>
<path d="M1031.0 849.5 L1032.3 853.6 A4.3 4.3 0 1 1 1031.0 845.2Z" fill="#e9c63b"/>
<path d="M1031.0 849.5 V845.2" stroke="#9b7c83" stroke-width="0.6"/>
<circle cx="1065.9" cy="887.2" r="4.3" fill="#dabbbf" stroke="#9b7c83" stroke-width="0.9"/>
<path d="M1065.9 887.2 V882.9" stroke="#9b7c83" stroke-width="0.6"/>
<circle cx="1055.1" cy="888.9" r="4.3" fill="#dabbbf" stroke="#9b7c83" stroke-width="0.9"/>
<path d="M1055.1 888.9 L1057.6 892.4 A4.3 4.3 0 1 1 1055.1 884.6Z" fill="#e9c63b"/>
<path d="M1055.1 888.9 L1055.1 884.6 A4.3 4.3 0 0 1 1057.6 885.4Z" fill="#d8524f"/>
<path d="M1055.1 888.9 V884.6" stroke="#9b7c83" stroke-width="0.6"/>
<circle cx="1021.5" cy="908.3" r="4.3" fill="#dabbbf" stroke="#9b7c83" stroke-width="0.9"/>
<path d="M1021.5 908.3 L1020.2 912.4 A4.3 4.3 0 0 1 1021.5 904.0Z" fill="#e9c63b"/>
<path d="M1021.5 908.3 L1021.5 904.0 A4.3 4.3 0 0 1 1024.0 904.8Z" fill="#d8524f"/>
<path d="M1021.5 908.3 V904.0" stroke="#9b7c83" stroke-width="0.6"/>
<circle cx="1029.0" cy="893.7" r="4.3" fill="#dabbbf" stroke="#9b7c83" stroke-width="0.9"/>
<path d="M1029.0 893.7 L1024.9 892.4 A4.3 4.3 0 0 1 1029.0 889.4Z" fill="#e9c63b"/>
<path d="M1029.0 893.7 L1025.5 896.2 A4.3 4.3 0 0 1 1024.9 892.4Z" fill="#2f3a3b"/>
<path d="M1029.0 893.7 V889.4" stroke="#9b7c83" stroke-width="0.6"/>
<circle cx="1027.4" cy="846.3" r="4.3" fill="#dabbbf" stroke="#9b7c83" stroke-width="0.9"/>
<path d="M1027.4 846.3 L1028.7 850.4 A4.3 4.3 0 1 1 1027.4 842.0Z" fill="#e9c63b"/>
<path d="M1027.4 846.3 V842.0" stroke="#9b7c83" stroke-width="0.6"/>
<circle cx="1007.5" cy="840.2" r="4.3" fill="#dabbbf" stroke="#9b7c83" stroke-width="0.9"/>
<path d="M1007.5 840.2 L1006.2 844.3 A4.3 4.3 0 0 1 1007.5 835.9Z" fill="#e9c63b"/>
<path d="M1007.5 840.2 L1007.5 835.9 A4.3 4.3 0 0 1 1010.0 836.7Z" fill="#d8524f"/>
<path d="M1007.5 840.2 V835.9" stroke="#9b7c83" stroke-width="0.6"/>
<circle cx="1030.6" cy="876.5" r="4.3" fill="#dabbbf" stroke="#9b7c83" stroke-width="0.9"/>
<path d="M1030.6 876.5 V872.2" stroke="#9b7c83" stroke-width="0.6"/>
<circle cx="1042.5" cy="852.5" r="4.3" fill="#dabbbf" stroke="#9b7c83" stroke-width="0.9"/>
<path d="M1042.5 852.5 V848.2" stroke="#9b7c83" stroke-width="0.6"/>
<circle cx="1007.7" cy="916.2" r="4.3" fill="#dabbbf" stroke="#9b7c83" stroke-width="0.9"/>
<path d="M1007.7 916.2 V911.9" stroke="#9b7c83" stroke-width="0.6"/>
<circle cx="1009.8" cy="913.0" r="4.3" fill="#dabbbf" stroke="#9b7c83" stroke-width="0.9"/>
<path d="M1009.8 913.0 L1005.5 913.0 A4.3 4.3 0 0 1 1009.8 908.7Z" fill="#2f3a3b"/>
<path d="M1009.8 913.0 V908.7" stroke="#9b7c83" stroke-width="0.6"/>
<circle cx="1019.5" cy="889.3" r="4.3" fill="#dabbbf" stroke="#9b7c83" stroke-width="0.9"/>
<path d="M1019.5 889.3 L1022.0 892.8 A4.3 4.3 0 1 1 1019.5 885.0Z" fill="#e9c63b"/>
<path d="M1019.5 889.3 V885.0" stroke="#9b7c83" stroke-width="0.6"/>
<circle cx="1010.8" cy="902.9" r="4.3" fill="#dabbbf" stroke="#9b7c83" stroke-width="0.9"/>
<circle cx="1010.8" cy="902.9" r="4.3" fill="#e9c63b" stroke="#c4a02a" stroke-width="0.9"/>
<path d="M1010.8 902.9 L1010.8 898.6 A4.3 4.3 0 0 1 1013.3 899.4Z" fill="#d8524f"/>
<circle cx="1028.7" cy="880.6" r="4.3" fill="#dabbbf" stroke="#9b7c83" stroke-width="0.9"/>
<path d="M1028.7 880.6 V876.3" stroke="#9b7c83" stroke-width="0.6"/>
<circle cx="1002.4" cy="854.4" r="4.3" fill="#dabbbf" stroke="#9b7c83" stroke-width="0.9"/>
<path d="M1002.4 854.4 L1006.5 855.7 A4.3 4.3 0 1 1 1002.4 850.1Z" fill="#e9c63b"/>
<path d="M1002.4 854.4 L1002.4 850.1 A4.3 4.3 0 0 1 1004.9 850.9Z" fill="#d8524f"/>
<path d="M1002.4 854.4 V850.1" stroke="#9b7c83" stroke-width="0.6"/>
<circle cx="1002.4" cy="877.3" r="4.3" fill="#dabbbf" stroke="#9b7c83" stroke-width="0.9"/>
<path d="M1002.4 877.3 V873.0" stroke="#9b7c83" stroke-width="0.6"/>
<circle cx="1010.4" cy="848.5" r="4.3" fill="#dabbbf" stroke="#9b7c83" stroke-width="0.9"/>
<path d="M1010.4 848.5 V844.2" stroke="#9b7c83" stroke-width="0.6"/>
<circle cx="1028.5" cy="868.1" r="4.3" fill="#dabbbf" stroke="#9b7c83" stroke-width="0.9"/>
<path d="M1028.5 868.1 V863.8" stroke="#9b7c83" stroke-width="0.6"/>
<circle cx="1015.0" cy="858.4" r="4.3" fill="#dabbbf" stroke="#9b7c83" stroke-width="0.9"/>
<path d="M1015.0 858.4 V854.1" stroke="#9b7c83" stroke-width="0.6"/>
<circle cx="1063.2" cy="869.0" r="4.3" fill="#dabbbf" stroke="#9b7c83" stroke-width="0.9"/>
<path d="M1063.2 869.0 V864.7" stroke="#9b7c83" stroke-width="0.6"/>
<circle cx="1045.2" cy="876.6" r="4.3" fill="#dabbbf" stroke="#9b7c83" stroke-width="0.9"/>
<path d="M1045.2 876.6 L1043.9 880.7 A4.3 4.3 0 0 1 1045.2 872.3Z" fill="#e9c63b"/>
<path d="M1045.2 876.6 V872.3" stroke="#9b7c83" stroke-width="0.6"/>
<circle cx="1035.0" cy="890.2" r="4.3" fill="#dabbbf" stroke="#9b7c83" stroke-width="0.9"/>
<path d="M1035.0 890.2 L1030.9 891.5 A4.3 4.3 0 0 1 1035.0 885.9Z" fill="#e9c63b"/>
<path d="M1035.0 890.2 L1038.5 892.7 A4.3 4.3 0 0 1 1030.9 891.5Z" fill="#2f3a3b"/>
<path d="M1035.0 890.2 V885.9" stroke="#9b7c83" stroke-width="0.6"/>
<circle cx="1007.0" cy="841.0" r="4.3" fill="#dabbbf" stroke="#9b7c83" stroke-width="0.9"/>
<path d="M1007.0 841.0 V836.7" stroke="#9b7c83" stroke-width="0.6"/>
<circle cx="1038.3" cy="849.6" r="4.3" fill="#dabbbf" stroke="#9b7c83" stroke-width="0.9"/>
<path d="M1038.3 849.6 V845.3" stroke="#9b7c83" stroke-width="0.6"/>
<circle cx="1044.6" cy="911.0" r="4.3" fill="#dabbbf" stroke="#9b7c83" stroke-width="0.9"/>
<path d="M1044.6 911.0 L1048.7 909.7 A4.3 4.3 0 1 1 1044.6 906.7Z" fill="#e9c63b"/>
<path d="M1044.6 911.0 L1044.6 906.7 A4.3 4.3 0 0 1 1047.1 907.5Z" fill="#d8524f"/>
<path d="M1044.6 911.0 V906.7" stroke="#9b7c83" stroke-width="0.6"/>
<circle cx="1056.9" cy="920.2" r="4.3" fill="#dabbbf" stroke="#9b7c83" stroke-width="0.9"/>
<path d="M1056.9 920.2 L1058.2 924.3 A4.3 4.3 0 1 1 1056.9 915.9Z" fill="#e9c63b"/>
<path d="M1056.9 920.2 V915.9" stroke="#9b7c83" stroke-width="0.6"/>
<circle cx="1053.6" cy="922.2" r="4.3" fill="#dabbbf" stroke="#9b7c83" stroke-width="0.9"/>
<path d="M1053.6 922.2 L1057.7 923.5 A4.3 4.3 0 1 1 1053.6 917.9Z" fill="#e9c63b"/>
<path d="M1053.6 922.2 V917.9" stroke="#9b7c83" stroke-width="0.6"/>
<circle cx="1058.3" cy="915.5" r="4.3" fill="#dabbbf" stroke="#9b7c83" stroke-width="0.9"/>
<path d="M1058.3 915.5 L1057.0 919.6 A4.3 4.3 0 0 1 1058.3 911.2Z" fill="#e9c63b"/>
<path d="M1058.3 915.5 V911.2" stroke="#9b7c83" stroke-width="0.6"/>
<circle cx="1050.8" cy="914.2" r="4.3" fill="#dabbbf" stroke="#9b7c83" stroke-width="0.9"/>
<path d="M1050.8 914.2 L1052.1 918.3 A4.3 4.3 0 1 1 1050.8 909.9Z" fill="#e9c63b"/>
<path d="M1050.8 914.2 L1050.8 909.9 A4.3 4.3 0 0 1 1053.3 910.7Z" fill="#d8524f"/>
<path d="M1050.8 914.2 V909.9" stroke="#9b7c83" stroke-width="0.6"/>
<circle cx="1055.0" cy="913.4" r="4.3" fill="#dabbbf" stroke="#9b7c83" stroke-width="0.9"/>
<path d="M1055.0 913.4 V909.1" stroke="#9b7c83" stroke-width="0.6"/>
<circle cx="1055.7" cy="908.8" r="4.3" fill="#dabbbf" stroke="#9b7c83" stroke-width="0.9"/>
<path d="M1055.7 908.8 L1054.4 912.9 A4.3 4.3 0 0 1 1055.7 904.5Z" fill="#e9c63b"/>
<path d="M1055.7 908.8 V904.5" stroke="#9b7c83" stroke-width="0.6"/>
<circle cx="1041.6" cy="916.4" r="4.3" fill="#dabbbf" stroke="#9b7c83" stroke-width="0.9"/>
<path d="M1041.6 916.4 V912.1" stroke="#9b7c83" stroke-width="0.6"/>
<circle cx="1052.4" cy="919.1" r="4.3" fill="#dabbbf" stroke="#9b7c83" stroke-width="0.9"/>
<path d="M1052.4 919.1 L1056.5 920.4 A4.3 4.3 0 1 1 1052.4 914.8Z" fill="#e9c63b"/>
<path d="M1052.4 919.1 V914.8" stroke="#9b7c83" stroke-width="0.6"/>
<circle cx="1051.6" cy="913.3" r="4.3" fill="#dabbbf" stroke="#9b7c83" stroke-width="0.9"/>
<path d="M1051.6 913.3 V909.0" stroke="#9b7c83" stroke-width="0.6"/>
<circle cx="1053.4" cy="916.8" r="4.3" fill="#dabbbf" stroke="#9b7c83" stroke-width="0.9"/>
<path d="M1053.4 916.8 L1049.3 918.1 A4.3 4.3 0 0 1 1053.4 912.5Z" fill="#e9c63b"/>
<path d="M1053.4 916.8 V912.5" stroke="#9b7c83" stroke-width="0.6"/>
<circle cx="1066.6" cy="926.7" r="4.3" fill="#dabbbf" stroke="#9b7c83" stroke-width="0.9"/>
<path d="M1066.6 926.7 L1067.9 930.8 A4.3 4.3 0 1 1 1066.6 922.4Z" fill="#e9c63b"/>
<path d="M1066.6 926.7 V922.4" stroke="#9b7c83" stroke-width="0.6"/>
<circle cx="1068.7" cy="937.9" r="4.3" fill="#dabbbf" stroke="#9b7c83" stroke-width="0.9"/>
<path d="M1068.7 937.9 L1064.6 939.2 A4.3 4.3 0 0 1 1068.7 933.6Z" fill="#e9c63b"/>
<path d="M1068.7 937.9 L1072.2 940.4 A4.3 4.3 0 0 1 1064.6 939.2Z" fill="#2f3a3b"/>
<path d="M1068.7 937.9 V933.6" stroke="#9b7c83" stroke-width="0.6"/>
<circle cx="1066.0" cy="922.4" r="4.3" fill="#dabbbf" stroke="#9b7c83" stroke-width="0.9"/>
<circle cx="1066.0" cy="922.4" r="4.3" fill="#e9c63b" stroke="#c4a02a" stroke-width="0.9"/>
<path d="M1066.0 922.4 L1066.0 918.1 A4.3 4.3 0 0 1 1068.5 918.9Z" fill="#d8524f"/>
<circle cx="1054.1" cy="939.0" r="4.3" fill="#dabbbf" stroke="#9b7c83" stroke-width="0.9"/>
<path d="M1054.1 939.0 V934.7" stroke="#9b7c83" stroke-width="0.6"/>
<circle cx="1059.5" cy="927.5" r="4.3" fill="#dabbbf" stroke="#9b7c83" stroke-width="0.9"/>
<path d="M1059.5 927.5 L1056.0 925.0 A4.3 4.3 0 0 1 1059.5 923.2Z" fill="#2f3a3b"/>
<path d="M1059.5 927.5 V923.2" stroke="#9b7c83" stroke-width="0.6"/>
<circle cx="1067.3" cy="946.7" r="4.3" fill="#dabbbf" stroke="#9b7c83" stroke-width="0.9"/>
<path d="M1067.3 946.7 L1066.0 950.8 A4.3 4.3 0 0 1 1067.3 942.4Z" fill="#e9c63b"/>
<path d="M1067.3 946.7 L1067.3 942.4 A4.3 4.3 0 0 1 1069.8 943.2Z" fill="#d8524f"/>
<path d="M1067.3 946.7 V942.4" stroke="#9b7c83" stroke-width="0.6"/>
<circle cx="1045.5" cy="920.8" r="4.3" fill="#dabbbf" stroke="#9b7c83" stroke-width="0.9"/>
<path d="M1045.5 920.8 V916.5" stroke="#9b7c83" stroke-width="0.6"/>
<circle cx="1049.5" cy="932.5" r="4.3" fill="#dabbbf" stroke="#9b7c83" stroke-width="0.9"/>
<path d="M1049.5 932.5 L1053.6 933.8 A4.3 4.3 0 1 1 1049.5 928.2Z" fill="#e9c63b"/>
<path d="M1049.5 932.5 V928.2" stroke="#9b7c83" stroke-width="0.6"/>
<circle cx="1070.2" cy="923.9" r="4.3" fill="#dabbbf" stroke="#9b7c83" stroke-width="0.9"/>
<path d="M1070.2 923.9 V919.6" stroke="#9b7c83" stroke-width="0.6"/>
<circle cx="1046.8" cy="920.9" r="4.3" fill="#dabbbf" stroke="#9b7c83" stroke-width="0.9"/>
<path d="M1046.8 920.9 L1042.7 922.2 A4.3 4.3 0 0 1 1046.8 916.6Z" fill="#e9c63b"/>
<path d="M1046.8 920.9 V916.6" stroke="#9b7c83" stroke-width="0.6"/>
<circle cx="1064.6" cy="924.3" r="4.3" fill="#dabbbf" stroke="#9b7c83" stroke-width="0.9"/>
<path d="M1064.6 924.3 L1063.3 928.4 A4.3 4.3 0 0 1 1064.6 920.0Z" fill="#e9c63b"/>
<path d="M1064.6 924.3 V920.0" stroke="#9b7c83" stroke-width="0.6"/>
<circle cx="1065.5" cy="946.8" r="4.3" fill="#dabbbf" stroke="#9b7c83" stroke-width="0.9"/>
<path d="M1065.5 946.8 L1068.0 950.3 A4.3 4.3 0 1 1 1065.5 942.5Z" fill="#e9c63b"/>
<path d="M1065.5 946.8 V942.5" stroke="#9b7c83" stroke-width="0.6"/>
<circle cx="1059.1" cy="917.5" r="4.3" fill="#dabbbf" stroke="#9b7c83" stroke-width="0.9"/>
<path d="M1059.1 917.5 V913.2" stroke="#9b7c83" stroke-width="0.6"/>
</g>
<circle cx="1706.1" cy="653.6" r="21.3" fill="#fff" stroke="#111" stroke-width="2.2"/>
<path d="M1695.3 653.6 H1716.9 M1706.1 642.8000000000001 V664.4" stroke="#2a2a2a" stroke-width="2.1" fill="none"/>
<circle cx="1706.1" cy="726.5" r="21.3" fill="#fff" stroke="#111" stroke-width="2.2"/>
<path d="M1695.3 726.5 H1716.9" stroke="#2a2a2a" stroke-width="2.1" fill="none"/>
<rect x="383.4" y="946.3" width="5.7" height="5.7" fill="#f25022"/>
<rect x="389.79999999999995" y="946.3" width="5.7" height="5.7" fill="#7fba00"/>
<rect x="383.4" y="952.6999999999999" width="5.7" height="5.7" fill="#00a4ef"/>
<rect x="389.79999999999995" y="952.6999999999999" width="5.7" height="5.7" fill="#ffb900"/>
<text x="399.6" y="957.2" font-size="11.5" fill="#737373" textLength="66.8" lengthAdjust="spacingAndGlyphs">Microsoft Bing</text>
<text x="1543.5" y="958.2" font-size="11.5" fill="#222" textLength="153.3" lengthAdjust="spacingAndGlyphs" stroke="#f5f4f2" stroke-width="2" paint-order="stroke">© 2022 Microsoft Corporation</text>
<text x="1706.7" y="958.2" font-size="11.5" fill="#2a3fa0" textLength="31.5" lengthAdjust="spacingAndGlyphs" text-decoration="underline">Terms</text>
<circle cx="404.2" cy="992" r="6.3" fill="#2256a3"/>
<text x="414.2" y="998.0" font-size="17.5" fill="#6b6967" textLength="72.6" lengthAdjust="spacingAndGlyphs">ABC Case</text>
<circle cx="502" cy="992" r="6.3" fill="#4ba3d1"/>
<text x="511.0" y="998.0" font-size="17.5" fill="#6b6967" textLength="70.0" lengthAdjust="spacingAndGlyphs">APCD E...</text>
<circle cx="596" cy="992" r="6.3" fill="#434a58"/>
<text x="605.0" y="998.0" font-size="17.5" fill="#6b6967" textLength="76.0" lengthAdjust="spacingAndGlyphs">Building...</text>
<circle cx="695" cy="992" r="6.3" fill="#5ab584"/>
<text x="704.0" y="998.0" font-size="17.5" fill="#6b6967" textLength="78.0" lengthAdjust="spacingAndGlyphs">Code En...</text>
<circle cx="796" cy="992" r="6.3" fill="#0e2a70"/>
<text x="805.0" y="998.0" font-size="17.5" fill="#6b6967" textLength="78.0" lengthAdjust="spacingAndGlyphs">Housing...</text>
<circle cx="897" cy="992" r="6.3" fill="#7a52c7"/>
<text x="906.0" y="998.0" font-size="17.5" fill="#6b6967" textLength="77.0" lengthAdjust="spacingAndGlyphs">Noise Ci...</text>
<circle cx="997" cy="992" r="6.3" fill="#dab232"/>
<text x="1006.0" y="998.0" font-size="17.5" fill="#6b6967" textLength="71.0" lengthAdjust="spacingAndGlyphs">Propert...</text>
<circle cx="1092" cy="992" r="6.3" fill="#d14f55"/>
<text x="1101.0" y="998.0" font-size="17.5" fill="#6b6967" textLength="70.0" lengthAdjust="spacingAndGlyphs">Propert...</text>
<circle cx="1186" cy="992" r="6.3" fill="#4a93bb"/>
<text x="1195.0" y="998.0" font-size="17.5" fill="#6b6967" textLength="71.0" lengthAdjust="spacingAndGlyphs">Propert...</text>
<circle cx="1281" cy="992" r="6.3" fill="#e0c4c8"/>
<text x="1290.0" y="998.0" font-size="17.5" fill="#6b6967" textLength="70.0" lengthAdjust="spacingAndGlyphs">Propert...</text>
<circle cx="1375" cy="992" r="6.3" fill="#68c8b8"/>
<text x="1384.0" y="998.0" font-size="17.5" fill="#6b6967" textLength="77.0" lengthAdjust="spacingAndGlyphs">Public N...</text>
<circle cx="1475" cy="992" r="6.3" fill="#525d62"/>
<text x="1485.0" y="998.0" font-size="17.5" fill="#6b6967" textLength="68.0" lengthAdjust="spacingAndGlyphs">SWMS ...</text>
<circle cx="1568" cy="992" r="6.3" fill="#f08782"/>
<text x="1577.0" y="998.0" font-size="17.5" fill="#6b6967" textLength="71.0" lengthAdjust="spacingAndGlyphs">Zoning ...</text>
<circle cx="1663" cy="992" r="6.3" fill="#edcc55"/>
<text x="1672.0" y="998.0" font-size="17.5" fill="#6b6967" textLength="73.0" lengthAdjust="spacingAndGlyphs">Zoning ...</text>
</g>
</svg>
</section>
<aside class="layer filter-pane">
<svg width="2048" height="1120" viewBox="0 0 2048 1120">
<g id="filterpane">
<rect x="1779" y="54" width="1" height="1029" fill="#cfcfcf"/>
<rect x="1780" y="54" width="268" height="1029" fill="#fff"/>
<path d="M1793.3 71.9 H1809.3 L1803.4 79.2 V85.7 H1799.2 V79.2 Z" fill="none" stroke="#3a4150" stroke-width="1.6" stroke-linejoin="round"/>
<text x="1818.4" y="86.9" font-size="22.6" font-weight="700" fill="#363d4c" textLength="62.0" lengthAdjust="spacingAndGlyphs">Filters</text>
<path d="M2026.2 69.4 L2031.4 75.3 L2026.2 81.2 M2031.6 69.4 L2036.8 75.3 L2031.6 81.2" fill="none" stroke="#333" stroke-width="1.2"/>
<rect x="1788.9" y="109.8" width="246.6" height="31" rx="2" fill="#fff" stroke="#c6c6c6" stroke-width="1.1"/>
<circle cx="1810.2" cy="122.6" r="4.5" fill="none" stroke="#444" stroke-width="1.2"/><path d="M1807 126 L1801.2 131.8" stroke="#444" stroke-width="1.2"/>
<text x="1830.0" y="129.8" font-size="12.5" fill="#3b4250" textLength="39.2" lengthAdjust="spacingAndGlyphs">Search</text>
<rect x="1780" y="145.4" width="268" height="1.4" fill="#e6e6e6"/>
<text x="1789.2" y="180.4" font-size="16.5" fill="#3b4250" textLength="140.8" lengthAdjust="spacingAndGlyphs">Filters on this visual</text>
<text x="1789.2" y="427.6" font-size="16.5" fill="#3b4250" textLength="134.5" lengthAdjust="spacingAndGlyphs">Filters on all pages</text>
<circle cx="2024.6" cy="174.8" r="0.9" fill="#555"/>
<circle cx="2029.4" cy="174.8" r="0.9" fill="#555"/>
<circle cx="2034.2" cy="174.8" r="0.9" fill="#555"/>
<circle cx="2024.6" cy="422" r="0.9" fill="#555"/>
<circle cx="2029.4" cy="422" r="0.9" fill="#555"/>
<circle cx="2034.2" cy="422" r="0.9" fill="#555"/>
<rect x="1788.9" y="189" width="250.2" height="41.8" rx="2" fill="#fff" stroke="#d8d8d8" stroke-width="1.1"/>
<text x="1798.2" y="206.5" font-size="12.2" fill="#252b3a" textLength="43.1" lengthAdjust="spacingAndGlyphs">Address</text>
<text x="1798.2" y="222.9" font-size="12.2" fill="#252b3a" textLength="32.6" lengthAdjust="spacingAndGlyphs">is (All)</text>
<path d="M1993.6 198.8 L1999.6 204.6 L2005.6 198.8" fill="none" stroke="#333" stroke-width="1.2"/>
<g transform="translate(2021.8 202.2) rotate(-45)"><rect x="-5.6" y="-3.2" width="10.4" height="6.4" rx="1" fill="none" stroke="#9a9a9a" stroke-width="1"/><path d="M-1.8 -3.2 V3.2" stroke="#9a9a9a" stroke-width="1"/></g>
<path d="M2019.3999999999999 207.6 H2026.3999999999999" stroke="#9a9a9a" stroke-width="1"/>
<rect x="1788.9" y="238" width="250.2" height="41.8" rx="2" fill="#fff" stroke="#d8d8d8" stroke-width="1.1"/>
<text x="1798.2" y="255.5" font-size="12.2" fill="#252b3a" textLength="105.6" lengthAdjust="spacingAndGlyphs">Number of Records</text>
<text x="1798.2" y="271.9" font-size="12.2" fill="#252b3a" textLength="32.6" lengthAdjust="spacingAndGlyphs">is (All)</text>
<path d="M1993.6 247.8 L1999.6 253.6 L2005.6 247.8" fill="none" stroke="#333" stroke-width="1.2"/>
<g transform="translate(2021.8 251.2) rotate(-45)"><rect x="-5.6" y="-3.2" width="10.4" height="6.4" rx="1" fill="none" stroke="#9a9a9a" stroke-width="1"/><path d="M-1.8 -3.2 V3.2" stroke="#9a9a9a" stroke-width="1"/></g>
<path d="M2019.3999999999999 256.59999999999997 H2026.3999999999999" stroke="#9a9a9a" stroke-width="1"/>
<rect x="1788.9" y="287" width="250.2" height="41.8" rx="2" fill="#fff" stroke="#d8d8d8" stroke-width="1.1"/>
<text x="1798.2" y="304.5" font-size="12.2" fill="#252b3a" textLength="89.0" lengthAdjust="spacingAndGlyphs">Record Type Full</text>
<text x="1798.2" y="320.9" font-size="12.2" fill="#252b3a" textLength="32.6" lengthAdjust="spacingAndGlyphs">is (All)</text>
<path d="M1993.6 296.8 L1999.6 302.6 L2005.6 296.8" fill="none" stroke="#333" stroke-width="1.2"/>
<g transform="translate(2021.8 300.2) rotate(-45)"><rect x="-5.6" y="-3.2" width="10.4" height="6.4" rx="1" fill="none" stroke="#9a9a9a" stroke-width="1"/><path d="M-1.8 -3.2 V3.2" stroke="#9a9a9a" stroke-width="1"/></g>
<path d="M2019.3999999999999 305.59999999999997 H2026.3999999999999" stroke="#9a9a9a" stroke-width="1"/>
<rect x="1788.9" y="336" width="250.2" height="41.8" rx="2" fill="#fff" stroke="#d8d8d8" stroke-width="1.1"/>
<text x="1798.2" y="353.5" font-size="12.2" fill="#252b3a" textLength="95.6" lengthAdjust="spacingAndGlyphs">Record Type Type</text>
<text x="1798.2" y="369.9" font-size="12.2" fill="#252b3a" textLength="32.6" lengthAdjust="spacingAndGlyphs">is (All)</text>
<path d="M1993.6 345.8 L1999.6 351.6 L2005.6 345.8" fill="none" stroke="#333" stroke-width="1.2"/>
<g transform="translate(2021.8 349.2) rotate(-45)"><rect x="-5.6" y="-3.2" width="10.4" height="6.4" rx="1" fill="none" stroke="#9a9a9a" stroke-width="1"/><path d="M-1.8 -3.2 V3.2" stroke="#9a9a9a" stroke-width="1"/></g>
<path d="M2019.3999999999999 354.59999999999997 H2026.3999999999999" stroke="#9a9a9a" stroke-width="1"/>
<rect x="1788.9" y="436.4" width="250.2" height="42.6" rx="2" fill="#f3f4fa" stroke="#cfd0da" stroke-width="1.1"/>
<text x="1798.2" y="454.4" font-size="12.2" font-weight="700" fill="#1b2130" textLength="88.5" lengthAdjust="spacingAndGlyphs">Record Module</text>
<text x="1798.2" y="471.0" font-size="12.2" fill="#252b3a" textLength="80.4" lengthAdjust="spacingAndGlyphs">is Enforcement</text>
<path d="M1993.6 446.59999999999997 L1999.6 452.4 L2005.6 446.59999999999997" fill="none" stroke="#333" stroke-width="1.2"/>
<g transform="translate(2021.8 449.99999999999994) rotate(-45)"><rect x="-5.6" y="-3.2" width="10.4" height="6.4" rx="1" fill="none" stroke="#333" stroke-width="1"/><path d="M-1.8 -3.2 V3.2" stroke="#333" stroke-width="1"/></g>
<path d="M2019.3999999999999 455.3999999999999 H2026.3999999999999" stroke="#333" stroke-width="1"/>
</g>
</svg>
</aside>
<footer class="layer page-tabs">
<svg width="2048" height="1120" viewBox="0 0 2048 1120">
<g id="tabs">
<rect x="103" y="1083.4" width="1945" height="36.6" fill="#f3f2f1"/>
<rect x="143.4" y="1083.4" width="1" height="35.2" fill="#d6d4d2"/>
<rect x="144" y="1083.4" width="204.5" height="35.2" fill="#fff"/>
<rect x="144" y="1115.3" width="204.5" height="3.3" fill="#efc94a"/>
<path d="M114 1097.6 L109 1101.4 L114 1105.2Z M130.6 1097.6 L135.6 1101.4 L130.6 1105.2Z" fill="#c2c0be"/>
<rect x="470.5" y="1083.4" width="1" height="35.2" fill="#dddbd9"/>
<rect x="579.5" y="1083.4" width="1" height="35.2" fill="#dddbd9"/>
<rect x="707.4" y="1083.4" width="1" height="35.2" fill="#dddbd9"/>
<rect x="828.8" y="1083.4" width="1" height="35.2" fill="#dddbd9"/>
<rect x="951.8" y="1083.4" width="1" height="35.2" fill="#dddbd9"/>
<text x="164.8" y="1106.0" font-size="12.6" fill="#201f1e" textLength="162.4" lengthAdjust="spacingAndGlyphs" stroke="#201f1e" stroke-width="0.4">Enforcement Trend Summary</text>
<text x="370.0" y="1106.0" font-size="12.6" fill="#323130" textLength="79.0" lengthAdjust="spacingAndGlyphs">Fees Summary</text>
<text x="491.0" y="1106.0" font-size="12.6" fill="#323130" textLength="67.2" lengthAdjust="spacingAndGlyphs">YOY Volume</text>
<text x="600.5" y="1106.0" font-size="12.6" fill="#323130" textLength="85.5" lengthAdjust="spacingAndGlyphs">YOY Case Types</text>
<text x="728.3" y="1106.0" font-size="12.6" fill="#323130" textLength="79.0" lengthAdjust="spacingAndGlyphs">Page Template</text>
<text x="849.7" y="1106.0" font-size="12.6" fill="#323130" textLength="80.6" lengthAdjust="spacingAndGlyphs">Story Template</text>
</g>
</svg>
</footer>
<div class="layer window-frame">
<svg width="2048" height="1120" viewBox="0 0 2048 1120">
<g id="windowframe">
<path d="M0 1104 V1120 H16 Q2.5 1119.5 0 1104Z" fill="#14161a"/>
<path d="M2048 1104 V1120 H2032 Q2045.5 1119.5 2048 1104Z" fill="#14161a"/>
<rect x="0" y="1118.7" width="2048" height="1.3" fill="#1b1d22"/>
</g>
</svg>
</div>
</body></html>
